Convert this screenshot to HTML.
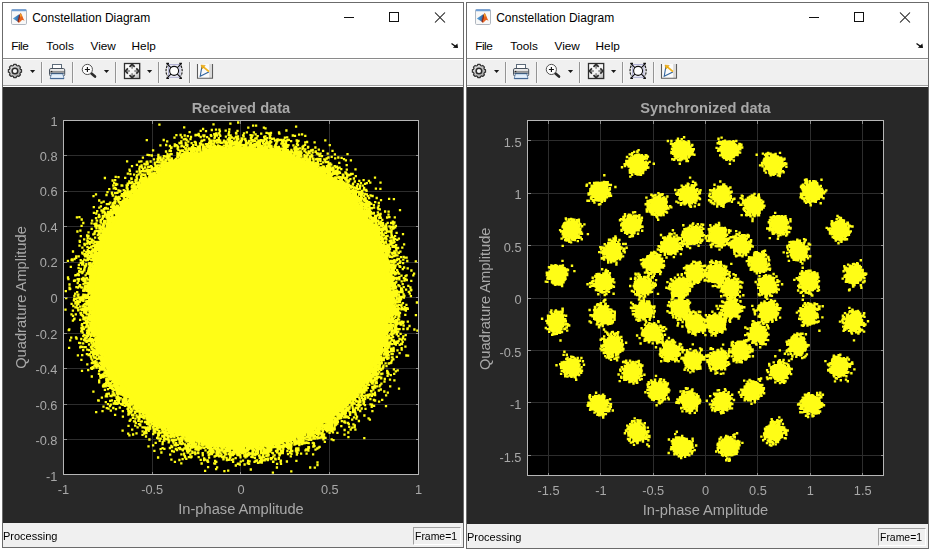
<!DOCTYPE html>
<html><head><meta charset="utf-8"><title>Constellation Diagram</title>
<style>
html,body{margin:0;padding:0;background:#fff;}
body{width:931px;height:550px;position:relative;overflow:hidden;font-family:"Liberation Sans", sans-serif;}
div{position:absolute;box-sizing:content-box;}
.win{border:1px solid #6b6b6b;background:#fff;}
.sepline{height:1px;background:#8a8a8a;}
.sepline2{height:1px;background:#a0a0a0;}
.tb{background:#f0f0f0;}
.dark{background:#282828;}
.sb{background:#f0f0f0;}
.title{font-size:12px;line-height:16px;color:#000;white-space:nowrap;}
.menu{font-size:11.8px;line-height:16px;color:#000;white-space:nowrap;}
.status{will-change:transform;font-size:11px;line-height:14px;color:#000;white-space:nowrap;}
.frame{will-change:transform;font-size:10.45px;line-height:17.5px;color:#000;white-space:nowrap;width:48px;height:18px;border:1px solid;border-color:#a0a0a0 #fff #fff #a0a0a0;text-align:left;padding-left:1px;box-sizing:border-box;}
svg{position:absolute;left:0;top:0;transform:translateZ(0);will-change:transform;}
.tk{font-family:"Liberation Sans", sans-serif;font-size:12.8px;fill:#a8a8a8;}
.lab{font-family:"Liberation Sans", sans-serif;font-size:14.67px;fill:#a8a8a8;}
.ttl{font-family:"Liberation Sans", sans-serif;font-size:14.67px;font-weight:bold;fill:#a8a8a8;}
</style></head><body>
<div class="win" style="left:2px;top:2px;width:460px;height:544px"></div>
<div class="sepline" style="left:3px;top:58px;width:460px"></div>
<div class="tb" style="left:3px;top:60px;width:460px;height:25px"></div>
<div class="sepline2" style="left:3px;top:85px;width:460px"></div>
<div class="dark" style="left:3px;top:87px;width:460px;height:436px"></div>
<div class="sb" style="left:3px;top:523px;width:460px;height:24px"></div>
<div class="title" style="left:32.2px;top:10.3px">Constellation Diagram</div>
<div class="menu" style="left:11.2px;top:38px;letter-spacing:-0.5px">File</div>
<div class="menu" style="left:46.3px;top:38px;letter-spacing:0px">Tools</div>
<div class="menu" style="left:90.6px;top:38px;letter-spacing:-0.1px">View</div>
<div class="menu" style="left:131.6px;top:38px;letter-spacing:0px">Help</div>
<div class="status" style="left:3.2px;top:529px">Processing</div>
<div class="frame" style="left:413px;top:527px">Frame=1</div>
<div class="win" style="left:466px;top:2px;width:461px;height:545px"></div>
<div class="sepline" style="left:467px;top:58px;width:461px"></div>
<div class="tb" style="left:467px;top:60px;width:461px;height:25px"></div>
<div class="sepline2" style="left:467px;top:85px;width:461px"></div>
<div class="dark" style="left:467px;top:87px;width:461px;height:437px"></div>
<div class="sb" style="left:467px;top:524px;width:461px;height:24px"></div>
<div class="title" style="left:496.2px;top:10.3px">Constellation Diagram</div>
<div class="menu" style="left:475.2px;top:38px;letter-spacing:-0.5px">File</div>
<div class="menu" style="left:510.3px;top:38px;letter-spacing:0px">Tools</div>
<div class="menu" style="left:554.6px;top:38px;letter-spacing:-0.1px">View</div>
<div class="menu" style="left:595.6px;top:38px;letter-spacing:0px">Help</div>
<div class="status" style="left:467.2px;top:530px">Processing</div>
<div class="frame" style="left:878px;top:528px">Frame=1</div>
<svg width="931" height="550" viewBox="0 0 931 550">
<rect x="63.5" y="120.5" width="355" height="354" fill="#000"/>
<path d="M152.5 121V474M240.5 121V474M329.5 121V474M64 439.5H418M64 404.5H418M64 368.5H418M64 333.5H418M64 297.5H418M64 262.5H418M64 226.5H418M64 191.5H418M64 155.5H418" stroke="#2d2d2d" stroke-width="1" fill="none" shape-rendering="crispEdges"/>
<circle cx="241" cy="297.5" r="150" fill="#fffd16"/><path d="M327.1 417.4h0M373.6 362.4h0M142.9 407.8h0M93.6 290.6h0M106.1 357.2h0M365.2 377.1h0M309.5 166.8h0M265.7 443.0h0M380.8 249.9h0M123.4 386.8h0M382.5 340.1h0M204.6 440.7h0M349.9 397.0h0M300.6 162.5h0M112.4 225.1h0M138.3 403.6h0M377.3 354.2h0M281.3 439.4h0M108.4 362.4h0M114.2 221.9h0M195.6 438.0h0M194.5 157.3h0M109.3 231.0h0M345.5 193.2h0M206.1 441.0h0M349.9 397.3h0M247.6 150.0h0M93.8 307.7h0M168.5 169.0h0M108.6 232.1h0M183.4 433.5h0M118.5 215.0h0M98.9 337.6h0M379.9 247.2h0M165.2 170.8h0M196.7 156.8h0M388.5 291.1h0M209.1 441.7h0M168.8 168.8h0M97.7 332.7h0M350.4 396.5h0M257.9 151.0h0M243.2 445.0h0M343.0 190.8h0M100.9 343.8h0M350.7 198.7h0M338.0 186.1h0M113.8 372.4h0M351.2 199.3h0M327.1 417.5h0M257.7 444.1h0M94.1 311.4h0M229.2 444.7h0M112.2 369.4h0M106.0 237.7h0M187.0 160.0h0M131.9 198.1h0M380.3 346.6h0M268.7 152.4h0M284.8 156.4h0M122.1 385.0h0M142.9 187.3h0M375.5 358.1h0M318.3 423.2h0M380.6 345.4h0M326.7 417.5h0M144.4 409.0h0M344.9 192.8h0M328.9 416.2h0M156.2 418.3h0M346.8 400.4h0M388.6 291.1h0M94.1 312.5h0M359.1 385.8h0M227.3 444.5h0M319.0 422.9h0M381.6 252.8h0M330.3 415.1h0M386.5 322.5h0M387.3 277.6h0M192.0 158.1h0M142.2 407.1h0M261.3 151.4h0M267.8 152.3h0M265.9 443.0h0M388.0 283.5h0M292.0 158.9h0M231.6 150.1h0M94.3 281.2h0M386.1 324.2h0M213.9 442.5h0M188.9 159.5h0M101.3 345.6h0M388.3 286.4h0M143.6 408.5h0M262.4 443.5h0M282.7 439.0h0M360.6 210.9h0M94.5 316.5h0M286.3 157.0h0M162.4 172.7h0M270.8 152.8h0M94.7 317.8h0M276.9 154.4h0M287.3 157.4h0M123.8 387.4h0M380.4 249.1h0M312.1 426.9h0M326.9 417.5h0M292.3 159.0h0M309.2 166.7h0M159.7 174.1h0M100.3 253.1h0M387.9 310.7h0M153.9 178.2h0M376.0 237.7h0M343.2 191.0h0M276.8 440.8h0M201.6 439.7h0M114.7 221.2h0M112.1 369.4h0M365.6 218.5h0M98.5 335.9h0M362.7 214.0h0M369.3 224.5h0M96.3 268.2h0M387.6 314.8h0M301.2 432.3h0M285.8 157.0h0M95.5 322.0h0M102.5 246.2h0M94.4 280.5h0M272.5 153.3h0M103.9 242.9h0M216.2 443.0h0M93.5 290.3h0M250.3 150.2h0M102.6 349.1h0M93.4 292.3h0M189.0 159.3h0M96.6 266.9h0M378.8 244.5h0M346.4 194.1h0M232.1 445.0h0M379.4 246.0h0M337.2 409.6h0M103.1 350.0h0M249.7 444.8h0M169.5 168.5h0M358.8 208.5h0M209.8 153.3h0M333.0 413.0h0M385.7 267.6h0M382.0 254.1h0M93.9 309.3h0M314.2 169.1h0M106.9 359.0h0M162.6 422.6h0M179.4 431.6h0M387.6 315.5h0M103.6 351.5h0M168.7 426.1h0M93.8 286.1h0M387.9 283.7h0M386.4 271.4h0M226.6 444.3h0M267.7 152.4h0M342.3 404.8h0M366.3 219.5h0M233.0 445.0h0M369.9 225.8h0M195.7 157.0h0M379.0 349.7h0M109.3 364.3h0M377.6 241.8h0M288.1 157.5h0M332.3 181.6h0M337.0 185.5h0M162.6 422.6h0M373.2 231.9h0M342.5 404.6h0M251.7 444.7h0M318.9 422.8h0M285.0 438.3h0M191.0 436.4h0M204.3 440.6h0M305.6 430.2h0M387.6 314.3h0M387.9 311.7h0M100.8 250.9h0M95.3 320.8h0M357.0 389.0h0M106.5 358.6h0M315.8 170.3h0M93.5 291.3h0M387.8 281.2h0M314.0 169.2h0M144.0 186.1h0M156.1 418.2h0M342.1 404.9h0M232.6 150.2h0M317.5 423.7h0M321.0 173.6h0M170.3 167.8h0M248.2 444.9h0M98.2 334.7h0M101.9 346.8h0M384.3 262.4h0M99.7 254.4h0M385.1 265.9h0M149.4 413.2h0M132.5 397.4h0M93.4 294.9h0M93.5 293.1h0M227.9 444.4h0M121.9 384.6h0M387.0 318.3h0M256.9 444.2h0M95.8 270.6h0M159.9 174.0h0M348.1 195.8h0M173.1 428.5h0M328.2 416.7h0M149.2 181.8h0M316.3 170.7h0M138.1 191.5h0M297.3 161.0h0M95.1 275.6h0M316.1 170.4h0M309.2 166.5h0M356.4 205.4h0M189.5 159.1h0M385.7 326.2h0M146.5 410.8h0M316.8 170.9h0M138.4 191.3h0M178.7 163.6h0M388.6 300.6h0M239.4 149.8h0M97.0 265.1h0M376.1 357.0h0M239.0 445.2h0M226.6 444.3h0M282.0 439.4h0M387.0 275.1h0M131.8 396.8h0M181.3 162.5h0M131.4 198.5h0M371.5 366.6h0M237.3 445.0h0M191.5 436.6h0M388.2 309.1h0M223.6 444.0h0M188.5 159.5h0M203.5 440.3h0M97.0 330.0h0M349.6 397.5h0M287.3 437.8h0M377.1 239.9h0M98.4 335.1h0M385.7 268.1h0M223.7 444.1h0M380.0 248.0h0M112.4 225.2h0M95.1 275.3h0M340.4 406.8h0M93.5 289.4h0M198.3 156.1h0M359.1 209.1h0M386.8 320.4h0M93.7 305.2h0M193.7 437.3h0M158.9 420.1h0M320.3 173.0h0M241.7 150.0h0M348.6 398.6h0M207.0 153.7h0M204.4 440.6h0M125.6 389.5h0M115.8 219.0h0M108.2 362.0h0M381.8 341.6h0M315.8 170.4h0M376.7 239.4h0M226.4 444.3h0M295.5 434.7h0M383.0 257.4h0M297.1 160.8h0M367.3 221.1h0M100.3 252.5h0M381.6 342.7h0M100.3 342.4h0M150.1 181.1h0M381.6 342.2h0M343.9 403.5h0M159.1 420.3h0M230.8 150.3h0M231.6 444.9h0M194.6 437.7h0M124.7 388.5h0M318.8 422.9h0M363.5 215.3h0M268.6 442.5h0M388.7 294.2h0M335.4 411.0h0M365.2 377.1h0M365.1 377.4h0M233.3 444.9h0M353.1 201.4h0M114.9 374.4h0M95.1 275.2h0M163.3 423.0h0M215.6 442.8h0M344.9 402.5h0M139.7 190.1h0M272.4 441.9h0M242.4 445.1h0M101.9 346.7h0M326.8 177.3h0M387.3 317.7h0M203.9 154.7h0M95.4 322.2h0M388.6 297.7h0M373.3 232.0h0M331.9 181.1h0M242.4 445.2h0M324.4 419.2h0M179.9 163.1h0M214.9 152.1h0M254.7 150.5h0M101.0 250.6h0M270.7 153.0h0M370.3 226.3h0M192.0 436.8h0M239.3 445.0h0M194.1 157.5h0M374.3 360.6h0M112.9 224.0h0M265.4 443.1h0M388.3 307.2h0M97.9 333.6h0M150.1 181.0h0M95.1 320.3h0M243.7 445.0h0M199.5 155.7h0M387.2 317.6h0M173.5 166.2h0M234.3 445.0h0M372.6 230.6h0M385.2 328.9h0M111.4 368.1h0M288.3 437.4h0M230.9 150.1h0M282.0 439.3h0M185.1 434.3h0M258.8 444.1h0M250.7 150.3h0M381.9 253.6h0M297.7 433.8h0M113.0 371.0h0M381.1 250.8h0M125.3 389.0h0M386.6 273.6h0M380.8 344.7h0M125.4 389.1h0M350.9 198.8h0M388.7 295.2h0M170.4 427.3h0M376.7 239.7h0M385.7 326.9h0M134.2 399.5h0M168.5 426.1h0M388.5 300.2h0M153.2 416.1h0M346.3 401.1h0M280.1 440.0h0M305.2 164.6h0M106.4 358.3h0M95.5 322.0h0M370.1 226.0h0M143.9 408.6h0M386.1 325.4h0M296.9 160.9h0M383.9 334.8h0M377.3 354.0h0M234.5 445.1h0M359.7 209.6h0M220.4 443.6h0M131.4 198.4h0M210.3 153.2h0M217.3 443.2h0M246.2 150.1h0M142.6 187.3h0M387.0 319.9h0M95.0 320.4h0M382.8 255.2h0M240.0 445.3h0M93.3 303.6h0M301.5 432.5h0M230.3 149.9h0M262.1 151.1h0M171.5 428.1h0M145.4 410.3h0M371.1 368.0h0M243.7 149.7h0M376.8 356.0h0M101.2 249.6h0M387.7 279.2h0M388.5 286.2h0M368.7 372.0h0M93.2 298.9h0M101.2 345.9h0M112.9 371.3h0M173.1 166.1h0M325.7 176.2h0M348.1 399.5h0M200.8 439.9h0M137.8 403.4h0M287.4 438.0h0M245.3 445.2h0M351.3 199.2h0M172.8 428.7h0M388.7 290.5h0M258.3 444.4h0M156.6 176.0h0M359.4 386.2h0M303.2 163.4h0M368.1 221.7h0M201.0 439.7h0M295.8 434.8h0M112.8 223.6h0M138.2 403.9h0M100.5 344.0h0M266.7 151.9h0M357.5 388.8h0M133.2 196.3h0M140.7 406.1h0M283.1 439.1h0M121.1 211.1h0M283.7 439.1h0M172.1 428.2h0M299.6 433.3h0M283.7 439.0h0M99.7 253.5h0M359.8 385.4h0M100.4 251.7h0M365.3 377.7h0M191.3 158.3h0M210.3 442.1h0M382.5 254.6h0M105.9 237.5h0M113.1 371.6h0M388.9 294.4h0M289.2 437.3h0M283.5 439.2h0M361.4 211.9h0M304.3 163.9h0M350.6 198.2h0M318.2 423.6h0M100.9 250.5h0M365.8 218.1h0M134.7 194.9h0M93.2 293.4h0M210.3 442.1h0M373.0 230.8h0M93.5 306.3h0M385.8 266.9h0M344.4 403.1h0M387.2 274.9h0M380.6 346.2h0M128.2 393.3h0M133.3 196.0h0M320.1 422.6h0M266.8 443.2h0M325.1 175.9h0M301.5 432.5h0M121.6 384.6h0M131.0 396.3h0M243.7 445.3h0M359.2 208.5h0M104.4 241.1h0M384.7 332.6h0M350.3 397.2h0M100.4 251.8h0M189.8 436.3h0M112.6 224.1h0M160.9 173.2h0M104.1 353.4h0M132.6 197.1h0M254.7 444.7h0M268.7 152.2h0M304.3 431.1h0M356.6 389.6h0M107.0 359.9h0M102.9 350.2h0M384.1 335.0h0M369.6 370.6h0M266.6 151.8h0M380.4 346.9h0M134.6 400.2h0M338.0 409.2h0M388.9 293.9h0M299.7 161.7h0M387.8 280.6h0M383.4 257.7h0M316.2 424.9h0M375.1 235.0h0M153.5 416.6h0M321.2 421.8h0M217.9 443.7h0M332.7 413.6h0M370.5 226.2h0M229.1 444.8h0M178.8 431.7h0M302.1 432.0h0M377.1 240.0h0M358.1 207.1h0M273.1 153.2h0M96.0 269.2h0M146.9 411.6h0M101.8 247.2h0M350.4 198.0h0M388.6 291.0h0M124.6 388.7h0M227.3 444.8h0M110.1 228.4h0M254.6 150.3h0M306.7 430.0h0M382.2 341.7h0M237.6 445.4h0M388.2 282.7h0M164.7 170.8h0M388.8 299.2h0M328.3 416.7h0M106.3 358.6h0M358.2 207.3h0M262.0 443.8h0M387.5 318.1h0M150.5 414.3h0M148.9 413.0h0M113.1 223.4h0M283.0 439.3h0M94.9 320.7h0M377.2 240.2h0M328.4 416.7h0M145.5 184.7h0M270.7 152.5h0M227.8 444.8h0M150.4 180.8h0M153.8 417.0h0M102.2 348.7h0M225.7 150.3h0M362.5 213.3h0M96.1 268.4h0M252.4 444.9h0M267.7 152.2h0M100.7 251.0h0M333.7 412.9h0M126.0 204.7h0M147.9 182.6h0M308.5 429.2h0M195.1 438.0h0M354.5 202.9h0M209.1 153.0h0M323.6 175.0h0M96.6 329.5h0M99.6 341.0h0M357.6 388.3h0M384.4 333.2h0M240.7 149.7h0M324.4 175.3h0M226.2 444.7h0M104.9 355.3h0M94.6 276.0h0M148.2 182.4h0M271.5 442.3h0M388.3 311.6h0M253.9 444.8h0M380.1 247.1h0M172.3 428.5h0M170.9 427.8h0M364.6 216.4h0M189.0 159.0h0M387.6 278.1h0M320.0 172.5h0M333.5 182.1h0M217.5 151.5h0M188.5 435.8h0M134.9 194.6h0M366.2 218.9h0M386.7 322.4h0M374.3 233.7h0M333.9 412.5h0M383.7 335.7h0M142.4 187.2h0M228.7 150.1h0M116.5 218.0h0M301.9 162.8h0M355.8 204.1h0M340.6 188.4h0M380.0 246.8h0M281.6 439.6h0M385.3 329.2h0M297.2 160.6h0M308.2 165.7h0M206.6 441.4h0M361.7 382.7h0M282.3 439.6h0M109.8 365.6h0M234.8 445.1h0M209.4 153.1h0M177.4 430.9h0M93.0 294.0h0M132.0 197.4h0M114.8 374.4h0M262.3 151.2h0M199.5 155.6h0M271.8 442.1h0M365.5 377.5h0M312.0 427.3h0M284.9 438.6h0M387.5 277.0h0M93.5 306.0h0M283.8 156.0h0M93.3 302.5h0M313.7 168.8h0M379.7 246.4h0M273.5 441.7h0M93.1 299.1h0M144.3 185.7h0M275.9 153.9h0M275.0 153.5h0M149.9 414.0h0M124.4 388.4h0M367.8 373.8h0M387.1 320.8h0M228.8 444.8h0M93.0 296.4h0M351.3 199.0h0M97.6 333.4h0M245.2 149.7h0M151.3 179.9h0M172.5 428.5h0M322.6 174.3h0M233.6 149.8h0M104.0 352.9h0M111.0 226.9h0M97.4 332.4h0M252.2 445.0h0M194.0 437.6h0M323.1 174.5h0M323.3 420.2h0M172.6 428.5h0M319.5 422.8h0M296.0 434.7h0M221.3 150.8h0M384.7 262.9h0M130.6 395.8h0M282.2 155.4h0M105.3 356.3h0M145.4 184.8h0M280.9 439.8h0M385.5 328.8h0M278.7 154.5h0M93.1 297.0h0M97.0 331.3h0M123.5 207.9h0M232.6 149.9h0M107.1 360.5h0M240.2 149.6h0M260.9 444.0h0M348.9 196.3h0M195.4 156.8h0M177.7 163.8h0M99.3 339.7h0M138.6 190.8h0M111.7 369.0h0M207.1 153.5h0M240.9 445.4h0M99.0 338.6h0M116.4 377.3h0M374.9 234.7h0M157.5 175.5h0M127.8 392.7h0M387.0 274.0h0M98.7 257.7h0M270.3 152.6h0M94.1 279.7h0M109.1 230.8h0M210.8 152.7h0M146.2 184.0h0M94.4 277.4h0M381.0 250.0h0M181.8 162.1h0M252.8 150.1h0M388.1 283.1h0M379.6 349.0h0M121.6 384.6h0M112.2 369.8h0M193.8 157.4h0M226.9 444.7h0M233.1 149.9h0M95.2 272.4h0M288.0 157.4h0M276.0 441.2h0M265.6 151.8h0M142.7 187.0h0M104.2 241.3h0M385.0 264.2h0M145.9 184.3h0M300.8 162.2h0M200.3 439.7h0M345.5 402.2h0M150.5 414.6h0M224.8 444.6h0M237.7 445.3h0M299.0 433.5h0M214.9 152.1h0M245.7 445.2h0M94.4 316.4h0M144.8 185.2h0M145.0 410.0h0M331.3 180.3h0M310.5 167.1h0M272.4 152.9h0M313.3 168.6h0M388.3 311.4h0M382.0 253.4h0M241.0 445.4h0M333.2 413.0h0M265.3 151.7h0M325.9 418.5h0M279.3 154.6h0M355.5 204.1h0M269.9 152.4h0M357.3 206.0h0M319.3 172.0h0M189.0 159.1h0M233.5 149.8h0M350.5 198.1h0M227.6 444.8h0M335.7 411.0h0M379.0 350.6h0M332.1 414.0h0M93.1 299.2h0M337.3 185.3h0M320.8 173.1h0M104.4 240.9h0M320.7 172.9h0M112.0 369.7h0M372.7 365.0h0M144.0 185.9h0M127.0 203.5h0M375.4 235.8h0M387.9 280.6h0M93.8 311.7h0M385.6 328.8h0M136.6 192.7h0M336.4 184.6h0M95.0 321.1h0M260.1 150.9h0M105.3 356.0h0M101.6 248.3h0M201.6 440.1h0M119.3 381.6h0M220.9 444.0h0M387.3 274.3h0M279.6 154.5h0M180.4 432.6h0M114.2 221.0h0M272.6 152.8h0M215.7 151.7h0M98.8 255.8h0M194.9 438.2h0M295.5 435.1h0M126.0 204.0h0M277.0 153.8h0M127.8 201.8h0M137.4 191.6h0M119.1 213.2h0M275.6 441.6h0M98.0 336.3h0M360.1 385.6h0M385.1 331.6h0M368.1 221.3h0M140.3 406.2h0M274.7 153.2h0M233.6 445.5h0M110.4 367.4h0M106.7 360.0h0M376.5 237.7h0M106.1 236.6h0M349.6 398.0h0M109.1 230.0h0M101.1 346.4h0M128.7 393.9h0M377.9 241.0h0M94.5 320.3h0M359.7 386.1h0M275.8 441.5h0M388.3 311.9h0M181.2 162.1h0M385.7 266.4h0M342.0 189.3h0M388.1 314.0h0M248.2 445.5h0M297.8 434.4h0M263.3 151.2h0M332.2 180.7h0M368.9 372.4h0M203.5 154.2h0M375.9 236.4h0M385.4 264.6h0M388.8 308.1h0M154.5 177.4h0M371.0 368.6h0M221.9 150.7h0M336.1 184.0h0M378.8 351.8h0M109.0 230.3h0M175.3 164.7h0M284.4 156.0h0M150.2 180.5h0M112.1 370.5h0M274.4 153.2h0M273.0 152.8h0M202.0 440.4h0M387.0 273.4h0M310.3 166.5h0M124.5 206.1h0M313.5 168.2h0M187.7 435.7h0M354.0 201.8h0M182.0 161.7h0M358.7 207.5h0M210.2 442.5h0M228.9 445.0h0M114.3 220.8h0M353.7 201.2h0M314.9 169.3h0M340.5 187.7h0M218.9 444.0h0M293.0 158.7h0M367.9 221.1h0M368.4 372.9h0M284.5 155.9h0M241.2 149.4h0M255.8 445.0h0M176.0 164.4h0M280.9 440.1h0M242.1 149.4h0M97.5 334.6h0M292.5 158.7h0M256.9 444.8h0M359.1 208.1h0M94.2 277.2h0M115.6 218.7h0M293.5 435.9h0M196.2 156.4h0M104.9 239.2h0M93.8 281.5h0M383.3 338.4h0M136.8 403.0h0M141.5 187.9h0M323.4 420.7h0M157.8 420.1h0M387.9 316.6h0M388.7 288.6h0M93.3 310.2h0M230.2 445.2h0M108.6 364.0h0M257.0 150.1h0M385.3 263.8h0M384.9 332.4h0M303.4 431.7h0M381.5 344.1h0M342.9 189.9h0M381.0 249.3h0M377.3 355.7h0M122.6 386.5h0M384.2 260.1h0M104.9 239.1h0M383.6 257.4h0M125.0 389.7h0M320.6 422.4h0M389.0 289.8h0M384.7 333.1h0M152.5 416.2h0M363.4 213.9h0M382.8 340.7h0M203.8 154.1h0M388.5 284.0h0M331.9 414.3h0M378.6 242.4h0M196.3 438.8h0M248.3 149.5h0M174.7 429.8h0M346.3 401.6h0M313.5 426.7h0M333.1 413.4h0M388.7 309.2h0M291.1 437.0h0M374.0 232.5h0M376.5 237.8h0M354.4 202.1h0M101.0 345.7h0M374.4 233.4h0M138.4 190.5h0M161.8 422.7h0M94.3 318.3h0M333.4 413.3h0M379.8 349.2h0M101.1 248.7h0M342.8 190.0h0M115.1 375.4h0M221.4 444.2h0M165.9 425.3h0M93.2 305.9h0M362.5 212.9h0M387.7 277.7h0M358.0 206.8h0M276.8 441.3h0M207.6 441.8h0M285.3 438.8h0M388.9 289.1h0M373.1 230.3h0M204.7 441.0h0M379.7 349.9h0M201.0 440.2h0M388.5 312.4h0M160.9 422.2h0M389.0 299.3h0M94.9 272.9h0M105.0 356.1h0M270.4 442.8h0M336.8 410.5h0M260.0 150.7h0M289.7 437.4h0M367.2 374.8h0M92.9 301.7h0M281.4 440.0h0M202.1 154.5h0M112.5 223.7h0M376.6 356.9h0M116.8 378.4h0M380.3 348.0h0M165.4 425.0h0M338.7 186.0h0M388.4 311.9h0M94.4 319.2h0M225.9 444.9h0M313.6 168.5h0M317.6 424.2h0M118.5 214.3h0M94.1 279.1h0M93.6 283.0h0M208.3 153.1h0M339.3 186.6h0M205.2 153.8h0M242.2 149.4h0M344.2 191.4h0M92.8 302.3h0M95.6 269.3h0M387.9 316.7h0M265.4 443.7h0M359.3 386.5h0M301.6 162.4h0M362.6 381.8h0M291.1 436.9h0M120.9 211.0h0M94.4 276.2h0M359.3 386.7h0M210.6 152.4h0M346.9 400.9h0M92.9 296.8h0M347.6 400.2h0M337.6 409.8h0M336.2 184.0h0M108.2 232.1h0M317.0 424.7h0M378.0 240.9h0M111.0 368.5h0M94.7 273.7h0M379.1 244.1h0M162.7 423.3h0M165.6 424.9h0M388.1 280.1h0M367.5 220.3h0M326.3 176.3h0M93.9 281.4h0M376.8 238.1h0M110.3 367.1h0M143.4 409.0h0M375.3 360.0h0M93.0 293.1h0M335.8 411.2h0M265.6 151.3h0M141.7 187.4h0M351.8 199.1h0M385.8 329.3h0M226.3 444.9h0M219.3 444.1h0M372.7 229.7h0M240.5 445.7h0M105.5 357.4h0M206.4 441.6h0M152.1 179.1h0M118.2 214.8h0M93.3 284.7h0M96.2 328.5h0M329.3 416.5h0M341.4 406.3h0M117.7 379.5h0M247.1 445.4h0M99.2 255.0h0M126.8 203.1h0M154.2 177.5h0M204.5 154.0h0M99.6 253.5h0M95.7 326.2h0M248.2 445.4h0M93.4 285.9h0M113.9 221.6h0M152.0 415.8h0M251.7 445.3h0M93.1 305.5h0M388.6 285.9h0M261.5 150.9h0M376.2 357.8h0M103.2 352.1h0M128.2 393.4h0M227.4 150.0h0M264.0 443.7h0M230.4 149.6h0M164.0 424.0h0M174.1 165.4h0M328.1 177.6h0M93.7 281.0h0M234.7 149.4h0M94.6 320.5h0M202.8 154.3h0M344.3 403.8h0M389.2 301.5h0M113.8 221.4h0M385.1 263.1h0M112.1 370.6h0M344.3 191.2h0M133.3 399.2h0M98.0 336.2h0M201.5 440.3h0M101.8 247.0h0M176.3 430.7h0M327.8 177.4h0M101.9 348.5h0M191.7 437.1h0M109.3 229.9h0M367.1 375.2h0M174.6 430.0h0M319.0 171.4h0M283.0 439.7h0M366.3 218.6h0M382.5 341.0h0M92.9 300.0h0M262.8 150.9h0M389.1 295.9h0M93.7 281.5h0M127.1 392.3h0M118.4 214.5h0M381.2 249.9h0M94.7 274.1h0M136.7 402.6h0M103.8 241.8h0M348.9 196.0h0M93.3 309.9h0M136.0 193.0h0M159.0 421.0h0M300.6 161.9h0M179.6 432.2h0M309.2 165.9h0M354.8 392.3h0M186.3 159.7h0M388.9 288.4h0M110.7 368.2h0M204.3 440.9h0M92.9 293.0h0M302.0 432.4h0M122.9 208.1h0M389.0 291.7h0M384.0 336.4h0M275.7 153.5h0M187.1 159.6h0M191.3 436.9h0M114.0 221.1h0M289.7 437.4h0M101.1 248.9h0M151.6 179.5h0M389.1 294.8h0M115.4 376.0h0M322.8 420.9h0M357.1 389.5h0M311.9 427.5h0M306.7 164.7h0M292.6 158.6h0M388.6 309.1h0M175.5 430.4h0M151.0 415.2h0M225.6 444.7h0M362.8 213.4h0M154.8 418.0h0M129.5 395.0h0M355.4 203.5h0M384.4 260.3h0M133.1 196.0h0M383.4 337.9h0M331.6 180.2h0M360.2 209.6h0M192.0 437.4h0M384.7 260.6h0M382.0 251.4h0M126.8 392.2h0M267.5 443.5h0M346.1 192.8h0M280.4 154.5h0M309.6 429.0h0M298.6 434.2h0M203.4 441.2h0M352.4 395.6h0M129.3 395.2h0M377.0 356.8h0M309.0 165.7h0M245.7 445.8h0M209.9 442.5h0M385.8 329.8h0M160.4 422.1h0M200.4 154.9h0M222.7 444.6h0M344.1 404.3h0M317.6 170.4h0M321.2 422.5h0M215.5 151.4h0M384.3 259.2h0M382.3 252.5h0M262.1 444.4h0M341.9 406.3h0M231.0 445.6h0M114.4 219.9h0M244.5 445.8h0M275.6 441.8h0M347.4 401.0h0M97.9 258.3h0M261.2 150.6h0M159.6 173.5h0M185.7 435.2h0M368.2 373.8h0M328.9 178.1h0M163.7 170.9h0M103.8 241.2h0M92.7 297.2h0M376.8 357.2h0M262.9 444.2h0M210.2 152.5h0M119.2 382.1h0M264.2 150.9h0M336.6 183.9h0M216.4 443.7h0M177.6 163.5h0M152.7 416.8h0M160.8 172.7h0M242.5 445.9h0M152.1 416.4h0M302.8 432.4h0M367.5 220.2h0M206.4 153.1h0M384.6 334.4h0M288.5 438.0h0M132.4 398.5h0M185.6 435.0h0M304.5 431.7h0M106.7 234.1h0M236.6 445.9h0M181.5 161.6h0M389.3 298.4h0M265.6 151.1h0M384.0 337.1h0M125.1 204.8h0M246.2 445.7h0M279.2 154.2h0M368.4 221.6h0M368.2 374.0h0M124.5 389.5h0M311.5 166.9h0M366.3 376.9h0M109.1 365.8h0M187.7 158.9h0M312.5 167.4h0M99.1 340.9h0M193.6 157.0h0M93.1 286.4h0M344.2 404.2h0M383.9 337.7h0M291.9 158.1h0M98.9 254.9h0M144.6 184.6h0M241.3 445.9h0M148.1 413.0h0M285.6 439.0h0M338.0 409.7h0M169.8 167.3h0M248.7 445.6h0M101.4 347.7h0M152.6 416.8h0M352.1 199.2h0M104.3 240.1h0M300.2 161.5h0M250.8 149.4h0M166.7 169.1h0M97.0 333.3h0M313.5 167.9h0M204.7 441.3h0M281.1 440.3h0M212.4 443.0h0M196.6 156.0h0M353.5 394.2h0M95.5 326.5h0M314.0 426.6h0M388.9 307.6h0M241.4 149.0h0M210.6 152.4h0M104.2 239.7h0M93.1 307.9h0M295.8 435.4h0M389.2 305.2h0M149.6 180.5h0M377.3 238.8h0M239.7 445.9h0M336.5 411.0h0M263.7 151.0h0M198.4 439.7h0M145.1 184.4h0M374.0 231.5h0M273.0 152.7h0M233.8 149.2h0M300.3 433.5h0M177.7 431.8h0M100.2 250.7h0M313.6 168.1h0M384.4 335.5h0M138.2 190.5h0M200.1 154.8h0M380.7 247.1h0M92.6 297.9h0M195.6 438.7h0M370.9 369.2h0M317.6 424.6h0M386.7 269.5h0M384.6 334.3h0M294.9 435.7h0M389.4 300.1h0M332.2 180.4h0M108.5 364.5h0M162.8 171.5h0M110.4 368.0h0M103.5 353.2h0M309.3 165.7h0M317.0 425.0h0M102.0 349.4h0M155.2 418.6h0M368.6 373.0h0M97.2 334.0h0M365.7 216.9h0M387.5 273.7h0M132.7 195.9h0M379.0 352.2h0M126.1 203.5h0M107.2 233.4h0M93.6 315.4h0M195.7 438.8h0M352.3 199.5h0M296.6 434.9h0M100.6 345.7h0M161.9 172.1h0M111.4 225.4h0M95.3 269.7h0M123.0 387.5h0M303.7 431.9h0M99.3 253.3h0M337.1 184.6h0M363.7 380.8h0M239.6 445.9h0M101.1 248.1h0M107.9 232.1h0M93.2 285.2h0M370.9 369.2h0M373.8 363.6h0M338.0 185.3h0M208.3 152.8h0M352.6 395.4h0M214.6 151.4h0M312.6 167.7h0M311.4 428.1h0M104.0 240.2h0M337.9 410.0h0M379.8 350.0h0M137.9 404.1h0M118.0 214.7h0M195.2 438.6h0M108.3 364.1h0M133.5 195.1h0M104.0 240.3h0M343.2 189.8h0M236.7 149.3h0M253.7 149.7h0M308.9 165.5h0M137.5 403.7h0M381.6 249.9h0M383.9 337.6h0M361.3 384.5h0M289.5 157.3h0M373.3 230.5h0M236.7 445.9h0M100.9 346.2h0M111.5 224.9h0M388.0 317.0h0M287.4 156.7h0M101.2 247.9h0M183.9 160.6h0M332.5 414.3h0M96.8 262.0h0M294.1 158.9h0M388.9 310.4h0M327.5 418.0h0M344.6 191.3h0M385.8 330.3h0M302.7 162.7h0M125.1 390.3h0M321.8 421.9h0M124.6 389.7h0M127.1 202.3h0M170.2 427.8h0M357.6 205.9h0M383.8 337.7h0M145.8 411.2h0M109.7 228.5h0M151.1 415.5h0M110.7 226.8h0M388.1 316.6h0M388.8 284.8h0M331.3 415.1h0M219.9 444.4h0M92.7 297.5h0M106.4 235.2h0M384.0 257.9h0M386.1 329.1h0M260.4 150.4h0M263.6 150.8h0M142.6 186.4h0M211.8 442.9h0M344.5 191.1h0M178.9 162.6h0M253.4 149.7h0M92.8 289.2h0M153.4 417.3h0M117.8 380.2h0M163.8 424.1h0M388.9 286.7h0M141.3 407.4h0M255.1 445.1h0M338.7 409.2h0M343.1 190.1h0M101.2 347.3h0M193.0 437.9h0M376.6 357.5h0M187.7 435.9h0M100.2 250.5h0M161.1 422.6h0M112.4 223.3h0M305.2 431.2h0M388.9 285.8h0M263.7 150.9h0M341.4 188.3h0M93.4 311.9h0M217.0 444.0h0M387.8 318.9h0M224.2 444.8h0M270.4 443.0h0M286.5 438.7h0M338.5 185.6h0M289.8 437.7h0M385.5 263.4h0M371.4 368.4h0M346.3 192.9h0M337.9 409.8h0M96.7 263.4h0M146.3 183.2h0M275.9 441.8h0M240.4 149.2h0M118.1 380.7h0M163.2 423.9h0M113.7 373.6h0M137.0 191.8h0M92.8 302.8h0M234.5 445.8h0M388.8 310.2h0M104.4 239.3h0M380.4 348.7h0M217.0 151.1h0M364.5 379.7h0M333.6 413.3h0M366.4 376.9h0M109.5 366.4h0M115.0 219.2h0M159.4 173.5h0M168.8 427.2h0M233.7 445.8h0M253.4 149.6h0M187.0 435.8h0M387.9 276.5h0M214.8 443.5h0M379.3 243.7h0M389.0 305.9h0M157.9 174.6h0M144.6 410.4h0M261.3 444.6h0M366.4 377.0h0M339.6 408.2h0M92.7 295.8h0M302.6 432.5h0M142.4 408.5h0M306.3 430.6h0M371.7 227.2h0M386.8 324.4h0M247.9 445.8h0M92.5 298.5h0M158.2 420.6h0M97.2 334.3h0M362.9 213.0h0M225.5 150.0h0M150.5 180.1h0M338.4 185.6h0M104.6 239.3h0M370.6 225.3h0M137.4 191.1h0M239.2 445.8h0M105.3 357.4h0M284.0 439.4h0M148.3 181.5h0M389.2 292.2h0M106.4 234.7h0M337.9 184.9h0M224.9 445.3h0M306.7 164.1h0M168.2 427.0h0M356.1 203.5h0M180.1 162.0h0M98.8 340.7h0M351.2 197.7h0M351.5 198.3h0M268.7 151.5h0M302.4 433.0h0M389.6 292.7h0M387.8 320.2h0M387.6 273.7h0M367.2 219.2h0M228.0 149.5h0M313.6 427.1h0M366.4 377.3h0M370.5 224.7h0M350.6 197.1h0M386.6 328.0h0M279.9 154.1h0M385.5 332.5h0M258.1 445.1h0M358.5 388.5h0M389.3 288.9h0M348.4 194.8h0M92.9 309.3h0M107.2 362.0h0M182.3 161.0h0M230.0 149.4h0M354.1 393.9h0M92.5 301.0h0M154.0 418.1h0M386.5 267.4h0M223.7 149.8h0M306.6 430.8h0M375.9 359.8h0M92.7 289.3h0M101.7 245.7h0M389.3 307.4h0M156.0 175.5h0M99.3 252.6h0M388.8 281.1h0M211.1 151.8h0M179.2 432.6h0M387.5 272.4h0M129.3 395.5h0M333.5 413.8h0M389.7 302.4h0M374.0 231.1h0M127.1 202.2h0M249.6 445.8h0M351.7 396.6h0M272.5 152.2h0M382.6 343.0h0M174.0 430.2h0M99.3 252.5h0M387.2 271.1h0M237.5 149.0h0M92.6 288.0h0M389.6 292.6h0M139.0 189.5h0M133.4 400.1h0M124.4 389.7h0M128.2 200.7h0M175.9 431.2h0M97.8 257.8h0M128.0 201.0h0M365.8 216.9h0M214.6 151.2h0M94.0 319.3h0M334.2 413.2h0M94.7 270.8h0M94.6 272.0h0M251.6 445.8h0M305.8 163.9h0M146.6 182.7h0M357.9 205.6h0M384.3 337.4h0M314.3 168.3h0M347.4 401.3h0M239.6 446.0h0M148.8 413.9h0M93.6 277.6h0M367.5 375.5h0M389.6 294.7h0M99.8 344.1h0M285.4 155.7h0M328.5 417.7h0M141.3 407.8h0M252.5 445.7h0M161.3 422.9h0M388.7 314.1h0M106.8 233.8h0M305.6 431.2h0M218.1 444.4h0M248.6 445.9h0M365.9 378.2h0M335.0 182.3h0M109.4 366.5h0M131.2 197.2h0M384.0 338.0h0M141.2 407.6h0M199.3 440.2h0M152.3 178.3h0M151.8 416.5h0M110.2 227.0h0M294.3 436.3h0M205.7 153.0h0M165.8 169.3h0M375.1 361.4h0M133.0 399.7h0M92.4 300.7h0M247.6 148.9h0M117.0 215.8h0M96.6 332.5h0M113.1 373.3h0M355.7 203.0h0M92.6 305.6h0M308.2 164.9h0M232.1 149.1h0M384.8 335.0h0M100.8 248.2h0M259.5 150.0h0M268.2 443.5h0M302.1 162.1h0M367.3 375.7h0M104.3 239.0h0M178.6 162.7h0M93.2 313.5h0M187.2 159.1h0M112.6 222.7h0M301.7 161.7h0M331.8 415.3h0M93.4 280.5h0M389.1 286.9h0M229.5 445.6h0M236.3 446.0h0M101.3 246.5h0M110.7 368.9h0M191.1 437.4h0M288.7 156.6h0M234.4 446.1h0M381.7 345.3h0M136.7 403.4h0M92.7 307.8h0M142.2 408.6h0M286.7 439.0h0M101.4 246.1h0M182.6 434.1h0M116.0 378.0h0M174.7 430.5h0M283.4 155.1h0M204.6 153.5h0M116.5 216.2h0M377.3 238.4h0M348.1 194.5h0M105.2 357.6h0M382.7 342.5h0M374.8 362.4h0M304.2 432.1h0M103.1 241.8h0M92.3 299.2h0M173.5 165.1h0M277.0 441.6h0M331.6 415.4h0M280.8 440.8h0M363.7 381.2h0M382.7 252.3h0M160.5 172.6h0M364.3 214.7h0M324.7 420.4h0M191.3 157.5h0M317.5 170.2h0M257.1 445.2h0M178.8 432.5h0M325.3 419.9h0M174.0 430.3h0M327.0 418.8h0M388.5 279.0h0M386.4 328.0h0M146.8 182.5h0M98.5 255.4h0M96.2 330.4h0M106.5 360.9h0M352.9 395.4h0M348.0 400.7h0M389.7 293.9h0M94.3 273.0h0M155.2 418.8h0M92.3 300.7h0M365.1 379.5h0M338.6 185.4h0M97.2 259.9h0M335.9 411.8h0M357.3 205.0h0M262.3 444.7h0M386.7 327.6h0M386.5 267.2h0M380.6 246.6h0M382.4 343.5h0M99.8 343.7h0M233.9 149.1h0M275.9 153.1h0M375.7 360.3h0M363.6 381.6h0M276.1 153.1h0M96.7 333.2h0M93.0 285.0h0M151.3 179.1h0M109.9 227.6h0M136.1 402.8h0M317.6 424.9h0M379.6 244.2h0M322.4 173.2h0M93.4 315.9h0M364.4 380.2h0M351.3 397.3h0M96.2 264.2h0M95.5 327.3h0M96.1 264.7h0M141.4 407.8h0M118.8 382.0h0M344.6 403.9h0M343.7 190.2h0M355.9 203.2h0M380.2 245.7h0M278.9 153.8h0M185.4 159.7h0M241.0 148.9h0M227.8 445.4h0M124.7 389.8h0M202.3 441.0h0M369.3 372.7h0M256.0 445.4h0M272.5 152.2h0M378.5 354.1h0M120.4 210.8h0M384.8 335.6h0M187.9 158.7h0M159.7 422.0h0M96.6 332.9h0M389.4 307.6h0M114.4 375.6h0M367.4 375.6h0M225.9 149.7h0M327.5 418.5h0M335.4 412.2h0M269.2 443.4h0M387.9 275.2h0M279.4 153.8h0M92.4 300.0h0M365.6 216.3h0M143.6 185.1h0M136.1 192.4h0M274.9 152.7h0M210.8 152.1h0M318.9 424.1h0M171.6 166.0h0M339.4 409.0h0M378.3 240.3h0M236.3 148.8h0M288.9 156.7h0M104.5 356.3h0M272.9 152.3h0M196.0 439.2h0M95.2 268.1h0M352.0 396.4h0M275.7 152.9h0M319.3 171.3h0M288.7 438.2h0M253.5 445.6h0M365.5 216.4h0M204.4 153.4h0M272.4 152.2h0M180.1 161.8h0M309.2 165.3h0M367.9 374.8h0M317.7 170.1h0M118.0 214.1h0M280.6 154.2h0M92.9 307.7h0M355.1 392.6h0M111.3 370.2h0M97.6 336.7h0M274.6 442.2h0M324.2 174.4h0M202.1 441.0h0M221.5 444.7h0M102.1 350.5h0M293.2 158.3h0M180.3 162.0h0M306.7 164.3h0M221.0 444.7h0M144.5 410.7h0M355.4 202.7h0M357.8 205.6h0M92.4 297.8h0M92.4 291.2h0M296.2 435.6h0M318.9 424.2h0M389.6 297.8h0M380.8 247.2h0M295.2 159.1h0M151.9 416.4h0M100.5 249.2h0M92.8 284.6h0M374.9 233.1h0M166.3 168.9h0M135.3 193.1h0M384.7 258.5h0M162.2 171.2h0M135.1 402.2h0M174.7 164.2h0M92.0 299.3h0M388.2 275.3h0M316.6 169.4h0M101.7 244.9h0M242.0 148.6h0M221.3 149.8h0M386.3 330.1h0M338.0 410.4h0M356.6 203.6h0M114.2 219.7h0M383.5 340.5h0M238.5 148.7h0M212.3 443.6h0M202.9 441.5h0M110.2 368.6h0M152.5 177.6h0M174.6 164.2h0M385.8 263.2h0M186.9 158.7h0M319.3 424.1h0M309.3 165.2h0M155.5 419.5h0M93.0 282.6h0M319.1 424.3h0M312.2 428.3h0M381.5 346.6h0M130.6 397.3h0M385.8 262.4h0M186.7 436.1h0M289.4 438.4h0M103.2 353.8h0M231.5 446.0h0M129.0 395.6h0M225.3 445.7h0M366.0 216.8h0M318.5 170.4h0M267.7 151.0h0M326.9 419.0h0M94.7 325.2h0M169.8 166.8h0M217.3 444.5h0M370.3 223.7h0M205.4 442.1h0M231.9 446.1h0M384.9 335.7h0M104.8 237.1h0M379.4 242.6h0M247.2 446.2h0M99.1 252.8h0M176.0 163.5h0M293.8 158.3h0M188.9 436.9h0M386.8 267.1h0M187.9 158.4h0M123.6 389.2h0M233.9 148.7h0M124.8 390.5h0M153.7 418.2h0M344.0 190.1h0M93.4 277.7h0M362.3 211.1h0M162.3 423.8h0M113.8 374.7h0M330.0 178.1h0M109.5 227.6h0M107.8 231.0h0M324.5 174.3h0M319.5 170.9h0M170.6 166.4h0M92.1 297.0h0M360.9 209.0h0M305.2 163.1h0M348.7 194.7h0M198.7 154.9h0M127.7 200.9h0M376.7 358.6h0M308.0 164.5h0M275.2 442.3h0M364.7 380.2h0M388.1 274.0h0M146.3 412.4h0M374.9 362.7h0M173.3 430.2h0M138.7 189.6h0M217.7 444.4h0M100.8 347.3h0M293.5 158.2h0M310.5 166.0h0M264.8 444.4h0M161.1 423.2h0M105.7 235.4h0M281.1 154.2h0M320.3 171.6h0M96.1 263.1h0M267.1 151.1h0M92.3 293.1h0M378.3 354.9h0M217.3 150.5h0M120.5 384.9h0M114.7 218.7h0M341.3 187.5h0M290.7 157.0h0M169.7 428.3h0M375.3 362.1h0M340.3 408.4h0M179.9 161.8h0M98.1 339.4h0M295.9 435.9h0M210.7 443.2h0M227.9 149.3h0M103.1 353.5h0M198.4 154.9h0M226.4 445.6h0M196.1 155.5h0M238.8 148.5h0M371.5 225.7h0M212.6 151.3h0M281.9 440.5h0M338.4 185.0h0M139.2 188.8h0M149.5 414.9h0M140.7 187.6h0M189.9 437.5h0M308.4 430.1h0M360.9 209.2h0M97.9 339.0h0M357.6 389.9h0M266.6 150.9h0M389.6 288.7h0M282.3 154.4h0M306.0 163.6h0M356.3 391.5h0M92.3 290.1h0M239.2 446.3h0M366.0 216.9h0M381.2 247.3h0M103.6 355.2h0M129.8 396.6h0M321.9 172.4h0M389.3 309.5h0M113.1 221.5h0M389.6 306.0h0M274.4 152.3h0M384.4 337.5h0M95.5 265.7h0M174.8 430.7h0M352.9 199.2h0M145.7 183.1h0M247.2 446.2h0M130.7 397.7h0M116.0 216.8h0M287.1 439.0h0M113.1 221.3h0M201.2 154.0h0M376.6 358.8h0M381.5 346.9h0M120.4 384.8h0M207.4 152.4h0M153.2 177.4h0M94.4 323.8h0M366.1 217.0h0M378.5 354.7h0M389.3 285.2h0M125.0 390.7h0M307.6 164.3h0M233.1 148.8h0M364.7 380.2h0M289.5 156.6h0M382.9 342.3h0M375.9 234.7h0M170.9 166.3h0M145.1 183.5h0M228.9 446.0h0M388.8 314.5h0M359.4 387.9h0M203.9 153.2h0M293.2 158.2h0M92.6 286.2h0M275.2 152.7h0M369.9 222.8h0M329.5 177.9h0M305.5 163.3h0M132.4 195.7h0M286.6 155.7h0M381.2 347.2h0M203.1 441.5h0M389.7 304.6h0M388.2 319.9h0M297.2 159.5h0M348.1 400.9h0M280.6 441.0h0M355.5 392.7h0M98.2 254.9h0M364.6 380.4h0M328.3 176.9h0M360.7 386.1h0M192.6 438.2h0M330.2 416.8h0M388.6 277.5h0M389.8 304.0h0M353.4 394.9h0M119.8 210.9h0M97.9 338.5h0M126.9 201.9h0M369.8 222.8h0M283.9 154.9h0M318.6 170.3h0M387.2 326.0h0M328.5 177.0h0M348.3 194.3h0M380.3 245.1h0M200.8 154.2h0M194.5 438.9h0M173.9 430.4h0M101.7 349.8h0M156.5 174.8h0M252.5 149.0h0M389.9 292.1h0M218.4 444.7h0M114.2 375.3h0M258.9 445.2h0M372.0 226.5h0M260.0 149.9h0M355.7 202.4h0M95.1 267.7h0M308.9 165.1h0M137.1 191.0h0M96.2 263.0h0M320.0 423.9h0M153.4 177.1h0M378.7 240.9h0M368.5 220.7h0M386.8 267.2h0M275.8 442.1h0M364.9 215.0h0M231.5 445.9h0M389.6 287.9h0M103.4 354.0h0M186.7 158.8h0M243.9 148.6h0M234.3 446.2h0M187.2 158.8h0M232.1 446.0h0M148.4 180.8h0M158.2 173.8h0M190.5 157.4h0M378.0 355.7h0M389.1 311.1h0M334.3 413.5h0M92.3 303.4h0M184.0 159.8h0M259.1 149.8h0M361.3 385.0h0M115.9 378.1h0M100.9 348.0h0M364.3 381.1h0M159.3 422.1h0M387.2 326.1h0M263.1 444.8h0M289.6 156.7h0M215.3 444.2h0M295.8 435.8h0M322.4 422.3h0M113.8 220.1h0M303.9 432.5h0M362.9 382.7h0M130.5 397.4h0M106.1 234.4h0M377.6 356.4h0M330.4 178.6h0M385.8 263.3h0M215.5 150.9h0M276.2 152.9h0M141.7 408.4h0M354.8 393.5h0M283.4 154.9h0M132.0 398.8h0M265.2 444.5h0M269.8 443.5h0M142.3 408.9h0M94.4 323.8h0M382.5 344.0h0M317.9 170.0h0M387.3 324.8h0M352.1 396.5h0M205.4 153.0h0M350.9 397.8h0M309.6 429.6h0M102.6 352.0h0M376.7 359.2h0M94.7 326.2h0M100.5 247.1h0M266.7 444.3h0M103.3 240.1h0M386.1 262.6h0M355.9 392.6h0M93.6 274.3h0M312.3 428.4h0M275.9 442.6h0M226.7 445.8h0M96.2 333.8h0M374.2 364.8h0M179.4 433.3h0M163.5 170.2h0M349.9 399.4h0M92.8 314.7h0M389.7 307.7h0M92.5 283.8h0M94.6 325.1h0M95.9 263.0h0M91.9 298.4h0M154.2 176.2h0M290.3 156.8h0M232.0 148.5h0M140.4 407.7h0M303.1 433.2h0M119.3 211.4h0M370.9 371.0h0M386.3 330.8h0M335.7 412.7h0M240.0 148.5h0M379.5 242.1h0M176.8 162.9h0M382.2 250.0h0M93.5 318.9h0M382.3 249.9h0M389.9 289.9h0M272.3 443.3h0M285.4 439.9h0M97.3 337.7h0M385.7 261.5h0M116.7 379.8h0M168.1 167.5h0M136.3 403.6h0M311.2 166.0h0M124.7 204.3h0M98.1 339.8h0M205.5 152.6h0M249.9 446.3h0M385.4 260.7h0M338.1 410.6h0M111.0 224.5h0M380.8 349.7h0M314.9 427.0h0M98.5 341.4h0M354.9 201.3h0M336.2 182.7h0M223.3 445.7h0M116.1 379.2h0M369.2 221.5h0M389.1 313.9h0M204.9 442.1h0M343.5 189.0h0M94.4 270.1h0M293.3 157.8h0M92.3 285.5h0M246.9 446.4h0M113.2 220.5h0M361.0 208.9h0M293.6 437.2h0M360.2 208.1h0M303.2 433.1h0M235.7 446.6h0M141.5 408.5h0M175.3 163.6h0M232.8 148.7h0M94.2 323.9h0M286.7 155.5h0M93.8 320.5h0M203.1 153.2h0M304.3 432.6h0M274.2 152.0h0M105.9 360.4h0M280.7 441.4h0M385.8 261.9h0M257.4 445.8h0M146.1 412.6h0M256.8 149.2h0M266.6 444.3h0M226.0 445.8h0M338.8 409.9h0M110.0 368.7h0M111.5 223.8h0M108.9 228.1h0M198.9 154.5h0M308.3 430.5h0M389.2 314.0h0M320.2 423.9h0M386.0 262.7h0M317.4 169.3h0M142.1 185.9h0M386.8 266.2h0M256.1 149.2h0M235.6 446.5h0M120.9 208.9h0M346.6 192.1h0M288.6 438.9h0M95.6 265.1h0M220.0 445.2h0M390.0 301.9h0M191.3 157.0h0M259.7 445.3h0M204.9 152.9h0M389.1 315.6h0M377.6 238.0h0M329.8 417.5h0M93.4 276.7h0M111.6 371.5h0M233.0 446.4h0M369.8 372.5h0M366.1 378.5h0M191.9 156.7h0M279.6 153.5h0M159.7 422.6h0M297.3 435.6h0M102.4 242.2h0M325.6 420.2h0M129.0 396.0h0M260.2 445.4h0M288.9 156.2h0M113.3 220.7h0M201.9 153.7h0M279.3 153.3h0M365.2 380.0h0M104.1 238.2h0M293.5 437.0h0M357.2 391.0h0M249.5 446.4h0M108.8 366.4h0M217.1 150.3h0M217.1 150.4h0M203.2 441.7h0M187.1 158.4h0M362.7 211.2h0M185.1 435.7h0M230.9 446.3h0M263.1 444.9h0M310.4 165.4h0M385.2 259.2h0M186.4 436.3h0M214.2 150.9h0M125.7 203.1h0M383.0 342.7h0M327.7 418.8h0M348.0 193.5h0M289.1 438.6h0M92.1 291.1h0M143.9 410.7h0M94.3 270.2h0M358.2 389.8h0M128.0 394.6h0M238.6 446.6h0M267.2 444.3h0M93.5 319.1h0M260.0 149.5h0M100.1 346.4h0M377.6 237.3h0M358.9 388.9h0M143.7 184.5h0M386.0 332.2h0M366.8 217.3h0M95.4 329.2h0M194.9 439.4h0M241.6 148.5h0M103.2 354.7h0M123.9 389.7h0M386.1 263.6h0M205.7 442.3h0M339.6 409.4h0M375.6 361.5h0M94.9 267.9h0M313.6 427.8h0M255.0 149.1h0M162.7 424.4h0M247.7 446.4h0M351.7 397.6h0M232.3 148.7h0M364.0 213.0h0M384.6 257.2h0M205.1 442.3h0M209.4 151.8h0M343.4 406.0h0M384.9 258.8h0M298.8 160.1h0M242.9 446.6h0M94.7 326.2h0M329.8 417.4h0M176.4 432.0h0M236.1 148.5h0M298.0 435.2h0M305.9 163.3h0M108.0 229.8h0M253.6 149.0h0M361.3 209.4h0M171.5 429.6h0M303.6 162.1h0M141.8 408.8h0M151.2 416.5h0M355.7 392.7h0M366.6 217.3h0M143.0 185.2h0M246.2 148.4h0M371.4 225.3h0M389.9 288.7h0M245.5 148.4h0M238.0 446.7h0M131.8 399.2h0M340.7 408.5h0M164.0 425.2h0M156.9 420.8h0M327.1 175.6h0M336.8 411.9h0M235.6 148.4h0M155.2 175.5h0M343.1 189.0h0M97.6 338.5h0M271.6 151.6h0M343.0 188.6h0M160.8 423.1h0M361.4 385.4h0M388.1 321.7h0M262.4 445.2h0M376.8 359.0h0M288.5 438.9h0M119.4 383.7h0M384.0 255.0h0M140.5 187.4h0M94.3 325.0h0M225.8 149.1h0M345.7 191.4h0M358.3 389.6h0M312.2 166.4h0M92.6 312.4h0M350.0 195.7h0M280.0 441.5h0M143.6 410.4h0M191.2 156.8h0M369.0 221.1h0M115.6 217.0h0M210.7 151.5h0M365.7 379.2h0M304.8 162.7h0M148.4 414.5h0M236.1 148.5h0M269.9 443.9h0M390.1 290.4h0M131.9 399.2h0M375.9 233.8h0M193.4 438.7h0M224.4 149.3h0M98.4 254.2h0M167.9 167.5h0M384.5 257.4h0M102.6 241.6h0M301.7 433.8h0M99.5 250.1h0M342.1 187.8h0M373.4 229.0h0M388.4 319.4h0M360.9 208.8h0M384.3 255.8h0M377.0 236.2h0M333.4 414.6h0M290.1 156.7h0M121.5 208.3h0M216.7 444.6h0M92.2 285.1h0M365.9 379.4h0M160.9 423.4h0M239.5 148.1h0M235.7 446.7h0M308.4 430.8h0M364.1 212.9h0M112.7 221.1h0M240.3 148.1h0M204.4 152.6h0M319.7 170.6h0M382.4 346.0h0M101.1 350.2h0M376.2 360.7h0M175.4 163.2h0M96.4 334.7h0M390.4 295.3h0M256.5 149.0h0M288.1 439.2h0M114.9 377.4h0M192.0 438.6h0M270.3 443.9h0M293.2 437.3h0M91.7 293.2h0M92.9 316.5h0M388.2 272.3h0M381.5 246.7h0M289.0 439.0h0M332.8 415.3h0M374.7 363.8h0M387.2 266.7h0M150.1 416.0h0M151.7 417.2h0M124.7 391.4h0M339.3 185.1h0M390.3 303.5h0M220.8 149.4h0M138.7 188.7h0M119.2 384.1h0M196.4 440.1h0M163.1 170.0h0M382.9 250.7h0M141.7 409.0h0M279.1 153.0h0M175.1 163.4h0M381.5 246.8h0M118.8 383.4h0M352.7 396.5h0M287.6 155.5h0M174.7 431.2h0M91.7 301.5h0M359.1 206.1h0M94.7 267.7h0M145.1 182.8h0M166.9 427.2h0M125.4 202.9h0M231.1 446.6h0M127.3 394.3h0M368.6 219.8h0M216.9 444.9h0M305.8 163.0h0M186.0 158.7h0M293.2 437.3h0M292.1 157.2h0M261.6 445.4h0M228.0 446.2h0M213.1 150.7h0M382.2 248.6h0M372.8 227.1h0M374.0 229.8h0M293.4 437.4h0M335.2 181.5h0M365.5 380.0h0M244.3 148.1h0M388.8 275.8h0M381.1 348.9h0M388.9 317.9h0M138.8 188.5h0M319.4 424.5h0M125.5 202.9h0M387.7 269.1h0M389.0 277.9h0M125.4 392.1h0M257.2 445.9h0M390.4 292.7h0M308.8 430.7h0M327.0 419.5h0M229.0 148.6h0M94.4 269.3h0M387.1 328.8h0M279.0 153.0h0M98.5 342.2h0M120.6 208.9h0M122.5 388.3h0M335.9 182.0h0M102.3 241.8h0M308.7 430.5h0M186.6 158.4h0M289.0 156.2h0M92.2 283.6h0M285.4 155.0h0M168.5 166.9h0M220.8 149.5h0M385.6 260.3h0M375.8 233.0h0M180.5 434.1h0M223.3 445.8h0M280.2 153.2h0M305.7 162.8h0M184.2 159.2h0M248.1 148.3h0M126.5 201.7h0M334.5 181.1h0M217.5 445.0h0M370.6 371.9h0M247.5 148.2h0M251.4 148.6h0M365.7 215.3h0M106.9 363.4h0M368.6 375.4h0M360.3 387.5h0M353.8 395.3h0M101.4 350.9h0M234.8 446.8h0M152.2 177.3h0M91.8 303.3h0M274.1 443.2h0M214.9 444.6h0M371.8 225.5h0M390.5 295.5h0M106.6 232.4h0M249.0 148.3h0M338.8 184.6h0M383.0 251.3h0M350.8 398.8h0M332.7 415.5h0M382.0 346.8h0M96.4 259.5h0M342.5 407.2h0M134.4 402.1h0M300.2 160.4h0M93.2 318.1h0M329.8 177.5h0M387.0 329.6h0M94.5 326.4h0M221.5 149.4h0M377.2 236.3h0M338.6 410.5h0M349.9 399.9h0M91.7 297.4h0M318.0 425.5h0M93.5 321.9h0M240.8 446.9h0M267.9 444.5h0M127.6 200.2h0M260.8 149.3h0M94.8 266.8h0M100.8 349.4h0M368.9 220.5h0M179.1 161.5h0M257.8 446.0h0M307.1 163.5h0M373.4 228.2h0M180.7 160.9h0M117.4 381.4h0M338.2 410.8h0M91.8 303.9h0M140.4 407.8h0M252.1 148.5h0M319.4 424.7h0M140.3 407.9h0M389.5 280.3h0M111.2 223.7h0M128.8 396.3h0M182.7 435.0h0M283.0 440.7h0M209.1 443.3h0M103.2 239.9h0M182.0 160.1h0M382.9 250.8h0M97.1 257.4h0M168.9 166.6h0M122.9 206.1h0M387.5 268.8h0M388.1 272.2h0M390.0 306.7h0M282.0 441.2h0M351.1 398.5h0M168.2 167.0h0M374.8 231.1h0M175.8 163.0h0M390.4 299.2h0M107.4 364.0h0M183.4 435.4h0M390.2 305.8h0M363.2 211.6h0M308.3 164.1h0M284.7 440.2h0M314.8 167.7h0M376.9 235.7h0M350.2 195.6h0M174.4 431.2h0M117.3 381.5h0M377.3 358.8h0M389.4 279.9h0M237.5 148.3h0M330.3 417.1h0M162.4 170.5h0M390.4 291.8h0M134.2 192.9h0M320.2 424.2h0M99.3 250.2h0M361.9 209.8h0M335.0 413.5h0M329.2 417.9h0M287.9 155.7h0M91.7 294.9h0M102.3 242.1h0M97.2 257.1h0M380.4 350.8h0M253.4 446.3h0M248.6 446.7h0M249.0 446.7h0M93.2 318.6h0M164.6 425.8h0M266.9 444.7h0M316.8 168.8h0M91.7 294.6h0M122.3 206.6h0M376.3 360.6h0M167.7 427.6h0M152.4 177.4h0M187.3 436.9h0M378.7 239.6h0M325.2 420.8h0M173.8 430.9h0M200.4 153.6h0M316.2 426.5h0M348.2 401.3h0M151.7 177.7h0M135.6 191.8h0M91.9 291.0h0M360.4 387.1h0M210.0 151.3h0M314.5 427.5h0M104.5 358.3h0M366.4 378.7h0M390.4 300.9h0M121.1 386.5h0M368.1 375.8h0M390.3 291.7h0M225.8 446.1h0M266.6 444.7h0M184.7 159.2h0M324.4 421.4h0M97.2 257.6h0M372.0 225.4h0M91.7 295.3h0M292.5 437.7h0M91.6 301.6h0M202.1 441.8h0M300.1 159.9h0M335.4 413.6h0M345.4 404.7h0M192.5 155.9h0M389.0 275.3h0M208.6 151.5h0M354.6 395.0h0M382.1 347.1h0M215.7 150.0h0M190.7 156.6h0M205.8 152.1h0M389.2 277.0h0M390.6 300.9h0M218.6 149.7h0M143.2 184.1h0M344.8 189.8h0M353.1 396.6h0M170.2 165.7h0M385.2 336.8h0M346.5 191.5h0M178.7 433.7h0M274.6 151.6h0M113.7 218.7h0M148.6 179.7h0M103.9 237.3h0M92.5 279.9h0M162.9 425.1h0M91.7 287.6h0M266.7 444.9h0M91.5 294.8h0M110.4 370.6h0M300.1 435.0h0M216.9 445.2h0M198.0 154.1h0M92.2 281.2h0M374.5 230.1h0M135.1 403.2h0M118.9 383.9h0M303.5 161.5h0M223.3 148.9h0M98.2 341.9h0M189.1 437.8h0M245.4 148.0h0M280.6 441.8h0M273.1 151.4h0M174.0 163.7h0M189.0 157.2h0M379.8 353.3h0M387.5 327.7h0M93.1 274.3h0M387.4 266.2h0M260.4 445.9h0M357.1 391.8h0M228.9 148.3h0M139.1 407.0h0M91.9 309.5h0M359.5 206.0h0M341.9 186.9h0M109.3 368.6h0M388.6 273.4h0M322.9 422.6h0M373.0 227.2h0M167.6 428.0h0M356.8 202.6h0M294.1 437.4h0M135.4 403.6h0M363.5 211.7h0M121.4 387.3h0M236.0 447.1h0M125.8 392.8h0M390.2 307.9h0M251.6 148.3h0M177.0 162.3h0M297.5 436.1h0M172.6 164.6h0M200.3 441.5h0M332.9 179.5h0M256.6 446.4h0M107.5 229.9h0M386.7 331.4h0M148.9 179.7h0M91.6 288.1h0M275.6 443.0h0M111.6 372.5h0M363.3 211.3h0M390.0 284.7h0M333.8 180.2h0M113.4 219.6h0M386.4 332.8h0M296.5 158.5h0M265.5 150.0h0M390.1 285.3h0M131.8 399.6h0M135.2 191.8h0M322.9 172.2h0M127.4 394.9h0M359.5 389.0h0M243.5 148.0h0M390.5 290.9h0M95.8 333.0h0M390.5 299.5h0M366.8 378.4h0M104.6 359.0h0M204.4 442.6h0M92.1 282.4h0M313.8 428.4h0M91.5 303.4h0M337.2 183.0h0M348.5 193.5h0M164.5 426.0h0M103.0 239.5h0M370.0 373.2h0M138.9 407.1h0M158.1 173.0h0M170.9 429.7h0M325.1 173.8h0M111.1 371.7h0M144.9 412.4h0M319.6 424.8h0M164.6 168.8h0M116.8 380.9h0M278.2 152.6h0M314.6 167.3h0M225.5 148.7h0M269.3 444.3h0M179.2 161.1h0M91.4 300.3h0M289.4 439.1h0M149.5 179.2h0M232.8 446.9h0M339.2 410.5h0M311.7 429.4h0M182.5 435.2h0M340.7 409.1h0M129.8 197.4h0M187.1 437.0h0M97.6 254.7h0M269.0 150.5h0M267.0 444.9h0M313.2 166.5h0M243.9 147.9h0M99.2 345.1h0M306.6 162.9h0M358.4 390.3h0M387.4 328.5h0M388.4 271.3h0M224.5 446.3h0M307.1 431.8h0M92.6 278.1h0M356.4 202.4h0M313.2 166.5h0M94.5 266.9h0M284.5 440.7h0M161.7 424.5h0M163.6 425.4h0M375.4 363.0h0M349.6 400.5h0M201.5 441.7h0M372.1 225.5h0M343.5 188.4h0M101.7 352.5h0M212.1 444.4h0M296.7 158.5h0M261.9 445.7h0M374.3 229.7h0M127.1 200.4h0M333.9 414.9h0M95.1 331.1h0M97.0 338.4h0M385.0 257.0h0M236.2 148.0h0M243.1 447.2h0M122.1 388.4h0M271.5 443.9h0M139.7 407.8h0M91.4 296.3h0M244.3 148.0h0M347.5 192.3h0M278.4 442.3h0M224.3 148.8h0M116.7 380.8h0M325.8 420.8h0M93.6 323.9h0M275.5 151.9h0M215.3 150.2h0M298.2 159.3h0M216.7 445.0h0M92.3 314.0h0M109.3 226.5h0M102.9 354.8h0M286.0 154.9h0M313.6 166.8h0M120.8 208.4h0M346.5 403.6h0M201.9 442.0h0M274.9 151.7h0M300.6 160.2h0M171.7 164.9h0M296.9 436.4h0M113.8 376.1h0M329.6 418.1h0M341.0 186.3h0M329.8 417.9h0M108.8 227.5h0M93.3 320.9h0M102.0 352.9h0M318.6 169.6h0M376.3 233.8h0M386.2 333.2h0M105.5 233.8h0M271.2 444.0h0M189.1 437.9h0M261.4 445.8h0M151.7 177.4h0M92.6 316.3h0M148.1 180.3h0M326.4 420.4h0M225.1 148.7h0M320.3 170.7h0M383.2 344.2h0M370.2 372.9h0M369.1 374.7h0M240.7 447.1h0M95.8 333.3h0M276.8 152.3h0M353.8 395.8h0M390.4 305.3h0M357.4 391.5h0M269.4 150.5h0M279.1 442.3h0M247.5 148.1h0M376.8 234.7h0M183.8 435.7h0M382.6 249.4h0M101.6 352.0h0M258.4 148.9h0M93.0 320.0h0M116.6 380.5h0M115.8 379.5h0M101.7 242.7h0M107.6 229.7h0M101.1 244.7h0M372.3 369.5h0M350.5 195.5h0M390.2 310.0h0M140.0 187.1h0M93.7 325.6h0M194.5 439.9h0M220.6 149.0h0M147.4 180.5h0M158.9 172.0h0M101.2 351.2h0M118.3 211.6h0M344.8 405.5h0M206.5 443.4h0M189.6 438.4h0M294.5 157.5h0M223.3 148.8h0M378.9 239.1h0M216.7 149.7h0M305.1 433.0h0M91.2 296.3h0M348.7 401.7h0M194.6 440.0h0M129.7 398.0h0M261.6 445.9h0M175.6 432.5h0M315.3 167.3h0M246.0 147.7h0M356.7 392.7h0M98.9 344.7h0M284.6 441.0h0M253.1 148.1h0M327.0 420.2h0M107.3 365.2h0M360.9 207.4h0M102.0 241.6h0M387.5 329.1h0M370.3 221.7h0M112.6 220.3h0M379.3 355.4h0M357.1 392.5h0M209.1 151.1h0M134.8 403.1h0M93.3 322.4h0M328.2 419.3h0M371.6 370.9h0M292.2 438.3h0M338.7 411.1h0M111.0 372.3h0M249.5 447.1h0M384.5 341.1h0M363.6 383.8h0M115.3 379.3h0M338.9 184.0h0M378.8 356.1h0M113.2 219.1h0M214.9 445.1h0M299.1 435.7h0M211.4 444.4h0M195.5 440.3h0M147.3 180.6h0M288.3 155.4h0M260.8 446.1h0M91.4 289.2h0M212.5 150.4h0M113.4 376.0h0M218.6 445.8h0M358.1 203.8h0M381.6 245.2h0M299.9 159.8h0M283.7 441.2h0M151.1 177.4h0M100.9 244.0h0M338.8 184.1h0M232.4 447.0h0M292.7 438.2h0M207.0 151.5h0M161.3 170.7h0M93.0 320.3h0M183.5 159.1h0M295.2 437.1h0M124.8 392.4h0M135.3 403.7h0M232.0 147.8h0M118.4 383.8h0M91.8 283.0h0M383.3 250.7h0M266.7 149.7h0M94.5 329.7h0M249.8 447.2h0M208.3 151.2h0M316.0 167.6h0M224.4 446.5h0M92.9 320.7h0M139.5 407.7h0M323.5 172.3h0M168.3 166.3h0M324.7 421.7h0M276.4 443.1h0M360.8 387.4h0M210.2 150.9h0M327.5 175.2h0M328.2 175.6h0M224.6 446.4h0M390.4 308.9h0M131.8 400.2h0M337.6 183.0h0M390.8 297.9h0M261.3 446.1h0M389.1 320.3h0M203.5 152.5h0M91.2 293.7h0M206.7 443.3h0M136.8 405.4h0M354.6 199.5h0M327.6 175.3h0M204.7 152.2h0M190.6 156.3h0M298.7 159.2h0M95.9 260.4h0M120.3 386.2h0M202.2 152.8h0M268.4 150.1h0M119.3 210.0h0M298.4 158.9h0M172.0 430.6h0M137.6 406.1h0M166.2 427.2h0M377.2 234.8h0M162.7 169.7h0M267.1 149.8h0M95.4 333.1h0M179.1 434.1h0M131.6 195.2h0M242.7 447.4h0M358.0 203.8h0M339.5 410.3h0M165.2 426.8h0M391.0 294.4h0M281.1 153.1h0M310.4 430.4h0M309.5 430.9h0M97.8 341.5h0M92.3 315.6h0M384.7 255.1h0M328.9 176.1h0M112.6 220.1h0M190.4 438.5h0M122.5 389.3h0M91.2 292.4h0M123.7 204.3h0M285.0 440.9h0M390.4 308.8h0M381.8 348.6h0M318.5 169.2h0M387.5 265.8h0M112.3 220.5h0M390.4 309.3h0M230.0 446.9h0M378.4 357.4h0M134.6 403.1h0M117.4 382.2h0M223.6 148.7h0M118.7 210.8h0M119.4 210.1h0M390.4 284.9h0M384.8 340.0h0M164.7 168.4h0M372.3 225.4h0M359.6 205.7h0M108.4 227.8h0M198.3 441.1h0M129.5 197.3h0M96.6 257.5h0M104.0 236.4h0M103.7 237.0h0M388.5 324.8h0M99.1 249.2h0M388.0 268.2h0M92.5 318.1h0M94.4 266.3h0M382.7 248.4h0M176.9 432.8h0M380.6 352.4h0M388.1 326.4h0M287.6 155.0h0M131.0 399.2h0M199.0 153.7h0M122.9 205.2h0M112.9 219.8h0M268.4 150.0h0M243.6 447.5h0M128.1 396.1h0M290.3 156.0h0M101.2 243.6h0M378.8 238.4h0M221.6 446.0h0M379.1 239.2h0M321.9 171.4h0M97.9 253.2h0M378.9 356.4h0M324.6 421.8h0M191.5 438.9h0M109.8 224.9h0M288.6 155.5h0M334.2 414.9h0M305.5 162.1h0M380.1 242.0h0M260.6 446.2h0M341.7 186.6h0M363.6 383.8h0M262.7 149.1h0M315.3 167.3h0M170.6 429.9h0M372.8 226.1h0M180.2 160.6h0M328.2 175.6h0M217.0 445.5h0M96.6 257.7h0M336.1 181.8h0M248.3 447.3h0M171.4 164.7h0M267.6 150.1h0M189.0 438.1h0M211.2 444.3h0M94.3 328.6h0M321.7 423.9h0M153.7 419.2h0M319.9 425.1h0M243.7 147.8h0M167.0 167.3h0M244.0 447.2h0M346.1 190.6h0M98.6 344.2h0M160.2 423.6h0M277.1 152.1h0M273.1 151.1h0M194.1 154.9h0M128.4 396.7h0M210.9 444.5h0M274.5 443.9h0M210.6 444.5h0M144.2 182.7h0M131.7 400.4h0M380.5 241.7h0M103.9 236.3h0M235.0 447.6h0M360.7 388.1h0M258.4 148.4h0M104.3 359.3h0M91.8 315.2h0M321.0 170.5h0M134.0 403.0h0M142.9 184.0h0M374.0 227.8h0M187.7 437.9h0M205.7 443.4h0M93.9 327.4h0M365.7 213.8h0M92.2 318.2h0M337.5 412.6h0M145.4 181.6h0M112.5 375.3h0M389.4 321.0h0M304.5 161.4h0M312.2 165.4h0M243.4 147.5h0M113.7 377.1h0M287.4 154.8h0M368.3 377.2h0M268.0 445.3h0M112.0 374.2h0M356.9 202.0h0M140.4 185.9h0M358.2 391.3h0M92.0 279.8h0M99.0 346.4h0M112.3 375.1h0M110.3 371.4h0M380.2 241.5h0M96.2 257.6h0M241.0 447.6h0M91.0 303.6h0M389.8 278.0h0M281.1 442.2h0M322.0 423.7h0M271.4 150.5h0M253.8 447.2h0M100.8 351.4h0M94.1 266.7h0M378.2 358.1h0M184.9 158.2h0M372.1 224.4h0M192.8 439.8h0M99.3 248.2h0M265.1 445.7h0M91.5 309.7h0M228.5 148.0h0M213.6 445.1h0M257.1 446.7h0M303.7 433.8h0M97.2 340.9h0M154.6 420.3h0M117.2 212.4h0M123.7 391.2h0M295.7 437.3h0M170.4 164.9h0M144.4 182.6h0M165.1 426.9h0M323.9 172.4h0M100.0 348.6h0M271.5 150.4h0M193.2 439.9h0M198.5 153.6h0M215.7 149.6h0M251.0 147.7h0M301.0 159.9h0M132.4 401.3h0M391.0 306.9h0M388.6 325.4h0M126.4 394.4h0M181.3 435.3h0M272.9 150.9h0M246.3 147.5h0M387.2 331.7h0M270.9 444.7h0M391.1 298.0h0M165.1 168.0h0M142.7 183.9h0M224.8 148.3h0M282.0 442.0h0M118.4 210.9h0M289.4 439.7h0M158.2 422.7h0M154.0 419.7h0M108.3 227.1h0M223.7 148.5h0M242.1 147.5h0M364.3 382.9h0M91.6 283.4h0M353.0 197.6h0M209.7 444.4h0M190.7 156.0h0M236.4 447.6h0M385.7 256.9h0M168.6 428.9h0M288.8 439.8h0M361.4 207.9h0M318.0 168.8h0M390.5 310.3h0M220.0 446.3h0M352.5 397.9h0M350.7 399.9h0M240.9 447.5h0M99.4 347.3h0M92.9 273.2h0M216.6 149.3h0M371.6 223.5h0M102.0 240.7h0M169.0 429.2h0M353.9 198.7h0M363.2 384.7h0M355.0 199.6h0M195.2 154.7h0M94.7 264.2h0M152.3 418.7h0M164.8 168.1h0M135.9 190.4h0M390.2 281.0h0M204.6 151.9h0M218.3 445.8h0M330.0 418.3h0M309.6 431.0h0M364.5 382.9h0M337.4 182.4h0M271.5 444.4h0M93.4 325.4h0M162.2 425.4h0M385.8 257.9h0M387.7 266.0h0M287.2 440.5h0M381.0 243.3h0M328.2 175.4h0M240.4 147.3h0M362.5 385.7h0M361.2 387.6h0M215.9 149.4h0M181.1 159.9h0M241.7 147.4h0M378.1 236.6h0M290.2 155.7h0M298.3 158.8h0M96.9 255.5h0M91.3 307.6h0M336.1 181.4h0M107.2 365.6h0M382.9 248.2h0M371.5 371.9h0M219.9 148.8h0M390.4 312.4h0M101.8 354.1h0M300.4 159.6h0M388.5 324.9h0M221.7 446.5h0M339.0 411.1h0M231.3 147.6h0M331.8 416.9h0M164.4 168.3h0M343.0 407.7h0M382.7 248.0h0M109.9 370.5h0M391.0 295.4h0M384.7 254.5h0M223.8 148.3h0M190.5 156.2h0M91.1 305.8h0M91.4 286.0h0M342.8 407.9h0M109.4 369.9h0M251.2 447.2h0M150.9 177.5h0M356.7 201.8h0M91.3 285.6h0M273.6 444.2h0M170.0 429.6h0M347.8 402.9h0M387.6 329.9h0M91.5 312.2h0M192.3 155.4h0M249.1 147.5h0M221.4 148.7h0M99.8 246.8h0M265.0 149.3h0M157.4 422.1h0M291.5 156.0h0M351.6 399.2h0M358.6 390.7h0M236.7 147.4h0M268.7 149.9h0M102.2 240.2h0M151.4 176.9h0M113.6 218.0h0M247.5 147.5h0M344.5 406.3h0M108.9 368.7h0M101.8 241.4h0M124.7 392.3h0M137.3 406.0h0M367.7 378.3h0M214.3 149.9h0M98.6 344.9h0M140.3 408.9h0M390.4 312.0h0M380.3 241.3h0M94.5 330.0h0M381.1 351.3h0M318.8 168.7h0M236.4 447.7h0M284.5 153.5h0M126.7 395.2h0M285.9 154.1h0M335.4 180.3h0M116.0 214.0h0M208.3 150.6h0M333.1 416.4h0M223.9 148.2h0M295.4 157.4h0M92.7 322.4h0M378.2 235.7h0M362.9 385.7h0M108.8 369.2h0M376.5 232.4h0M349.5 401.7h0M158.4 423.1h0M172.9 431.6h0M299.3 158.9h0M212.9 149.8h0M382.3 246.2h0M170.6 430.5h0M356.4 393.9h0M133.5 192.3h0M158.4 423.2h0M347.8 403.2h0M312.5 429.8h0M130.4 195.7h0M91.2 283.1h0M112.0 220.3h0M271.3 150.3h0M229.7 447.4h0M367.0 215.5h0M294.2 438.0h0M275.0 443.9h0M122.2 389.6h0M117.2 383.0h0M121.4 388.6h0M364.5 211.5h0M373.3 226.1h0M389.9 276.6h0M178.6 160.7h0M220.7 446.5h0M353.9 198.4h0M193.3 154.9h0M92.7 272.4h0M307.5 432.3h0M178.3 160.9h0M391.4 299.7h0M103.7 358.9h0M231.7 447.5h0M307.4 162.7h0M171.2 430.7h0M202.5 442.8h0M155.5 421.1h0M277.1 151.4h0M353.8 198.0h0M354.7 395.9h0M318.1 426.5h0M93.1 270.9h0M111.9 220.3h0M248.4 447.7h0M244.2 147.0h0M385.1 340.3h0M235.3 447.9h0M352.4 398.6h0M147.8 415.5h0M197.1 441.4h0M288.5 440.1h0M390.1 277.3h0M178.5 160.7h0M219.8 446.3h0M390.6 283.2h0M126.7 200.0h0M299.2 436.1h0M377.4 234.1h0M317.8 426.7h0M158.1 172.0h0M305.3 433.4h0M356.4 394.0h0M248.8 447.6h0M92.3 319.8h0M219.3 148.7h0M93.5 327.3h0M314.1 166.2h0M178.7 434.3h0M120.7 207.5h0M344.8 406.4h0M330.2 176.5h0M357.8 392.3h0M282.1 152.8h0M325.3 422.0h0M177.6 433.9h0M317.7 426.7h0M346.0 405.1h0M98.4 249.8h0M117.3 383.0h0M369.1 376.4h0M378.3 236.4h0M373.2 225.7h0M94.3 264.0h0M105.9 231.3h0M235.9 447.7h0M347.3 191.3h0M115.4 380.0h0M362.2 386.6h0M283.5 153.2h0M351.3 195.2h0M332.8 416.5h0M188.4 156.5h0M157.8 422.7h0M315.0 166.7h0M298.2 158.4h0M176.0 433.0h0M236.8 147.2h0M150.1 417.4h0M117.3 383.1h0M250.5 147.3h0M143.3 411.9h0M353.7 198.1h0M189.9 439.0h0M291.8 438.9h0M386.9 334.2h0M93.0 270.3h0M95.2 260.5h0M100.3 244.5h0M372.6 225.0h0M337.7 412.5h0M145.7 181.1h0M187.9 156.7h0M383.6 345.5h0M253.3 447.2h0M327.4 420.7h0M260.2 148.3h0M92.9 271.7h0M238.6 147.0h0M92.0 317.3h0M386.7 260.6h0M177.3 161.2h0M223.9 148.2h0M285.9 154.0h0M351.6 195.7h0M97.8 343.4h0M291.8 156.0h0M386.7 260.3h0M361.0 207.1h0M90.9 307.5h0M330.3 418.6h0M207.2 151.0h0M136.0 405.3h0M151.5 176.5h0M348.5 402.5h0M105.0 233.6h0M230.5 447.5h0M373.6 368.4h0M320.2 169.6h0M99.7 348.9h0M120.9 207.0h0M389.6 274.4h0M219.1 148.6h0M374.9 366.0h0M156.1 421.5h0M108.2 367.8h0M317.2 167.7h0M267.7 445.6h0M389.7 319.5h0M381.9 349.7h0M194.0 440.3h0M101.5 241.2h0M194.6 440.6h0M184.9 157.9h0M93.0 324.7h0M207.3 444.0h0M94.2 329.4h0M299.8 435.9h0M350.0 193.8h0M301.7 159.8h0M308.6 431.8h0M229.3 147.6h0M356.2 394.3h0M150.2 417.2h0M118.1 210.9h0M324.6 172.6h0M367.2 215.8h0M189.8 438.8h0M387.8 265.4h0M309.8 163.8h0M96.2 257.5h0M390.7 282.3h0M360.5 388.9h0M391.3 296.3h0M385.9 257.3h0M389.4 321.5h0M228.0 447.4h0M144.7 413.0h0M378.6 236.8h0M348.8 192.5h0M305.8 161.9h0M111.0 372.9h0M236.7 447.9h0M110.1 223.6h0M202.2 152.3h0M365.4 382.1h0M376.5 362.9h0M153.8 420.1h0M373.8 368.3h0M287.3 154.0h0M282.7 152.8h0M375.9 230.2h0M217.5 446.3h0M390.6 279.9h0M168.2 165.6h0M114.3 379.1h0M328.6 174.9h0M336.2 180.8h0M94.6 262.8h0M332.3 417.3h0M101.1 353.5h0M113.1 376.9h0M105.1 362.5h0M366.8 380.0h0M342.9 408.5h0M294.3 156.7h0M351.9 195.4h0M391.5 302.4h0M118.5 209.8h0M390.6 315.0h0M253.1 447.6h0M390.5 279.2h0M375.1 365.9h0M358.5 391.8h0M101.3 353.6h0M173.1 432.1h0M92.2 320.9h0M117.9 384.2h0M173.4 432.2h0M301.4 435.6h0M136.0 189.6h0M372.1 223.4h0M237.4 147.0h0M137.6 407.1h0M126.1 200.2h0M92.5 323.3h0M181.8 159.0h0M107.5 367.3h0M94.4 331.6h0M360.9 206.3h0M99.7 244.9h0M266.7 445.9h0M230.1 147.2h0M185.9 157.4h0M123.9 392.5h0M102.1 356.0h0M341.8 185.5h0M156.0 421.7h0M379.3 357.6h0M92.1 319.7h0M138.2 187.3h0M168.1 165.6h0M376.6 362.7h0M104.2 360.2h0M92.5 273.0h0M285.5 441.4h0M112.0 375.4h0M146.5 415.0h0M95.5 258.3h0M269.1 149.6h0M241.4 448.0h0M352.1 195.9h0M387.7 331.8h0M124.7 201.8h0M357.7 392.9h0M124.6 393.2h0M108.5 369.1h0M391.3 288.5h0M372.1 223.2h0M194.6 154.1h0M387.9 330.6h0M170.9 164.1h0M183.1 436.6h0M373.3 225.7h0M390.5 316.2h0M153.3 419.9h0M390.1 276.8h0M300.6 159.1h0M110.3 372.1h0M218.2 148.7h0M277.9 151.4h0M350.3 401.2h0M366.6 380.4h0M312.9 165.1h0M255.5 447.4h0M350.6 400.9h0M391.6 299.3h0M111.2 374.2h0M289.0 154.6h0M391.1 285.2h0M376.2 230.9h0M372.1 371.8h0M263.4 446.5h0M159.1 423.9h0M381.1 353.3h0M345.4 406.0h0M90.3 301.2h0M91.5 278.5h0M163.0 426.4h0M235.7 147.0h0M355.7 199.8h0M328.2 174.7h0M106.0 230.6h0M103.5 236.0h0M364.4 383.7h0M348.6 402.8h0M209.9 150.2h0M128.5 197.3h0M214.7 149.3h0M130.6 194.9h0M102.7 238.0h0M223.1 447.0h0M340.4 184.5h0M378.4 235.6h0M227.6 447.4h0M381.4 352.2h0M95.2 260.0h0M368.0 216.5h0M143.2 182.9h0M274.2 150.6h0M391.6 298.1h0M280.7 152.1h0M355.8 394.8h0M158.8 171.4h0M390.3 316.3h0M391.5 303.3h0M129.8 399.1h0M391.5 299.8h0M246.9 447.9h0M111.6 374.6h0M173.4 432.1h0M319.5 169.1h0M90.5 304.2h0M256.8 447.2h0M95.7 337.5h0M305.1 161.3h0M349.4 402.2h0M101.4 241.0h0M177.5 434.0h0M171.4 163.9h0M131.3 194.2h0M377.7 360.6h0M319.7 169.2h0M365.7 212.9h0M259.3 148.1h0M155.4 421.3h0M336.9 181.5h0M315.8 166.7h0M379.6 238.6h0M106.5 229.8h0M256.4 447.4h0M362.7 386.2h0M301.4 435.5h0M214.7 445.7h0M142.9 183.2h0M332.2 177.6h0M278.7 443.4h0M314.1 429.2h0M331.8 417.6h0M152.3 419.1h0M157.2 172.2h0M270.1 445.2h0M93.0 269.5h0M366.0 381.3h0M119.8 208.1h0M262.5 148.5h0M113.5 217.4h0M160.2 424.7h0M121.5 389.4h0M95.2 259.8h0M391.3 285.8h0M94.7 261.3h0M143.6 182.5h0M389.2 269.8h0M272.6 444.8h0M101.1 353.4h0M270.6 149.9h0M203.3 151.7h0M106.0 364.3h0M217.3 148.7h0M391.7 296.5h0M227.9 447.6h0M90.4 301.7h0M98.5 346.7h0M389.6 321.9h0M93.5 267.0h0M359.8 390.0h0M377.1 362.1h0M99.7 349.4h0M90.4 297.4h0M125.9 394.6h0M390.5 314.9h0M389.2 269.4h0M151.0 418.5h0M233.9 146.8h0M284.0 152.9h0M342.3 409.1h0M138.5 408.1h0M127.6 397.0h0M100.9 353.8h0M387.9 263.1h0M116.0 212.9h0M164.6 427.7h0M386.4 257.8h0M109.8 223.1h0M236.3 146.8h0M147.0 179.5h0M372.3 223.3h0M216.8 446.4h0M266.8 446.2h0M90.7 309.9h0M353.9 397.8h0M283.8 152.9h0M111.5 374.8h0M206.0 150.7h0M352.8 398.9h0M147.0 415.6h0M92.4 324.2h0M91.5 318.3h0M329.1 419.9h0M384.5 344.0h0M347.4 190.6h0M339.5 183.2h0M91.4 316.1h0M358.6 392.1h0M374.0 226.4h0M90.3 289.0h0M337.8 181.8h0M115.9 212.9h0M345.5 188.8h0M250.3 448.0h0M90.7 286.0h0M94.8 334.8h0M336.5 414.3h0M94.2 262.3h0M316.6 167.0h0M374.4 226.8h0M378.1 360.9h0M97.6 344.2h0M235.1 146.8h0M338.3 413.0h0M388.7 266.9h0M97.2 343.4h0M95.9 338.4h0M274.6 150.4h0M213.2 445.7h0M391.6 308.6h0M365.8 382.3h0M107.1 367.2h0M266.2 446.4h0M262.2 447.0h0M370.2 375.3h0M125.7 394.6h0M148.6 416.9h0M388.4 329.7h0M94.7 260.5h0M108.8 225.0h0M170.5 430.9h0M186.6 156.7h0M359.5 390.8h0M228.3 447.7h0M389.0 267.8h0M340.5 183.9h0M280.2 151.9h0M92.3 323.3h0M118.3 209.5h0M273.1 444.8h0M125.1 201.0h0M335.6 179.9h0M391.5 306.8h0M229.5 448.1h0M341.9 185.5h0M281.1 152.2h0M101.4 239.9h0M391.8 303.1h0M127.0 198.6h0M90.9 281.2h0M266.8 446.0h0M373.5 369.8h0M240.2 448.3h0M96.4 254.0h0M388.0 263.5h0M251.8 448.0h0M333.8 178.5h0M102.7 357.8h0M391.4 285.4h0M304.2 434.5h0M175.6 433.5h0M206.2 150.7h0M90.4 290.3h0M118.4 209.6h0M93.2 328.3h0M204.6 444.0h0M90.5 288.0h0M266.2 446.3h0M90.1 297.9h0M237.6 448.3h0M364.3 210.3h0M242.9 448.5h0M138.9 186.6h0M334.4 179.1h0M162.6 426.5h0M179.3 159.8h0M141.3 410.6h0M177.3 160.6h0M361.2 388.7h0M234.8 448.2h0M144.9 181.4h0M375.1 228.4h0M372.5 223.5h0M91.0 280.9h0M94.0 331.1h0M90.5 309.1h0M149.6 417.4h0M133.4 191.8h0M91.9 320.5h0M252.8 147.0h0M389.0 326.4h0M117.1 211.3h0M90.1 297.1h0M97.1 342.6h0M119.9 207.3h0M348.0 403.7h0M96.0 255.4h0M200.4 152.3h0M340.9 184.3h0M294.1 156.2h0M94.2 331.8h0M159.0 424.2h0M341.2 184.8h0M391.8 304.6h0M99.9 244.4h0M129.5 195.7h0M360.2 390.2h0M303.8 434.7h0M330.2 419.1h0M385.6 340.7h0M149.6 177.4h0M258.1 147.5h0M343.4 186.9h0M379.9 238.6h0M372.6 371.2h0M311.0 431.2h0M94.6 260.7h0M90.2 304.6h0M162.0 169.0h0M94.8 334.9h0M108.7 369.8h0M261.4 447.0h0M91.0 312.6h0M378.9 358.9h0M389.4 270.7h0M261.7 148.1h0M370.4 374.9h0M343.9 187.2h0M385.1 342.4h0M131.6 193.6h0M164.0 167.8h0M302.6 435.2h0M345.1 406.8h0M330.9 176.4h0M90.5 287.0h0M90.2 304.6h0M98.2 248.9h0M151.2 418.6h0M391.7 293.5h0M155.2 173.3h0M333.5 178.4h0M291.8 155.5h0M121.7 205.0h0M224.5 447.5h0M95.4 257.6h0M321.7 169.9h0M113.3 377.8h0M374.5 367.7h0M181.5 158.5h0M96.0 255.1h0M377.9 361.7h0M182.2 158.3h0M89.9 300.0h0M266.5 446.4h0M159.2 424.6h0M364.4 210.1h0M215.9 446.6h0M360.8 389.6h0M375.8 365.7h0M386.6 257.1h0M141.9 411.6h0M378.3 234.5h0M325.9 172.6h0M378.3 360.9h0M149.2 177.3h0M106.3 365.9h0M92.0 272.1h0M360.6 205.0h0M391.9 305.8h0M150.3 176.5h0M376.0 365.5h0M362.4 207.7h0M92.1 323.3h0M292.2 439.8h0M381.0 354.5h0M230.3 146.7h0M250.3 146.7h0M310.6 163.2h0M384.0 248.4h0M96.5 253.0h0M293.4 155.7h0M167.2 165.6h0M161.4 425.9h0M336.5 180.4h0M202.8 443.8h0M381.9 352.4h0M170.1 430.9h0M384.6 250.8h0M125.6 395.1h0M93.0 266.5h0M100.5 353.2h0M386.7 257.3h0M91.9 273.5h0M336.5 414.6h0M90.1 291.2h0M103.4 360.1h0M379.6 237.5h0M353.9 197.1h0M152.0 175.5h0M231.2 448.2h0M246.1 146.5h0M109.4 371.7h0M91.2 277.9h0M385.6 253.6h0M342.6 409.3h0M151.2 419.0h0M387.5 334.6h0M141.5 411.3h0M194.2 441.3h0M178.9 435.2h0M211.8 445.8h0M112.5 377.2h0M202.0 443.6h0M99.5 244.5h0M154.0 173.8h0M370.6 375.1h0M332.3 417.8h0M302.4 435.5h0M159.3 424.7h0M256.2 448.0h0M302.8 435.3h0M178.5 160.0h0M239.8 448.6h0M172.9 162.5h0M123.3 202.8h0M100.1 352.3h0M141.5 411.1h0M135.1 405.5h0M369.4 377.2h0M340.4 183.6h0M136.2 406.3h0M238.8 448.6h0M345.4 406.7h0M90.1 288.6h0M388.1 262.2h0M383.1 245.9h0M390.4 320.7h0M390.3 274.7h0M128.1 196.9h0M101.8 356.4h0M333.1 417.3h0M217.6 446.8h0M344.6 187.6h0M348.7 191.4h0M107.2 227.4h0M314.4 165.5h0M150.5 176.6h0M171.8 431.9h0M90.5 310.1h0M303.7 160.0h0M300.6 436.3h0M289.9 154.6h0M140.4 184.8h0M372.3 372.0h0M89.9 300.4h0M92.1 323.0h0M123.8 393.0h0M108.4 370.0h0M386.6 338.1h0M108.3 225.0h0M208.6 445.1h0M379.1 236.4h0M131.8 402.1h0M98.0 248.5h0M388.8 328.8h0M319.8 426.5h0M391.3 313.7h0M318.5 427.1h0M126.2 199.1h0M160.0 169.7h0M391.6 310.0h0M90.1 308.1h0M387.0 336.9h0M91.5 320.3h0M115.5 381.6h0M109.1 224.0h0M195.8 153.4h0M185.3 157.1h0M205.0 150.7h0M198.5 442.6h0M120.3 388.5h0M309.8 162.9h0M118.7 208.6h0M367.5 214.9h0M384.8 250.7h0M307.0 161.6h0M321.8 169.7h0M95.9 340.1h0M283.7 152.6h0M94.5 260.3h0M389.2 327.5h0M93.7 330.7h0M323.7 171.1h0M352.5 195.6h0M341.6 410.2h0M174.6 161.7h0M116.7 211.6h0M384.3 249.5h0M94.5 260.3h0M112.5 377.0h0M356.5 395.0h0M377.2 231.9h0M95.3 257.2h0M364.5 384.5h0M94.5 260.6h0M341.8 184.8h0M240.2 146.5h0M91.0 316.5h0M299.6 436.9h0M90.5 284.0h0M97.6 345.3h0M342.3 185.4h0M108.8 370.6h0M90.8 313.6h0M143.4 412.9h0M90.0 303.8h0M387.8 262.1h0M96.1 254.7h0M281.6 443.2h0M282.8 442.6h0M330.7 176.0h0M387.1 337.0h0M90.0 287.0h0M188.5 439.4h0M98.6 349.2h0M117.3 210.4h0M90.9 278.6h0M369.5 377.6h0M185.8 438.4h0M127.9 196.8h0M122.6 203.0h0M300.6 436.5h0M297.1 156.8h0M109.9 372.9h0M92.8 328.3h0M100.1 242.0h0M255.1 146.7h0M129.9 194.8h0M91.6 321.9h0M165.6 166.2h0M320.7 168.9h0M182.6 437.1h0M391.8 283.5h0M385.5 252.6h0M386.3 255.6h0M388.7 330.5h0M321.0 426.1h0M392.3 304.2h0M146.4 415.5h0M92.2 324.8h0M230.1 146.6h0M388.8 264.7h0M313.0 430.8h0M360.6 204.5h0M91.8 272.1h0M175.7 434.0h0M291.3 440.2h0M172.7 432.6h0M105.3 230.3h0M370.2 376.6h0M89.7 290.2h0M252.0 448.5h0M115.2 381.8h0M110.3 221.1h0M193.6 441.2h0M391.7 312.7h0M95.7 254.9h0M168.9 430.7h0M91.2 319.4h0M376.8 364.5h0M231.9 448.6h0M232.0 448.6h0M258.5 447.8h0M141.9 412.0h0M227.1 146.7h0M98.3 247.1h0M379.0 235.6h0M356.1 395.9h0M89.7 302.1h0M203.9 444.3h0M132.3 192.0h0M304.3 160.1h0M190.3 440.2h0M337.7 180.9h0M377.9 362.3h0M242.6 449.0h0M182.3 157.9h0M364.5 210.0h0M392.4 292.1h0M105.3 230.2h0M168.5 164.6h0M89.7 298.6h0M273.3 445.4h0M325.7 172.1h0M191.8 154.2h0M89.9 287.9h0M165.1 166.5h0M99.1 349.9h0M282.6 443.2h0M374.8 368.3h0M308.9 162.3h0M286.7 153.3h0M343.4 185.9h0M378.5 234.4h0M97.0 343.9h0M95.4 255.7h0M357.4 394.3h0M227.1 448.1h0M308.8 162.3h0M387.0 257.6h0M295.2 438.9h0M178.3 435.3h0M375.5 367.0h0M276.1 150.2h0M185.8 156.5h0M346.2 406.3h0M231.4 146.5h0M341.3 410.9h0M91.5 321.1h0M386.3 339.5h0M341.9 410.3h0M345.6 407.1h0M282.9 152.0h0M94.9 258.0h0M128.7 195.8h0M390.6 274.7h0M386.4 255.6h0M107.7 369.1h0M153.5 174.0h0M184.5 157.0h0M392.0 288.3h0M89.7 291.6h0M359.3 392.0h0M274.8 149.9h0M170.5 163.5h0M91.1 318.0h0M123.2 202.5h0M95.4 338.9h0M112.3 217.7h0M210.6 445.9h0M301.6 436.2h0M329.4 174.8h0M347.5 405.2h0M365.7 211.8h0M391.1 277.0h0M190.9 440.5h0M241.3 448.8h0M391.7 312.0h0M91.9 323.1h0M326.4 422.5h0M167.9 429.9h0M349.8 402.6h0M287.5 153.5h0M387.1 337.7h0M325.0 171.5h0M194.4 441.5h0M373.1 371.6h0M386.2 255.0h0M371.4 220.7h0M385.9 341.4h0M149.3 177.2h0M164.9 166.8h0M258.6 447.9h0M276.8 444.6h0M137.7 186.7h0M131.6 192.8h0M355.2 198.3h0M90.2 283.3h0M89.8 304.8h0M92.8 266.2h0M90.5 282.1h0M392.2 302.2h0M344.9 187.4h0M279.4 444.0h0M109.9 221.8h0M94.4 335.1h0M183.8 157.4h0M90.3 282.6h0M176.5 160.5h0M232.4 448.5h0M148.9 417.6h0M199.2 443.0h0M225.9 146.8h0M194.2 153.6h0M322.5 425.2h0M387.4 258.7h0M349.6 192.1h0M176.5 434.5h0M293.6 155.4h0M151.7 420.0h0M220.3 147.3h0M372.3 221.5h0M309.2 433.0h0M392.4 304.1h0M159.6 425.3h0M91.2 320.1h0M154.3 173.2h0M243.9 449.1h0M169.6 431.3h0M320.9 168.7h0M350.4 192.5h0M227.8 448.5h0M332.9 418.1h0M154.4 172.9h0M384.7 345.8h0M106.7 367.7h0M334.1 417.3h0M374.9 368.7h0M238.3 145.8h0M240.3 145.8h0M249.3 448.8h0M97.3 249.4h0M298.2 437.8h0M373.8 224.6h0M207.2 445.4h0M322.8 425.3h0M129.7 400.3h0M364.5 385.6h0M95.1 256.0h0M162.5 427.3h0M364.2 385.7h0M89.5 290.8h0M289.0 441.4h0M277.3 444.7h0M197.0 152.3h0M217.9 147.7h0M92.8 329.2h0M254.9 146.6h0M179.7 158.7h0M387.1 337.8h0M189.3 154.9h0M320.9 168.8h0M143.3 413.6h0M152.7 174.3h0M151.5 175.0h0M258.9 146.9h0M389.4 328.6h0M111.0 375.6h0M121.7 391.0h0M183.5 437.7h0M355.1 197.5h0M326.7 172.4h0M90.2 282.5h0M270.5 148.7h0M315.7 429.4h0M123.6 201.3h0M155.0 422.4h0M104.1 232.6h0M357.9 200.9h0M246.3 145.9h0M243.8 145.9h0M392.5 293.9h0M116.9 210.4h0M368.4 379.6h0M218.5 147.5h0M236.5 449.1h0M258.2 146.9h0M368.9 215.9h0M264.7 147.8h0M133.9 190.3h0M376.5 365.6h0M166.3 165.6h0M375.2 368.2h0M283.6 152.0h0M359.3 202.8h0M157.7 424.3h0M333.6 417.5h0M108.7 371.5h0M380.9 238.9h0M386.1 253.5h0M157.8 170.8h0M108.9 371.6h0M343.2 409.3h0M355.1 397.4h0M91.4 272.9h0M389.9 326.3h0M173.6 161.8h0M367.8 380.5h0M135.5 406.4h0M385.9 342.5h0M376.2 366.0h0M388.0 260.3h0M356.6 395.7h0M145.9 415.6h0M200.5 151.3h0M234.7 449.0h0M91.5 272.2h0M101.6 238.0h0M107.9 369.9h0M118.7 387.4h0M244.4 145.9h0M228.1 146.3h0M204.9 150.3h0M128.6 195.8h0M294.5 439.2h0M150.3 418.9h0M391.4 317.3h0M368.2 380.2h0M385.0 249.7h0M322.6 169.7h0M97.3 346.3h0M389.1 330.4h0M150.4 175.8h0M330.7 419.8h0M91.1 275.6h0M182.8 157.4h0M103.0 234.8h0M238.1 449.2h0M388.1 260.5h0M99.9 353.1h0M92.5 328.2h0M376.2 366.0h0M311.0 431.9h0M142.7 413.1h0M101.0 238.9h0M361.8 205.7h0M97.2 345.8h0M101.6 238.0h0M312.7 164.0h0M142.0 182.8h0M108.1 370.4h0M391.7 280.8h0M146.3 416.1h0M386.9 255.9h0M101.3 238.5h0M278.0 150.5h0M252.5 146.3h0M132.7 191.2h0M96.4 251.7h0M94.4 336.0h0M305.0 434.9h0M130.2 401.2h0M101.9 357.6h0M122.5 203.1h0M271.8 445.9h0M376.3 229.0h0M208.0 149.6h0M89.9 309.9h0M392.2 308.1h0M91.0 275.4h0M392.5 291.8h0M326.7 172.5h0M282.9 151.7h0M89.4 298.1h0M353.2 399.7h0M392.1 309.8h0M95.8 341.3h0M378.6 233.6h0M89.4 301.3h0M243.9 145.8h0M316.0 429.6h0M387.6 337.7h0M90.8 319.2h0M338.9 413.8h0M279.8 150.7h0M378.0 232.1h0M252.5 448.8h0M328.8 173.6h0M171.2 162.7h0M391.0 273.0h0M385.3 345.0h0M271.1 446.4h0M247.6 449.1h0M105.6 228.5h0M207.3 445.5h0M376.7 229.6h0M91.3 323.8h0M391.5 276.6h0M236.9 449.2h0M135.8 188.0h0M90.1 280.0h0M91.7 269.4h0M166.7 165.1h0M385.6 344.4h0M338.1 414.3h0M102.9 360.9h0M167.4 164.5h0M107.6 224.6h0M390.9 273.2h0M161.3 426.9h0M374.7 225.7h0M375.5 227.2h0M160.8 168.4h0M122.2 202.6h0M115.8 211.4h0M374.6 369.6h0M96.1 343.2h0M99.5 242.5h0M229.3 448.9h0M129.1 194.7h0M303.0 158.8h0M96.2 343.3h0M146.1 416.1h0M354.6 196.6h0M204.5 150.1h0M392.6 305.0h0M266.0 147.6h0M392.8 292.7h0M175.4 434.6h0M325.4 171.2h0M370.1 217.6h0M217.9 447.6h0M91.6 270.4h0M199.2 443.5h0M137.7 186.3h0M189.8 154.5h0M336.1 179.1h0M345.4 407.6h0M98.0 246.6h0M262.3 447.9h0M392.8 300.9h0M388.5 262.0h0M378.8 361.7h0M89.3 289.7h0M322.8 169.5h0M382.6 242.4h0M371.9 220.3h0M307.6 161.1h0M374.4 225.0h0M389.6 265.6h0M123.4 393.7h0M271.9 148.8h0M93.8 260.5h0M210.6 148.7h0M121.7 203.6h0M129.2 400.4h0M365.8 210.9h0M91.2 272.7h0M321.3 168.6h0M206.9 445.4h0M153.5 173.4h0M391.4 277.0h0M222.4 146.8h0M390.6 323.4h0M104.2 231.5h0M391.6 278.5h0M94.1 336.1h0M244.3 449.2h0M151.4 174.9h0M89.9 311.7h0M101.6 237.4h0M90.0 280.5h0M132.1 191.6h0M157.0 171.1h0M249.7 145.9h0M150.4 419.6h0M260.1 448.3h0M392.8 302.8h0M97.7 348.0h0M89.2 299.7h0M260.0 448.1h0M135.0 188.7h0M221.5 448.0h0M209.8 446.3h0M107.1 226.0h0M384.7 248.4h0M345.7 407.7h0M313.3 431.0h0M208.9 445.9h0M355.3 197.4h0M390.7 322.3h0M185.2 438.6h0M102.9 360.6h0M219.4 147.2h0M391.5 276.1h0M146.6 178.6h0M124.3 200.4h0M355.0 197.0h0M317.4 428.7h0M191.6 153.8h0M379.6 359.9h0M391.3 319.3h0M283.1 151.5h0M392.8 300.2h0M392.9 295.9h0M139.8 410.8h0M298.6 157.0h0M140.5 411.5h0M392.8 294.1h0M99.0 351.3h0M217.1 147.6h0M91.8 326.7h0M117.8 386.5h0M289.9 153.7h0M245.9 145.6h0M311.9 163.1h0M386.5 253.6h0M125.4 396.0h0M91.4 272.0h0M392.8 297.8h0M187.3 439.7h0M392.2 312.5h0M272.9 149.1h0M170.2 163.1h0M368.5 379.9h0M251.7 145.9h0M100.5 239.8h0M89.1 302.9h0M89.8 312.2h0M227.2 146.2h0M266.0 147.7h0M170.9 162.8h0M363.4 207.6h0M267.3 147.8h0M150.7 419.6h0M120.6 204.5h0M95.1 254.8h0M381.0 357.2h0M104.2 230.8h0M215.2 147.4h0M243.9 145.3h0M353.2 400.2h0M350.1 191.4h0M271.8 446.5h0M89.5 283.7h0M89.2 307.5h0M392.0 279.0h0M391.5 275.0h0M308.0 434.2h0M129.3 400.9h0M100.6 238.8h0M193.3 442.0h0M137.1 408.7h0M88.9 303.6h0M393.1 294.2h0M393.0 302.1h0M90.6 273.8h0M314.7 164.4h0M126.2 397.5h0M123.4 394.2h0M315.8 165.0h0M107.8 370.9h0M157.8 424.8h0M328.7 173.2h0M392.7 287.3h0M99.3 242.0h0M194.3 442.3h0M348.0 189.3h0M88.9 298.2h0M240.3 449.6h0M145.6 178.9h0M144.2 180.1h0M393.0 301.1h0M105.6 228.3h0M94.2 258.0h0M229.0 449.1h0M143.4 414.3h0M240.5 145.3h0M390.1 327.6h0M96.7 249.1h0M181.0 157.7h0M367.9 213.6h0M390.0 267.7h0M113.9 381.2h0M361.5 204.5h0M392.9 306.7h0M111.4 377.3h0M314.6 164.3h0M326.0 171.4h0M239.8 449.6h0M360.2 391.9h0M91.4 270.0h0M312.7 431.8h0M134.8 406.4h0M148.7 418.4h0M330.2 420.8h0M107.7 224.5h0M342.5 410.9h0M166.8 164.9h0M376.7 229.1h0M322.2 426.2h0M383.9 349.6h0M150.2 419.4h0M369.3 215.6h0M142.1 181.8h0M89.2 287.1h0M88.9 300.7h0M319.9 167.5h0M114.8 382.4h0M389.3 263.3h0M102.1 359.5h0M278.8 444.8h0M278.4 150.1h0M90.5 318.9h0M106.9 225.8h0M354.8 398.5h0M299.2 438.1h0M174.3 160.7h0M259.5 448.4h0M169.1 431.5h0M348.0 189.2h0M121.4 391.6h0M286.9 442.5h0M385.9 251.3h0M121.3 391.2h0M326.5 171.7h0M89.4 309.6h0M185.6 156.0h0M288.8 153.1h0M235.4 145.4h0M240.1 449.6h0M385.9 343.8h0M213.0 147.9h0M143.0 413.9h0M97.8 246.5h0M353.5 400.0h0M181.1 157.8h0M280.3 150.5h0M392.2 280.6h0M175.0 434.7h0M111.0 218.5h0M303.9 159.0h0M304.5 159.2h0M89.0 292.9h0M109.3 221.3h0M298.9 157.0h0M323.3 425.4h0M98.3 244.6h0M231.3 145.6h0M371.5 219.3h0M165.1 429.2h0M141.3 182.7h0M390.7 324.4h0M310.5 432.7h0M94.8 339.6h0M392.7 309.2h0M237.7 449.6h0M383.5 350.5h0M117.5 386.2h0M92.9 332.0h0M226.7 146.1h0M173.0 433.7h0M389.4 264.5h0M151.6 174.5h0M89.7 313.7h0M332.5 419.1h0M368.0 213.6h0M329.8 173.8h0M89.3 286.3h0M130.2 401.8h0M390.1 327.3h0M337.5 415.0h0M185.8 439.4h0M391.1 273.3h0M101.8 358.9h0M140.3 411.4h0M385.2 249.2h0M390.9 271.6h0M386.4 342.2h0M376.6 366.7h0M115.3 211.7h0M317.7 166.2h0M392.3 281.8h0M383.7 244.9h0M132.6 404.3h0M220.0 146.5h0M391.8 319.7h0M252.2 145.5h0M366.9 383.3h0M94.6 255.8h0M328.8 173.1h0M393.3 293.2h0M103.8 363.9h0M104.6 365.3h0M339.2 180.9h0M172.1 433.5h0M163.2 166.6h0M149.4 175.7h0M299.0 156.5h0M307.2 160.2h0M384.6 246.9h0M367.4 382.7h0M144.9 179.4h0M381.6 238.9h0M89.3 311.0h0M382.7 241.5h0M359.6 202.0h0M102.7 233.4h0M354.5 195.7h0M94.8 254.4h0M269.0 447.2h0M354.1 399.6h0M153.8 422.5h0M308.2 160.8h0M238.7 145.1h0M92.5 263.3h0M377.3 229.1h0M375.1 370.0h0M387.2 340.6h0M158.6 169.5h0M244.3 145.2h0M318.4 428.8h0M393.5 295.8h0M392.5 280.4h0M90.7 323.1h0M382.2 239.9h0M372.8 374.0h0M197.5 151.5h0M317.3 429.4h0M337.4 415.5h0M364.8 386.3h0M276.1 445.8h0M360.2 392.6h0M146.4 178.0h0M134.8 188.4h0M127.2 196.2h0M90.3 319.6h0M128.7 194.4h0M164.2 429.0h0M385.1 347.4h0M89.2 284.8h0M393.3 300.0h0M324.3 170.0h0M201.5 444.7h0M385.2 346.7h0M313.3 163.5h0M290.8 441.6h0M376.0 368.1h0M90.0 277.4h0M88.7 291.9h0M393.5 295.8h0M387.8 338.5h0M169.8 162.9h0M363.8 207.4h0M384.1 349.4h0M114.0 381.9h0M115.6 210.9h0M163.0 428.3h0M229.3 145.6h0M189.1 154.2h0M93.1 334.0h0M310.7 433.1h0M127.2 196.2h0M391.6 321.7h0M93.1 334.2h0M323.0 169.1h0M116.8 209.3h0M246.2 145.3h0M109.4 374.4h0M255.0 145.9h0M100.6 238.2h0M385.7 249.5h0M184.6 156.0h0M225.8 449.2h0M181.7 438.0h0M108.5 222.1h0M355.0 196.2h0M136.2 408.2h0M110.9 218.1h0M109.1 374.0h0M272.6 446.7h0M334.3 417.9h0M202.4 444.8h0M103.1 232.8h0M120.2 390.4h0M94.8 254.2h0M372.0 375.4h0M392.0 317.7h0M330.4 174.2h0M115.6 211.1h0M169.8 162.8h0M314.1 163.7h0M390.0 265.0h0M392.9 286.1h0M214.4 447.6h0M90.3 275.0h0M364.9 386.4h0M167.9 163.7h0M113.9 381.6h0M114.5 382.5h0M98.3 351.2h0M349.6 190.6h0M392.2 315.4h0M294.1 440.4h0M115.0 383.3h0M392.9 309.2h0M117.6 208.1h0M392.9 308.4h0M352.7 193.9h0M234.8 449.8h0M109.1 373.8h0M207.8 446.3h0M88.7 293.9h0M103.5 363.0h0M88.6 293.1h0M152.3 421.3h0M258.5 448.9h0M99.2 241.8h0M303.4 436.5h0M380.7 358.5h0M367.1 383.2h0M94.7 255.0h0M133.9 189.2h0M176.9 435.8h0M288.2 442.3h0M117.0 208.8h0M123.9 395.1h0M185.0 155.8h0M371.3 218.5h0M156.8 424.4h0M368.1 213.3h0M276.7 149.1h0M143.5 180.2h0M187.9 154.5h0M299.9 438.2h0M215.8 147.0h0M371.3 218.0h0M380.9 358.5h0M234.9 450.1h0M88.7 308.0h0M390.8 326.8h0M239.2 145.0h0M353.4 194.2h0M91.7 265.3h0M393.7 299.9h0M91.8 265.5h0M346.1 187.0h0M107.5 223.7h0M128.6 400.7h0M203.5 445.4h0M165.1 165.2h0M374.4 371.6h0M360.9 392.1h0M211.1 447.1h0M88.7 306.8h0M363.9 388.2h0M132.6 190.1h0M147.3 417.9h0M356.8 198.1h0M89.5 316.8h0M145.4 416.3h0M101.1 358.8h0M142.9 180.6h0M149.9 175.2h0M356.9 396.8h0M335.3 177.5h0M91.2 268.8h0M96.7 247.9h0M155.9 424.2h0M187.2 154.6h0M163.4 429.1h0M139.7 411.6h0M138.4 410.6h0M308.7 434.3h0M222.2 449.0h0M138.9 411.1h0M101.5 235.3h0M96.2 249.4h0M187.9 154.3h0M101.4 235.6h0M338.3 415.1h0M143.8 179.7h0M190.3 441.5h0M90.5 271.6h0M393.4 289.7h0M175.0 159.8h0M190.3 153.5h0M387.6 255.3h0M168.5 163.1h0M88.4 296.9h0M358.0 199.6h0M114.5 211.9h0M291.5 153.5h0M117.5 386.9h0M122.2 201.8h0M121.7 202.4h0M111.7 378.8h0M393.0 310.0h0M91.3 327.6h0M390.9 326.1h0M393.5 298.1h0M387.0 342.3h0M90.6 323.0h0M267.4 447.8h0M143.1 180.3h0M368.1 382.2h0M362.8 389.3h0M275.9 446.0h0M294.7 154.7h0M236.0 145.0h0M284.8 151.2h0M110.5 218.6h0M138.1 184.7h0M104.8 366.4h0M91.7 265.5h0M88.5 301.5h0M299.7 438.4h0M318.1 165.8h0M393.3 307.5h0M256.6 145.7h0M88.6 292.3h0M91.8 265.0h0M392.7 313.8h0M317.6 429.6h0M90.1 274.2h0M357.4 396.3h0M239.0 144.8h0M302.0 437.5h0M130.7 403.1h0M192.2 152.8h0M385.4 248.1h0M91.7 328.9h0M329.7 421.8h0M165.6 430.3h0M334.6 418.2h0M112.5 215.3h0M99.2 353.7h0M216.4 146.9h0M181.4 156.9h0M386.9 342.1h0M374.1 372.2h0M95.0 252.9h0M304.4 158.6h0M312.3 162.5h0M202.3 445.1h0M197.1 151.4h0M138.2 184.6h0M94.4 340.0h0M132.1 404.5h0M386.4 251.5h0M362.4 204.9h0M100.2 356.8h0M88.6 304.5h0M125.0 396.7h0M241.0 450.2h0M277.0 446.0h0M314.3 163.7h0M217.1 146.8h0M112.6 380.0h0M244.3 450.1h0M383.3 242.0h0M323.6 426.0h0M99.1 353.5h0M95.0 253.0h0M393.3 285.6h0M230.2 449.8h0M381.0 358.3h0M242.2 144.9h0M301.5 437.6h0M362.2 204.7h0M358.6 394.8h0M261.0 449.0h0M107.8 372.6h0M350.8 191.2h0M96.1 345.9h0M187.8 440.9h0M149.9 174.7h0M135.7 186.8h0M315.6 164.1h0M218.7 146.2h0M191.2 152.9h0M332.5 419.9h0M171.2 433.5h0M259.3 145.8h0M89.3 316.5h0M380.8 359.5h0M209.6 148.0h0M344.8 185.5h0M390.6 266.0h0M112.8 381.0h0M101.1 359.1h0M92.4 333.9h0M393.7 289.0h0M88.6 284.5h0M88.2 303.3h0M106.9 370.9h0M393.5 285.2h0M98.4 242.5h0M101.0 236.4h0M248.3 450.3h0M236.5 450.4h0M210.4 447.3h0M265.1 146.5h0M323.0 168.6h0M246.6 450.3h0M97.0 246.2h0M307.8 435.1h0M258.9 449.2h0M115.6 385.0h0M219.1 146.1h0M111.7 216.0h0M122.9 200.6h0M254.0 449.9h0M339.4 414.5h0M94.9 252.2h0M166.2 164.1h0M224.1 145.6h0M130.5 403.2h0M250.8 144.9h0M271.4 447.4h0M370.0 215.2h0M378.0 229.6h0M155.4 424.3h0M246.7 450.2h0M335.1 418.0h0M223.9 145.6h0M124.5 198.7h0M203.0 149.4h0M89.6 318.1h0M393.1 312.6h0M138.7 411.3h0M381.1 236.4h0M93.2 258.5h0M111.1 378.0h0M310.0 161.0h0M372.5 219.4h0M385.6 347.0h0M151.6 173.6h0M136.9 409.5h0M269.7 447.7h0M108.3 373.4h0M265.5 146.7h0M288.4 152.3h0M99.9 356.5h0M283.6 444.3h0M190.4 153.3h0M99.9 238.8h0M225.5 449.5h0M252.9 145.2h0M328.8 422.6h0M327.7 423.5h0M325.2 425.0h0M267.4 146.9h0M377.1 228.0h0M315.6 164.0h0M100.0 356.6h0M229.1 449.8h0M207.6 446.8h0M317.6 165.1h0M338.1 415.7h0M317.7 165.3h0M246.0 450.2h0M91.6 265.6h0M277.4 446.0h0M138.5 184.2h0M275.3 148.6h0M106.9 371.1h0M103.1 231.8h0M361.8 391.2h0M98.6 241.8h0M243.7 450.3h0M373.5 221.1h0M109.7 219.3h0M91.8 330.7h0M189.1 441.3h0M93.4 257.7h0M353.2 401.1h0M332.6 419.9h0M113.6 213.0h0M355.9 196.6h0M261.6 146.0h0M347.6 188.1h0M112.5 214.4h0M95.5 250.2h0M322.6 426.7h0M206.1 148.7h0M361.2 202.9h0M384.8 245.7h0M392.8 315.4h0M93.2 258.7h0M256.9 449.6h0M214.9 147.0h0M332.2 174.9h0M341.5 412.7h0M262.3 146.1h0M387.9 255.6h0M331.9 420.2h0M172.9 160.6h0M376.5 226.7h0M387.5 341.1h0M150.0 420.3h0M119.9 390.7h0M207.4 446.7h0M101.6 234.6h0M371.0 217.2h0M193.2 442.7h0M194.6 151.9h0M139.6 412.3h0M114.7 211.1h0M95.6 249.7h0M394.2 298.8h0M305.2 158.6h0M371.7 377.5h0M104.1 365.9h0M185.5 440.3h0M369.9 380.3h0M384.5 351.1h0M391.7 270.5h0M372.2 218.4h0M388.1 255.0h0M217.6 448.9h0M374.1 221.7h0M122.1 393.9h0M103.9 229.2h0M101.0 359.7h0M316.9 430.4h0M349.1 189.1h0M362.7 204.7h0M102.5 232.0h0M394.1 298.9h0M313.1 162.5h0M390.0 261.7h0M382.1 238.2h0M137.7 410.5h0M305.9 158.7h0M206.6 446.8h0M303.6 437.1h0M295.6 440.5h0M180.5 438.2h0M350.6 190.7h0M394.1 300.5h0M96.0 248.7h0M97.8 243.6h0M90.8 326.8h0M92.6 259.5h0M321.8 167.5h0M300.8 156.4h0M391.8 270.3h0M93.6 256.2h0M275.8 148.4h0M263.6 448.9h0M93.8 255.4h0M162.2 429.0h0M124.4 396.6h0M367.3 384.3h0M116.9 207.8h0M169.5 433.0h0M387.4 252.5h0M100.3 236.7h0M151.2 173.5h0M176.0 158.8h0M126.3 399.0h0M149.7 420.5h0M364.9 387.4h0M314.6 431.8h0M195.9 443.8h0M108.5 374.2h0M89.9 272.2h0M116.8 387.1h0M301.0 156.6h0M88.3 285.6h0M301.6 438.1h0M370.6 378.9h0M389.1 336.1h0M103.7 229.7h0M246.6 144.6h0M131.9 190.1h0M283.2 150.3h0M352.1 403.0h0M226.9 450.0h0M135.7 408.8h0M390.6 329.7h0M353.3 401.8h0M379.8 233.1h0M111.5 379.0h0M176.0 158.9h0M392.2 273.1h0M373.0 375.0h0M394.0 302.3h0M129.6 192.5h0M365.3 387.0h0M358.5 199.4h0M117.4 387.9h0M384.6 350.4h0M127.0 195.3h0M88.0 294.9h0M394.2 299.8h0M110.0 376.7h0M227.3 145.0h0M100.8 359.1h0M133.7 188.4h0M379.2 231.6h0M109.5 219.1h0M88.8 314.4h0M161.9 166.4h0M394.1 296.1h0M88.0 302.9h0M301.4 156.7h0M189.8 441.8h0M108.8 374.6h0M101.5 360.6h0M89.1 316.1h0M363.7 389.1h0M203.0 149.1h0M242.2 450.5h0M90.4 324.7h0M110.8 378.1h0M120.0 203.6h0M385.4 348.2h0M377.3 227.7h0M96.7 348.7h0M344.5 410.3h0M255.0 145.0h0M372.6 375.7h0M200.3 149.9h0M116.9 387.3h0M123.1 395.4h0M284.0 444.3h0M198.8 150.2h0M206.3 446.5h0M89.0 315.5h0M375.9 225.3h0M227.6 450.0h0M103.0 231.3h0M211.0 147.2h0M348.4 188.2h0M384.4 351.3h0M107.7 222.2h0M272.4 447.3h0M342.7 182.9h0M194.7 443.8h0M347.7 187.3h0M135.4 186.4h0M367.7 211.2h0M386.4 248.3h0M87.8 290.2h0M149.9 420.8h0M391.7 268.4h0M369.7 213.8h0M159.2 167.8h0M101.8 362.1h0M285.9 150.7h0M143.6 415.9h0M319.9 429.1h0M294.1 441.3h0M369.5 214.0h0M306.7 158.8h0M237.2 144.2h0M97.9 352.8h0M347.6 407.8h0M155.8 424.9h0M158.2 168.4h0M252.9 450.4h0M271.6 147.1h0M268.8 146.6h0M88.1 309.2h0M294.2 153.6h0M88.6 314.4h0M394.0 308.1h0M232.9 144.4h0M96.0 347.5h0M89.9 271.0h0M372.9 375.7h0M262.7 145.6h0M259.8 145.3h0M185.9 154.3h0M391.0 265.3h0M384.2 242.9h0M267.6 146.5h0M366.0 386.5h0M371.0 379.0h0M159.8 427.7h0M219.0 449.3h0M143.8 178.8h0M232.4 144.4h0M290.2 152.3h0M256.3 144.9h0M393.8 283.6h0M91.5 332.0h0M100.9 234.9h0M188.0 441.4h0M304.5 157.8h0M181.2 156.2h0M119.8 391.5h0M150.1 173.9h0M238.7 144.0h0M213.7 448.4h0M270.1 147.0h0M120.2 392.0h0M87.8 302.1h0M214.8 448.7h0M249.6 144.3h0M114.6 210.5h0M171.0 161.1h0M391.1 265.8h0M147.4 419.0h0M132.1 189.3h0M150.7 173.6h0M298.6 439.6h0M91.6 332.6h0M274.7 447.2h0M253.3 450.4h0M115.3 209.5h0M126.3 399.3h0M278.7 446.1h0M182.6 439.4h0M125.5 398.3h0M393.9 286.0h0M115.1 385.1h0M213.3 146.5h0M118.0 389.1h0M329.1 423.0h0M143.5 179.1h0M89.4 320.1h0M118.0 206.0h0M163.6 165.1h0M114.3 384.1h0M375.9 370.4h0M130.3 191.4h0M339.8 414.9h0M372.7 218.7h0M92.3 260.2h0M167.8 432.3h0M213.9 146.6h0M99.5 356.7h0M355.3 399.8h0M198.7 444.9h0M89.5 274.1h0M89.6 272.6h0M166.9 163.2h0M393.3 279.9h0M394.1 305.5h0M189.3 153.1h0M117.5 388.3h0M247.7 450.7h0M341.2 181.3h0M100.1 237.0h0M344.9 410.3h0M90.6 267.0h0M370.5 215.1h0M229.6 450.6h0M297.5 155.0h0M182.2 156.0h0M198.4 150.3h0M371.6 377.6h0M88.3 282.6h0M392.0 270.8h0M264.4 449.2h0M125.6 398.6h0M181.9 439.0h0M191.1 442.5h0M298.4 439.7h0M129.8 403.3h0M298.6 155.3h0M326.0 425.2h0M380.6 233.7h0M167.4 432.4h0M144.4 178.0h0M130.7 404.3h0M93.2 255.3h0M279.8 148.7h0M393.5 278.5h0M369.6 213.5h0M287.2 151.1h0M87.5 297.9h0M379.2 364.5h0M276.9 148.1h0M245.6 451.0h0M89.8 270.1h0M187.5 441.4h0M216.0 449.2h0M94.6 344.0h0M297.0 154.3h0M163.7 164.8h0M381.9 358.4h0M138.8 182.9h0M389.0 338.4h0M301.1 439.0h0M372.8 376.2h0M206.7 447.1h0M155.8 169.6h0M88.1 282.7h0M106.3 223.6h0M131.8 189.6h0M376.8 225.9h0M96.3 246.0h0M96.7 350.0h0M143.8 178.6h0M327.0 170.1h0M93.3 340.1h0M149.6 421.0h0M87.6 289.7h0M385.4 350.2h0M173.1 435.4h0M226.0 450.4h0M87.4 301.2h0M95.6 346.8h0M366.3 386.2h0M374.6 373.6h0M166.7 163.1h0M380.3 233.1h0M390.3 261.5h0M109.4 218.4h0M371.3 379.0h0M240.5 143.9h0M226.1 144.5h0M347.6 408.2h0M87.7 288.6h0M256.3 144.8h0M99.8 237.2h0M320.9 428.7h0M129.1 192.1h0M120.4 202.2h0M348.0 187.2h0M130.1 403.6h0M114.8 210.0h0M375.9 224.1h0M222.6 449.9h0M213.1 146.3h0M133.5 407.2h0M332.4 421.1h0M263.4 449.5h0M378.4 366.3h0M340.3 180.2h0M323.4 427.0h0M305.6 158.0h0M289.3 151.7h0M243.9 451.1h0M108.8 375.9h0M332.2 174.0h0M247.0 451.1h0M178.1 157.4h0M233.7 450.9h0M387.3 250.5h0M239.2 451.0h0M393.9 282.8h0M394.5 305.6h0M340.3 414.8h0M342.1 413.1h0M394.5 291.3h0M137.7 411.4h0M183.6 154.9h0M365.7 208.0h0M393.2 276.9h0M365.2 207.2h0M88.1 282.8h0M87.9 308.8h0M96.8 244.3h0M90.8 264.5h0M343.7 411.9h0M116.5 207.3h0M162.0 429.3h0M300.1 155.7h0M134.7 408.4h0M149.4 174.0h0M393.9 312.6h0M108.7 375.8h0M125.2 398.3h0M323.9 168.3h0M391.2 264.8h0M322.4 427.9h0M394.5 293.2h0M157.0 426.0h0M314.3 432.4h0M128.4 193.1h0M344.1 183.7h0M312.4 433.5h0M89.3 273.7h0M87.4 296.6h0M146.8 418.7h0M373.6 375.1h0M323.8 168.1h0M346.7 409.0h0M374.3 373.9h0M394.3 306.7h0M308.5 435.5h0M352.6 403.0h0M335.1 419.1h0M294.3 153.1h0M107.4 221.2h0M305.3 157.7h0M376.9 369.8h0M338.6 416.5h0M303.5 438.1h0M154.7 170.1h0M170.8 434.5h0M94.7 344.8h0M95.2 248.1h0M256.1 144.3h0M387.0 248.9h0M230.0 143.9h0M337.8 417.2h0M203.6 148.3h0M340.6 180.2h0M165.6 431.7h0M156.7 168.8h0M87.3 302.4h0M115.9 387.0h0M138.2 183.0h0M383.9 354.6h0M197.9 149.7h0M123.9 197.5h0M358.5 198.1h0M138.9 182.3h0M393.0 320.6h0M329.1 171.3h0M278.7 446.7h0M324.5 168.2h0M346.0 410.1h0M281.3 445.9h0M240.2 451.4h0M110.2 378.7h0M108.4 375.5h0M352.6 191.7h0M107.8 374.4h0M390.4 334.3h0M394.4 287.0h0M105.7 371.1h0M370.1 213.5h0M218.1 145.3h0M87.5 286.4h0M117.3 205.8h0M306.4 436.9h0M245.9 143.6h0M330.0 172.0h0M121.7 394.6h0M392.1 268.6h0M329.4 171.6h0M375.9 223.4h0M161.5 165.8h0M355.9 195.0h0M323.3 167.4h0M95.4 247.6h0M88.2 279.7h0M386.2 246.3h0M190.2 442.6h0M325.1 168.8h0M256.1 144.4h0M158.7 427.4h0M349.7 406.6h0M217.1 449.5h0M381.5 360.5h0M233.7 451.2h0M167.7 432.9h0M392.4 325.1h0M138.2 182.9h0M234.9 143.6h0M234.9 143.9h0M287.9 444.0h0M161.6 165.6h0M379.4 364.7h0M384.3 353.8h0M387.8 343.5h0M238.7 143.7h0M394.2 284.2h0M287.8 151.0h0M145.6 176.7h0M339.2 416.0h0M377.1 225.6h0M300.1 439.6h0M235.3 451.2h0M177.9 438.0h0M89.1 273.1h0M278.9 148.5h0M186.6 441.5h0M365.3 207.0h0M254.4 144.1h0M388.5 253.8h0M391.9 328.0h0M191.8 151.6h0M359.8 199.8h0M140.3 181.1h0M276.0 447.2h0M394.4 310.8h0M380.3 362.6h0M340.7 414.7h0M94.1 343.5h0M372.7 217.8h0M296.1 441.3h0M282.9 149.5h0M383.3 239.1h0M133.4 187.5h0M215.1 145.9h0M105.2 369.8h0M313.6 161.8h0M312.4 433.7h0M257.7 144.6h0M209.4 146.9h0M256.6 450.7h0M394.8 302.3h0M117.1 206.4h0M283.9 149.8h0M97.3 352.3h0M268.2 449.0h0M116.3 387.7h0M362.2 392.1h0M308.7 159.3h0M341.4 180.5h0M268.5 145.8h0M113.7 210.5h0M322.4 428.4h0M373.2 376.6h0M121.3 394.4h0M98.8 238.2h0M222.7 450.6h0M318.7 164.3h0M110.8 215.2h0M382.5 358.5h0M284.7 445.2h0M393.0 322.2h0M343.1 181.9h0M379.1 366.1h0M337.3 177.3h0M154.2 424.8h0M89.7 268.0h0M331.5 422.2h0M204.7 147.8h0M390.8 334.3h0M88.8 273.6h0M87.3 307.9h0M227.6 451.0h0M106.5 372.6h0M340.5 415.3h0M298.3 154.4h0M152.9 424.0h0M271.2 146.3h0M193.5 444.3h0M94.3 344.8h0M128.4 192.1h0M87.5 283.3h0M147.9 420.4h0M309.9 435.3h0M368.0 384.7h0M95.9 245.1h0M93.1 341.2h0M264.8 449.8h0M105.7 371.5h0M233.6 143.6h0M395.2 295.1h0M104.1 368.3h0M103.6 367.6h0M88.4 318.8h0M233.7 451.4h0M151.0 422.7h0M190.7 443.2h0M270.9 146.4h0M197.9 149.5h0M311.6 434.5h0M317.8 163.9h0M111.3 214.2h0M314.8 432.8h0M328.4 170.7h0M237.6 451.5h0M193.6 150.9h0M344.2 183.0h0M220.2 450.3h0M351.8 404.5h0M364.1 390.2h0M103.5 227.6h0M385.2 351.9h0M245.9 451.6h0M284.3 445.5h0M341.4 414.4h0M208.1 448.1h0M207.4 147.1h0M345.3 410.9h0M116.5 388.3h0M136.6 410.9h0M351.5 404.8h0M138.5 182.3h0M141.7 179.6h0M291.8 443.0h0M90.0 266.0h0M230.1 451.2h0M394.0 279.0h0M292.3 152.2h0M115.9 207.6h0M256.4 450.8h0M118.4 390.9h0M112.2 382.2h0M327.7 425.1h0M98.9 357.3h0M119.3 392.2h0M362.4 202.7h0M214.3 145.7h0M203.1 148.1h0M232.0 143.5h0M150.8 422.6h0M355.5 194.4h0M359.0 198.2h0M109.0 377.1h0M286.3 444.9h0M313.6 433.4h0M107.1 373.7h0M91.7 335.6h0M156.9 426.5h0M386.3 348.9h0M368.6 211.0h0M386.4 246.2h0M86.9 303.4h0M384.4 353.8h0M325.8 168.8h0M345.3 410.9h0M91.4 260.1h0M348.1 408.3h0M103.1 228.6h0M367.0 208.6h0M316.1 163.0h0M108.1 375.5h0M295.5 153.4h0M379.9 364.3h0M333.1 421.4h0M387.4 346.0h0M94.0 344.6h0M341.7 414.3h0M92.3 255.5h0M92.0 256.8h0M185.4 153.4h0M387.7 345.4h0M281.6 148.6h0M195.8 445.1h0M142.6 178.6h0M242.6 452.0h0M90.0 264.6h0M304.6 438.1h0M379.9 230.0h0M252.5 451.4h0M280.8 446.6h0M107.0 374.0h0M160.7 165.7h0M225.2 451.0h0M316.0 432.4h0M371.0 380.5h0M170.1 160.5h0M88.0 317.3h0M124.8 195.8h0M115.0 386.5h0M174.4 436.8h0M326.6 425.8h0M281.3 446.4h0M364.3 390.3h0M289.0 444.2h0M187.1 152.8h0M232.4 143.4h0M94.8 347.4h0M389.8 338.2h0M137.0 411.6h0M374.5 374.9h0M360.9 200.4h0M329.5 171.0h0M242.8 452.0h0M357.8 196.7h0M115.2 208.1h0M90.1 330.5h0M389.9 256.8h0M379.5 229.1h0M266.1 449.9h0M393.8 318.4h0M92.1 256.4h0M390.0 256.9h0M392.6 268.7h0M307.5 436.8h0M395.3 293.2h0M148.3 421.1h0M310.0 159.4h0M364.5 204.8h0M258.1 450.9h0M382.3 235.3h0M348.1 186.3h0M86.9 290.5h0M101.5 231.1h0M295.7 153.1h0M183.6 154.2h0M97.6 354.8h0M297.9 154.0h0M394.9 284.6h0M171.9 159.5h0M333.2 173.6h0M90.0 329.4h0M291.6 151.7h0M395.3 303.7h0M338.1 417.4h0M265.4 145.0h0M376.5 371.4h0M124.8 195.8h0M220.9 450.5h0M258.0 450.9h0M127.3 402.1h0M93.9 250.6h0M212.4 449.1h0M341.8 180.5h0M328.7 424.7h0M366.3 387.5h0M124.3 398.4h0M374.4 219.7h0M335.2 419.8h0M336.7 418.6h0M103.3 227.8h0M313.6 433.7h0M363.6 203.8h0M116.9 205.6h0M194.2 444.6h0M394.8 312.1h0M389.6 255.6h0M388.4 343.5h0M274.6 147.0h0M104.9 370.1h0M170.9 159.9h0M177.3 156.9h0M89.6 328.1h0M180.2 155.6h0M181.4 155.0h0M271.4 146.0h0M240.7 452.0h0M279.9 446.9h0M157.1 427.0h0M198.3 446.0h0M379.3 229.0h0M248.3 143.2h0M309.6 159.2h0M395.0 307.3h0M162.7 430.4h0M338.9 177.9h0M332.8 173.1h0M133.6 408.7h0M388.8 342.9h0M388.4 250.8h0M381.7 233.1h0M96.6 352.4h0M328.7 424.9h0M283.4 446.1h0M231.4 143.3h0M395.3 286.3h0M195.8 149.7h0M308.1 436.9h0M394.3 278.0h0M381.3 362.6h0M157.1 167.7h0M98.8 357.9h0M370.6 381.6h0M91.9 256.7h0M395.7 301.3h0M380.0 365.1h0M319.5 430.8h0M392.7 267.8h0M165.2 162.7h0M287.3 445.1h0M393.0 268.7h0M322.9 166.5h0M287.6 444.9h0M332.7 172.9h0M291.4 443.6h0M284.5 445.9h0M395.3 287.8h0M102.1 365.2h0M318.4 431.3h0M387.3 247.4h0M96.7 242.0h0M338.9 177.7h0M163.8 431.6h0M374.8 220.1h0M355.6 193.7h0M278.6 147.6h0M345.4 411.4h0M141.0 415.3h0M156.2 168.2h0M101.2 363.8h0M110.0 379.7h0M226.5 451.4h0M235.4 451.9h0M287.8 150.1h0M96.8 353.5h0M298.7 440.9h0M395.5 295.3h0M113.6 385.2h0M86.5 304.7h0M106.6 373.8h0M365.2 205.4h0M204.2 447.8h0M268.0 449.7h0M342.5 414.3h0M395.2 309.3h0M91.3 336.0h0M330.5 423.5h0M88.4 322.7h0M386.7 349.0h0M151.9 423.8h0M115.7 207.1h0M89.5 266.9h0M395.1 311.4h0M140.3 180.2h0M184.4 153.5h0M160.3 165.5h0M301.0 155.1h0M86.8 310.3h0M388.5 344.2h0M144.3 418.3h0M286.0 149.6h0M86.5 301.4h0M391.5 332.4h0M270.4 449.4h0M353.4 403.7h0M86.4 290.9h0M219.6 450.7h0M243.9 452.1h0M199.9 148.4h0M107.6 219.3h0M388.7 251.9h0M318.4 431.2h0M393.4 271.3h0M244.6 452.2h0M92.0 339.1h0M148.0 173.9h0M353.4 191.3h0M178.7 439.1h0M178.8 439.2h0M325.6 427.0h0M192.8 444.5h0M162.2 164.3h0M391.2 260.9h0M237.9 143.0h0M394.8 314.1h0M356.1 400.8h0M366.4 388.2h0M92.0 256.0h0M382.6 235.6h0M127.0 193.0h0M328.8 424.7h0M391.9 330.9h0M86.2 301.4h0M251.1 143.0h0M283.0 446.5h0M181.4 154.5h0M282.6 446.6h0M139.7 414.5h0M286.0 149.3h0M157.6 427.9h0M282.3 446.8h0M393.4 270.6h0M178.5 439.3h0M91.0 336.0h0M276.2 146.8h0M204.5 146.9h0M323.9 166.7h0M303.6 439.3h0M313.4 434.5h0M284.9 148.8h0M232.3 142.9h0M383.6 357.7h0M378.9 368.1h0M334.3 173.9h0M225.5 451.6h0M96.4 242.2h0M368.3 209.3h0M89.7 330.4h0M130.2 405.7h0M125.9 401.0h0M294.4 442.9h0M88.4 271.5h0M86.9 314.4h0M392.2 330.7h0M154.7 426.1h0M88.3 322.5h0M148.9 422.1h0M136.3 183.3h0M388.4 344.7h0M118.8 202.4h0M261.1 451.1h0M209.8 145.8h0M88.7 269.5h0M134.3 185.4h0M395.8 300.3h0M291.7 151.1h0M385.9 242.5h0M89.4 329.6h0M196.5 149.2h0M172.5 436.4h0M119.0 202.2h0M259.8 143.7h0M284.3 446.1h0M347.3 410.2h0M380.1 229.3h0M229.9 452.0h0M256.8 143.4h0M149.6 172.5h0M371.1 213.5h0M165.6 162.1h0M360.3 198.7h0M183.2 153.8h0M361.9 394.2h0M267.7 450.1h0M268.8 450.0h0M163.5 431.7h0M104.0 225.3h0M395.7 291.4h0M365.7 389.3h0M359.2 397.5h0M88.5 270.6h0M168.8 160.5h0M306.7 157.3h0M232.5 452.2h0M393.3 326.2h0M393.4 324.9h0M89.9 263.2h0M395.7 287.8h0M366.2 206.5h0M194.1 150.0h0M124.9 400.2h0M257.2 143.4h0M211.1 449.5h0M378.4 368.8h0M88.0 273.4h0M89.0 268.1h0M191.4 444.1h0M331.0 423.6h0M344.3 412.9h0M278.2 447.9h0M376.0 221.3h0M209.8 449.3h0M381.2 363.4h0M186.0 152.6h0M340.8 415.8h0M151.8 424.0h0M278.6 147.2h0M297.6 153.4h0M92.4 254.5h0M378.7 368.3h0M156.0 167.9h0M142.2 178.1h0M348.8 408.7h0M364.4 204.0h0M140.9 179.3h0M143.5 418.2h0M271.3 449.5h0M371.2 381.6h0M246.4 142.6h0M190.9 150.6h0M279.9 447.7h0M127.4 403.2h0M252.9 452.3h0M88.1 271.7h0M232.7 452.3h0M278.9 147.0h0M153.4 169.3h0M88.8 327.5h0M111.3 212.3h0M99.4 234.0h0M87.3 319.0h0M393.6 325.5h0M86.8 314.3h0M97.0 355.0h0M224.0 451.6h0M374.8 218.9h0M109.0 216.2h0M387.4 348.8h0M89.5 264.3h0M100.5 231.7h0M123.5 196.4h0M298.4 441.6h0M383.0 235.1h0M125.7 193.6h0M240.7 142.4h0M199.4 148.1h0M95.1 244.8h0M107.5 218.4h0M125.1 400.6h0M154.1 169.1h0M96.4 353.7h0M201.8 447.6h0M352.8 189.9h0M149.6 172.3h0M139.9 179.8h0M115.4 388.6h0M139.7 414.8h0M134.5 184.7h0M155.8 167.7h0M149.4 422.7h0M347.6 410.3h0M86.1 307.6h0M185.8 152.5h0M396.1 293.3h0M383.8 357.9h0M264.1 450.9h0M396.0 295.8h0M199.6 447.0h0M264.8 450.8h0M343.6 413.7h0M226.2 143.0h0M361.2 395.5h0M360.6 198.5h0M346.5 183.9h0M395.4 282.8h0M98.5 358.7h0M103.4 226.1h0M354.8 192.1h0M356.0 193.4h0M295.1 152.1h0M382.8 234.4h0M141.9 416.9h0M255.7 451.9h0M194.0 445.2h0M309.6 158.4h0M86.0 295.5h0M325.6 427.5h0M282.1 447.1h0M316.2 433.2h0M182.0 441.0h0M331.8 423.1h0M345.7 411.9h0M393.5 269.1h0M119.2 393.5h0M379.7 367.0h0M347.1 184.5h0M311.7 435.5h0M234.7 142.6h0M116.1 389.7h0M90.3 334.4h0M179.6 439.9h0M240.6 452.6h0M371.6 381.4h0M226.1 143.1h0M392.0 262.3h0M151.6 170.7h0M285.9 445.9h0M394.3 273.4h0M304.5 156.1h0M378.2 369.6h0M369.2 384.9h0M327.6 168.7h0M336.2 419.9h0M240.4 142.4h0M197.3 148.8h0M129.1 405.2h0M376.6 373.2h0M193.5 445.4h0M369.0 209.2h0M86.0 286.1h0M164.0 432.5h0M92.6 251.6h0M95.0 350.5h0M396.1 286.8h0M338.9 176.8h0M379.7 367.5h0M85.7 297.6h0M225.4 142.8h0M269.1 144.6h0M387.1 350.4h0M166.3 433.7h0M369.9 210.6h0M264.2 143.9h0M86.8 278.2h0M389.7 252.4h0M100.9 230.2h0M333.3 422.6h0M93.2 249.4h0M349.5 408.6h0M346.7 183.5h0M365.7 205.0h0M294.6 443.5h0M86.3 312.0h0M354.6 403.5h0M386.0 241.8h0M389.3 250.7h0M85.6 298.3h0M101.9 366.5h0M396.3 291.0h0M155.1 168.2h0M393.8 270.2h0M187.4 151.8h0M283.7 446.9h0M103.4 369.7h0M117.6 391.7h0M200.1 147.7h0M90.8 257.1h0M86.3 283.6h0M230.2 142.6h0M364.5 391.9h0M352.4 405.7h0M395.7 312.0h0M383.8 359.1h0M296.5 442.7h0M203.8 146.6h0M350.9 187.5h0M207.7 145.8h0M318.0 432.4h0M384.6 238.3h0M192.0 150.2h0M355.8 192.8h0M241.9 452.9h0M361.8 395.3h0M198.9 447.1h0M317.6 432.5h0M326.7 427.2h0M334.4 421.8h0M388.1 347.9h0M89.2 264.4h0M379.5 227.1h0M396.2 291.0h0M297.3 152.6h0M396.3 294.8h0M88.1 325.4h0M353.4 190.3h0M396.0 287.2h0M239.8 142.0h0M317.7 432.7h0M206.9 145.8h0M381.8 362.9h0M271.1 449.8h0M258.0 143.0h0M135.6 411.7h0M331.1 424.2h0M96.2 353.8h0M227.3 142.8h0M234.7 142.2h0M105.0 222.5h0M92.9 250.5h0M330.2 424.7h0M300.5 153.9h0M371.4 382.1h0M240.3 142.2h0M126.0 192.9h0M101.9 367.0h0M87.7 322.5h0M127.2 403.2h0M171.8 436.7h0M111.4 211.7h0M86.1 287.3h0M147.7 173.1h0M141.2 178.3h0M392.2 335.1h0M291.3 444.8h0M198.4 447.2h0M153.9 168.5h0M123.9 195.2h0M238.2 453.1h0M135.9 182.7h0M203.3 146.6h0M387.3 350.3h0M381.2 229.8h0M396.7 292.4h0M99.7 232.2h0M89.1 263.5h0M393.3 265.2h0M287.5 446.0h0M103.1 369.7h0M378.4 224.3h0M376.5 374.2h0M348.5 410.0h0M306.1 156.1h0M88.5 328.9h0M382.2 232.3h0M85.7 308.9h0M171.7 158.3h0M116.7 391.0h0M216.7 451.2h0M149.9 171.5h0M99.8 362.9h0M85.3 294.9h0M223.5 452.1h0M162.9 162.9h0M237.1 141.9h0M257.4 142.8h0M236.7 453.1h0M131.7 186.9h0M389.3 250.1h0M309.8 157.8h0M245.4 453.1h0M341.4 178.6h0M86.2 313.0h0M395.7 314.9h0M289.1 445.4h0M275.2 145.6h0M322.4 430.0h0M319.6 432.0h0M107.7 217.1h0M228.2 142.3h0M259.9 143.1h0M391.4 337.9h0M200.1 447.8h0M87.3 273.5h0M100.2 231.2h0M335.2 173.7h0M367.8 387.8h0M298.9 441.9h0M211.1 144.8h0M323.1 429.8h0M393.5 266.8h0M302.2 440.6h0M242.9 453.1h0M156.2 167.1h0M339.9 417.6h0M393.2 265.0h0M240.1 142.0h0M386.1 353.5h0M395.3 317.1h0M371.0 211.9h0M332.2 423.5h0M111.2 383.2h0M296.4 442.9h0M364.3 392.6h0M337.5 419.6h0M348.0 410.5h0M396.2 286.8h0M92.7 344.6h0M396.7 296.5h0M356.9 401.4h0M177.9 155.2h0M124.3 400.5h0M384.6 357.7h0M91.2 255.2h0M269.6 144.4h0M125.6 401.8h0M127.5 404.0h0M396.4 290.3h0M340.1 417.5h0M395.8 312.3h0M340.4 417.4h0M387.4 244.6h0M110.2 213.0h0M169.3 159.4h0M282.7 447.5h0M109.0 379.7h0M360.9 197.9h0M224.4 452.5h0M332.4 423.8h0M396.5 306.7h0M103.6 223.8h0M93.9 245.8h0M279.4 448.5h0M112.9 386.3h0M375.0 217.8h0M235.1 141.7h0M85.5 306.7h0M290.6 445.2h0M124.7 401.2h0M383.7 234.9h0M188.8 444.3h0M135.0 411.6h0M91.6 252.8h0M125.5 192.7h0M101.2 366.5h0M92.7 345.9h0M266.1 451.3h0M386.8 352.9h0M132.2 186.0h0M88.7 330.9h0M104.4 372.7h0M392.3 335.1h0M394.8 272.1h0M156.8 428.7h0M395.2 274.3h0M106.2 375.8h0M333.3 171.8h0M164.6 161.7h0M146.7 421.6h0M139.6 416.0h0M85.6 310.9h0M348.4 410.6h0M393.4 330.3h0M360.9 197.8h0M88.9 331.7h0M123.0 399.5h0M342.2 416.0h0M291.4 149.9h0M221.0 142.9h0M164.9 161.4h0M148.3 172.3h0M86.9 321.5h0M145.0 174.7h0M265.2 451.4h0M396.8 291.0h0M161.6 163.5h0M392.5 334.0h0M188.2 444.1h0M345.8 413.0h0M127.7 190.5h0M396.9 293.3h0M297.3 442.9h0M118.5 201.1h0M113.3 208.1h0M252.7 452.9h0M350.1 186.1h0M155.8 166.9h0M237.4 453.4h0M313.6 159.6h0M396.9 298.7h0M304.5 155.1h0M118.6 393.9h0M91.4 341.8h0M113.4 207.9h0M91.1 340.4h0M197.5 147.7h0M124.1 194.4h0M388.6 347.3h0M390.5 341.7h0M327.1 167.6h0M291.1 445.2h0M146.9 421.7h0M339.0 418.7h0M326.8 427.7h0M219.4 451.9h0M357.2 401.5h0M330.9 170.2h0M295.3 443.5h0M321.2 163.9h0M248.7 453.2h0M313.6 435.6h0M221.4 142.9h0M383.8 360.1h0M303.6 440.1h0M366.6 205.0h0M389.8 343.7h0M290.9 445.5h0M377.2 221.1h0M267.3 143.5h0M317.9 161.5h0M213.7 143.8h0M187.7 150.9h0M396.3 282.1h0M91.6 343.1h0M106.7 217.7h0M397.0 305.4h0M233.7 453.4h0M376.0 219.0h0M249.0 141.6h0M336.0 421.4h0M105.0 220.9h0M104.5 373.4h0M162.2 432.3h0M317.1 433.8h0M104.1 222.5h0M382.2 231.1h0M222.7 142.6h0M385.3 238.1h0M395.1 322.5h0M128.3 405.6h0M162.9 162.2h0M158.0 165.3h0M166.9 435.0h0M152.1 169.3h0M390.2 343.5h0M99.5 363.3h0M86.8 273.5h0M196.9 447.2h0M229.1 141.8h0M113.0 208.3h0M118.4 200.6h0M258.1 452.8h0M168.3 435.6h0M324.9 429.1h0M84.9 296.5h0M263.1 142.9h0M257.2 142.3h0M225.3 452.9h0M340.2 177.1h0M237.2 453.5h0M286.0 148.0h0M375.8 218.5h0M329.1 168.5h0M387.5 351.4h0M340.1 418.1h0M344.4 414.3h0M389.4 346.0h0M337.0 174.5h0M85.2 288.8h0M396.5 312.8h0M90.5 255.8h0M361.6 198.5h0M366.5 390.4h0M102.7 224.7h0M277.6 449.3h0M197.7 147.6h0M306.3 439.4h0M101.8 227.1h0M153.6 426.8h0M97.8 235.0h0M191.9 149.4h0M98.8 232.8h0M86.6 321.2h0M387.6 351.2h0M192.7 445.9h0M85.3 286.5h0M184.5 152.1h0M238.8 453.5h0M395.3 321.1h0M297.9 152.1h0M130.2 407.5h0M241.2 141.5h0M377.3 373.9h0M91.8 251.5h0M286.7 446.8h0M120.0 198.7h0M389.0 247.5h0M166.2 160.4h0M218.4 451.9h0M298.9 152.6h0M213.3 451.2h0M85.6 281.0h0M151.6 169.3h0M153.2 427.0h0M85.8 317.5h0M112.5 386.6h0M310.6 437.5h0M107.3 378.5h0M326.1 428.8h0M144.2 174.8h0M356.3 191.9h0M94.8 352.7h0M246.0 141.1h0M85.5 281.6h0M397.3 302.4h0M262.2 452.3h0M296.8 443.7h0M94.9 241.9h0M147.7 171.9h0M156.2 428.8h0M284.0 147.3h0M200.5 448.5h0M84.8 303.9h0M169.4 436.4h0M298.2 442.9h0M167.4 435.5h0M349.2 184.8h0M107.6 378.9h0M387.1 353.1h0M95.3 354.0h0M232.0 453.7h0M367.8 206.0h0M93.7 350.1h0M275.7 145.1h0M251.0 453.7h0M131.1 408.9h0M395.3 322.6h0M250.2 453.5h0M312.8 158.7h0M175.5 439.6h0M191.4 445.9h0M294.4 444.5h0M85.3 282.4h0M283.8 147.1h0M84.9 307.4h0M86.6 322.7h0M193.6 446.5h0M267.1 451.6h0M109.1 213.2h0M300.8 441.8h0M85.0 286.5h0M369.5 208.1h0M294.9 150.8h0M237.1 141.1h0M126.3 404.0h0M178.8 154.0h0M208.3 144.5h0M159.4 431.0h0M112.7 208.0h0M170.9 437.4h0M341.3 177.5h0M190.2 149.5h0M328.4 427.0h0M150.7 169.9h0M156.9 165.8h0M295.4 444.0h0M91.9 250.6h0M388.8 246.1h0M375.2 377.6h0M108.8 213.8h0M207.3 144.7h0M139.8 416.6h0M92.3 345.7h0M341.8 178.0h0M299.3 442.7h0M393.1 260.8h0M351.0 186.4h0M225.9 141.7h0M133.6 183.9h0M157.5 429.8h0M373.5 380.5h0M285.1 147.6h0M194.9 148.1h0M203.0 145.8h0M374.6 378.6h0M234.2 453.8h0M88.8 333.2h0M362.0 198.1h0M97.0 359.2h0M114.2 205.6h0M194.3 446.9h0M386.5 239.4h0M280.2 449.2h0M285.8 147.3h0M135.1 412.8h0M252.8 141.4h0M313.4 158.7h0M266.8 143.0h0M248.1 454.0h0M111.2 210.0h0M85.6 278.7h0M340.6 418.4h0M89.6 257.5h0M287.9 446.9h0M313.4 436.4h0M269.5 451.4h0M366.3 203.3h0M100.7 228.2h0M394.7 327.7h0M149.3 170.6h0M392.2 257.1h0M150.7 425.4h0M341.3 417.9h0M86.8 324.5h0M175.3 439.6h0M390.0 249.1h0M391.7 340.1h0M335.2 172.4h0M386.3 356.0h0M263.7 452.4h0M175.9 439.9h0M210.8 143.8h0M336.5 421.5h0M352.2 187.1h0M310.2 438.1h0M380.5 368.9h0M269.0 451.6h0M327.7 167.0h0M217.1 142.7h0M363.7 200.0h0M124.1 193.2h0M177.4 154.4h0M89.9 338.3h0M372.1 383.0h0M100.9 367.6h0M389.5 248.1h0M89.2 259.1h0M303.6 441.1h0M249.3 141.0h0M193.0 446.7h0M373.3 213.5h0M309.6 438.4h0M376.6 375.8h0M194.0 148.2h0M88.3 331.9h0M219.9 142.3h0M212.3 143.6h0M195.6 447.5h0M232.0 141.2h0M330.1 168.7h0M267.9 451.9h0M336.1 421.9h0M118.2 394.7h0M218.5 142.4h0M299.0 151.9h0M125.1 403.0h0M359.7 399.7h0M378.8 223.1h0M313.7 436.4h0M111.5 385.6h0M110.7 210.5h0M355.1 190.3h0M266.1 142.9h0M396.5 278.1h0M108.2 214.5h0M261.1 452.9h0M301.5 153.2h0M240.8 140.8h0M288.9 446.7h0M141.1 176.4h0M93.6 243.4h0M388.0 352.4h0M92.9 246.2h0M122.7 400.6h0M359.2 194.5h0M361.0 196.7h0M198.2 146.6h0M254.5 453.8h0M249.6 454.1h0M213.6 452.0h0M209.8 451.3h0M189.5 149.4h0M389.7 247.8h0M229.0 453.9h0M368.7 206.3h0M224.6 141.5h0M397.7 291.7h0M393.7 333.3h0M89.9 255.9h0M205.5 450.3h0M109.3 382.6h0M299.3 443.1h0M162.3 161.8h0M356.0 191.0h0M86.1 321.8h0M168.3 158.6h0M104.2 220.8h0M84.4 289.5h0M396.7 279.4h0M164.6 434.5h0M197.8 448.4h0M101.5 369.5h0M101.0 226.9h0M288.2 447.1h0M385.9 237.0h0M296.5 150.8h0M189.9 445.9h0M104.2 220.9h0M245.9 140.8h0M270.4 451.6h0M394.7 265.9h0M395.1 268.0h0M396.9 314.7h0M146.8 423.0h0M85.6 275.4h0M323.0 431.4h0M397.2 311.5h0M203.1 145.4h0M268.2 451.9h0M378.9 222.7h0M397.7 301.9h0M189.2 149.4h0M382.0 229.0h0M385.6 236.3h0M90.7 252.1h0M352.7 407.7h0M145.2 421.8h0M180.5 442.2h0M299.2 152.0h0M397.7 306.7h0M396.2 320.1h0M319.1 433.5h0M175.2 440.0h0M229.0 453.9h0M397.8 305.7h0M264.8 452.5h0M132.3 410.7h0M167.4 436.2h0M90.4 341.2h0M331.3 425.7h0M100.9 226.9h0M308.0 439.3h0M93.3 350.4h0M166.1 159.6h0M397.4 309.1h0M284.7 147.0h0M330.5 426.4h0M185.1 444.3h0M107.0 379.8h0M375.8 378.3h0M265.5 452.6h0M92.5 349.0h0M310.0 156.3h0M398.1 294.7h0M357.6 192.0h0M114.2 390.1h0M121.3 195.9h0M372.4 383.6h0M87.8 331.8h0M110.4 385.0h0M136.6 180.1h0M199.9 145.8h0M315.1 436.0h0M393.1 337.2h0M298.3 443.7h0M127.6 188.7h0M84.6 283.3h0M180.1 152.6h0M218.5 142.1h0M123.3 401.5h0M326.9 166.1h0M301.2 152.3h0M361.9 397.9h0M379.3 372.0h0M295.4 150.2h0M120.6 398.2h0M255.1 141.1h0M394.9 329.6h0M396.3 273.7h0M183.1 443.5h0M379.5 223.0h0M165.7 159.6h0M145.0 422.0h0M130.7 409.2h0M394.3 262.6h0M107.9 380.9h0M118.1 199.6h0M375.1 215.8h0M395.2 328.1h0M179.6 442.0h0M260.2 141.6h0M90.3 252.8h0M262.6 453.2h0M124.1 402.3h0M291.4 446.3h0M241.9 140.3h0M264.2 452.9h0M116.7 393.5h0M266.7 142.4h0M378.3 374.2h0M126.6 405.1h0M89.4 339.2h0M316.1 159.4h0M128.5 407.1h0M141.0 176.3h0M220.6 453.4h0M84.3 310.8h0M141.7 175.6h0M337.6 173.5h0M211.0 451.6h0M307.6 155.2h0M270.2 143.2h0M148.6 424.5h0M206.8 144.2h0M332.9 170.0h0M123.9 402.3h0M120.5 398.4h0M188.9 445.8h0M246.5 454.4h0M298.5 151.3h0M245.6 454.6h0M365.0 201.0h0M267.8 452.4h0M388.0 353.9h0M173.3 439.7h0M395.4 328.3h0M381.0 225.5h0M99.4 228.5h0M253.8 454.3h0M346.4 180.5h0M153.5 428.2h0M189.3 446.2h0M347.9 182.1h0M135.4 180.9h0M86.4 326.7h0M236.8 140.1h0M397.6 313.8h0M282.7 145.7h0M265.0 452.9h0M348.3 182.3h0M361.6 196.4h0M231.3 454.5h0M283.7 145.9h0M98.3 231.2h0M229.8 140.5h0M174.9 440.3h0M188.4 149.1h0M205.9 144.1h0M83.7 296.8h0M153.6 428.3h0M374.7 380.4h0M147.2 423.8h0M83.8 290.8h0M333.2 169.9h0M345.3 415.3h0M359.3 193.8h0M229.9 140.5h0M112.9 389.1h0M373.3 382.6h0M258.9 141.2h0M95.6 357.4h0M276.0 450.8h0M148.5 170.2h0M173.6 439.8h0M386.7 356.9h0M394.5 331.7h0M358.8 401.7h0M89.4 339.8h0M84.2 311.6h0M336.7 422.3h0M397.2 277.9h0M256.2 454.2h0M95.7 357.8h0M209.1 451.6h0M396.1 323.4h0M396.6 273.1h0M126.1 405.3h0M283.3 449.1h0M398.3 300.0h0M287.5 147.2h0M257.0 454.1h0M88.8 257.7h0M92.1 348.3h0M91.9 348.3h0M214.5 142.3h0M378.2 220.6h0M93.5 352.6h0M155.4 165.5h0M88.3 335.3h0M106.3 378.7h0M112.4 206.5h0M125.2 190.9h0M115.1 203.1h0M277.7 450.5h0M383.1 229.9h0M84.0 309.1h0M106.8 215.4h0M83.5 300.7h0M395.4 265.5h0M289.4 447.4h0M118.8 197.9h0M364.2 396.0h0M84.2 312.7h0M396.1 325.8h0M202.7 144.6h0M308.8 439.8h0M251.8 140.4h0M87.9 260.1h0M253.6 140.3h0M136.5 415.5h0M381.2 369.9h0M88.0 335.8h0M240.3 455.1h0M188.6 446.3h0M387.7 355.1h0M316.8 159.2h0M335.2 423.8h0M396.0 325.7h0M332.4 169.0h0M83.3 294.6h0M188.1 446.1h0M225.3 454.3h0M86.9 330.7h0M83.7 305.1h0M354.1 187.5h0M343.4 177.6h0M83.4 300.9h0M288.0 448.0h0M83.4 295.8h0M83.4 300.1h0M142.6 174.4h0M92.2 349.2h0M88.4 258.3h0M311.6 156.7h0M296.0 149.9h0M392.2 253.0h0M337.9 421.8h0M247.4 455.0h0M84.8 319.5h0M108.5 212.2h0M226.3 454.4h0M253.2 454.6h0M326.2 430.0h0M91.3 346.9h0M91.4 247.7h0M121.9 194.2h0M337.2 172.7h0M216.5 453.1h0M373.9 213.0h0M109.1 383.9h0M95.1 237.6h0M369.4 205.9h0M212.5 452.5h0M392.6 254.6h0M139.1 417.7h0M123.0 401.9h0M103.2 374.3h0M366.7 202.3h0M224.0 140.7h0M192.4 447.5h0M294.4 149.1h0M389.1 351.8h0M182.9 150.9h0M168.1 437.2h0M237.5 455.1h0M331.9 426.1h0M398.1 310.6h0M104.2 376.0h0M239.7 455.3h0M112.6 205.7h0M98.1 364.6h0M99.3 227.7h0M220.1 140.9h0M397.1 321.5h0M359.0 402.3h0M322.3 432.9h0M154.0 429.3h0M189.8 148.3h0M137.7 416.8h0M135.6 180.0h0M159.5 162.3h0M395.6 265.3h0M99.6 367.9h0M150.2 426.7h0M89.7 252.0h0M307.4 154.2h0M360.6 194.4h0M189.2 148.4h0M83.5 309.7h0M212.1 452.8h0M335.7 171.3h0M394.4 260.1h0M233.1 455.2h0M367.7 203.5h0M321.1 433.5h0M209.1 142.9h0M391.9 344.1h0M169.5 156.7h0M380.4 223.5h0M258.4 140.6h0M185.5 445.2h0M177.4 152.9h0M185.8 149.5h0M338.1 173.2h0M248.6 455.1h0M83.2 297.8h0M98.9 366.1h0M160.4 433.1h0M360.4 400.7h0M396.0 327.6h0M364.4 199.2h0M389.8 244.7h0M84.3 278.9h0M110.5 386.3h0M112.0 388.7h0M83.2 290.5h0M330.4 167.4h0M398.2 312.7h0M245.0 139.7h0M111.0 387.1h0M328.2 429.2h0M289.7 447.7h0M276.1 143.5h0M276.5 143.7h0M151.9 167.2h0M262.8 141.2h0M398.9 294.4h0M112.0 388.4h0M232.3 455.2h0M333.6 169.5h0M219.3 141.2h0M218.2 453.7h0M269.4 142.2h0M123.3 402.8h0M300.6 151.3h0M345.3 179.0h0M137.0 178.4h0M276.8 451.6h0M201.1 144.5h0M118.4 397.1h0M90.9 347.3h0M323.2 162.4h0M211.4 142.3h0M377.7 376.8h0M349.9 412.1h0M318.4 435.4h0M344.2 417.3h0M281.0 450.6h0M115.5 201.3h0M349.7 412.4h0M131.4 411.6h0M98.0 364.7h0M139.4 418.7h0M181.6 444.1h0M385.3 232.6h0M387.2 358.0h0M86.1 265.7h0M303.1 442.9h0M356.9 405.1h0M103.4 375.3h0M123.3 403.3h0M167.4 157.4h0M376.5 216.0h0M230.1 139.7h0M285.8 145.8h0M399.2 298.6h0M396.0 329.4h0M382.9 367.3h0M96.7 362.4h0M328.1 165.7h0M369.4 205.4h0M93.5 240.6h0M252.4 139.8h0M83.5 284.2h0M158.6 432.4h0M229.8 455.1h0M182.4 150.7h0M330.8 427.6h0M141.5 174.4h0M345.4 178.9h0M118.8 197.0h0M86.3 264.1h0M398.6 309.0h0M87.1 333.2h0M320.5 160.8h0M383.5 365.7h0M137.6 417.0h0M271.3 142.2h0M108.2 211.9h0M265.8 453.6h0M244.4 455.5h0M266.6 453.5h0M108.0 212.0h0M220.2 140.7h0M396.8 324.3h0M180.2 443.5h0M108.1 383.0h0M112.4 205.3h0M393.2 340.6h0M192.0 147.1h0M251.5 139.6h0M398.5 285.2h0M260.9 140.5h0M383.6 228.7h0M238.3 139.0h0M145.5 171.3h0M100.1 369.7h0M190.8 447.6h0M87.6 258.6h0M247.3 455.6h0M198.6 450.2h0M345.8 178.7h0M307.5 153.7h0M245.7 455.9h0M399.2 291.8h0M171.8 440.1h0M376.7 379.3h0M344.6 177.8h0M343.1 176.6h0M260.7 140.4h0M82.7 296.6h0M93.2 240.6h0M395.6 332.1h0M336.2 170.9h0M255.3 455.2h0M97.6 364.9h0M263.9 140.8h0M312.3 156.0h0M398.7 312.4h0M91.1 246.7h0M126.7 188.0h0M266.8 141.3h0M182.9 150.3h0M399.3 296.7h0M83.5 280.8h0M207.9 452.5h0M196.8 449.7h0M211.6 453.0h0M111.2 206.8h0M371.7 208.3h0M236.7 139.1h0M391.0 348.7h0M338.9 173.0h0M106.3 380.7h0M382.4 226.3h0M317.5 158.8h0M113.9 203.1h0M154.5 430.2h0M377.4 377.9h0M107.2 382.2h0M173.3 440.6h0M353.1 409.3h0M330.2 428.4h0M139.3 418.8h0M200.9 144.2h0M329.5 166.3h0M164.5 436.3h0M132.3 182.2h0M371.8 208.1h0M146.3 170.5h0M88.6 341.0h0M399.1 304.9h0M85.4 327.4h0M397.1 270.1h0M290.5 447.9h0M398.0 318.6h0M382.7 368.6h0M93.1 354.6h0M180.4 151.0h0M319.6 159.7h0M245.3 138.9h0M219.4 140.3h0M99.8 225.3h0M244.4 456.2h0M399.2 308.3h0M360.4 402.0h0M301.7 444.0h0M361.8 194.9h0M394.1 256.2h0M105.8 214.5h0M147.1 169.6h0M299.3 445.1h0M221.5 454.9h0M272.4 452.9h0M386.0 232.9h0M313.3 438.7h0M185.7 446.1h0M359.3 191.8h0M82.6 306.5h0M311.2 439.8h0M93.5 355.7h0M186.4 446.3h0M114.4 201.9h0M383.4 367.2h0M330.4 428.6h0M395.4 261.5h0M387.3 236.1h0M261.2 140.2h0M131.1 183.0h0M216.8 454.2h0M94.2 357.5h0M303.4 443.4h0M398.0 319.5h0M358.3 404.3h0M398.5 316.0h0M263.3 454.6h0M101.1 222.7h0M89.1 252.2h0M252.4 455.8h0M215.7 140.9h0M141.9 421.3h0M162.4 159.7h0M227.7 139.5h0M242.5 138.8h0M337.3 423.5h0M195.4 449.4h0M388.7 355.3h0M336.2 424.3h0M289.1 448.7h0M387.4 358.8h0M238.0 138.9h0M117.7 397.4h0M355.7 187.8h0M164.4 436.4h0M181.7 150.5h0M147.2 169.7h0M302.1 443.8h0M118.4 398.2h0M335.6 425.0h0M119.4 399.8h0M123.7 190.2h0M154.0 430.3h0M246.9 456.3h0M399.8 297.2h0M154.8 164.1h0M399.5 286.2h0M396.7 328.6h0M185.8 148.5h0M363.1 399.2h0M84.3 322.9h0M350.2 412.8h0M393.9 340.3h0M346.5 416.3h0M372.3 386.8h0M144.4 171.3h0M294.5 148.0h0M102.9 375.8h0M391.2 349.5h0M83.5 317.6h0M385.6 363.3h0M281.4 143.7h0M103.5 377.1h0M82.1 297.5h0M172.9 441.1h0M83.3 277.9h0M104.3 216.7h0M82.1 299.2h0M88.2 254.1h0M306.4 442.3h0M107.1 383.2h0M83.3 278.3h0M316.8 437.2h0M82.6 309.2h0M95.4 360.8h0M291.1 448.2h0M367.1 200.9h0M211.1 453.6h0M82.4 287.6h0M93.5 356.2h0M296.8 148.7h0M399.1 314.4h0M124.9 405.9h0M308.3 153.6h0M87.9 255.0h0M349.1 181.0h0M84.4 270.3h0M127.9 408.9h0M263.4 140.3h0M345.4 417.4h0M352.8 184.6h0M127.6 408.9h0M85.1 267.1h0M397.8 272.0h0M365.7 198.9h0M366.3 395.4h0M138.6 419.2h0M113.0 203.4h0M281.3 451.2h0M306.1 442.8h0M116.7 396.7h0M295.0 147.7h0M110.0 387.8h0M287.8 145.5h0M273.0 453.4h0M365.3 198.1h0M259.6 455.5h0M127.0 186.4h0M400.0 301.9h0M196.0 144.9h0M83.1 316.2h0M149.3 427.6h0M169.6 155.4h0M117.3 197.3h0M131.0 412.6h0M89.0 344.5h0M164.2 437.0h0M133.4 414.6h0M233.9 138.5h0M306.0 152.4h0M158.2 433.6h0M185.3 148.3h0M259.1 455.6h0M348.5 180.4h0M311.6 154.9h0M340.0 172.8h0M217.2 140.1h0M389.7 240.8h0M356.9 188.3h0M380.8 221.6h0M304.9 443.1h0M88.7 251.2h0M163.3 436.5h0M334.6 426.0h0M298.0 148.8h0M150.6 166.6h0M387.6 235.9h0M290.9 448.6h0M83.4 319.1h0M209.9 141.4h0M285.8 144.9h0M112.8 391.6h0M230.2 138.6h0M284.2 144.3h0M150.2 428.1h0M332.9 167.6h0M193.2 145.8h0M390.5 242.9h0M381.6 222.8h0M86.5 335.6h0M282.9 451.0h0M277.0 452.4h0M96.4 230.9h0M241.7 138.3h0M84.2 270.0h0M84.5 268.5h0M155.1 431.4h0M162.3 436.0h0M91.2 351.9h0M163.4 158.3h0M102.8 217.8h0M176.1 443.2h0M102.3 218.9h0M86.8 337.7h0M399.3 279.4h0M296.2 148.1h0M150.3 428.6h0M391.3 244.5h0M100.6 222.2h0M157.2 162.0h0M84.8 265.8h0M398.1 323.7h0M400.4 299.6h0M211.9 454.2h0M168.7 439.6h0M327.2 431.4h0M143.9 171.2h0M319.7 158.8h0M91.5 241.9h0M160.5 160.1h0M115.8 198.9h0M113.8 393.3h0M171.6 154.1h0M133.5 415.3h0M136.5 177.2h0M140.8 421.6h0M151.0 166.1h0M81.7 300.3h0M91.3 242.7h0M148.4 427.3h0M108.4 385.8h0M339.3 171.9h0M314.8 438.7h0M270.4 140.9h0M321.7 435.0h0M346.5 178.0h0M148.8 427.6h0M230.5 456.6h0M341.8 421.1h0M187.6 447.6h0M255.3 138.7h0M86.0 260.3h0M105.0 214.6h0M213.5 140.6h0M87.4 340.4h0M103.9 216.2h0M384.4 228.1h0M82.2 310.0h0M237.4 138.1h0M355.7 408.0h0M353.2 410.7h0M399.3 316.7h0M304.5 151.0h0M364.2 196.0h0M166.1 156.5h0M375.9 382.8h0M372.5 387.9h0M193.1 145.2h0M122.6 404.8h0M343.4 175.1h0M399.4 277.1h0M394.1 252.8h0M288.5 145.1h0M86.9 256.3h0M211.1 140.6h0M376.5 382.0h0M391.3 351.4h0M94.5 233.8h0M268.7 454.7h0M250.9 138.1h0M385.3 229.4h0M342.8 174.6h0M129.2 411.3h0M396.9 331.6h0M332.3 428.3h0M82.3 315.1h0M379.3 217.9h0M82.3 279.6h0M102.4 376.5h0M99.2 371.1h0M382.1 222.8h0M337.5 170.4h0M200.0 143.4h0M217.7 455.3h0M358.0 189.1h0M284.0 143.7h0M363.0 400.5h0M369.4 202.7h0M400.7 299.3h0M392.5 246.8h0M399.1 319.6h0M127.8 184.9h0M91.3 352.5h0M388.6 358.0h0M256.4 138.6h0M329.5 430.3h0M262.9 455.6h0M217.8 455.4h0M400.0 313.0h0M127.7 185.1h0M379.4 377.0h0M210.3 454.1h0M251.4 456.9h0M168.3 155.3h0M394.2 342.3h0M365.1 397.9h0M383.3 224.8h0M395.2 255.5h0M397.6 329.1h0M325.9 162.1h0M218.8 455.9h0M154.5 431.9h0M187.9 448.3h0M148.9 166.8h0M347.2 417.0h0M148.3 167.2h0M95.3 363.0h0M107.9 208.7h0M399.1 273.7h0M114.6 395.3h0M369.2 202.2h0M353.2 183.6h0M155.5 432.7h0M220.2 456.1h0M129.5 183.0h0M245.5 457.4h0M86.9 254.6h0M373.0 387.8h0M374.6 385.3h0M283.0 143.2h0M94.9 362.4h0M91.9 239.7h0M328.7 163.7h0M147.7 427.4h0M170.4 154.2h0M195.7 144.2h0M343.3 174.6h0M82.2 315.4h0M153.8 431.5h0M320.4 158.8h0M89.0 247.9h0M91.0 242.3h0M354.7 409.9h0M224.4 456.5h0M381.3 374.2h0M118.4 400.3h0M397.3 331.8h0M370.1 203.1h0M128.3 410.9h0M186.2 447.7h0M377.9 215.1h0M81.1 299.0h0M286.1 144.1h0M209.7 454.3h0M106.0 383.1h0M101.3 375.0h0M160.5 159.5h0M167.6 439.5h0M240.5 457.3h0M361.7 192.4h0M87.6 251.5h0M394.3 251.3h0M318.1 437.9h0M401.2 298.6h0M231.7 137.5h0M96.5 366.4h0M264.7 139.0h0M100.6 220.3h0M148.2 167.1h0M334.5 427.5h0M83.1 271.7h0M165.5 438.9h0M368.0 395.0h0M362.8 193.4h0M209.7 140.5h0M95.4 364.4h0M394.4 343.9h0M359.8 404.8h0M229.2 137.7h0M154.8 162.6h0M95.1 231.5h0M94.6 232.7h0M173.5 442.7h0M324.1 434.4h0M309.6 152.8h0M105.2 212.8h0M308.0 442.9h0M396.7 334.4h0M347.8 416.9h0M81.3 287.4h0M101.1 219.8h0M267.7 455.4h0M138.7 174.3h0M158.8 435.1h0M126.6 185.3h0M396.9 333.9h0M96.6 366.5h0M371.0 390.8h0M363.7 400.5h0M252.6 457.2h0M116.5 398.2h0M86.8 340.3h0M391.5 242.9h0M352.8 412.1h0M323.2 435.0h0M266.2 139.3h0M81.9 278.8h0M282.3 142.7h0M114.7 199.0h0M235.9 137.1h0M132.1 415.2h0M384.9 226.5h0M383.0 223.1h0M187.4 146.3h0M215.7 455.8h0M178.4 149.9h0M268.3 455.5h0M299.8 148.4h0M317.4 438.4h0M392.1 351.4h0M287.4 451.0h0M89.7 243.9h0M83.8 329.1h0M330.0 164.2h0M401.3 305.7h0M277.3 141.3h0M395.8 255.3h0M361.6 191.6h0M401.2 292.0h0M141.9 171.2h0M230.0 457.6h0M365.1 399.0h0M401.1 288.5h0M85.7 337.8h0M278.9 453.3h0M202.7 453.2h0M96.5 228.0h0M107.5 208.6h0M80.7 299.5h0M329.4 163.7h0M102.8 216.0h0M189.5 449.4h0M177.8 444.8h0M256.6 138.0h0M140.4 172.5h0M350.1 414.9h0M97.6 225.6h0M401.1 290.8h0M397.0 260.2h0M275.0 140.6h0M391.4 241.6h0M149.5 429.1h0M137.1 175.3h0M219.2 456.3h0M397.9 264.1h0M387.2 231.6h0M371.3 203.9h0M121.2 404.0h0M302.4 149.0h0M358.0 407.7h0M399.6 323.1h0M393.1 349.1h0M353.8 411.9h0M106.5 385.3h0M169.1 441.2h0M359.0 406.7h0M80.5 297.5h0M331.3 164.6h0M308.7 443.1h0M94.0 362.2h0M158.0 159.9h0M118.7 401.6h0M90.2 242.1h0M138.4 420.9h0M86.7 341.6h0M190.2 449.8h0M347.2 177.0h0M376.8 383.0h0M96.6 367.6h0M386.7 229.8h0M222.2 457.1h0M87.7 249.8h0M266.4 456.2h0M135.4 418.7h0M395.5 253.2h0M296.2 146.7h0M118.9 401.9h0M374.1 207.6h0M93.3 234.3h0M399.7 322.3h0M368.2 395.7h0M401.6 304.7h0M235.7 458.1h0M127.7 183.6h0M309.1 152.0h0M360.6 404.9h0M81.2 313.1h0M113.2 395.0h0M82.3 273.2h0M382.4 373.6h0M86.5 341.9h0M368.4 395.4h0M359.9 405.4h0M89.2 350.1h0M393.5 347.9h0M118.3 401.5h0M254.9 457.8h0M164.2 439.0h0M82.8 326.9h0M391.5 354.1h0M378.8 214.7h0M119.6 191.7h0M296.7 448.3h0M398.2 331.6h0M208.7 455.1h0M325.3 160.5h0M401.9 296.8h0M386.5 366.1h0M218.8 138.1h0M129.4 413.5h0M371.5 391.7h0M184.2 146.9h0M120.4 191.0h0M95.6 366.3h0M115.7 196.6h0M158.2 435.6h0M117.2 400.2h0M195.8 143.2h0M357.0 186.2h0M319.2 437.9h0M93.6 362.1h0M80.6 309.4h0M143.2 169.6h0M393.4 246.2h0M374.2 387.6h0M293.4 145.3h0M112.7 394.7h0M280.7 453.4h0M391.3 240.4h0M392.5 243.3h0M201.3 141.6h0M112.6 394.4h0M236.2 136.6h0M334.6 428.5h0M380.8 217.9h0M308.7 151.4h0M226.6 457.8h0M367.9 396.5h0M401.4 309.4h0M296.1 448.6h0M163.9 156.1h0M359.9 188.7h0M185.1 448.7h0M100.2 375.7h0M330.2 163.4h0M157.8 159.4h0M197.7 452.7h0M251.7 136.8h0M401.8 289.1h0M282.8 453.0h0M377.8 212.3h0M390.5 237.6h0M355.1 411.3h0M259.7 457.5h0M129.3 181.3h0M382.3 219.9h0M167.5 154.0h0M350.4 179.1h0M79.8 301.8h0M397.5 258.8h0M279.5 453.9h0M86.4 252.1h0M79.9 299.3h0M101.1 377.3h0M243.7 136.4h0M369.8 394.4h0M80.9 314.7h0M214.6 456.5h0M261.9 457.3h0M335.9 167.4h0M328.0 162.0h0M400.0 323.4h0M85.2 256.4h0M128.6 412.8h0M82.1 324.2h0M118.9 402.8h0M198.3 453.0h0M331.4 431.0h0M238.0 136.4h0M393.7 349.0h0M332.2 430.4h0M186.8 449.4h0M323.5 436.0h0M84.3 259.6h0M379.9 215.4h0M214.5 138.2h0M259.8 457.8h0M334.7 166.1h0M201.8 140.9h0M84.2 335.2h0M83.3 263.3h0M110.3 202.7h0M184.4 448.5h0M98.9 373.8h0M298.4 448.3h0M80.0 306.6h0M274.6 455.4h0M157.6 159.2h0M362.2 190.8h0M380.2 215.7h0M131.6 179.0h0M321.1 437.5h0M143.3 169.2h0M369.1 395.5h0M305.3 149.4h0M291.1 450.8h0M83.1 264.7h0M334.1 429.5h0M90.8 356.5h0M104.3 211.6h0M367.8 397.4h0M276.6 140.0h0M401.9 307.9h0M267.3 138.2h0M386.4 227.5h0M80.1 285.1h0M80.5 312.9h0M92.4 360.3h0M335.0 166.4h0M373.4 389.6h0M324.3 159.3h0M145.7 427.8h0M401.7 281.4h0M344.5 421.3h0M364.1 401.8h0M202.3 140.7h0M145.2 167.4h0M402.6 292.2h0M84.7 338.3h0M89.6 354.2h0M85.3 340.7h0M96.2 225.8h0M194.9 452.4h0M272.1 138.9h0M81.8 325.0h0M386.2 226.7h0M147.6 429.3h0M201.9 140.6h0M225.9 136.6h0M375.3 387.5h0M396.4 341.7h0M104.7 384.2h0M365.2 193.9h0M160.5 157.3h0M303.0 148.2h0M145.1 167.5h0M264.0 457.4h0M108.0 389.2h0M109.2 204.0h0M175.9 445.3h0M285.9 142.2h0M94.4 365.7h0M400.6 323.5h0M159.5 157.8h0M367.9 397.7h0M192.3 451.6h0M251.4 136.1h0M399.5 266.2h0M348.8 417.9h0M91.4 358.7h0M395.9 343.9h0M204.3 140.0h0M334.7 429.2h0M399.6 329.1h0M381.3 377.7h0M402.4 290.6h0M87.4 246.9h0M131.4 178.3h0M319.6 155.9h0M393.4 242.7h0M394.7 246.9h0M363.4 403.4h0M395.9 344.7h0M401.5 275.6h0M233.2 459.3h0M393.7 351.2h0M312.7 152.4h0M329.6 432.9h0M144.7 427.5h0M168.7 442.3h0M139.5 171.5h0M117.4 192.9h0M373.9 205.2h0M88.7 242.5h0M338.2 168.1h0M100.5 377.9h0M392.7 354.1h0M381.2 378.4h0M282.2 140.8h0M279.8 454.6h0M85.1 253.9h0M105.7 386.3h0M104.5 384.4h0M388.7 363.5h0M400.6 324.4h0M292.3 451.0h0M105.8 208.6h0M195.4 142.1h0M90.1 238.6h0M131.3 178.4h0M132.9 417.8h0M177.6 148.6h0M92.9 362.8h0M399.8 266.7h0M344.3 422.0h0M174.5 445.0h0M187.5 144.8h0M402.7 309.2h0M358.2 409.7h0M402.7 284.2h0M257.7 136.2h0M290.1 451.9h0M185.9 144.9h0M223.6 458.6h0M283.0 141.0h0M146.0 428.9h0M78.9 297.3h0M83.0 261.3h0M209.1 138.7h0M324.1 436.8h0M106.0 207.8h0M264.2 137.0h0M243.1 135.4h0M270.0 138.0h0M95.8 225.3h0M312.8 443.0h0M148.7 430.8h0M270.4 138.2h0M323.1 437.2h0M270.0 138.1h0M164.4 440.5h0M140.3 424.5h0M398.4 336.2h0M397.5 255.3h0M191.6 143.1h0M82.7 332.6h0M186.8 144.7h0M277.7 139.6h0M261.7 458.2h0M279.3 140.0h0M403.0 303.1h0M369.1 198.1h0M95.4 226.3h0M84.5 255.2h0M163.8 440.2h0M87.3 349.6h0M401.2 324.5h0M273.3 456.6h0M277.7 139.3h0M102.6 212.5h0M82.1 264.6h0M160.7 438.7h0M400.3 266.9h0M399.6 262.8h0M153.2 434.2h0M389.3 231.5h0M96.4 223.5h0M189.4 451.3h0M376.9 386.3h0M81.5 327.8h0M80.8 271.7h0M354.8 181.5h0M187.1 450.8h0M80.2 319.9h0M279.5 455.3h0M337.0 166.7h0M79.1 286.3h0M95.3 225.5h0M187.4 450.7h0M170.9 151.0h0M83.3 335.9h0M324.0 437.0h0M180.0 447.9h0M396.4 250.5h0M367.8 196.1h0M82.1 330.5h0M391.9 357.3h0M186.1 144.7h0M202.8 455.3h0M194.8 141.8h0M181.4 146.4h0M273.8 138.6h0M357.8 184.2h0M355.4 413.2h0M78.4 304.1h0M386.3 224.3h0M401.8 321.6h0M366.9 194.3h0M84.2 340.2h0M118.5 190.4h0M403.6 294.5h0M128.4 414.7h0M399.0 259.2h0M229.0 459.7h0M380.6 213.9h0M396.0 248.2h0M182.2 145.9h0M260.9 459.0h0M318.4 154.4h0M223.4 459.3h0M363.9 404.0h0M346.3 173.5h0M360.0 186.8h0M81.4 328.3h0M302.5 146.9h0M140.2 425.3h0M250.5 135.2h0M281.1 139.8h0M347.2 174.5h0M105.0 208.2h0M214.9 137.0h0M230.6 135.3h0M252.6 135.3h0M138.9 424.1h0M78.4 294.7h0M231.6 459.8h0M295.9 450.6h0M80.8 268.8h0M313.7 443.2h0M111.5 396.2h0M182.3 449.3h0M391.5 234.8h0M395.6 245.8h0M400.1 262.6h0M103.6 385.0h0M147.4 164.3h0M391.9 236.0h0M88.6 355.2h0M403.9 297.5h0M341.3 169.1h0M88.0 241.5h0M142.5 427.3h0M91.8 363.1h0M316.9 153.5h0M134.1 174.6h0M228.3 459.9h0M158.3 157.1h0M311.2 150.5h0M286.3 141.2h0M345.4 422.6h0M348.7 175.4h0M81.9 262.7h0M297.9 450.2h0M392.5 357.4h0M345.4 172.4h0M284.6 140.6h0M298.0 145.0h0M220.3 135.9h0M192.5 452.9h0M322.0 156.1h0M178.2 147.2h0M99.6 216.7h0M290.4 452.9h0M86.9 243.6h0M195.3 454.1h0M79.0 279.1h0M85.7 347.1h0M117.4 403.9h0M397.6 342.9h0M187.6 451.7h0M394.5 242.2h0M146.2 430.2h0M393.8 240.1h0M142.2 167.7h0M178.6 448.1h0M147.7 163.7h0M228.6 134.9h0M243.0 460.7h0M372.4 394.1h0M97.1 220.7h0M298.5 450.3h0M154.0 159.4h0M390.4 363.2h0M341.3 426.1h0M169.6 150.8h0M403.7 287.1h0M115.0 401.2h0M265.4 136.3h0M346.0 172.7h0M339.6 167.6h0M102.7 211.1h0M122.3 185.7h0M134.9 421.3h0M103.9 209.2h0M77.9 304.2h0M333.0 432.4h0M110.5 395.9h0M158.3 438.3h0M78.2 310.4h0M283.6 139.8h0M108.9 393.7h0M106.9 204.1h0M317.6 153.3h0M136.8 171.6h0M378.4 209.0h0M98.7 217.0h0M78.6 280.8h0M81.2 331.3h0M270.9 458.1h0M77.8 302.9h0M79.5 272.3h0M404.4 295.9h0M157.1 437.8h0M96.8 220.7h0M392.8 237.3h0M400.4 261.3h0M77.7 295.5h0M371.7 395.6h0M150.6 161.5h0M391.9 360.4h0M78.0 287.6h0M226.9 460.2h0M180.1 449.0h0M209.1 457.6h0M359.9 185.6h0M77.6 301.3h0M170.2 150.3h0M326.7 158.5h0M257.1 460.4h0M134.0 421.3h0M255.8 460.6h0M268.2 458.7h0M121.6 185.5h0M77.7 308.2h0M93.4 368.2h0M145.5 164.6h0M393.7 238.5h0M315.5 151.8h0M288.0 454.1h0M391.3 362.5h0M248.1 461.0h0M187.6 452.2h0M371.9 395.8h0M398.4 252.6h0M297.0 143.8h0M266.2 459.2h0M355.5 414.4h0M387.2 370.9h0M363.9 189.6h0M349.5 175.0h0M182.9 450.4h0M135.8 422.8h0M400.6 333.9h0M272.1 458.1h0M115.9 402.9h0M115.1 193.1h0M84.1 250.7h0M77.4 298.4h0M398.6 341.2h0M119.8 407.7h0M103.0 386.0h0M361.7 408.5h0M314.0 444.2h0M323.4 439.3h0M77.2 292.2h0M79.2 271.1h0M396.2 245.2h0M325.5 437.9h0M77.7 283.1h0M399.5 338.8h0M207.1 137.2h0M139.4 169.0h0M217.0 135.5h0M80.7 262.9h0M103.4 386.7h0M404.6 307.2h0M255.6 134.3h0M92.6 367.2h0M112.8 195.5h0M78.8 275.2h0M355.8 414.6h0M77.3 301.2h0M122.8 411.1h0M391.4 232.6h0M403.8 278.1h0M171.4 445.8h0M377.9 207.6h0M87.3 240.6h0M287.4 140.2h0M262.7 460.3h0M404.6 309.5h0M255.6 461.1h0M353.9 178.5h0M86.9 354.2h0M398.9 252.9h0M228.7 133.9h0M115.9 403.8h0M99.2 380.3h0M264.7 459.8h0M84.7 347.2h0M219.7 134.6h0M187.8 452.7h0M312.7 149.8h0M240.7 461.6h0M303.5 145.8h0M166.0 151.5h0M291.1 141.2h0M403.1 323.1h0M249.6 461.4h0M99.1 214.8h0M177.4 146.1h0M308.0 147.6h0M315.8 151.3h0M236.4 133.5h0M244.0 133.4h0M94.4 223.8h0M308.7 447.2h0M374.9 392.7h0M379.8 209.3h0M83.2 343.3h0M185.7 142.7h0M402.8 269.2h0M365.0 405.2h0M162.7 442.1h0M87.7 238.0h0M77.7 279.2h0M104.9 389.8h0M101.5 210.5h0M370.4 399.0h0M403.5 321.8h0M82.7 253.5h0M308.3 447.5h0M291.5 453.8h0M88.5 235.9h0M91.7 228.8h0M76.8 305.7h0M404.4 280.7h0M214.6 135.2h0M374.0 394.3h0M268.0 459.5h0M296.6 452.1h0M320.5 153.6h0M211.3 135.8h0M387.7 222.8h0M354.0 417.3h0M398.1 248.0h0M84.8 245.2h0M380.3 385.1h0M379.5 386.4h0M269.8 135.5h0M130.6 419.6h0M172.1 447.1h0M260.4 461.1h0M271.2 459.2h0M364.1 188.0h0M389.4 226.4h0M188.3 141.7h0M264.7 460.4h0M267.7 460.0h0M236.0 132.9h0M375.2 202.2h0M309.0 447.5h0M405.2 308.8h0M387.7 372.2h0M360.2 411.0h0M233.1 461.9h0M288.8 139.8h0M80.7 260.2h0M393.4 359.4h0M381.4 383.6h0M254.5 461.8h0M275.1 458.7h0M391.6 230.6h0M144.4 164.0h0M390.6 228.3h0M76.4 287.2h0M215.6 134.5h0M77.7 274.0h0M387.4 373.0h0M400.9 257.1h0M366.6 190.8h0M175.8 449.0h0M270.5 135.2h0M260.2 461.3h0M159.7 440.8h0M77.8 274.5h0M107.3 393.9h0M348.1 422.8h0M158.4 154.9h0M370.5 195.5h0M81.3 339.0h0M147.3 161.9h0M308.2 146.8h0M278.9 457.9h0M395.1 239.2h0M111.9 400.4h0M198.7 457.2h0M405.3 314.8h0M403.7 325.6h0M204.1 458.5h0M246.9 132.4h0M190.3 454.5h0M174.7 146.2h0M352.2 419.6h0M145.2 431.9h0M146.7 162.0h0M181.5 143.3h0M78.5 268.2h0M397.5 350.3h0M82.2 252.6h0M351.0 174.4h0M145.9 432.4h0M147.3 161.6h0M374.6 394.6h0M171.1 147.9h0M261.2 133.6h0M210.8 135.2h0M366.1 189.8h0M328.4 157.5h0M112.1 193.7h0M146.5 433.1h0M362.7 185.6h0M99.2 382.4h0M78.9 265.0h0M403.4 329.0h0M384.8 379.0h0M141.6 165.3h0M215.8 134.0h0M406.1 289.6h0M297.5 452.8h0M139.8 166.6h0M171.5 147.5h0M177.1 450.0h0M91.9 368.9h0M204.1 136.4h0M96.0 218.2h0M305.1 144.9h0M306.3 449.5h0M405.9 310.7h0M215.1 460.8h0M405.4 278.8h0M75.7 298.8h0M214.3 134.1h0M378.7 205.7h0M313.3 446.5h0M218.9 133.3h0M360.9 183.1h0M91.2 368.2h0M75.4 303.4h0M116.0 188.9h0M253.9 132.4h0M284.9 137.7h0M84.4 244.0h0M399.7 344.8h0M406.4 304.8h0M278.7 458.8h0M351.0 173.8h0M176.4 145.1h0M130.4 174.1h0M275.7 459.3h0M113.7 403.5h0M75.5 302.0h0M200.7 137.0h0M403.1 263.1h0M180.1 143.3h0M346.8 169.6h0M400.4 251.7h0M88.5 232.3h0M305.5 450.3h0M75.2 293.7h0M87.1 235.5h0M404.1 267.5h0M314.5 446.1h0M405.5 276.2h0M106.4 394.4h0M260.4 462.3h0M388.5 373.6h0M395.1 236.1h0M247.7 463.3h0M297.5 141.6h0M391.1 226.9h0M375.1 395.0h0M229.1 132.0h0M406.6 308.1h0M75.5 307.4h0M378.8 390.5h0M142.6 431.4h0M82.3 346.8h0M75.8 314.4h0M401.7 339.6h0M238.4 463.6h0M137.6 427.4h0M129.7 420.8h0M258.0 462.8h0M387.6 375.8h0M216.3 133.3h0M184.1 453.6h0M204.4 135.5h0M297.6 141.4h0M337.4 432.9h0M258.6 462.7h0M372.6 196.0h0M359.3 180.8h0M205.2 459.7h0M135.2 425.6h0M237.8 463.8h0M111.9 192.7h0M261.8 462.5h0M179.5 143.0h0M216.3 461.9h0M76.0 275.1h0M162.6 444.2h0M268.8 133.5h0M348.8 424.2h0M190.5 139.1h0M391.6 226.8h0M203.4 135.5h0M207.7 460.5h0M169.9 448.0h0M83.2 350.0h0M384.5 381.6h0M107.1 396.4h0M357.0 416.7h0M308.4 449.5h0M82.4 247.7h0M339.3 162.9h0M296.7 140.5h0M396.8 356.8h0M290.8 456.4h0M237.5 130.8h0M249.1 463.8h0M125.2 177.8h0M397.3 239.8h0M204.1 460.1h0M74.4 295.9h0M287.2 137.4h0M352.6 173.9h0M110.2 400.8h0M144.3 433.3h0M403.3 259.6h0M406.8 280.0h0M266.5 132.9h0M191.6 456.7h0M387.1 217.5h0M184.1 454.5h0M365.5 408.8h0M91.6 223.3h0M407.5 308.5h0M115.2 187.8h0M324.8 441.9h0M401.2 343.9h0M403.3 336.4h0M74.2 298.7h0M174.8 144.3h0M75.1 280.5h0M296.9 454.7h0M393.1 228.6h0M239.8 464.5h0M186.6 139.9h0M144.2 433.6h0M298.5 140.9h0M100.9 206.3h0M75.3 275.3h0M84.2 239.3h0M407.8 308.8h0M378.8 202.9h0M181.3 141.4h0M393.2 228.4h0M207.4 461.1h0M355.8 176.1h0M301.1 453.6h0M244.6 464.5h0M198.9 135.7h0M318.8 149.7h0M73.9 300.4h0M80.3 343.2h0M402.9 338.3h0M200.7 459.8h0M406.6 275.3h0M380.8 389.5h0M105.8 396.4h0M191.0 457.3h0M273.4 461.6h0M78.7 256.3h0M219.9 131.4h0M169.9 146.0h0M308.4 450.6h0M331.7 156.9h0M271.0 132.9h0M225.7 130.7h0M356.4 418.6h0M273.1 461.8h0M96.3 213.5h0M315.4 147.5h0M103.7 201.7h0M391.1 223.0h0M80.8 346.7h0M92.1 220.7h0M74.2 280.6h0M402.0 344.1h0M402.7 341.8h0M117.2 184.4h0M151.8 155.5h0M208.1 461.9h0M97.2 211.2h0M116.0 409.2h0M127.8 173.7h0M113.7 188.4h0M408.3 285.9h0M403.6 256.9h0M87.3 364.3h0M305.3 142.4h0M181.4 454.4h0M74.5 318.6h0M188.9 457.1h0M393.7 228.1h0M385.1 211.5h0M370.5 404.4h0M122.9 416.7h0M373.9 400.0h0M73.3 306.0h0M74.0 280.9h0M327.7 153.7h0M280.9 460.6h0M99.3 207.7h0M408.8 291.8h0M399.6 353.2h0M183.8 139.4h0M214.3 463.4h0M335.2 158.3h0M215.1 463.6h0M235.8 465.5h0M323.1 150.9h0M173.9 451.7h0M393.3 226.5h0M191.0 137.0h0M184.8 456.1h0M172.1 451.0h0M344.6 430.0h0M185.5 138.9h0M79.2 342.9h0M331.7 439.4h0M115.9 184.9h0M80.2 347.4h0M129.9 171.1h0M401.6 348.1h0M396.6 232.9h0M279.4 133.6h0M376.7 198.0h0M195.5 135.3h0M146.0 436.5h0M365.1 183.8h0M197.0 134.9h0M155.7 442.8h0M74.1 319.3h0M101.4 202.7h0M141.4 161.3h0M72.9 310.6h0M110.8 404.6h0M389.4 217.2h0M195.7 135.0h0M136.9 164.9h0M390.8 375.2h0M319.6 446.8h0M407.8 321.6h0M229.4 129.3h0M398.9 238.6h0M349.3 426.9h0M280.6 461.5h0M401.7 349.6h0M142.5 434.8h0M393.9 369.3h0M113.3 408.0h0M91.8 376.5h0M405.7 335.1h0M149.4 439.5h0M307.1 142.0h0M115.9 184.0h0M82.2 355.2h0M73.0 315.8h0M409.8 293.6h0M402.3 247.7h0M317.3 448.5h0M405.0 339.3h0M405.4 257.7h0M388.5 214.6h0M219.4 129.7h0M393.4 223.9h0M318.7 447.7h0M375.1 400.5h0M88.2 370.1h0M372.0 404.7h0M106.5 195.0h0M198.7 133.8h0M407.4 329.0h0M76.2 257.8h0M279.0 132.5h0M185.2 457.3h0M346.7 165.1h0M76.6 338.5h0M395.2 227.4h0M306.6 453.6h0M353.4 424.3h0M149.3 155.2h0M315.5 449.6h0M407.7 268.3h0M129.5 169.6h0M72.9 320.6h0M410.4 287.5h0M139.3 161.6h0M392.8 221.7h0M71.6 303.8h0M164.4 448.9h0M93.9 212.9h0M76.0 337.3h0M79.5 245.6h0M407.7 328.4h0M363.6 180.1h0M248.3 127.7h0M113.3 185.5h0M76.2 256.5h0M166.2 145.0h0M393.2 222.3h0M410.9 296.1h0M216.0 129.6h0M410.8 290.4h0M162.6 448.1h0M187.8 136.1h0M107.5 192.2h0M293.0 135.6h0M211.8 130.0h0M333.5 440.2h0M292.8 135.5h0M407.3 261.0h0M366.8 183.2h0M110.0 406.1h0M206.0 131.1h0M277.1 463.8h0M390.0 379.6h0M338.3 157.5h0M411.3 290.0h0M71.5 314.4h0M381.0 200.2h0M371.7 406.8h0M79.9 241.9h0M201.7 463.3h0M186.3 458.8h0M406.6 257.7h0M286.9 461.5h0M358.9 421.0h0M108.0 404.2h0M147.5 154.8h0M388.6 211.7h0M295.0 135.8h0M109.3 189.1h0M364.4 415.5h0M395.9 225.9h0M132.0 166.2h0M128.5 425.9h0M181.8 137.3h0M394.4 222.5h0M79.7 241.0h0M74.6 259.0h0M142.9 157.6h0M201.6 463.7h0M265.5 128.4h0M409.5 326.0h0M105.8 402.2h0M411.3 280.8h0M132.2 429.7h0M70.2 288.8h0M354.8 425.3h0M334.9 154.4h0M114.1 182.8h0M281.0 463.9h0M352.3 427.6h0M394.2 373.8h0M217.1 467.3h0M153.1 150.4h0M263.9 127.6h0M81.4 359.9h0M200.7 130.9h0M136.5 433.3h0M384.3 391.5h0M101.9 397.6h0M160.6 449.2h0M184.7 135.5h0M395.8 371.4h0M404.1 244.3h0M350.7 429.5h0M80.8 236.2h0M405.4 346.6h0M69.6 289.1h0M374.1 405.9h0M118.5 177.1h0M69.5 287.7h0M355.5 169.3h0M344.5 434.7h0M314.6 142.3h0M99.2 200.5h0M182.6 459.1h0M115.2 180.1h0M153.1 445.4h0M341.6 157.9h0M253.1 125.7h0M115.1 414.9h0M160.4 145.4h0M250.8 469.5h0M69.5 284.5h0M170.2 454.7h0M296.4 460.9h0M344.0 159.2h0M110.8 410.6h0M348.3 432.5h0M354.7 427.1h0M72.6 260.4h0M411.4 270.5h0M345.9 160.4h0M93.8 207.2h0M167.2 141.4h0M313.1 454.3h0M256.1 125.7h0M203.1 129.0h0M332.5 150.8h0M208.1 467.2h0M370.3 182.7h0M70.8 266.9h0M108.5 408.6h0M397.7 370.4h0M299.1 134.6h0M189.6 132.2h0M174.5 137.6h0M77.9 355.4h0M368.9 180.8h0M379.1 401.7h0M286.4 130.5h0M72.0 259.3h0M180.6 135.0h0M216.1 469.1h0M375.9 188.6h0M71.6 260.0h0M394.8 217.4h0M112.6 180.5h0M372.4 411.1h0M228.2 470.7h0M390.2 386.3h0M68.4 279.1h0M413.3 275.3h0M115.7 176.8h0M106.8 408.1h0M179.4 460.0h0M80.4 230.7h0M276.9 467.5h0M403.0 234.1h0M68.0 277.5h0M230.4 123.6h0M73.0 251.5h0M161.4 452.5h0M305.3 135.8h0M382.2 399.8h0M71.2 337.7h0M394.4 380.3h0M302.1 134.3h0M83.3 223.0h0M133.1 434.5h0M414.1 273.6h0M224.4 471.2h0M176.4 135.2h0M355.4 429.6h0M69.3 329.4h0M81.6 225.9h0M66.2 298.1h0M387.8 392.6h0M238.2 122.5h0M386.1 395.4h0M82.0 370.9h0M68.8 330.2h0M148.5 446.3h0M93.4 391.7h0M65.8 291.2h0M213.5 124.4h0M163.7 140.0h0M406.4 355.5h0M98.7 400.6h0M368.6 418.3h0M350.9 160.4h0M103.5 406.6h0M415.9 315.1h0M98.2 400.4h0M416.9 302.5h0M65.5 309.7h0M181.3 463.3h0M70.2 340.3h0M154.4 450.8h0M414.4 329.5h0M348.4 437.2h0M329.8 145.2h0M77.4 231.5h0M171.4 459.7h0M380.4 188.8h0M128.2 433.6h0M67.9 260.9h0M408.1 355.7h0M205.1 470.9h0M174.9 461.8h0M129.4 435.4h0M81.7 219.5h0M369.9 419.7h0M127.1 161.3h0M389.1 198.9h0M96.0 194.3h0M122.6 430.6h0M272.9 472.7h0M415.8 261.4h0M325.3 140.4h0M347.5 154.2h0M93.5 196.2h0M102.5 411.1h0M69.1 347.9h0M417.4 330.6h0M184.2 127.4h0M296.1 126.6h0M375.0 177.6h0M158.1 457.5h0M79.4 217.1h0M380.5 182.6h0M291.3 471.4h0M104.9 178.0h0M386.0 406.1h0M400.0 210.2h0M317.5 462.3h0M393.9 199.1h0M399.0 388.6h0M76.9 217.4h0M146.8 140.1h0M310.2 467.5h0M317.5 465.0h0M96.2 412.1h0M314.8 467.6h0M364.3 438.2h0M159.4 124.6h0" stroke="#fffd16" stroke-width="2.3" stroke-linecap="square" fill="none"/>
<path d="M63.5 474.5v-3M63.5 120.5v3M152.5 474.5v-3M152.5 120.5v3M240.5 474.5v-3M240.5 120.5v3M329.5 474.5v-3M329.5 120.5v3M418.5 474.5v-3M418.5 120.5v3M63.5 474.5h3M418.5 474.5h-3M63.5 439.5h3M418.5 439.5h-3M63.5 404.5h3M418.5 404.5h-3M63.5 368.5h3M418.5 368.5h-3M63.5 333.5h3M418.5 333.5h-3M63.5 297.5h3M418.5 297.5h-3M63.5 262.5h3M418.5 262.5h-3M63.5 226.5h3M418.5 226.5h-3M63.5 191.5h3M418.5 191.5h-3M63.5 155.5h3M418.5 155.5h-3M63.5 120.5h3M418.5 120.5h-3" stroke="#8a8a8a" stroke-width="1" fill="none" shape-rendering="crispEdges"/>
<rect x="63.5" y="120.5" width="355" height="354" fill="none" stroke="#b6b6b6" stroke-width="1" shape-rendering="crispEdges"/>
<text x="63.5" y="494" text-anchor="middle" class="tk">-1</text>
<text x="152.2" y="494" text-anchor="middle" class="tk">-0.5</text>
<text x="241.0" y="494" text-anchor="middle" class="tk">0</text>
<text x="329.8" y="494" text-anchor="middle" class="tk">0.5</text>
<text x="418.5" y="494" text-anchor="middle" class="tk">1</text>
<text x="57.5" y="480.8" text-anchor="end" class="tk">-1</text>
<text x="57.5" y="445.3" text-anchor="end" class="tk">-0.8</text>
<text x="57.5" y="409.9" text-anchor="end" class="tk">-0.6</text>
<text x="57.5" y="374.4" text-anchor="end" class="tk">-0.4</text>
<text x="57.5" y="339.0" text-anchor="end" class="tk">-0.2</text>
<text x="57.5" y="302.8" text-anchor="end" class="tk">0</text>
<text x="57.5" y="267.3" text-anchor="end" class="tk">0.2</text>
<text x="57.5" y="231.9" text-anchor="end" class="tk">0.4</text>
<text x="57.5" y="196.4" text-anchor="end" class="tk">0.6</text>
<text x="57.5" y="161.0" text-anchor="end" class="tk">0.8</text>
<text x="57.5" y="125.5" text-anchor="end" class="tk">1</text>
<text x="241" y="113" text-anchor="middle" class="ttl">Received data</text>
<text x="241" y="513.5" text-anchor="middle" class="lab">In-phase Amplitude</text>
<text transform="translate(25.7 297.5) rotate(-90)" text-anchor="middle" class="lab">Quadrature Amplitude</text>
<rect x="527.5" y="120.5" width="356" height="355" fill="#000"/>
<path d="M548.5 121V475M600.5 121V475M653.5 121V475M705.5 121V475M757.5 121V475M810.5 121V475M862.5 121V475M528 455.5H883M528 402.5H883M528 350.5H883M528 298.5H883M528 245.5H883M528 193.5H883M528 140.5H883" stroke="#2d2d2d" stroke-width="1" fill="none" shape-rendering="crispEdges"/>
<circle cx="730.9" cy="287.7" r="8" fill="#fffd16"/><circle cx="716.0" cy="272.8" r="8" fill="#fffd16"/><circle cx="695.0" cy="272.8" r="8" fill="#fffd16"/><circle cx="680.1" cy="287.7" r="8" fill="#fffd16"/><circle cx="680.1" cy="308.7" r="8" fill="#fffd16"/><circle cx="695.0" cy="323.6" r="8" fill="#fffd16"/><circle cx="716.0" cy="323.6" r="8" fill="#fffd16"/><circle cx="730.9" cy="308.7" r="8" fill="#fffd16"/><circle cx="767.9" cy="285.8" r="8" fill="#fffd16"/><circle cx="758.4" cy="262.8" r="8" fill="#fffd16"/><circle cx="740.9" cy="245.3" r="8" fill="#fffd16"/><circle cx="717.9" cy="235.8" r="8" fill="#fffd16"/><circle cx="693.1" cy="235.8" r="8" fill="#fffd16"/><circle cx="670.1" cy="245.3" r="8" fill="#fffd16"/><circle cx="652.6" cy="262.8" r="8" fill="#fffd16"/><circle cx="643.1" cy="285.8" r="8" fill="#fffd16"/><circle cx="643.1" cy="310.6" r="8" fill="#fffd16"/><circle cx="652.6" cy="333.6" r="8" fill="#fffd16"/><circle cx="670.1" cy="351.1" r="8" fill="#fffd16"/><circle cx="693.1" cy="360.6" r="8" fill="#fffd16"/><circle cx="717.9" cy="360.6" r="8" fill="#fffd16"/><circle cx="740.9" cy="351.1" r="8" fill="#fffd16"/><circle cx="758.4" cy="333.6" r="8" fill="#fffd16"/><circle cx="767.9" cy="310.6" r="8" fill="#fffd16"/><circle cx="808.3" cy="281.9" r="8" fill="#fffd16"/><circle cx="798.3" cy="250.9" r="8" fill="#fffd16"/><circle cx="779.1" cy="224.6" r="8" fill="#fffd16"/><circle cx="752.8" cy="205.4" r="8" fill="#fffd16"/><circle cx="721.8" cy="195.4" r="8" fill="#fffd16"/><circle cx="689.2" cy="195.4" r="8" fill="#fffd16"/><circle cx="658.2" cy="205.4" r="8" fill="#fffd16"/><circle cx="631.9" cy="224.6" r="8" fill="#fffd16"/><circle cx="612.7" cy="250.9" r="8" fill="#fffd16"/><circle cx="602.7" cy="281.9" r="8" fill="#fffd16"/><circle cx="602.7" cy="314.5" r="8" fill="#fffd16"/><circle cx="612.7" cy="345.5" r="8" fill="#fffd16"/><circle cx="631.9" cy="371.8" r="8" fill="#fffd16"/><circle cx="658.2" cy="391.0" r="8" fill="#fffd16"/><circle cx="689.2" cy="401.0" r="8" fill="#fffd16"/><circle cx="721.8" cy="401.0" r="8" fill="#fffd16"/><circle cx="752.8" cy="391.0" r="8" fill="#fffd16"/><circle cx="779.1" cy="371.8" r="8" fill="#fffd16"/><circle cx="798.3" cy="345.5" r="8" fill="#fffd16"/><circle cx="808.3" cy="314.5" r="8" fill="#fffd16"/><circle cx="854.1" cy="274.7" r="8" fill="#fffd16"/><circle cx="839.5" cy="229.9" r="8" fill="#fffd16"/><circle cx="811.9" cy="191.8" r="8" fill="#fffd16"/><circle cx="773.8" cy="164.2" r="8" fill="#fffd16"/><circle cx="729.0" cy="149.6" r="8" fill="#fffd16"/><circle cx="682.0" cy="149.6" r="8" fill="#fffd16"/><circle cx="637.2" cy="164.2" r="8" fill="#fffd16"/><circle cx="599.1" cy="191.8" r="8" fill="#fffd16"/><circle cx="571.5" cy="229.9" r="8" fill="#fffd16"/><circle cx="556.9" cy="274.7" r="8" fill="#fffd16"/><circle cx="556.9" cy="321.7" r="8" fill="#fffd16"/><circle cx="571.5" cy="366.5" r="8" fill="#fffd16"/><circle cx="599.1" cy="404.6" r="8" fill="#fffd16"/><circle cx="637.2" cy="432.2" r="8" fill="#fffd16"/><circle cx="682.0" cy="446.8" r="8" fill="#fffd16"/><circle cx="729.0" cy="446.8" r="8" fill="#fffd16"/><circle cx="773.8" cy="432.2" r="8" fill="#fffd16"/><circle cx="811.9" cy="404.6" r="8" fill="#fffd16"/><circle cx="839.5" cy="366.5" r="8" fill="#fffd16"/><circle cx="854.1" cy="321.7" r="8" fill="#fffd16"/><path d="M738.2 278.9h0M731.7 280.0h0M723.1 279.5h0M732.3 295.2h0M733.5 274.2h0M736.3 293.6h0M734.3 278.2h0M727.5 293.7h0M734.4 294.1h0M722.1 286.9h0M726.7 296.0h0M721.4 286.0h0M722.8 285.6h0M726.4 293.9h0M721.9 288.3h0M727.3 274.4h0M737.9 284.2h0M723.2 292.0h0M726.4 280.5h0M718.8 287.2h0M724.5 278.6h0M735.5 295.7h0M729.8 298.0h0M726.0 279.3h0M724.0 288.7h0M737.2 281.0h0M743.3 295.2h0M735.6 282.9h0M739.8 291.7h0M731.5 294.4h0M722.6 285.8h0M733.0 294.2h0M723.6 290.7h0M727.6 298.3h0M734.6 293.7h0M734.6 294.4h0M720.8 284.0h0M721.2 296.3h0M736.7 283.6h0M718.4 282.9h0M725.4 283.7h0M730.6 295.5h0M729.9 295.4h0M726.3 281.9h0M725.5 295.1h0M737.0 291.0h0M722.2 291.2h0M732.6 297.6h0M722.8 285.7h0M717.9 280.1h0M721.6 289.0h0M737.8 288.0h0M726.7 293.1h0M722.2 288.9h0M723.9 289.7h0M737.9 294.8h0M736.8 284.5h0M731.1 295.3h0M732.8 281.4h0M734.9 293.8h0M725.9 274.2h0M729.5 294.8h0M727.9 278.3h0M730.2 296.9h0M723.2 285.8h0M741.5 287.5h0M727.6 295.0h0M735.3 282.5h0M727.6 298.3h0M737.4 289.5h0M721.7 290.0h0M736.5 283.9h0M719.2 284.5h0M733.2 279.9h0M734.3 295.0h0M728.5 299.0h0M724.4 292.3h0M737.9 294.3h0M736.3 292.6h0M717.6 287.0h0M728.9 279.2h0M735.7 278.9h0M738.0 289.3h0M730.7 294.3h0M725.4 282.4h0M733.0 294.6h0M736.1 281.7h0M731.7 297.8h0M727.7 281.6h0M724.3 282.4h0M725.9 279.9h0M737.1 283.3h0M723.5 282.9h0M735.6 292.4h0M731.4 280.7h0M737.0 292.6h0M736.5 280.1h0M740.4 285.9h0M725.7 294.8h0M724.3 282.7h0M742.4 282.6h0M735.7 275.5h0M722.3 279.1h0M720.9 291.3h0M723.1 288.2h0M729.9 299.7h0M729.9 295.4h0M735.0 281.7h0M723.1 287.8h0M735.1 293.1h0M731.5 295.2h0M729.8 276.3h0M737.2 284.2h0M735.6 275.2h0M728.3 294.4h0M741.0 282.1h0M722.9 286.2h0M726.5 282.4h0M723.5 286.4h0M734.5 282.1h0M725.1 283.7h0M730.9 296.5h0M737.1 293.6h0M735.9 281.7h0M725.7 293.9h0M739.3 282.2h0M724.7 283.6h0M737.2 294.8h0M730.2 295.8h0M734.7 294.2h0M722.6 285.7h0M736.3 283.7h0M723.9 288.5h0M722.1 282.6h0M724.1 295.4h0M740.0 281.6h0M737.8 286.9h0M732.5 295.2h0M720.6 284.7h0M738.2 279.1h0M724.0 285.8h0M728.5 281.3h0M719.7 286.4h0M730.7 297.1h0M731.1 298.9h0M739.5 287.3h0M730.5 294.7h0M723.7 289.6h0M740.0 296.5h0M728.0 278.0h0M715.3 263.5h0M713.5 281.2h0M712.5 262.4h0M709.8 277.3h0M709.4 272.2h0M706.3 275.9h0M715.3 285.7h0M710.3 266.9h0M708.5 274.1h0M718.7 285.0h0M720.1 281.5h0M724.3 270.3h0M706.7 273.7h0M724.2 270.4h0M710.3 280.8h0M713.1 262.8h0M710.5 268.7h0M712.9 266.8h0M707.9 267.7h0M715.2 280.4h0M713.8 279.5h0M718.2 265.4h0M707.0 277.2h0M705.2 265.7h0M720.2 262.3h0M721.3 264.9h0M720.8 262.0h0M713.1 280.1h0M710.5 266.9h0M710.6 266.1h0M722.4 274.7h0M725.8 273.1h0M729.6 272.1h0M710.1 262.2h0M704.4 270.5h0M709.8 277.4h0M719.5 282.8h0M722.1 277.5h0M721.3 281.6h0M714.8 280.5h0M707.9 268.4h0M711.2 266.4h0M720.8 263.9h0M708.5 281.2h0M711.6 260.8h0M709.0 273.3h0M717.7 282.8h0M722.7 281.6h0M714.8 282.0h0M718.6 280.7h0M725.0 278.5h0M717.4 281.6h0M704.4 274.1h0M709.0 265.9h0M708.3 266.6h0M717.7 265.5h0M720.7 264.3h0M720.8 266.9h0M723.6 273.2h0M707.8 276.1h0M716.2 280.7h0M720.2 278.6h0M712.4 281.8h0M725.0 271.7h0M709.3 273.8h0M720.6 279.6h0M725.2 274.7h0M717.8 266.3h0M724.7 268.9h0M727.1 270.8h0M724.7 268.9h0M708.9 277.6h0M711.4 278.4h0M712.8 286.1h0M724.5 275.6h0M720.3 281.3h0M711.2 278.4h0M716.1 261.1h0M717.1 262.6h0M717.6 262.2h0M723.3 269.8h0M709.0 279.4h0M723.5 273.6h0M705.1 271.5h0M717.4 265.6h0M716.4 282.1h0M726.3 266.6h0M721.4 265.1h0M724.1 265.9h0M708.3 274.3h0M731.3 263.9h0M712.0 281.0h0M709.3 278.2h0M706.7 273.0h0M725.4 269.5h0M709.6 270.0h0M708.8 271.3h0M707.6 280.6h0M719.5 267.1h0M719.1 281.8h0M711.0 281.0h0M713.4 280.0h0M720.7 278.4h0M722.1 269.3h0M725.8 267.5h0M706.1 270.0h0M709.2 273.2h0M705.0 275.4h0M717.6 280.6h0M716.6 264.8h0M722.7 273.0h0M709.4 273.7h0M729.2 274.4h0M724.7 273.0h0M717.1 279.6h0M707.1 267.9h0M710.4 269.0h0M710.9 264.9h0M713.3 280.3h0M724.5 277.6h0M721.4 277.7h0M712.1 279.2h0M722.4 268.4h0M709.1 278.4h0M715.7 265.2h0M705.7 274.5h0M727.2 273.7h0M709.7 269.5h0M721.4 265.6h0M725.0 268.0h0M711.3 278.1h0M724.7 283.5h0M718.9 282.6h0M722.0 268.3h0M719.5 266.7h0M709.0 278.4h0M712.9 279.1h0M712.9 281.6h0M719.3 265.0h0M722.6 273.5h0M719.6 280.9h0M709.8 275.5h0M718.0 281.9h0M723.6 269.6h0M712.8 280.6h0M717.4 281.5h0M716.5 279.9h0M687.2 267.1h0M685.9 278.9h0M698.0 279.9h0M685.2 273.0h0M697.1 281.3h0M681.7 275.0h0M700.6 263.5h0M689.9 266.1h0M698.7 265.9h0M690.6 265.8h0M690.3 278.9h0M701.0 278.6h0M699.8 261.9h0M681.5 278.9h0M692.2 286.6h0M688.1 275.8h0M694.2 283.9h0M697.7 262.8h0M702.5 273.5h0M691.0 266.0h0M687.8 270.9h0M699.5 267.6h0M691.0 284.2h0M692.2 263.9h0M689.9 278.2h0M689.8 267.3h0M687.0 274.6h0M701.9 277.0h0M702.6 270.5h0M694.9 280.4h0M690.6 281.7h0M698.5 266.5h0M701.8 269.0h0M698.7 265.8h0M688.9 266.0h0M686.6 268.6h0M701.3 270.1h0M684.0 268.3h0M688.2 277.8h0M695.8 265.9h0M704.6 280.5h0M686.5 270.2h0M704.0 274.5h0M689.3 266.0h0M688.5 266.5h0M689.9 278.2h0M699.1 279.5h0M686.7 265.6h0M694.7 261.9h0M702.1 276.1h0M689.6 277.0h0M690.1 267.1h0M698.5 266.5h0M690.7 285.0h0M691.5 266.9h0M691.5 264.4h0M691.6 279.3h0M687.9 274.2h0M702.2 276.6h0M699.0 266.6h0M688.6 276.3h0M700.8 268.9h0M699.3 279.0h0M695.8 262.9h0M690.2 278.0h0M698.6 278.7h0M700.3 278.3h0M700.1 263.5h0M697.6 279.5h0M697.4 266.2h0M698.0 282.7h0M688.9 268.7h0M693.3 261.6h0M693.6 279.7h0M688.1 280.8h0M698.1 264.1h0M695.3 280.3h0M702.8 277.2h0M688.1 274.4h0M696.5 264.6h0M685.6 267.4h0M701.8 268.9h0M694.1 266.0h0M693.4 279.3h0M688.8 276.7h0M704.8 275.0h0M703.8 265.9h0M699.2 281.8h0M691.3 278.4h0M688.2 274.1h0M690.8 265.8h0M705.2 280.0h0M701.8 270.1h0M701.0 269.0h0M703.6 276.2h0M690.3 266.4h0M690.5 284.4h0M703.5 266.4h0M690.8 267.1h0M701.2 266.1h0M687.8 276.8h0M699.5 266.4h0M696.9 265.8h0M705.2 274.0h0M687.5 277.9h0M690.3 278.3h0M703.2 269.9h0M695.1 266.1h0M687.1 275.9h0M693.8 282.3h0M700.6 279.6h0M685.2 279.1h0M700.1 277.9h0M686.7 273.1h0M695.9 282.2h0M701.3 277.4h0M687.7 266.3h0M688.9 267.0h0M701.1 268.8h0M695.8 264.5h0M689.8 281.1h0M688.6 269.0h0M692.5 266.2h0M700.7 268.8h0M694.2 265.8h0M703.1 273.8h0M669.7 286.3h0M685.3 292.2h0M683.6 280.6h0M677.9 274.8h0M679.9 278.7h0M686.1 282.4h0M673.2 283.7h0M673.8 281.9h0M674.6 283.5h0M687.1 292.2h0M687.6 292.7h0M687.5 285.8h0M678.9 297.1h0M678.2 295.1h0M671.3 285.3h0M681.2 280.6h0M675.3 282.1h0M684.1 278.7h0M689.9 290.8h0M676.4 280.9h0M674.1 291.8h0M679.3 278.2h0M688.2 286.8h0M679.9 296.2h0M676.7 293.6h0M676.1 293.2h0M691.9 286.2h0M688.7 283.5h0M672.9 280.4h0M674.2 283.0h0M670.9 284.0h0M673.4 296.8h0M686.0 295.3h0M675.7 294.6h0M683.3 279.2h0M673.8 285.3h0M680.3 294.6h0M688.0 290.1h0M673.6 295.7h0M681.7 280.7h0M688.2 277.6h0M689.2 284.7h0M680.4 295.2h0M684.9 282.2h0M686.8 282.6h0M672.0 287.5h0M686.8 290.3h0M691.3 284.0h0M674.6 292.6h0M685.2 282.7h0M683.0 281.0h0M672.6 284.1h0M681.3 297.2h0M676.0 281.9h0M672.6 285.4h0M679.5 298.9h0M686.8 286.2h0M666.4 287.7h0M685.6 291.4h0M673.5 287.8h0M681.6 280.6h0M682.7 295.4h0M682.3 296.8h0M679.0 294.6h0M670.9 279.3h0M679.1 277.8h0M672.6 286.9h0M688.5 290.2h0M688.8 289.0h0M682.3 280.4h0M673.1 285.7h0M687.6 285.2h0M672.1 287.2h0M682.0 295.8h0M673.5 286.3h0M681.8 274.1h0M687.6 293.9h0M673.3 289.0h0M684.0 297.0h0M686.0 280.0h0M670.1 283.8h0M683.1 279.2h0M680.0 280.3h0M677.9 294.1h0M686.9 291.3h0M687.2 282.9h0M679.0 294.4h0M672.6 294.3h0M682.2 280.8h0M685.2 295.0h0M671.6 288.9h0M672.0 280.5h0M673.7 292.0h0M673.3 290.5h0M689.7 286.1h0M687.5 279.6h0M676.7 279.4h0M677.7 279.9h0M668.8 288.6h0M677.8 280.9h0M679.6 278.8h0M686.4 291.1h0M681.4 294.6h0M675.0 277.6h0M684.5 282.6h0M673.5 285.5h0M683.6 281.5h0M682.5 279.2h0M670.4 289.3h0M686.7 285.3h0M675.9 293.8h0M679.5 280.7h0M675.1 295.8h0M683.4 281.5h0M672.4 290.1h0M689.1 285.1h0M687.5 291.4h0M673.4 288.4h0M671.7 283.8h0M676.1 294.1h0M676.1 280.6h0M672.9 292.4h0M675.6 292.9h0M672.1 294.2h0M673.5 281.5h0M671.8 292.8h0M685.0 294.9h0M670.7 284.4h0M676.8 295.9h0M676.0 282.4h0M673.9 284.8h0M688.2 285.7h0M680.6 280.4h0M676.0 282.1h0M673.6 290.3h0M669.3 286.4h0M687.7 285.7h0M687.4 289.7h0M672.6 298.6h0M683.3 277.8h0M667.4 282.1h0M688.3 289.0h0M690.0 288.9h0M677.0 294.0h0M683.1 296.0h0M693.7 282.4h0M674.8 293.2h0M689.6 291.1h0M684.5 281.4h0M692.3 284.9h0M682.2 298.0h0M688.1 291.1h0M685.9 282.9h0M682.7 301.1h0M680.9 319.9h0M680.5 298.5h0M680.4 299.7h0M671.5 303.4h0M679.4 315.3h0M677.3 301.7h0M673.4 297.3h0M673.5 308.6h0M685.4 312.8h0M685.7 301.7h0M676.5 302.2h0M670.3 306.2h0M688.4 310.1h0M672.4 310.5h0M684.9 301.2h0M687.4 300.3h0M682.5 317.2h0M672.0 302.3h0M685.7 304.1h0M687.9 304.8h0M688.0 306.8h0M690.1 313.3h0M668.0 305.5h0M688.4 309.3h0M674.7 314.3h0M681.2 316.0h0M689.2 310.0h0M682.0 299.3h0M675.1 300.4h0M688.4 300.9h0M690.0 302.6h0M678.8 319.3h0M671.9 303.9h0M680.0 317.7h0M674.0 306.1h0M679.5 298.1h0M693.4 312.1h0M674.3 304.3h0M679.3 316.1h0M678.1 302.3h0M683.9 317.6h0M690.7 312.4h0M674.4 301.5h0M678.7 315.6h0M679.3 301.3h0M686.8 313.4h0M676.9 300.4h0M671.8 304.9h0M683.8 317.7h0M675.2 302.9h0M674.5 304.9h0M690.0 312.0h0M672.2 311.7h0M676.3 316.2h0M683.8 301.3h0M671.0 306.2h0M683.6 297.6h0M677.5 315.7h0M676.1 303.0h0M682.6 322.0h0M679.1 301.2h0M684.3 315.3h0M685.9 313.6h0M671.6 299.6h0M669.1 302.2h0M671.9 307.8h0M676.1 317.7h0M680.5 301.2h0M673.8 306.6h0M687.0 307.9h0M667.5 311.2h0M674.9 304.7h0M685.5 317.2h0M687.7 294.3h0M672.8 309.5h0M673.0 311.1h0M682.5 299.8h0M685.7 304.1h0M678.9 302.1h0M688.4 314.5h0M675.4 303.7h0M685.0 295.5h0M687.1 303.9h0M670.4 305.8h0M676.2 301.6h0M675.5 313.7h0M681.9 302.0h0M686.4 314.3h0M683.8 317.1h0M688.3 306.9h0M685.3 315.2h0M679.0 316.5h0M677.7 302.2h0M671.7 312.6h0M684.9 314.4h0M676.3 301.2h0M679.0 299.9h0M683.9 314.2h0M677.6 325.6h0M687.0 308.6h0M679.4 317.7h0M671.1 303.5h0M672.7 314.8h0M671.8 312.8h0M676.4 315.4h0M671.9 308.5h0M687.5 302.7h0M685.3 302.1h0M687.1 306.7h0M679.1 299.4h0M669.7 312.7h0M675.1 302.8h0M673.4 307.6h0M677.7 320.0h0M675.1 304.4h0M687.3 307.1h0M686.4 314.8h0M679.3 296.8h0M688.9 304.1h0M673.6 307.3h0M688.0 310.4h0M682.3 295.7h0M684.5 303.5h0M672.0 310.8h0M674.3 303.6h0M672.3 296.5h0M679.3 297.7h0M673.3 317.3h0M675.8 313.8h0M679.9 293.9h0M684.3 301.5h0M674.9 304.6h0M679.8 299.0h0M678.2 323.3h0M687.6 311.6h0M680.1 316.0h0M685.7 314.3h0M682.1 302.2h0M673.9 305.7h0M692.3 333.6h0M703.7 319.4h0M700.3 318.2h0M701.4 328.0h0M699.0 315.9h0M701.9 319.9h0M704.1 329.9h0M699.3 316.3h0M695.9 331.1h0M686.7 320.1h0M693.4 315.6h0M687.1 316.2h0M699.6 317.4h0M707.4 319.4h0M699.1 331.9h0M688.8 327.2h0M689.2 328.6h0M684.8 317.7h0M688.5 319.4h0M692.8 333.3h0M691.6 312.7h0M702.1 329.3h0M693.4 311.5h0M703.5 328.3h0M687.2 324.1h0M695.7 312.7h0M694.9 332.6h0M697.7 314.8h0M691.4 317.5h0M697.3 330.5h0M687.5 326.1h0M701.5 325.1h0M698.8 330.2h0M697.9 315.7h0M699.3 330.2h0M683.9 319.4h0M704.3 325.8h0M705.9 315.2h0M692.5 330.3h0M689.7 317.5h0M697.8 316.0h0M695.5 335.0h0M689.8 315.8h0M695.0 315.6h0M687.2 324.1h0M700.2 318.4h0M694.6 331.9h0M696.4 332.1h0M689.3 328.4h0M686.4 323.1h0M704.8 328.2h0M705.1 321.1h0M689.9 329.0h0M687.4 325.1h0M701.8 325.3h0M702.1 320.5h0M697.4 331.1h0M701.1 316.9h0M700.0 315.4h0M696.1 314.2h0M703.7 323.7h0M702.5 320.1h0M700.1 317.5h0M698.8 311.7h0M702.4 327.1h0M700.8 319.5h0M695.1 332.8h0M705.0 330.5h0M701.7 319.1h0M689.7 331.7h0M706.4 327.3h0M682.4 326.5h0M692.7 331.2h0M699.5 329.7h0M705.1 327.8h0M703.3 325.5h0M695.8 331.6h0M688.5 316.9h0M687.9 326.2h0M700.7 330.3h0M702.6 331.4h0M707.6 317.3h0M686.3 325.4h0M704.7 320.4h0M702.7 326.9h0M693.4 316.6h0M695.7 316.3h0M700.1 330.0h0M687.0 323.7h0M686.3 321.1h0M685.8 318.1h0M688.4 328.9h0M698.3 317.8h0M687.2 317.6h0M687.7 327.5h0M705.0 325.4h0M691.2 315.5h0M685.9 319.1h0M695.1 316.9h0M687.4 317.0h0M688.3 331.1h0M689.2 319.7h0M688.7 332.2h0M691.1 314.8h0M700.8 319.1h0M687.0 326.5h0M695.3 312.5h0M700.3 312.0h0M692.5 317.2h0M698.8 317.6h0M703.2 332.7h0M702.0 318.8h0M692.3 315.9h0M701.6 325.0h0M688.6 327.9h0M697.4 316.3h0M705.2 319.9h0M702.4 325.2h0M688.8 318.4h0M688.4 324.1h0M702.8 319.0h0M695.6 314.6h0M693.4 331.6h0M692.7 330.6h0M688.5 320.6h0M701.2 328.3h0M690.0 328.7h0M701.4 321.8h0M705.4 335.1h0M690.0 318.6h0M689.5 327.4h0M688.7 328.9h0M688.8 326.9h0M702.0 318.5h0M694.2 333.8h0M701.9 327.5h0M702.1 325.9h0M688.1 319.8h0M697.4 316.7h0M688.9 320.5h0M713.5 315.6h0M709.4 317.5h0M723.9 319.4h0M719.8 329.6h0M722.2 332.5h0M708.9 327.6h0M706.3 324.8h0M715.6 335.6h0M717.5 316.5h0M710.3 319.8h0M707.4 325.7h0M714.6 315.5h0M708.2 318.7h0M713.7 333.7h0M723.7 321.9h0M725.0 324.4h0M724.3 327.7h0M708.7 323.2h0M724.1 323.4h0M715.2 314.7h0M711.6 335.4h0M723.0 323.5h0M716.2 332.0h0M715.1 313.6h0M709.1 320.2h0M725.7 320.3h0M722.7 326.2h0M721.3 330.4h0M716.2 331.3h0M716.6 306.0h0M712.1 317.5h0M723.4 319.8h0M720.6 313.8h0M711.3 332.5h0M707.9 324.7h0M709.3 323.9h0M717.3 331.1h0M722.1 320.3h0M723.6 320.2h0M718.7 317.4h0M719.4 313.7h0M711.2 316.7h0M711.3 318.4h0M708.2 321.2h0M722.6 320.7h0M715.5 335.3h0M720.8 328.4h0M709.3 318.3h0M720.0 330.6h0M716.8 315.4h0M713.6 314.9h0M709.5 331.0h0M724.8 324.6h0M719.7 329.4h0M710.6 319.3h0M724.8 320.6h0M720.6 318.6h0M709.3 315.3h0M724.8 327.7h0M717.4 330.1h0M711.4 329.6h0M715.6 333.0h0M710.6 318.3h0M714.8 333.1h0M728.2 315.9h0M718.2 317.1h0M722.5 321.0h0M712.3 330.8h0M720.1 328.8h0M718.7 316.9h0M706.9 325.0h0M709.3 319.8h0M724.1 320.5h0M710.6 327.5h0M725.4 319.8h0M730.1 321.8h0M724.6 328.8h0M720.2 318.2h0M719.4 330.4h0M725.1 318.6h0M722.3 329.1h0M710.9 330.1h0M708.6 326.6h0M723.3 321.8h0M714.6 314.5h0M712.1 329.4h0M722.6 331.3h0M717.3 316.4h0M725.4 321.8h0M711.5 316.3h0M704.9 321.3h0M706.5 321.5h0M708.9 318.2h0M714.0 315.9h0M724.6 322.4h0M709.6 318.1h0M724.5 317.3h0M709.8 327.3h0M708.2 322.5h0M723.7 322.5h0M721.0 317.5h0M722.5 329.5h0M717.1 332.8h0M711.8 317.5h0M723.8 325.1h0M719.9 331.8h0M708.8 326.1h0M714.1 317.2h0M723.6 327.4h0M723.1 320.5h0M723.1 318.8h0M712.4 311.8h0M709.0 328.3h0M713.2 333.1h0M717.1 331.0h0M722.7 322.6h0M713.3 317.5h0M709.1 319.3h0M721.8 330.0h0M710.4 331.8h0M725.5 329.4h0M724.6 326.6h0M721.6 314.7h0M719.6 316.0h0M742.2 310.8h0M726.1 303.4h0M725.7 313.0h0M722.9 306.0h0M737.1 300.3h0M720.7 315.8h0M735.8 299.7h0M717.8 308.8h0M724.2 308.2h0M740.1 309.5h0M730.9 315.5h0M736.4 316.5h0M733.9 315.7h0M738.8 308.1h0M724.6 315.8h0M734.6 314.5h0M741.9 307.9h0M737.4 305.7h0M737.5 309.4h0M730.1 318.3h0M729.8 320.0h0M726.9 302.3h0M732.0 317.1h0M727.5 298.8h0M724.2 310.7h0M739.5 316.4h0M740.6 306.7h0M725.0 312.9h0M744.3 307.2h0M736.4 313.1h0M735.9 313.6h0M735.7 302.6h0M735.8 313.9h0M739.0 305.4h0M732.5 301.2h0M735.1 314.0h0M739.7 311.6h0M728.0 314.9h0M724.4 314.5h0M730.6 316.1h0M724.7 302.6h0M735.2 300.2h0M728.4 302.2h0M738.7 307.9h0M726.1 303.9h0M737.5 311.6h0M722.2 315.1h0M723.2 314.4h0M738.5 306.9h0M737.4 304.5h0M718.1 308.8h0M726.3 317.3h0M742.8 307.2h0M721.3 310.1h0M722.4 306.2h0M728.4 302.1h0M722.1 301.4h0M737.0 314.4h0M737.9 306.0h0M720.0 312.7h0M730.8 300.8h0M730.1 318.3h0M730.5 299.0h0M730.0 300.8h0M725.1 317.3h0M740.5 301.1h0M738.9 305.6h0M725.3 314.7h0M736.7 315.1h0M737.3 314.6h0M735.7 313.3h0M736.5 303.9h0M722.9 310.5h0M728.1 315.0h0M723.3 307.0h0M739.6 311.2h0M724.7 317.5h0M731.9 298.5h0M722.0 314.8h0M726.1 303.7h0M738.6 318.5h0M729.4 320.6h0M729.5 300.2h0M729.5 301.6h0M720.8 316.5h0M734.6 316.3h0M741.6 306.5h0M727.0 314.7h0M723.4 307.2h0M726.3 317.7h0M725.2 312.6h0M730.6 301.4h0M728.0 301.8h0M738.5 312.2h0M737.8 304.1h0M734.8 297.8h0M722.8 310.1h0M731.8 297.9h0M721.5 305.9h0M722.3 307.3h0M724.1 306.1h0M731.0 315.4h0M723.6 310.4h0M737.0 304.9h0M725.2 312.1h0M738.4 316.7h0M727.2 301.8h0M731.0 318.3h0M737.7 304.3h0M734.0 300.9h0M739.7 308.7h0M722.8 302.0h0M737.4 313.4h0M728.6 316.4h0M740.5 301.5h0M734.6 315.1h0M724.5 310.8h0M737.8 310.4h0M736.0 301.3h0M721.9 312.9h0M732.5 302.0h0M723.5 307.2h0M738.4 308.0h0M726.7 314.4h0M720.0 306.0h0M724.6 306.3h0M725.1 312.2h0M723.6 310.2h0M734.9 300.6h0M734.4 300.3h0M740.6 311.3h0M760.9 285.2h0M773.8 291.8h0M762.1 291.6h0M761.0 279.3h0M776.7 292.4h0M764.1 292.3h0M773.1 292.2h0M770.2 277.2h0M769.6 293.1h0M770.4 275.9h0M769.1 292.6h0M775.3 282.6h0M764.0 291.8h0M769.4 277.2h0M761.6 289.0h0M773.6 291.9h0M775.1 287.4h0M764.3 276.3h0M762.8 280.2h0M777.5 280.2h0M776.4 287.9h0M757.8 284.4h0M762.9 291.0h0M774.7 290.2h0M774.7 290.3h0M758.8 294.3h0M775.0 285.7h0M761.8 294.5h0M759.9 279.1h0M776.6 292.3h0M771.5 278.9h0M772.2 291.3h0M765.6 294.4h0M766.1 297.5h0M760.6 289.0h0M778.8 289.6h0M771.4 278.8h0M770.3 292.2h0M773.7 289.0h0M774.4 283.0h0M779.3 281.4h0M770.5 278.2h0M769.6 279.0h0M771.9 295.9h0M782.1 284.3h0M777.6 281.7h0M768.1 278.0h0M770.3 295.1h0M765.4 296.7h0M773.5 291.0h0M763.6 293.2h0M771.5 291.5h0M760.9 285.1h0M770.1 295.6h0M769.2 276.6h0M774.8 286.8h0M775.7 285.4h0M760.2 290.1h0M765.7 278.3h0M773.6 289.5h0M775.8 289.5h0M776.5 276.5h0M769.0 275.7h0M770.1 276.3h0M755.7 282.0h0M763.3 278.5h0M775.7 287.5h0M767.0 279.2h0M773.6 274.0h0M764.5 292.4h0M774.0 290.2h0M759.1 281.2h0M763.6 279.2h0M761.9 290.5h0M759.6 295.4h0M773.2 278.8h0M775.1 289.9h0M761.6 283.6h0M758.5 284.7h0M775.0 284.7h0M762.0 292.6h0M769.5 278.5h0M767.0 293.1h0M778.0 285.0h0M774.6 285.6h0M767.3 278.3h0M758.5 279.4h0M774.9 286.5h0M761.0 288.5h0M778.2 289.4h0M774.6 291.1h0M775.7 289.9h0M764.4 276.9h0M772.6 277.7h0M758.2 287.7h0M761.1 286.0h0M774.6 284.4h0M765.5 277.5h0M768.8 293.5h0M760.6 281.0h0M760.6 281.2h0M766.8 277.0h0M773.6 281.0h0M765.4 276.0h0M772.6 280.0h0M759.5 276.2h0M766.0 279.1h0M765.7 293.8h0M761.5 289.6h0M761.4 290.4h0M767.2 292.9h0M773.3 290.6h0M763.7 293.5h0M765.5 294.0h0M766.3 294.0h0M759.5 284.2h0M762.8 278.3h0M762.5 281.8h0M769.9 278.9h0M774.1 278.1h0M763.5 280.8h0M773.3 279.1h0M765.0 292.2h0M764.9 279.7h0M772.4 280.1h0M766.0 275.3h0M773.9 288.9h0M766.2 276.7h0M774.4 282.8h0M769.3 293.6h0M773.4 278.2h0M774.6 285.0h0M760.4 292.0h0M769.3 292.4h0M766.4 279.2h0M760.3 288.3h0M766.9 295.2h0M770.6 277.4h0M759.4 283.4h0M764.0 276.2h0M762.8 256.2h0M768.3 256.9h0M753.4 257.4h0M753.7 268.6h0M756.2 254.8h0M753.0 267.2h0M757.9 255.0h0M761.8 271.5h0M760.6 270.4h0M755.1 252.7h0M764.1 266.6h0M759.1 253.9h0M761.4 257.0h0M752.9 259.3h0M763.2 257.1h0M768.5 264.7h0M751.8 263.8h0M757.9 254.4h0M750.8 268.7h0M752.4 267.7h0M750.7 269.9h0M760.4 269.4h0M758.2 253.1h0M766.6 268.3h0M770.1 268.6h0M749.1 262.8h0M764.9 261.0h0M751.9 268.6h0M764.7 264.9h0M764.1 271.9h0M763.0 254.4h0M759.0 269.9h0M749.1 257.2h0M755.1 255.6h0M751.7 260.5h0M755.3 271.2h0M750.4 257.5h0M755.0 255.0h0M764.4 266.2h0M763.6 251.2h0M751.8 257.4h0M759.0 255.2h0M765.6 259.3h0M760.5 269.7h0M769.2 260.2h0M750.2 258.6h0M766.2 262.0h0M759.5 269.7h0M765.6 258.8h0M755.9 255.1h0M764.7 268.8h0M764.9 270.5h0M748.5 264.3h0M764.7 266.4h0M768.8 263.7h0M755.6 255.0h0M751.5 261.0h0M766.0 255.3h0M763.9 255.9h0M748.8 259.3h0M767.5 266.0h0M764.2 269.1h0M765.2 264.4h0M752.3 266.1h0M753.1 258.7h0M765.0 250.8h0M761.3 256.1h0M754.1 254.8h0M756.9 252.2h0M769.8 269.9h0M755.7 255.3h0M765.9 270.6h0M764.9 265.7h0M763.2 258.2h0M764.4 254.1h0M759.9 272.9h0M763.1 257.9h0M765.7 261.3h0M755.4 255.9h0M761.7 256.8h0M749.0 262.7h0M760.4 254.1h0M762.9 256.9h0M765.3 260.8h0M759.2 255.6h0M762.1 271.0h0M748.6 260.9h0M754.9 254.1h0M755.6 269.4h0M749.7 261.6h0M756.2 271.4h0M756.0 271.3h0M768.6 258.4h0M757.2 271.1h0M756.8 273.4h0M765.8 261.8h0M758.0 256.0h0M766.8 269.3h0M755.3 256.1h0M755.7 252.3h0M760.3 270.1h0M757.9 254.5h0M750.3 261.4h0M760.7 271.4h0M751.3 264.7h0M760.9 256.2h0M754.7 271.4h0M762.2 252.0h0M752.0 268.1h0M752.3 257.9h0M760.6 271.4h0M751.1 261.0h0M746.8 261.1h0M758.2 255.9h0M759.2 271.1h0M765.3 254.8h0M749.6 264.7h0M760.3 270.5h0M759.5 253.8h0M755.5 253.1h0M765.7 261.0h0M769.3 265.1h0M755.4 271.0h0M762.8 269.1h0M765.2 267.3h0M765.9 258.9h0M764.7 265.9h0M755.6 269.5h0M749.1 265.5h0M759.1 253.6h0M763.1 268.4h0M763.8 253.0h0M768.8 269.0h0M764.1 259.0h0M761.4 270.2h0M763.7 258.8h0M753.0 269.5h0M766.3 268.5h0M766.0 264.4h0M763.9 270.7h0M764.1 258.7h0M751.7 261.7h0M751.7 267.2h0M762.5 269.0h0M763.2 258.1h0M755.9 270.1h0M754.5 252.9h0M764.2 266.5h0M762.8 254.9h0M754.6 255.5h0M749.1 260.8h0M764.9 265.6h0M752.1 260.4h0M763.6 255.0h0M734.2 241.3h0M733.4 242.4h0M733.4 246.6h0M731.7 241.4h0M734.5 253.7h0M749.0 246.1h0M740.3 255.4h0M741.1 236.6h0M730.9 237.2h0M736.6 234.1h0M747.7 235.0h0M739.1 252.6h0M751.1 240.2h0M744.5 253.1h0M729.5 242.8h0M735.1 239.7h0M745.0 238.0h0M734.4 248.6h0M746.2 249.6h0M748.5 237.0h0M734.0 245.3h0M748.0 246.7h0M738.7 252.6h0M733.2 237.4h0M738.6 234.8h0M733.5 246.6h0M746.0 250.8h0M732.0 244.9h0M740.8 237.9h0M736.1 238.7h0M746.1 252.0h0M736.1 238.9h0M744.3 238.0h0M745.9 253.1h0M749.1 244.8h0M733.3 236.7h0M744.2 252.2h0M732.8 246.6h0M746.8 238.6h0M743.9 252.2h0M743.9 238.5h0M744.5 235.2h0M746.2 236.0h0M748.5 246.2h0M735.6 251.1h0M747.4 250.4h0M735.7 235.9h0M747.8 250.2h0M733.7 245.2h0M739.6 232.8h0M735.2 238.3h0M735.9 255.6h0M746.8 248.9h0M740.0 238.6h0M746.2 251.4h0M734.6 243.0h0M745.2 253.1h0M733.6 247.3h0M734.2 247.2h0M752.7 246.5h0M733.0 245.2h0M750.6 246.2h0M734.5 241.0h0M731.6 245.5h0M748.2 252.1h0M735.4 249.3h0M731.7 244.6h0M751.2 245.5h0M729.0 245.1h0M740.0 251.9h0M734.7 250.9h0M736.1 238.2h0M733.5 247.4h0M736.5 250.5h0M740.0 236.0h0M743.4 254.6h0M747.9 249.2h0M748.7 247.0h0M733.3 240.8h0M726.7 240.8h0M734.1 247.1h0M732.1 243.1h0M746.2 255.1h0M733.1 244.4h0M748.7 244.8h0M736.2 231.1h0M734.6 241.5h0M747.8 246.3h0M737.5 255.6h0M748.2 251.6h0M734.3 251.8h0M743.6 252.8h0M748.1 248.4h0M740.7 237.1h0M745.3 251.3h0M732.1 242.3h0M742.5 256.2h0M741.7 237.3h0M747.2 242.6h0M736.2 256.4h0M746.7 252.0h0M734.1 249.7h0M735.2 249.7h0M750.0 247.4h0M748.6 246.6h0M747.5 248.0h0M737.7 237.6h0M731.3 247.5h0M734.6 239.6h0M750.2 243.5h0M745.1 239.4h0M747.7 249.0h0M745.8 238.7h0M739.6 254.9h0M743.6 235.8h0M736.4 250.3h0M749.5 249.3h0M735.8 249.6h0M734.2 241.5h0M747.2 251.8h0M751.0 241.5h0M729.8 244.2h0M742.1 252.0h0M735.0 248.9h0M748.9 247.7h0M730.6 242.9h0M742.3 236.4h0M733.2 244.6h0M745.2 251.9h0M731.0 246.6h0M738.0 251.5h0M749.7 249.2h0M736.8 239.0h0M742.1 235.2h0M734.2 243.0h0M747.8 246.6h0M740.2 253.1h0M739.8 238.6h0M736.8 239.3h0M736.6 251.1h0M741.2 237.2h0M748.9 245.0h0M749.9 248.5h0M734.6 237.3h0M747.6 243.4h0M745.2 239.8h0M743.6 252.2h0M736.9 238.1h0M748.8 235.6h0M749.1 241.6h0M717.4 246.1h0M721.3 228.3h0M717.5 242.5h0M709.8 234.5h0M711.4 238.5h0M721.5 229.9h0M710.2 237.8h0M712.3 241.2h0M724.0 240.3h0M729.1 238.5h0M716.5 226.3h0M710.0 234.2h0M721.8 247.3h0M712.9 244.0h0M719.2 224.8h0M724.8 233.5h0M721.1 242.9h0M711.3 245.2h0M715.4 229.1h0M710.4 237.6h0M719.0 223.0h0M710.3 225.3h0M711.2 238.2h0M710.3 236.1h0M706.1 236.1h0M711.3 234.4h0M726.6 240.9h0M709.5 230.0h0M714.0 230.4h0M726.1 239.7h0M710.9 238.9h0M712.4 244.3h0M711.3 247.0h0M722.4 228.2h0M715.4 228.3h0M730.5 230.7h0M727.5 243.6h0M718.7 242.8h0M720.6 245.2h0M710.9 231.1h0M710.5 229.0h0M719.5 249.6h0M710.6 239.8h0M713.7 228.4h0M711.7 227.8h0M723.5 245.3h0M717.1 246.2h0M716.5 226.4h0M712.1 228.0h0M723.6 230.8h0M709.7 238.6h0M724.9 228.0h0M715.2 229.7h0M713.9 228.6h0M708.9 238.3h0M714.8 241.9h0M728.0 239.8h0M728.8 230.3h0M724.5 232.4h0M715.7 246.1h0M723.5 239.8h0M717.2 226.0h0M711.3 246.4h0M710.7 244.9h0M708.2 235.6h0M710.4 237.4h0M715.8 243.3h0M725.4 239.5h0M725.3 234.6h0M725.8 235.8h0M711.5 227.7h0M726.9 238.8h0M716.2 227.9h0M715.8 226.5h0M720.8 245.9h0M723.9 240.9h0M719.2 243.5h0M726.9 243.9h0M724.5 234.3h0M725.3 232.4h0M721.1 229.8h0M717.3 228.6h0M719.4 243.1h0M711.4 231.5h0M720.8 242.2h0M707.3 240.8h0M718.7 244.8h0M722.5 228.5h0M721.2 243.6h0M719.3 246.4h0M723.9 242.6h0M708.8 229.2h0M723.5 231.3h0M715.9 224.7h0M725.8 229.6h0M709.7 239.5h0M722.5 240.5h0M709.5 241.0h0M719.0 229.2h0M714.6 242.6h0M711.2 230.1h0M710.8 235.1h0M713.3 230.2h0M725.1 238.8h0M725.7 230.8h0M726.8 242.9h0M714.8 228.6h0M725.7 231.4h0M722.3 243.7h0M721.0 243.4h0M711.3 244.9h0M713.6 240.8h0M727.1 234.7h0M716.7 225.1h0M718.4 227.8h0M724.8 245.1h0M724.9 239.7h0M729.1 232.6h0M712.3 230.8h0M709.6 232.5h0M723.3 229.7h0M713.7 228.1h0M726.1 240.0h0M721.8 228.0h0M719.5 227.7h0M718.3 226.9h0M717.6 243.6h0M714.2 226.4h0M724.0 231.5h0M724.1 241.6h0M721.1 242.7h0M722.0 229.8h0M730.6 237.3h0M709.5 236.1h0M724.7 241.4h0M723.1 231.2h0M722.6 244.6h0M710.0 235.4h0M723.4 241.4h0M714.4 241.4h0M698.0 228.5h0M700.2 233.7h0M683.0 231.8h0M704.0 235.2h0M682.0 235.3h0M685.9 239.2h0M689.6 229.9h0M685.2 236.5h0M695.5 243.1h0M683.2 235.5h0M690.1 248.0h0M703.4 228.9h0M689.3 244.1h0M686.5 228.6h0M699.2 231.9h0M702.0 240.5h0M685.6 243.7h0M686.7 230.0h0M686.8 228.9h0M696.2 227.6h0M693.0 242.8h0M693.1 228.2h0M700.2 233.9h0M686.3 239.2h0M689.8 242.2h0M687.2 242.8h0M697.8 224.2h0M689.8 229.3h0M687.0 246.4h0M698.6 245.7h0M701.3 235.5h0M687.3 238.9h0M686.2 231.5h0M698.9 239.4h0M685.8 233.5h0M690.3 242.7h0M699.5 230.5h0M683.3 233.6h0M686.9 241.3h0M701.8 241.0h0M701.5 224.4h0M684.8 232.1h0M684.6 237.8h0M697.2 227.1h0M681.6 243.5h0M696.3 229.4h0M685.0 234.7h0M689.7 229.5h0M683.5 233.3h0M685.8 235.3h0M699.4 238.4h0M699.5 232.2h0M696.8 242.6h0M700.7 230.8h0M684.6 239.8h0M692.2 242.4h0M688.8 229.9h0M697.3 229.6h0M701.2 230.3h0M685.9 238.9h0M699.7 238.3h0M700.0 233.2h0M701.2 234.7h0M690.0 229.3h0M697.7 229.0h0M687.7 241.0h0M685.7 244.0h0M697.5 241.4h0M687.7 231.8h0M682.6 233.6h0M702.0 227.4h0M683.0 237.0h0M693.8 243.6h0M686.6 237.9h0M692.3 243.6h0M693.2 223.5h0M686.3 236.0h0M691.4 227.0h0M695.3 227.6h0M693.8 228.5h0M685.1 238.6h0M698.0 230.2h0M691.5 227.8h0M700.5 242.8h0M701.0 231.2h0M682.8 236.4h0M687.5 240.2h0M698.3 240.3h0M697.0 230.0h0M699.5 228.2h0M688.3 230.0h0M693.9 227.1h0M699.0 230.0h0M687.5 229.1h0M698.6 229.2h0M702.6 236.0h0M683.9 234.9h0M695.3 229.3h0M690.1 225.7h0M705.7 238.2h0M697.6 229.2h0M684.7 234.0h0M699.9 239.2h0M695.4 228.2h0M696.8 227.5h0M699.9 226.6h0M688.1 228.4h0M686.1 235.1h0M692.6 224.5h0M694.9 227.5h0M688.6 230.7h0M682.1 241.5h0M686.9 238.8h0M694.5 243.7h0M683.3 243.9h0M702.5 239.8h0M694.4 242.6h0M701.7 231.5h0M686.0 237.8h0M688.1 230.0h0M683.0 233.9h0M691.0 243.9h0M688.8 227.8h0M687.0 240.6h0M689.8 243.1h0M688.2 244.1h0M687.0 241.8h0M685.2 240.6h0M685.0 238.3h0M698.2 241.7h0M690.5 242.2h0M685.3 231.6h0M684.0 239.3h0M698.7 231.5h0M695.0 227.5h0M697.0 243.1h0M685.5 238.3h0M697.6 241.4h0M696.1 226.0h0M701.2 240.5h0M685.6 240.3h0M684.4 229.1h0M683.3 225.3h0M700.5 230.0h0M700.1 233.8h0M684.7 229.4h0M699.6 234.3h0M688.4 230.9h0M702.5 233.2h0M686.5 238.1h0M700.4 235.8h0M691.2 242.4h0M703.1 224.7h0M686.8 238.1h0M675.5 254.0h0M661.2 243.1h0M676.4 248.4h0M660.2 247.1h0M672.9 230.3h0M664.8 239.7h0M661.5 242.2h0M668.7 253.2h0M677.5 251.4h0M677.0 238.4h0M678.1 248.2h0M675.4 240.2h0M668.0 236.5h0M680.7 247.1h0M673.7 237.8h0M664.8 249.9h0M661.8 249.6h0M663.4 249.2h0M657.8 249.5h0M668.7 237.7h0M670.2 238.2h0M664.8 241.1h0M677.9 245.0h0M676.8 249.0h0M669.7 252.4h0M666.7 239.2h0M658.6 246.2h0M676.6 243.5h0M662.1 251.2h0M673.5 252.5h0M666.4 238.5h0M671.5 252.5h0M664.0 248.5h0M679.0 248.8h0M667.5 239.0h0M663.0 247.0h0M676.7 235.5h0M676.1 249.2h0M687.6 241.6h0M670.5 253.7h0M660.6 246.9h0M665.0 237.5h0M662.6 246.2h0M679.7 243.2h0M663.7 243.6h0M676.1 249.9h0M663.1 237.8h0M676.3 249.7h0M674.2 236.8h0M673.8 239.2h0M673.4 239.1h0M665.6 239.4h0M677.5 247.4h0M680.8 239.1h0M676.0 238.6h0M683.8 241.2h0M666.3 239.4h0M668.0 253.8h0M664.4 240.5h0M661.6 244.5h0M678.4 245.2h0M665.8 250.3h0M677.4 241.0h0M673.4 239.1h0M687.8 246.6h0M659.6 246.6h0M664.0 249.3h0M674.2 252.1h0M670.4 252.1h0M670.9 254.3h0M663.5 246.1h0M675.3 253.3h0M667.6 251.6h0M676.0 251.4h0M675.6 251.1h0M673.0 252.7h0M672.6 253.1h0M677.6 240.6h0M677.2 248.3h0M680.6 238.1h0M668.0 251.7h0M670.0 253.1h0M673.8 238.6h0M669.2 252.8h0M673.9 257.1h0M664.2 250.2h0M680.9 254.1h0M672.2 251.8h0M674.5 233.4h0M680.3 248.9h0M669.3 236.5h0M673.8 239.1h0M675.6 241.0h0M678.4 239.7h0M662.4 242.8h0M669.1 254.1h0M679.5 246.0h0M679.8 246.1h0M679.6 238.5h0M667.1 238.6h0M670.1 236.1h0M665.2 238.9h0M680.8 246.9h0M663.1 243.9h0M661.0 235.0h0M674.9 252.3h0M668.2 252.0h0M674.6 251.8h0M664.5 251.2h0M664.5 240.3h0M665.1 252.3h0M677.2 244.0h0M669.5 234.0h0M660.0 250.3h0M676.7 242.0h0M669.9 233.6h0M681.7 249.2h0M668.9 237.2h0M664.9 253.0h0M670.7 237.8h0M671.5 253.6h0M663.3 243.5h0M664.0 250.2h0M671.6 234.2h0M678.4 237.7h0M666.2 238.6h0M661.6 246.4h0M675.8 249.4h0M668.5 238.5h0M661.1 248.7h0M666.5 257.5h0M662.7 248.6h0M682.7 245.7h0M655.6 252.7h0M644.0 264.8h0M645.0 272.6h0M656.0 256.4h0M658.0 256.7h0M658.0 267.7h0M646.6 265.8h0M654.7 271.2h0M647.9 256.1h0M658.3 271.9h0M659.0 259.4h0M659.4 255.8h0M649.7 270.0h0M660.8 261.3h0M659.7 258.5h0M653.5 269.7h0M662.0 264.9h0M658.1 270.3h0M643.6 267.4h0M648.5 257.2h0M651.4 254.6h0M653.4 253.4h0M652.3 276.6h0M650.6 256.5h0M650.4 255.8h0M645.6 263.6h0M661.3 266.5h0M649.6 256.1h0M659.9 260.6h0M644.7 261.3h0M659.9 259.6h0M661.4 267.6h0M652.3 253.5h0M661.7 259.4h0M648.8 275.3h0M660.9 264.9h0M645.5 265.1h0M654.3 256.1h0M663.8 261.2h0M660.3 259.8h0M661.4 262.8h0M651.7 253.0h0M654.2 251.9h0M647.7 272.8h0M660.8 265.7h0M645.3 265.5h0M646.0 267.0h0M661.9 260.5h0M651.7 255.4h0M664.1 265.7h0M655.2 253.1h0M651.1 253.7h0M644.1 263.7h0M660.2 274.1h0M651.0 269.3h0M661.0 265.0h0M651.3 273.1h0M659.9 267.2h0M657.0 254.0h0M662.1 265.0h0M653.2 255.2h0M660.9 251.8h0M641.7 264.0h0M646.9 268.8h0M644.3 264.0h0M656.7 271.7h0M655.9 270.0h0M653.8 272.2h0M642.8 265.6h0M659.8 270.7h0M646.1 265.1h0M659.9 259.2h0M646.7 266.8h0M651.3 255.9h0M653.7 256.2h0M660.5 266.9h0M654.6 273.8h0M663.6 265.0h0M657.0 267.9h0M654.7 253.4h0M657.2 268.9h0M645.7 266.3h0M648.0 257.3h0M644.4 265.1h0M646.7 271.2h0M657.2 257.8h0M660.5 259.9h0M662.1 258.6h0M659.4 256.8h0M654.5 256.0h0M659.3 265.9h0M658.2 259.0h0M651.0 273.7h0M656.5 256.5h0M662.5 265.0h0M658.2 267.8h0M644.3 259.6h0M660.7 259.2h0M652.0 272.3h0M651.3 252.6h0M650.0 255.8h0M652.4 270.9h0M651.4 255.1h0M660.4 265.9h0M650.6 255.3h0M646.7 268.4h0M649.9 269.6h0M643.7 262.7h0M658.8 269.4h0M663.1 267.5h0M647.8 269.0h0M653.8 271.0h0M655.6 256.8h0M659.9 262.2h0M656.7 268.1h0M640.9 260.1h0M659.0 256.6h0M647.3 256.8h0M658.7 255.0h0M650.9 255.3h0M661.6 261.8h0M664.8 254.8h0M655.8 270.4h0M660.4 255.3h0M643.0 263.2h0M653.8 275.8h0M643.5 260.3h0M646.5 259.0h0M659.3 263.0h0M649.5 268.9h0M657.8 257.8h0M651.2 256.3h0M659.2 268.1h0M660.9 271.9h0M643.1 259.4h0M645.3 265.7h0M650.7 273.1h0M658.0 258.7h0M660.1 262.0h0M637.9 290.6h0M647.9 276.2h0M639.9 280.0h0M639.7 278.0h0M639.2 294.7h0M648.0 290.9h0M636.2 282.7h0M638.3 292.8h0M644.1 277.1h0M656.1 280.1h0M637.2 289.9h0M648.8 279.0h0M649.0 289.5h0M649.3 288.3h0M658.0 293.9h0M640.9 277.3h0M648.3 278.0h0M648.5 289.9h0M651.7 277.4h0M636.9 283.1h0M653.3 286.0h0M655.2 285.7h0M636.2 281.6h0M654.9 283.5h0M649.9 282.0h0M648.9 281.4h0M636.9 289.5h0M652.3 285.0h0M637.1 282.0h0M648.3 291.9h0M634.9 288.1h0M648.2 290.3h0M639.2 294.0h0M635.3 289.0h0M638.4 273.8h0M636.7 288.2h0M644.6 276.9h0M631.9 291.0h0M649.5 292.4h0M637.1 292.1h0M639.0 299.6h0M634.6 284.2h0M640.4 277.4h0M639.0 277.2h0M637.9 290.4h0M639.1 291.5h0M638.2 292.3h0M652.0 291.9h0M643.6 297.6h0M639.4 280.3h0M642.6 293.0h0M636.3 283.8h0M641.1 292.7h0M635.8 287.8h0M645.4 292.3h0M639.0 278.4h0M650.2 285.6h0M645.1 296.6h0M647.0 277.4h0M651.6 288.5h0M650.0 286.3h0M635.7 284.6h0M643.4 279.1h0M635.5 273.7h0M636.0 283.2h0M635.0 278.8h0M650.8 292.0h0M635.4 283.6h0M640.3 277.3h0M650.3 285.7h0M644.9 296.1h0M635.1 279.3h0M649.7 284.2h0M634.9 285.4h0M635.3 294.2h0M650.8 280.9h0M641.5 295.7h0M649.9 283.0h0M630.8 278.7h0M637.7 280.7h0M650.5 279.8h0M649.7 282.5h0M647.1 271.6h0M648.1 294.1h0M647.8 291.5h0M648.1 294.4h0M650.4 290.7h0M640.2 279.8h0M649.0 289.2h0M638.1 276.4h0M643.9 278.6h0M634.5 287.4h0M650.7 286.2h0M652.8 277.6h0M643.6 292.4h0M648.9 289.2h0M650.4 289.1h0M648.0 291.1h0M644.2 279.0h0M648.3 277.0h0M645.7 293.0h0M633.8 286.0h0M633.8 291.7h0M644.9 278.1h0M637.0 290.6h0M644.4 278.3h0M644.7 293.9h0M635.0 282.2h0M637.8 279.8h0M630.2 286.0h0M636.4 281.7h0M653.6 287.2h0M655.8 284.8h0M638.0 291.3h0M650.5 287.3h0M637.2 290.0h0M648.3 273.2h0M643.1 294.1h0M637.0 295.1h0M639.7 274.9h0M639.5 296.0h0M635.9 274.6h0M644.6 294.5h0M651.5 271.0h0M637.3 290.5h0M636.2 294.2h0M635.4 277.8h0M652.6 282.7h0M640.2 303.8h0M650.7 315.9h0M642.1 301.8h0M649.6 303.8h0M649.5 302.7h0M644.1 301.2h0M651.0 308.5h0M645.3 304.2h0M633.4 308.1h0M637.3 317.1h0M637.1 315.9h0M633.8 314.1h0M643.5 317.7h0M643.7 303.6h0M645.8 303.7h0M651.8 311.2h0M651.3 308.4h0M640.5 317.4h0M639.1 318.7h0M650.4 317.2h0M637.0 315.0h0M643.4 319.2h0M652.1 310.8h0M636.6 314.9h0M639.9 302.8h0M637.2 315.7h0M635.4 314.5h0M653.7 313.6h0M639.7 304.2h0M651.3 312.9h0M652.0 311.2h0M650.2 314.6h0M641.4 300.8h0M638.2 315.8h0M632.7 311.1h0M635.1 311.0h0M642.8 301.3h0M651.4 312.2h0M638.4 320.7h0M632.3 308.3h0M643.9 299.8h0M636.2 307.6h0M644.3 303.6h0M640.7 304.1h0M643.7 302.9h0M649.6 312.1h0M653.8 316.8h0M654.0 308.2h0M649.7 319.9h0M651.0 315.2h0M654.7 311.2h0M652.0 311.6h0M634.8 308.0h0M645.9 304.6h0M633.0 314.4h0M640.4 303.2h0M645.8 304.2h0M640.2 297.1h0M639.6 316.7h0M644.5 317.7h0M637.7 306.5h0M638.5 320.1h0M647.5 302.8h0M649.0 301.4h0M636.8 306.3h0M639.4 316.4h0M637.5 316.4h0M642.8 303.4h0M635.4 305.4h0M652.4 306.7h0M651.2 311.2h0M640.2 320.4h0M648.3 303.8h0M644.1 319.2h0M640.8 303.8h0M636.4 319.6h0M632.8 304.1h0M639.7 297.3h0M635.4 316.2h0M648.5 315.8h0M649.8 312.2h0M639.7 317.7h0M646.7 316.2h0M643.5 317.3h0M646.9 316.7h0M640.2 303.0h0M639.4 319.0h0M639.7 304.8h0M640.8 303.4h0M649.4 313.8h0M642.6 317.9h0M643.5 317.7h0M649.4 312.9h0M654.4 306.5h0M633.7 305.8h0M649.9 307.2h0M644.9 317.3h0M639.9 304.4h0M643.3 318.5h0M636.3 313.4h0M649.5 316.7h0M651.5 312.2h0M649.0 316.5h0M636.2 306.1h0M649.4 305.6h0M631.0 307.7h0M647.7 305.3h0M650.6 305.9h0M637.0 314.1h0M649.4 313.3h0M647.1 301.5h0M650.0 317.7h0M643.3 302.0h0M650.4 315.6h0M642.1 303.8h0M648.9 314.2h0M631.2 302.6h0M644.7 318.7h0M636.7 319.6h0M656.7 341.3h0M646.0 336.4h0M649.5 341.4h0M648.8 342.3h0M657.8 338.8h0M658.2 321.2h0M646.4 331.2h0M659.4 331.1h0M644.8 330.8h0M660.2 335.5h0M648.4 327.5h0M645.7 331.2h0M651.4 326.1h0M657.4 326.3h0M656.3 327.2h0M658.2 337.1h0M647.4 338.1h0M647.8 339.5h0M645.8 320.8h0M658.7 327.7h0M647.8 338.6h0M645.0 324.7h0M658.4 337.0h0M641.6 328.3h0M647.4 327.3h0M658.2 329.4h0M639.6 338.1h0M645.2 330.6h0M646.9 327.9h0M662.9 330.9h0M660.6 333.6h0M648.1 325.5h0M661.1 334.0h0M654.1 326.4h0M654.0 326.6h0M656.4 328.1h0M658.5 330.4h0M654.4 326.6h0M644.2 332.7h0M645.9 340.3h0M658.6 330.6h0M649.0 340.0h0M646.4 330.9h0M645.6 329.2h0M642.6 335.6h0M666.1 329.0h0M659.9 336.8h0M637.1 335.5h0M652.7 343.4h0M645.7 328.0h0M651.9 324.7h0M660.2 338.4h0M658.8 330.7h0M658.5 342.4h0M643.4 331.6h0M654.7 340.0h0M658.8 341.0h0M648.6 325.0h0M646.3 327.5h0M644.5 336.1h0M645.3 334.0h0M658.6 322.0h0M649.6 340.6h0M657.2 343.2h0M660.6 342.2h0M646.9 328.6h0M648.2 339.7h0M664.1 330.9h0M646.2 331.6h0M653.9 324.9h0M647.9 340.1h0M645.6 338.8h0M645.8 330.7h0M649.6 326.5h0M647.5 327.0h0M656.1 324.8h0M659.5 333.7h0M644.6 339.6h0M645.9 331.2h0M656.0 347.2h0M660.7 338.4h0M660.6 330.0h0M657.7 327.8h0M646.7 336.7h0M644.6 340.8h0M648.0 338.6h0M651.5 323.9h0M646.6 327.0h0M655.5 326.8h0M664.3 327.1h0M661.4 333.5h0M657.4 327.9h0M654.3 323.1h0M658.8 336.1h0M662.7 337.0h0M647.1 338.6h0M654.7 324.8h0M645.1 332.7h0M646.0 331.4h0M649.0 326.0h0M646.3 322.2h0M650.5 326.7h0M645.0 339.5h0M665.0 334.8h0M646.6 326.3h0M662.0 327.4h0M643.4 332.9h0M654.2 324.2h0M661.0 339.1h0M649.3 323.1h0M645.5 329.7h0M658.8 337.4h0M645.2 329.0h0M662.5 338.8h0M658.1 339.3h0M660.2 335.1h0M655.7 327.0h0M659.7 337.1h0M658.9 329.8h0M662.7 328.0h0M661.1 326.8h0M660.4 325.7h0M659.2 339.8h0M644.3 334.8h0M659.3 339.0h0M661.3 330.5h0M654.3 326.4h0M641.9 334.6h0M643.0 329.9h0M659.5 332.1h0M642.1 333.4h0M640.6 343.5h0M642.6 331.6h0M646.8 328.3h0M662.1 335.1h0M642.3 334.5h0M647.9 327.5h0M666.6 344.8h0M679.4 347.1h0M670.5 344.0h0M665.7 345.1h0M674.3 345.0h0M682.5 350.4h0M666.1 342.1h0M675.5 356.2h0M662.2 356.6h0M679.8 353.8h0M678.0 348.7h0M679.5 346.4h0M676.2 345.9h0M663.5 352.1h0M660.7 355.8h0M667.5 343.4h0M666.1 342.3h0M662.9 352.4h0M670.3 343.1h0M678.0 351.9h0M682.2 348.7h0M677.8 351.9h0M670.3 344.4h0M682.2 347.5h0M669.6 341.8h0M673.5 359.5h0M676.2 347.5h0M681.5 349.3h0M672.4 359.5h0M662.6 354.7h0M667.5 359.3h0M671.9 341.6h0M671.9 340.5h0M655.9 339.1h0M679.6 355.2h0M666.2 360.8h0M664.5 358.5h0M665.3 343.7h0M677.6 350.7h0M663.1 349.9h0M677.8 355.7h0M678.9 349.5h0M662.0 351.8h0M664.1 343.7h0M665.1 360.0h0M665.0 358.3h0M662.7 352.9h0M665.3 345.9h0M662.5 340.4h0M662.1 357.0h0M671.2 358.9h0M679.5 349.8h0M662.5 343.1h0M669.5 342.1h0M664.6 357.8h0M667.2 357.9h0M677.9 353.5h0M679.4 348.8h0M676.7 349.8h0M673.5 342.1h0M678.6 352.7h0M666.3 357.1h0M669.0 360.7h0M676.6 358.7h0M662.7 351.5h0M675.9 346.9h0M659.9 354.4h0M667.9 343.8h0M667.0 343.1h0M677.5 351.7h0M671.9 344.6h0M679.8 344.0h0M675.7 356.1h0M666.0 345.3h0M661.2 361.2h0M665.3 346.4h0M676.4 356.0h0M667.1 359.0h0M666.3 342.1h0M665.7 344.1h0M664.6 360.6h0M664.2 347.3h0M678.6 347.2h0M678.5 353.1h0M664.3 354.9h0M663.3 354.0h0M674.8 359.1h0M673.3 343.1h0M672.4 357.9h0M660.5 352.9h0M675.1 342.4h0M667.6 344.6h0M675.5 346.7h0M664.0 354.1h0M664.1 344.3h0M676.3 357.7h0M668.2 341.8h0M676.2 355.7h0M663.1 351.5h0M665.7 344.4h0M662.9 350.8h0M665.4 356.4h0M677.7 349.0h0M664.5 346.7h0M665.9 356.4h0M667.9 361.2h0M682.6 352.3h0M668.0 357.8h0M670.4 357.8h0M684.4 350.1h0M670.2 343.5h0M678.6 361.3h0M675.2 361.4h0M678.4 352.4h0M676.8 360.0h0M676.6 348.0h0M663.4 352.2h0M676.2 345.9h0M668.9 338.0h0M666.9 340.7h0M663.1 342.5h0M667.9 360.0h0M676.9 355.8h0M660.4 348.8h0M665.7 344.6h0M669.0 344.3h0M673.4 344.0h0M673.6 341.0h0M666.3 344.5h0M677.1 350.8h0M660.5 351.2h0M669.0 360.0h0M669.5 341.9h0M662.5 352.4h0M663.7 345.2h0M677.7 347.5h0M673.0 341.2h0M672.7 340.0h0M671.2 358.0h0M668.9 358.1h0M663.6 352.2h0M663.2 345.3h0M676.2 359.6h0M681.0 344.4h0M686.0 361.6h0M706.3 355.5h0M688.6 355.7h0M687.2 356.7h0M693.4 368.4h0M687.5 353.0h0M685.9 359.1h0M695.9 350.6h0M700.1 355.2h0M688.2 352.4h0M698.8 354.5h0M696.2 354.3h0M688.2 355.9h0M688.0 370.3h0M689.5 354.9h0M700.5 368.6h0M693.7 368.8h0M700.2 362.5h0M700.6 361.9h0M701.4 359.5h0M688.6 367.5h0M681.4 358.6h0M700.3 355.4h0M692.8 344.4h0M686.2 363.7h0M697.0 368.2h0M701.6 358.0h0M690.3 349.1h0M689.3 367.1h0M701.9 355.5h0M699.5 364.8h0M702.3 357.2h0M683.7 359.0h0M685.7 357.5h0M694.1 353.7h0M688.7 366.2h0M690.8 367.4h0M700.8 356.7h0M687.2 350.2h0M695.1 367.9h0M691.7 368.7h0M701.3 356.1h0M696.9 353.0h0M689.4 353.3h0M699.8 352.6h0M686.6 362.4h0M706.8 356.6h0M683.6 359.3h0M684.8 358.4h0M683.8 360.3h0M686.7 364.9h0M687.4 356.7h0M687.4 356.0h0M695.8 354.1h0M693.9 352.1h0M694.0 352.4h0M700.1 348.4h0M700.9 357.6h0M699.6 363.6h0M689.2 367.8h0M687.3 355.0h0M685.2 358.2h0M692.5 370.5h0M706.2 355.5h0M700.8 359.5h0M691.5 368.6h0M685.6 357.9h0M684.9 362.9h0M698.6 364.4h0M685.5 360.9h0M694.5 367.3h0M685.9 357.5h0M684.6 369.7h0M691.2 352.6h0M701.1 357.6h0M700.4 360.5h0M688.8 354.7h0M693.6 371.4h0M700.0 354.1h0M697.0 368.9h0M703.7 357.6h0M699.7 358.7h0M685.5 354.8h0M689.3 366.7h0M692.3 368.7h0M698.5 368.9h0M697.0 352.4h0M687.2 364.6h0M691.6 367.4h0M686.7 366.6h0M702.5 359.5h0M699.5 365.0h0M692.1 353.5h0M688.4 351.9h0M685.6 367.7h0M685.6 356.7h0M685.9 357.3h0M686.8 355.0h0M689.7 366.7h0M701.7 349.5h0M689.0 366.0h0M695.4 350.5h0M701.2 350.3h0M698.7 355.9h0M691.8 354.1h0M692.0 352.7h0M694.1 354.0h0M699.6 368.5h0M696.2 354.5h0M684.0 357.6h0M686.6 359.4h0M700.3 366.7h0M682.8 357.8h0M688.4 353.4h0M682.1 358.5h0M693.8 350.9h0M687.0 352.8h0M697.5 367.1h0M688.7 354.3h0M688.5 354.2h0M701.9 356.3h0M693.6 352.1h0M699.7 367.5h0M698.8 364.9h0M681.9 358.0h0M684.6 361.6h0M686.0 360.5h0M685.9 364.7h0M685.7 364.9h0M688.9 354.5h0M690.3 372.4h0M695.4 353.6h0M691.1 353.5h0M686.0 355.6h0M695.3 367.5h0M696.7 369.1h0M686.0 355.8h0M700.4 357.1h0M685.0 362.9h0M688.7 352.6h0M691.5 367.7h0M697.4 366.7h0M716.6 367.4h0M713.5 368.9h0M718.0 350.0h0M713.4 353.8h0M724.0 351.9h0M711.3 360.1h0M723.8 356.6h0M725.2 351.8h0M726.2 355.9h0M714.0 369.1h0M704.5 359.5h0M723.5 365.6h0M714.8 354.4h0M724.7 364.5h0M727.5 357.5h0M724.2 351.7h0M716.1 369.0h0M726.0 362.3h0M728.9 352.2h0M723.1 350.7h0M708.6 355.0h0M707.5 355.7h0M716.1 353.0h0M712.9 367.9h0M725.1 369.3h0M710.5 353.3h0M714.1 368.7h0M727.6 362.1h0M713.7 368.3h0M709.6 362.5h0M721.4 348.6h0M709.0 363.8h0M709.9 368.0h0M720.5 367.3h0M717.3 372.7h0M711.0 364.2h0M715.3 367.5h0M711.1 357.0h0M709.8 359.7h0M709.9 357.5h0M723.1 354.8h0M709.1 362.3h0M723.4 373.4h0M717.1 353.1h0M725.5 364.8h0M723.6 367.8h0M721.4 353.0h0M711.1 369.0h0M714.6 353.0h0M719.3 367.7h0M710.5 348.7h0M729.2 363.9h0M722.1 350.6h0M713.8 354.9h0M724.8 360.3h0M723.5 365.9h0M717.7 353.8h0M709.3 365.6h0M724.9 356.3h0M721.6 352.3h0M708.4 361.8h0M722.3 365.6h0M713.0 365.3h0M711.4 357.9h0M714.6 366.8h0M715.1 354.1h0M711.0 370.5h0M717.5 367.6h0M722.2 368.4h0M708.5 354.9h0M713.7 352.2h0M721.1 369.2h0M724.0 367.2h0M726.3 365.9h0M709.3 363.0h0M722.5 366.1h0M719.3 353.9h0M723.7 353.3h0M712.2 356.7h0M718.3 350.0h0M716.7 369.0h0M715.5 353.6h0M712.9 349.1h0M724.7 361.6h0M707.5 362.0h0M724.0 354.7h0M724.7 367.8h0M713.9 352.6h0M723.4 351.4h0M723.5 355.0h0M716.2 352.4h0M725.9 353.3h0M723.1 344.6h0M726.7 358.2h0M714.9 352.7h0M723.8 364.8h0M715.5 370.5h0M723.8 365.3h0M718.9 353.1h0M716.7 353.7h0M726.3 357.1h0M715.5 353.9h0M728.1 364.8h0M711.0 353.4h0M714.4 353.9h0M712.5 356.2h0M724.6 364.3h0M712.3 364.5h0M717.5 350.5h0M722.4 353.8h0M718.0 353.7h0M721.8 369.4h0M713.9 353.4h0M725.5 360.0h0M722.9 351.4h0M709.9 367.5h0M721.3 367.7h0M725.8 366.0h0M712.1 355.8h0M707.3 360.3h0M709.6 356.6h0M725.6 360.6h0M715.7 368.0h0M709.8 359.5h0M723.8 357.2h0M724.4 358.1h0M724.8 357.6h0M714.4 354.5h0M717.9 352.1h0M711.1 348.3h0M704.2 356.9h0M717.4 368.0h0M718.9 351.6h0M715.5 373.5h0M714.0 353.3h0M728.4 354.5h0M728.3 362.1h0M711.7 364.1h0M724.6 355.2h0M710.6 359.8h0M725.0 355.8h0M725.7 356.3h0M710.2 356.1h0M720.5 351.7h0M716.4 353.9h0M713.8 367.9h0M720.9 373.9h0M707.0 356.3h0M722.0 354.6h0M718.0 368.6h0M711.6 357.3h0M733.3 347.1h0M732.9 352.8h0M738.1 359.3h0M748.1 353.5h0M739.3 342.6h0M742.9 344.6h0M737.4 359.1h0M750.5 347.5h0M746.7 355.3h0M739.4 362.0h0M735.5 355.2h0M743.9 344.9h0M736.6 362.4h0M746.3 345.6h0M748.2 352.2h0M736.6 346.0h0M734.6 346.2h0M747.9 351.9h0M736.7 356.9h0M744.5 344.4h0M746.3 340.3h0M747.1 346.9h0M749.6 356.5h0M748.3 351.6h0M733.1 350.2h0M732.9 342.0h0M733.2 348.8h0M733.5 349.2h0M736.7 357.0h0M732.1 351.5h0M750.0 352.3h0M732.5 349.0h0M745.4 345.0h0M745.8 355.5h0M732.7 345.2h0M740.0 343.7h0M736.8 345.9h0M735.2 354.8h0M742.3 341.8h0M736.9 360.4h0M743.2 342.8h0M733.9 346.5h0M737.7 359.6h0M746.5 341.2h0M731.6 345.5h0M736.9 359.7h0M739.0 344.6h0M735.1 355.3h0M735.9 356.7h0M734.2 346.1h0M735.2 356.9h0M751.1 351.3h0M746.9 355.0h0M745.8 358.2h0M733.6 347.1h0M731.3 352.4h0M740.4 343.1h0M739.7 357.8h0M744.2 340.8h0M745.0 358.1h0M743.6 342.7h0M736.0 344.9h0M739.5 343.1h0M733.6 361.1h0M735.0 356.3h0M743.2 357.3h0M735.3 359.5h0M734.6 346.1h0M744.6 343.0h0M736.1 355.7h0M750.6 349.6h0M739.9 342.1h0M733.6 351.9h0M733.0 352.5h0M729.4 349.1h0M745.1 358.7h0M738.4 358.8h0M739.6 357.7h0M746.4 345.3h0M733.4 354.0h0M748.2 352.4h0M732.9 346.1h0M745.2 357.7h0M744.6 345.5h0M733.9 347.3h0M741.3 360.5h0M748.7 346.4h0M740.8 343.3h0M752.6 349.5h0M738.1 343.6h0M748.2 348.9h0M746.2 346.6h0M732.8 345.3h0M733.5 359.2h0M741.5 343.3h0M739.5 360.3h0M736.9 343.3h0M744.7 358.1h0M745.9 359.3h0M734.7 355.3h0M731.8 342.7h0M749.0 347.5h0M752.9 356.3h0M742.4 358.7h0M737.3 356.7h0M734.5 356.4h0M748.9 351.8h0M733.1 351.7h0M729.1 351.3h0M748.6 346.9h0M736.0 359.8h0M736.8 356.4h0M740.4 341.8h0M734.9 348.2h0M748.1 351.6h0M748.3 353.3h0M735.9 344.6h0M735.7 343.1h0M738.0 341.8h0M737.4 342.5h0M741.2 357.9h0M747.4 352.0h0M746.0 357.8h0M743.0 357.5h0M743.6 343.1h0M752.5 351.2h0M744.3 357.8h0M737.4 343.1h0M743.3 343.7h0M738.1 342.9h0M736.2 343.8h0M734.3 353.6h0M729.0 356.1h0M731.9 356.4h0M746.7 358.2h0M749.0 356.3h0M734.3 359.2h0M745.3 359.6h0M747.4 348.5h0M735.2 347.7h0M739.4 341.6h0M741.8 362.2h0M745.3 344.0h0M744.9 357.1h0M739.7 357.6h0M744.7 344.6h0M748.4 356.9h0M732.3 344.6h0M739.2 342.2h0M744.8 344.4h0M747.3 354.0h0M730.7 351.4h0M749.6 345.3h0M749.0 336.8h0M757.2 326.2h0M764.4 329.9h0M749.5 334.3h0M760.8 339.9h0M751.6 333.5h0M762.3 327.2h0M754.7 323.8h0M754.8 322.7h0M760.2 347.2h0M750.8 334.3h0M759.6 340.1h0M763.5 341.3h0M750.5 328.1h0M764.6 330.1h0M758.1 326.5h0M763.6 323.7h0M756.1 326.2h0M763.7 337.9h0M762.6 342.1h0M747.6 328.7h0M751.5 334.8h0M768.5 334.6h0M751.6 337.4h0M751.9 335.1h0M745.3 327.5h0M756.2 324.0h0M767.0 325.0h0M754.6 339.2h0M764.6 327.1h0M751.5 337.2h0M753.5 321.5h0M767.8 326.4h0M751.7 334.7h0M763.2 323.1h0M745.2 335.1h0M764.6 340.1h0M751.3 337.1h0M766.3 336.6h0M762.3 342.0h0M760.5 325.5h0M765.7 344.3h0M753.2 327.9h0M748.7 339.3h0M748.6 335.8h0M754.2 324.1h0M760.7 340.2h0M761.2 343.1h0M755.6 339.6h0M756.3 340.3h0M747.4 334.4h0M752.3 337.2h0M764.6 330.3h0M753.0 328.9h0M761.4 341.0h0M752.2 324.9h0M749.5 334.5h0M760.3 343.2h0M761.3 340.0h0M765.2 330.4h0M759.0 323.3h0M763.5 341.2h0M765.5 337.8h0M759.2 341.3h0M762.4 344.2h0M762.6 339.0h0M750.9 338.0h0M753.2 325.9h0M752.7 327.3h0M751.7 333.4h0M765.0 333.1h0M764.2 327.7h0M755.0 325.7h0M755.5 325.6h0M750.7 330.2h0M760.3 343.7h0M762.3 320.3h0M755.8 343.4h0M754.4 342.5h0M765.4 329.6h0M750.7 339.1h0M756.5 344.6h0M749.6 334.5h0M768.4 328.2h0M764.8 331.1h0M752.7 325.1h0M747.1 340.2h0M761.5 327.5h0M764.4 330.3h0M765.1 336.1h0M762.0 327.9h0M763.5 329.3h0M755.0 340.1h0M754.9 340.8h0M765.3 338.1h0M766.3 339.9h0M750.3 338.2h0M762.8 326.9h0M762.5 341.7h0M764.6 338.0h0M756.2 343.8h0M763.3 328.8h0M765.9 333.2h0M763.5 343.7h0M763.4 338.9h0M759.8 341.8h0M757.0 326.5h0M756.7 323.3h0M747.6 333.4h0M752.0 329.4h0M751.4 330.7h0M762.4 340.9h0M748.4 340.4h0M755.5 340.8h0M765.8 329.8h0M749.8 334.3h0M765.5 330.1h0M762.5 328.0h0M750.0 338.2h0M750.7 331.7h0M754.0 339.4h0M752.8 321.1h0M752.9 340.2h0M755.8 323.5h0M752.7 324.3h0M766.7 335.5h0M750.8 339.1h0M756.1 340.7h0M749.4 336.7h0M752.9 339.3h0M749.1 336.6h0M763.4 340.5h0M758.3 322.5h0M749.8 334.3h0M765.3 322.3h0M752.3 342.8h0M763.2 343.0h0M757.9 325.6h0M765.9 335.6h0M751.0 335.4h0M752.1 330.3h0M752.3 325.6h0M767.0 332.9h0M768.1 340.1h0M776.4 313.0h0M778.4 308.3h0M760.6 308.7h0M769.6 317.2h0M770.5 317.0h0M763.0 317.7h0M761.8 320.2h0M762.6 314.8h0M770.7 303.4h0M764.8 319.6h0M761.6 314.2h0M766.0 318.7h0M770.9 300.2h0M774.9 312.8h0M761.8 315.0h0M754.7 312.2h0M768.3 321.4h0M754.6 311.0h0M764.7 304.0h0M777.0 307.0h0M775.8 318.2h0M761.8 305.8h0M774.2 308.3h0M768.6 320.4h0M765.5 318.3h0M774.0 317.2h0M762.2 318.5h0M765.6 304.0h0M767.1 317.9h0M760.3 306.0h0M774.9 312.2h0M777.6 314.6h0M772.0 318.9h0M765.0 317.3h0M776.9 303.9h0M766.8 295.6h0M764.7 304.0h0M771.6 302.6h0M773.3 314.9h0M774.9 313.7h0M767.5 321.8h0M760.5 316.9h0M775.9 310.9h0M759.3 309.4h0M773.8 307.3h0M773.9 314.0h0M773.7 303.0h0M776.0 311.4h0M763.4 305.5h0M756.9 310.4h0M761.8 304.9h0M764.2 319.7h0M774.1 307.4h0M776.5 310.9h0M775.6 313.7h0M772.2 304.8h0M770.5 319.5h0M771.8 316.3h0M772.6 320.7h0M766.7 319.3h0M773.6 305.6h0M780.4 308.1h0M767.8 303.1h0M762.2 304.4h0M753.5 309.4h0M774.4 304.7h0M755.0 314.3h0M774.7 307.0h0M768.6 317.4h0M767.1 317.5h0M768.1 318.7h0M777.2 312.9h0M763.3 315.6h0M761.8 318.6h0M763.3 305.3h0M772.5 305.5h0M769.1 302.8h0M766.4 319.7h0M770.5 302.8h0M762.8 315.5h0M771.2 317.3h0M776.2 309.5h0M772.1 301.0h0M765.6 302.9h0M778.1 313.0h0M773.8 314.5h0M764.0 303.5h0M758.6 316.5h0M768.0 321.7h0M767.6 318.4h0M760.7 313.9h0M765.2 304.6h0M758.6 309.5h0M770.4 302.5h0M768.4 303.8h0M760.0 314.4h0M760.4 322.4h0M775.6 308.8h0M762.5 320.7h0M777.2 306.2h0M767.2 318.1h0M773.4 304.9h0M774.4 315.3h0M765.0 316.7h0M771.7 304.1h0M773.9 314.1h0M766.7 321.0h0M776.4 316.1h0M761.1 307.8h0M769.5 302.1h0M764.8 318.4h0M761.1 312.5h0M776.3 311.2h0M755.9 310.6h0M772.9 315.8h0M776.2 319.9h0M760.8 305.5h0M764.7 317.8h0M758.0 308.4h0M775.3 311.7h0M760.6 309.8h0M776.9 307.3h0M767.3 298.8h0M773.9 305.2h0M772.3 321.9h0M777.6 304.9h0M779.3 309.8h0M758.6 306.3h0M760.2 307.2h0M760.1 310.3h0M775.2 310.4h0M761.3 302.9h0M763.6 319.3h0M760.6 305.0h0M759.2 305.8h0M777.5 309.2h0M768.8 318.5h0M760.3 316.8h0M773.6 302.6h0M776.5 307.3h0M770.6 303.1h0M769.2 319.4h0M770.1 303.9h0M772.5 303.5h0M760.7 311.1h0M763.5 317.4h0M775.0 300.9h0M770.5 317.3h0M775.8 310.0h0M766.7 319.0h0M759.9 315.5h0M752.3 305.9h0M761.5 313.3h0M772.6 317.5h0M773.5 301.8h0M772.3 316.5h0M761.3 310.8h0M780.1 317.6h0M767.2 303.9h0M764.5 301.5h0M799.7 287.6h0M802.9 276.3h0M809.1 293.6h0M802.5 285.1h0M814.1 276.1h0M816.7 275.1h0M796.8 278.3h0M798.1 290.5h0M801.6 275.4h0M812.9 286.8h0M802.8 287.3h0M804.9 275.7h0M802.4 273.9h0M808.0 289.2h0M813.3 289.1h0M804.6 272.7h0M810.5 270.7h0M813.4 287.6h0M799.5 280.1h0M818.0 287.6h0M811.9 290.4h0M814.4 286.4h0M819.0 290.1h0M803.0 272.8h0M801.3 283.1h0M800.5 280.2h0M815.5 275.1h0M810.6 293.5h0M800.7 283.6h0M805.7 292.6h0M808.5 272.5h0M814.4 276.9h0M806.6 274.7h0M814.9 280.9h0M809.0 292.3h0M810.4 288.7h0M805.9 288.7h0M806.7 275.1h0M804.1 274.8h0M816.0 279.4h0M803.2 295.7h0M813.4 287.0h0M801.8 272.4h0M816.3 287.3h0M817.1 285.5h0M812.6 289.4h0M800.7 292.8h0M815.5 283.9h0M812.8 290.1h0M801.1 278.8h0M814.9 279.8h0M811.9 288.0h0M801.3 277.5h0M817.3 278.9h0M803.1 287.3h0M814.6 285.6h0M816.9 284.0h0M801.8 292.0h0M800.2 273.8h0M811.9 289.7h0M799.2 287.3h0M800.0 281.4h0M798.8 278.8h0M816.7 284.6h0M813.7 276.4h0M803.7 276.2h0M800.7 279.3h0M814.8 287.0h0M812.2 272.7h0M817.6 290.9h0M819.0 281.1h0M804.9 288.6h0M806.7 289.1h0M805.7 273.5h0M814.9 273.5h0M805.6 273.6h0M804.8 290.9h0M817.6 281.7h0M806.6 289.4h0M800.2 279.5h0M815.0 282.2h0M809.4 290.4h0M815.3 281.4h0M807.9 272.4h0M818.1 288.0h0M804.1 287.0h0M814.7 286.2h0M799.6 284.7h0M802.7 274.9h0M813.8 274.8h0M801.3 277.6h0M812.3 295.5h0M799.5 284.6h0M801.2 280.4h0M800.9 277.4h0M801.3 287.1h0M814.0 285.9h0M817.1 283.5h0M806.1 274.9h0M817.6 275.4h0M814.5 272.1h0M809.7 275.1h0M802.7 267.8h0M804.1 290.9h0M812.2 289.7h0M808.8 274.7h0M800.6 287.6h0M805.0 274.9h0M818.7 286.7h0M804.3 287.7h0M811.4 275.2h0M806.1 271.3h0M811.2 294.3h0M817.4 273.4h0M810.4 288.8h0M815.8 278.5h0M799.4 277.0h0M798.4 279.7h0M802.9 275.9h0M806.1 273.3h0M803.3 289.4h0M811.5 275.4h0M812.7 275.6h0M815.9 280.6h0M818.4 277.4h0M814.7 288.5h0M816.1 277.7h0M806.9 289.1h0M802.7 288.5h0M810.9 288.8h0M802.1 271.2h0M817.2 281.6h0M807.6 292.8h0M808.6 270.7h0M814.3 279.0h0M805.1 290.2h0M814.8 279.3h0M815.2 284.1h0M816.5 278.7h0M806.4 288.8h0M798.3 285.9h0M813.2 288.8h0M814.4 274.1h0M814.8 287.5h0M809.5 291.7h0M808.5 271.6h0M794.3 279.9h0M815.3 276.6h0M807.9 288.7h0M813.2 288.8h0M805.7 290.6h0M813.8 286.9h0M802.0 273.8h0M811.7 275.9h0M809.9 273.5h0M801.2 277.3h0M803.0 288.0h0M804.0 287.3h0M798.2 243.4h0M803.4 259.4h0M790.4 250.9h0M802.2 256.5h0M792.7 245.3h0M805.7 240.0h0M789.3 244.9h0M808.3 249.2h0M795.5 244.7h0M804.6 256.8h0M795.4 242.0h0M791.3 242.6h0M805.4 248.2h0M799.9 240.8h0M796.5 257.3h0M803.7 244.9h0M801.4 256.9h0M805.4 249.1h0M805.1 246.7h0M797.8 260.4h0M792.7 243.0h0M791.9 255.3h0M808.0 258.2h0M792.2 245.9h0M806.4 251.5h0M810.2 256.3h0M798.3 242.5h0M791.6 244.3h0M804.4 259.3h0M804.8 247.2h0M790.1 246.3h0M787.8 256.4h0M796.0 259.7h0M789.6 242.1h0M794.8 242.6h0M799.1 244.1h0M795.3 243.2h0M794.7 258.4h0M795.1 257.1h0M787.5 246.0h0M792.6 246.2h0M805.6 256.7h0M788.1 249.6h0M800.9 257.1h0M799.8 258.2h0M803.9 259.1h0M806.1 249.3h0M803.1 245.2h0M792.9 256.5h0M792.1 254.4h0M793.2 244.4h0M790.8 255.2h0M802.4 263.5h0M792.1 246.2h0M805.2 249.8h0M794.4 244.7h0M797.3 257.8h0M794.3 256.6h0M797.6 242.7h0M810.1 244.6h0M788.9 260.9h0M796.1 260.0h0M804.1 247.3h0M797.0 257.8h0M808.7 243.8h0M783.7 252.4h0M787.4 247.3h0M796.7 259.7h0M800.7 243.4h0M803.2 255.8h0M796.6 244.1h0M805.8 252.6h0M798.2 242.0h0M795.5 259.2h0M804.1 239.1h0M799.2 241.0h0M796.2 243.9h0M790.9 246.8h0M800.5 243.6h0M801.7 259.6h0M795.7 257.6h0M802.3 245.5h0M807.0 255.9h0M798.8 243.7h0M791.4 254.1h0M801.4 243.3h0M787.2 253.0h0M797.1 242.6h0M804.4 260.4h0M793.0 257.6h0M793.5 241.7h0M792.7 245.6h0M798.4 243.8h0M792.3 248.0h0M792.9 246.9h0M797.3 239.7h0M797.6 258.8h0M804.9 248.0h0M790.2 246.9h0M805.9 254.0h0M805.2 247.0h0M801.1 243.6h0M793.4 258.1h0M794.9 243.0h0M804.3 254.5h0M791.5 248.3h0M804.3 247.4h0M793.9 245.2h0M798.0 259.1h0M798.5 242.7h0M794.1 257.8h0M802.8 245.2h0M804.2 254.9h0M797.2 241.2h0M794.7 243.7h0M800.8 260.0h0M798.3 242.4h0M804.7 241.6h0M791.2 242.0h0M790.4 250.9h0M803.4 255.4h0M805.7 252.2h0M805.2 256.4h0M809.0 248.6h0M791.9 257.4h0M794.9 258.5h0M806.6 252.3h0M807.4 255.6h0M792.9 246.4h0M789.8 252.0h0M800.7 261.7h0M805.3 253.2h0M797.3 243.5h0M797.3 259.9h0M791.3 254.7h0M800.9 258.1h0M799.3 244.4h0M800.3 257.4h0M791.1 249.9h0M803.3 258.0h0M793.7 258.9h0M790.4 251.8h0M799.3 258.4h0M793.7 259.7h0M807.5 246.5h0M804.1 243.0h0M791.7 252.7h0M801.5 258.6h0M805.1 252.6h0M802.6 245.6h0M794.6 259.5h0M776.9 231.2h0M778.6 233.6h0M773.9 232.8h0M772.6 231.7h0M782.3 230.6h0M783.6 233.0h0M774.5 218.9h0M775.8 218.1h0M773.6 228.1h0M770.2 223.0h0M786.7 222.2h0M773.4 216.8h0M784.2 218.2h0M784.2 218.8h0M784.7 229.1h0M771.5 217.6h0M788.9 226.8h0M786.7 220.1h0M775.1 218.7h0M780.0 217.1h0M790.5 221.3h0M784.1 229.5h0M770.6 217.4h0M772.1 230.0h0M769.8 238.1h0M779.9 232.7h0M777.8 232.0h0M770.3 224.1h0M787.1 234.3h0M782.8 219.0h0M789.2 232.1h0M768.8 222.2h0M785.9 219.4h0M784.0 233.2h0M790.4 219.1h0M780.6 235.0h0M778.6 216.5h0M783.3 217.0h0M773.0 233.7h0M770.8 223.7h0M769.9 223.1h0M772.5 231.8h0M785.1 219.1h0M771.8 217.4h0M774.5 232.9h0M786.0 225.3h0M788.1 227.3h0M782.2 231.0h0M785.0 218.2h0M785.8 230.5h0M775.2 212.9h0M784.2 219.1h0M786.3 224.8h0M776.2 230.7h0M780.7 233.2h0M787.0 227.9h0M774.9 218.8h0M769.9 228.7h0M773.9 216.3h0M772.2 221.9h0M790.6 228.0h0M786.5 230.1h0M770.3 226.0h0M777.6 233.5h0M771.1 226.5h0M784.8 229.1h0M783.2 217.4h0M784.6 230.0h0M787.4 222.9h0M773.3 219.5h0M786.0 218.5h0M785.5 216.3h0M779.4 233.5h0M779.3 231.6h0M785.5 231.7h0M785.5 232.4h0M776.0 218.6h0M782.8 230.4h0M783.9 219.6h0M786.2 235.6h0M785.0 220.5h0M787.6 227.6h0M782.7 230.7h0M783.9 218.5h0M776.9 231.7h0M788.0 223.3h0M779.0 216.1h0M779.0 231.3h0M774.7 219.7h0M773.3 229.3h0M777.9 238.9h0M775.8 216.9h0M783.0 233.0h0M776.5 216.6h0M782.0 218.5h0M786.3 229.1h0M769.8 228.2h0M785.8 220.6h0M772.7 229.8h0M772.0 221.1h0M786.2 223.6h0M787.2 221.7h0M775.8 217.0h0M783.2 234.2h0M779.8 217.8h0M775.3 217.3h0M772.6 229.2h0M782.1 216.1h0M790.4 228.6h0M771.7 219.0h0M772.7 233.4h0M775.1 217.9h0M778.6 217.2h0M787.8 222.4h0M787.6 228.2h0M772.3 220.2h0M784.0 234.0h0M770.3 228.1h0M771.6 222.6h0M778.4 236.2h0M778.7 231.2h0M781.7 216.3h0M774.0 219.5h0M774.0 233.5h0M769.8 220.3h0M781.1 218.0h0M785.2 218.6h0M773.6 231.3h0M787.3 231.9h0M770.8 225.1h0M767.2 228.5h0M769.6 230.3h0M777.8 231.3h0M786.3 229.7h0M777.5 216.2h0M777.7 218.0h0M783.5 219.4h0M772.0 220.4h0M776.4 217.6h0M784.9 218.5h0M769.3 228.8h0M782.6 217.5h0M782.0 232.9h0M771.1 223.4h0M781.6 218.4h0M786.1 230.2h0M787.2 227.4h0M777.7 217.9h0M746.2 212.0h0M744.9 205.1h0M760.2 208.3h0M762.0 203.8h0M759.6 204.0h0M755.8 198.5h0M755.4 211.6h0M749.1 199.1h0M744.9 203.7h0M747.6 212.0h0M759.2 211.6h0M761.0 203.5h0M752.0 212.3h0M746.5 200.7h0M757.2 199.0h0M741.8 195.6h0M758.3 213.1h0M762.1 204.6h0M754.2 197.6h0M759.7 200.4h0M738.5 202.8h0M748.2 200.3h0M762.1 206.9h0M741.5 204.7h0M743.6 209.1h0M749.9 196.6h0M752.4 212.4h0M746.6 215.3h0M746.4 201.6h0M762.5 207.5h0M759.9 202.1h0M746.5 202.6h0M752.5 221.1h0M749.1 199.3h0M745.8 206.0h0M759.1 203.0h0M759.6 211.7h0M750.6 216.3h0M761.9 209.4h0M745.6 203.7h0M749.9 199.3h0M743.8 209.0h0M745.6 203.1h0M745.9 199.6h0M758.7 210.2h0M761.4 200.4h0M746.5 207.8h0M745.2 210.9h0M759.0 215.3h0M759.3 198.0h0M745.5 204.9h0M758.3 195.7h0M744.1 208.1h0M759.6 207.9h0M756.2 197.9h0M745.0 203.2h0M744.4 200.6h0M744.4 210.0h0M742.4 198.9h0M759.3 209.6h0M748.2 210.8h0M757.5 213.2h0M752.3 198.6h0M743.7 201.1h0M753.0 214.2h0M760.7 205.1h0M740.4 204.7h0M760.0 203.7h0M763.2 201.7h0M756.9 198.5h0M756.1 211.7h0M758.2 197.0h0M746.2 204.4h0M748.1 198.4h0M753.6 214.0h0M748.2 200.3h0M753.6 213.5h0M747.9 198.5h0M753.8 197.9h0M749.0 214.7h0M763.5 206.6h0M758.8 194.4h0M754.5 194.0h0M754.9 197.5h0M760.9 206.0h0M749.8 213.6h0M744.8 205.1h0M758.4 210.7h0M750.4 215.8h0M759.4 207.2h0M756.1 212.9h0M749.9 213.8h0M751.8 195.4h0M743.0 202.9h0M744.7 204.5h0M757.5 213.5h0M757.8 215.2h0M753.6 198.5h0M754.1 197.8h0M744.4 203.4h0M747.1 213.5h0M758.3 200.3h0M752.3 196.3h0M745.5 203.5h0M754.6 216.0h0M758.1 200.1h0M743.1 200.4h0M759.6 212.9h0M761.7 207.4h0M742.6 196.2h0M745.6 207.8h0M760.1 199.9h0M746.2 204.4h0M741.7 215.1h0M749.2 198.4h0M760.1 202.5h0M753.9 212.3h0M756.7 212.1h0M758.1 197.3h0M746.2 201.3h0M760.0 207.7h0M758.7 209.8h0M752.6 218.8h0M746.1 214.9h0M754.6 213.1h0M764.4 205.7h0M758.5 212.2h0M740.6 198.1h0M760.3 209.5h0M752.2 197.0h0M745.6 205.4h0M753.4 195.5h0M755.7 198.0h0M744.6 204.4h0M758.9 196.8h0M762.4 203.5h0M761.5 207.3h0M748.8 211.6h0M747.9 198.0h0M754.8 214.2h0M743.6 201.2h0M746.0 206.8h0M759.5 207.6h0M762.2 202.9h0M745.0 203.4h0M759.1 208.7h0M763.6 207.5h0M753.5 215.3h0M758.7 199.7h0M748.7 197.8h0M711.8 197.6h0M728.6 200.6h0M709.3 195.7h0M711.3 200.7h0M723.4 204.3h0M725.1 201.1h0M709.1 200.2h0M724.1 202.2h0M730.3 187.5h0M714.0 192.5h0M731.6 191.7h0M724.2 202.9h0M727.2 191.3h0M723.7 188.8h0M730.0 199.9h0M719.5 188.4h0M712.7 195.6h0M725.1 186.3h0M723.7 188.1h0M722.1 202.1h0M714.9 200.4h0M730.3 192.8h0M724.9 202.2h0M720.1 203.6h0M714.8 195.3h0M722.9 202.2h0M719.6 203.6h0M714.2 189.9h0M726.0 188.9h0M722.0 202.3h0M725.2 188.2h0M718.9 202.5h0M712.5 203.3h0M729.5 197.8h0M725.4 188.9h0M725.3 201.7h0M731.9 201.8h0M726.7 190.5h0M727.7 199.8h0M713.6 198.7h0M712.8 196.5h0M722.6 187.6h0M729.5 200.4h0M728.6 188.8h0M722.6 203.2h0M717.9 186.6h0M719.8 201.9h0M720.2 188.7h0M725.5 188.2h0M728.6 197.4h0M723.9 188.1h0M714.3 204.0h0M726.1 189.7h0M720.5 187.4h0M710.8 202.1h0M714.9 201.4h0M727.2 199.6h0M727.7 190.5h0M727.2 190.2h0M726.3 186.6h0M724.2 186.9h0M733.2 199.4h0M726.0 200.8h0M727.8 198.2h0M723.4 184.4h0M728.7 199.1h0M727.3 188.5h0M725.9 186.8h0M713.6 197.2h0M721.4 205.9h0M717.5 204.0h0M714.8 200.5h0M710.5 197.1h0M728.6 201.1h0M727.8 190.6h0M714.2 193.0h0M714.2 188.7h0M715.4 193.5h0M720.3 181.5h0M728.2 193.9h0M716.4 199.8h0M728.9 197.8h0M731.3 191.9h0M721.0 188.5h0M713.6 190.1h0M730.8 198.0h0M723.7 202.6h0M731.2 192.0h0M728.1 189.9h0M726.4 201.5h0M725.3 201.9h0M720.2 188.3h0M714.3 204.1h0M720.8 203.9h0M727.7 191.0h0M721.4 202.5h0M712.6 192.7h0M716.5 200.1h0M727.0 189.9h0M730.2 193.3h0M730.4 187.4h0M710.1 190.3h0M728.1 191.9h0M724.3 184.4h0M717.2 206.5h0M723.6 202.3h0M714.2 198.8h0M720.7 202.0h0M728.7 191.1h0M712.8 193.6h0M729.1 193.5h0M723.2 185.8h0M714.5 197.4h0M727.6 190.5h0M717.0 189.6h0M722.1 203.1h0M723.5 206.9h0M726.4 200.6h0M728.2 200.1h0M709.9 193.8h0M714.7 190.9h0M721.1 186.6h0M714.5 184.8h0M718.6 186.9h0M727.9 192.5h0M730.8 196.2h0M730.7 197.2h0M711.2 190.5h0M727.9 198.1h0M720.0 187.6h0M726.1 188.3h0M716.7 190.7h0M724.3 189.1h0M717.4 201.7h0M730.9 197.0h0M719.9 204.2h0M727.5 199.1h0M723.7 204.6h0M715.2 194.5h0M725.1 201.6h0M718.2 189.2h0M717.7 201.6h0M734.4 198.7h0M719.4 201.8h0M697.4 190.0h0M693.0 181.7h0M695.8 191.0h0M700.5 190.2h0M690.7 188.5h0M690.1 177.6h0M682.7 188.3h0M696.3 189.9h0M680.6 199.9h0M695.8 196.6h0M696.5 194.2h0M691.1 188.8h0M684.3 203.3h0M680.7 196.7h0M694.5 191.3h0M691.4 203.2h0M683.8 190.4h0M683.8 187.3h0M697.0 197.5h0M691.0 206.8h0M684.7 200.6h0M693.9 200.4h0M677.4 194.9h0M688.1 186.4h0M682.5 196.1h0M681.5 197.8h0M692.4 187.4h0M682.2 195.0h0M695.6 199.9h0M698.8 193.5h0M682.0 192.1h0M680.1 196.3h0M699.0 193.0h0M686.0 203.3h0M696.0 196.4h0M695.2 199.4h0M695.4 197.6h0M683.2 186.9h0M686.4 186.2h0M697.3 189.2h0M690.3 206.2h0M683.1 198.2h0M697.3 195.3h0M686.8 187.5h0M693.9 190.3h0M681.1 191.4h0M685.4 203.1h0M686.0 185.7h0M696.2 184.6h0M681.4 193.4h0M681.3 193.3h0M678.5 192.6h0M688.5 184.1h0M680.0 195.0h0M685.9 188.6h0M697.8 198.2h0M697.5 197.0h0M684.4 190.5h0M682.3 194.6h0M695.0 185.3h0M682.4 191.8h0M695.2 199.7h0M696.0 199.1h0M678.6 190.3h0M681.8 196.4h0M677.6 192.8h0M681.0 203.4h0M693.2 201.8h0M692.0 203.4h0M694.8 206.4h0M688.5 188.5h0M682.5 192.4h0M690.2 187.6h0M675.3 190.0h0M691.6 185.7h0M685.6 200.9h0M696.0 197.9h0M693.4 201.2h0M695.3 183.0h0M698.8 204.9h0M692.7 201.5h0M695.5 190.5h0M685.4 189.9h0M680.7 190.3h0M676.4 201.6h0M683.7 202.0h0M700.0 199.1h0M683.8 188.8h0M682.5 199.2h0M678.4 202.6h0M682.2 193.1h0M686.5 202.2h0M693.4 190.0h0M683.1 192.1h0M695.4 200.4h0M681.7 203.3h0M684.1 200.5h0M697.1 190.5h0M687.8 183.6h0M681.7 185.6h0M693.5 188.5h0M690.4 206.4h0M682.5 197.4h0M682.0 194.7h0M689.4 204.8h0M688.3 188.8h0M684.4 201.9h0M679.6 194.5h0M680.8 199.5h0M690.0 205.9h0M699.9 193.3h0M682.4 190.8h0M683.6 202.1h0M695.2 200.4h0M696.5 200.6h0M695.8 193.3h0M694.2 200.0h0M683.7 191.4h0M693.9 187.8h0M699.6 191.8h0M695.4 203.0h0M680.9 189.5h0M699.3 198.2h0M679.5 198.5h0M698.9 198.0h0M684.4 202.2h0M682.1 198.8h0M676.3 193.7h0M694.1 191.0h0M681.0 204.9h0M690.2 188.0h0M694.3 185.9h0M690.6 202.0h0M699.1 204.5h0M684.9 190.3h0M682.9 199.3h0M684.6 204.2h0M680.8 193.9h0M689.2 203.0h0M682.8 187.6h0M692.3 185.2h0M666.7 201.8h0M651.8 203.6h0M649.7 211.6h0M663.5 211.2h0M653.9 198.9h0M647.6 201.6h0M656.6 197.5h0M658.7 212.4h0M653.0 196.0h0M666.0 207.0h0M667.0 212.6h0M645.7 204.3h0M663.4 213.4h0M659.9 212.6h0M649.3 205.2h0M649.9 205.3h0M660.1 197.3h0M663.5 211.8h0M658.2 197.0h0M651.9 202.7h0M652.0 202.9h0M659.5 196.8h0M661.9 211.4h0M652.9 212.6h0M650.7 209.6h0M658.9 213.0h0M653.0 214.6h0M651.9 202.0h0M658.8 195.6h0M671.3 207.4h0M665.2 206.1h0M658.4 193.1h0M646.8 211.4h0M650.3 211.0h0M665.8 199.8h0M649.7 200.9h0M668.5 208.2h0M667.4 196.5h0M663.8 210.9h0M654.1 199.2h0M655.2 213.4h0M666.2 207.3h0M654.5 197.9h0M651.6 201.3h0M659.8 212.2h0M656.5 213.1h0M663.2 201.0h0M657.7 198.6h0M656.6 213.5h0M659.1 215.0h0M663.3 198.2h0M667.3 207.2h0M648.7 201.7h0M659.7 197.9h0M650.6 201.3h0M652.3 202.3h0M666.0 204.6h0M660.5 213.0h0M664.6 202.6h0M665.8 203.1h0M659.8 214.9h0M652.8 213.4h0M649.9 201.8h0M650.9 212.4h0M663.6 200.6h0M648.9 208.2h0M665.2 203.0h0M665.8 208.9h0M664.9 199.2h0M647.0 211.5h0M654.3 199.5h0M664.8 200.6h0M652.4 201.9h0M647.6 206.3h0M657.6 212.7h0M652.9 195.9h0M660.2 194.5h0M646.7 209.4h0M647.9 207.5h0M650.5 200.2h0M663.8 200.8h0M646.4 197.6h0M652.4 202.2h0M662.9 198.2h0M668.2 208.5h0M664.1 197.6h0M651.8 214.3h0M657.2 217.2h0M665.6 205.5h0M652.7 201.0h0M662.5 212.2h0M651.8 210.5h0M651.8 213.7h0M651.4 194.8h0M648.9 204.1h0M661.8 211.4h0M651.3 204.5h0M652.7 196.2h0M663.5 211.6h0M651.5 202.9h0M652.8 210.8h0M662.6 194.1h0M665.9 208.1h0M646.8 203.9h0M664.3 197.4h0M658.2 219.8h0M652.4 199.8h0M656.5 213.3h0M660.9 199.4h0M667.1 206.1h0M662.0 195.0h0M652.5 210.8h0M653.1 195.8h0M663.6 215.1h0M665.0 202.5h0M661.0 215.3h0M662.3 212.7h0M654.8 214.7h0M652.0 210.4h0M659.2 212.4h0M651.5 204.9h0M657.6 198.8h0M651.1 207.2h0M666.3 202.9h0M663.7 201.0h0M664.4 211.3h0M655.5 195.2h0M651.5 206.3h0M649.5 206.0h0M649.2 209.4h0M666.1 198.9h0M663.4 210.5h0M664.2 201.7h0M666.2 211.8h0M659.8 213.2h0M659.1 212.1h0M660.2 198.4h0M657.7 214.6h0M657.2 212.9h0M656.2 198.7h0M647.6 200.9h0M655.8 198.5h0M648.7 206.8h0M658.2 214.0h0M663.2 210.9h0M660.3 212.6h0M663.7 200.8h0M670.2 206.1h0M665.6 204.0h0M659.6 197.0h0M656.4 216.3h0M665.0 202.2h0M665.7 204.3h0M664.7 202.3h0M650.2 201.1h0M625.0 222.7h0M637.4 228.3h0M622.9 227.1h0M635.1 212.1h0M626.4 231.1h0M638.2 226.5h0M629.8 232.1h0M637.5 220.1h0M620.0 220.2h0M640.2 227.6h0M639.9 219.7h0M638.7 221.3h0M630.6 217.1h0M626.1 229.4h0M640.8 221.2h0M629.7 236.8h0M633.2 217.8h0M629.6 214.6h0M641.9 217.7h0M621.6 230.8h0M638.1 228.7h0M628.2 218.8h0M622.9 223.9h0M638.8 222.6h0M638.9 222.4h0M625.1 232.6h0M634.0 233.4h0M635.4 218.7h0M625.0 214.2h0M636.1 216.9h0M626.1 219.7h0M628.7 231.4h0M629.8 231.2h0M634.2 215.7h0M638.6 221.6h0M637.9 227.5h0M641.5 226.4h0M631.2 217.1h0M631.4 215.5h0M640.3 220.0h0M639.4 215.2h0M628.4 231.8h0M638.8 225.8h0M632.0 235.1h0M631.7 231.5h0M625.3 224.1h0M641.6 220.4h0M629.8 216.8h0M636.1 219.4h0M626.4 230.6h0M638.6 226.0h0M642.2 230.8h0M624.8 216.4h0M629.4 218.3h0M632.0 233.9h0M640.1 220.1h0M639.2 218.1h0M623.8 218.3h0M640.0 225.6h0M623.1 228.3h0M627.1 233.7h0M628.1 216.0h0M636.4 216.9h0M631.4 236.2h0M633.1 212.5h0M629.3 216.4h0M639.8 223.7h0M639.1 216.6h0M628.8 216.2h0M639.3 218.7h0M638.0 233.7h0M633.5 232.0h0M622.9 224.3h0M625.1 227.8h0M625.3 223.5h0M629.9 232.6h0M621.6 224.2h0M625.2 219.7h0M639.3 223.5h0M634.7 217.8h0M634.0 232.0h0M638.6 229.4h0M625.8 220.9h0M639.4 227.9h0M628.9 214.8h0M627.5 219.3h0M625.2 229.3h0M638.6 221.1h0M621.2 225.4h0M636.5 230.3h0M633.6 217.2h0M625.5 231.1h0M638.7 230.3h0M625.2 220.4h0M640.6 222.4h0M623.0 225.0h0M629.7 216.7h0M624.2 222.1h0M638.5 227.4h0M625.0 224.4h0M626.4 228.7h0M632.4 231.9h0M640.5 223.1h0M627.6 219.1h0M633.0 217.3h0M626.8 219.5h0M634.5 232.9h0M633.0 217.5h0M640.6 221.4h0M630.0 232.5h0M625.5 230.6h0M623.4 219.7h0M638.8 223.1h0M624.9 224.6h0M640.0 225.5h0M642.5 226.8h0M624.3 229.7h0M632.5 217.4h0M630.9 232.8h0M636.1 215.7h0M627.3 230.6h0M621.0 219.2h0M622.5 222.6h0M623.4 217.0h0M627.9 217.2h0M636.9 216.1h0M636.8 219.7h0M633.0 232.6h0M627.5 232.6h0M625.0 226.0h0M627.7 216.8h0M638.1 221.1h0M624.9 224.8h0M631.8 234.6h0M632.9 236.0h0M625.1 232.8h0M621.5 230.0h0M636.7 229.1h0M629.3 215.7h0M622.7 223.8h0M603.6 257.3h0M608.3 243.9h0M617.6 244.3h0M607.5 246.4h0M613.8 238.6h0M603.4 254.6h0M603.1 253.0h0M615.4 257.0h0M600.3 247.1h0M611.8 241.0h0M619.4 240.0h0M604.9 251.8h0M606.1 250.5h0M605.9 253.5h0M602.3 247.5h0M605.7 256.8h0M623.9 248.8h0M615.6 244.2h0M614.2 260.3h0M614.0 257.6h0M619.6 256.6h0M612.4 259.8h0M611.9 257.8h0M620.6 248.8h0M615.5 257.4h0M606.5 257.1h0M608.1 260.0h0M610.7 260.0h0M614.2 243.4h0M604.6 247.7h0M609.7 257.0h0M621.3 253.8h0M620.9 254.8h0M623.2 243.9h0M601.8 258.5h0M608.5 243.9h0M615.6 239.3h0M618.6 246.2h0M615.4 236.4h0M608.9 256.9h0M620.0 259.4h0M624.4 249.6h0M604.1 248.2h0M619.4 257.9h0M617.9 244.7h0M615.9 237.9h0M605.2 251.4h0M618.3 242.2h0M604.3 247.8h0M626.6 247.7h0M616.4 264.5h0M614.3 243.4h0M615.7 259.0h0M614.7 244.2h0M614.9 242.3h0M614.3 258.5h0M619.2 245.1h0M618.3 246.9h0M623.1 256.4h0M620.2 255.8h0M613.5 238.4h0M615.6 259.4h0M601.6 252.5h0M619.7 252.2h0M617.8 244.8h0M606.3 245.6h0M609.1 259.4h0M611.1 242.8h0M605.2 250.3h0M614.8 259.3h0M604.1 250.3h0M606.0 250.7h0M607.3 255.6h0M615.9 259.1h0M616.5 262.8h0M610.7 244.1h0M613.4 257.9h0M607.5 256.4h0M617.7 245.8h0M619.7 253.3h0M616.7 245.6h0M620.9 257.3h0M618.0 244.7h0M608.3 242.9h0M609.6 243.6h0M609.3 242.6h0M619.4 251.4h0M619.0 246.8h0M614.5 258.0h0M616.4 245.4h0M607.7 245.6h0M607.0 255.2h0M625.7 243.9h0M603.8 247.8h0M611.9 242.3h0M610.3 259.4h0M602.7 247.6h0M617.1 259.1h0M619.2 257.5h0M604.1 259.5h0M613.1 259.1h0M623.5 250.9h0M599.2 252.1h0M619.4 250.4h0M612.1 260.6h0M604.4 253.5h0M623.4 250.5h0M606.7 257.6h0M619.6 244.1h0M617.8 245.1h0M616.1 257.7h0M602.6 250.6h0M619.9 251.9h0M618.9 247.3h0M618.2 255.4h0M616.2 244.5h0M614.8 242.5h0M616.6 257.3h0M608.9 244.9h0M609.7 244.3h0M619.8 247.1h0M604.1 252.5h0M613.8 261.4h0M611.1 244.2h0M608.9 245.4h0M610.2 239.7h0M604.9 251.4h0M620.3 255.7h0M617.7 256.9h0M607.6 255.6h0M612.0 258.9h0M607.1 246.6h0M619.9 252.8h0M619.3 248.8h0M620.3 247.1h0M617.1 258.2h0M624.7 252.2h0M606.8 256.3h0M603.7 254.3h0M608.2 262.5h0M614.3 239.7h0M612.1 258.8h0M619.4 247.0h0M617.2 244.1h0M616.0 240.6h0M619.4 247.7h0M607.7 258.4h0M615.4 257.6h0M613.8 241.6h0M614.7 240.5h0M607.0 255.2h0M611.1 262.2h0M609.8 243.3h0M618.3 246.9h0M605.2 251.8h0M612.9 243.8h0M615.2 260.2h0M607.3 245.8h0M619.5 249.4h0M614.1 258.4h0M618.5 246.4h0M604.7 244.2h0M619.8 255.1h0M609.0 239.8h0M614.1 244.2h0M605.6 253.3h0M602.1 258.3h0M618.7 247.7h0M601.1 249.4h0M621.6 247.6h0M619.3 252.1h0M618.7 246.9h0M604.9 253.9h0M613.6 293.7h0M594.9 285.4h0M596.8 278.3h0M601.0 288.6h0M601.3 288.6h0M610.5 278.9h0M610.0 282.0h0M611.5 281.0h0M613.3 279.3h0M600.9 291.7h0M599.5 274.9h0M606.5 274.3h0M600.7 290.2h0M600.7 289.7h0M601.1 289.2h0M608.8 279.5h0M602.2 269.2h0M595.3 276.4h0M596.7 289.2h0M596.8 275.7h0M607.5 276.8h0M604.8 274.3h0M593.0 285.9h0M607.7 287.1h0M596.8 275.3h0M610.5 278.8h0M599.3 274.8h0M602.4 292.6h0M607.2 289.6h0M601.1 275.4h0M609.3 280.2h0M598.0 288.3h0M605.7 291.5h0M612.6 281.0h0M603.4 273.5h0M607.0 273.3h0M610.3 281.2h0M606.0 274.8h0M611.1 287.9h0M595.9 285.1h0M611.6 285.5h0M591.8 282.9h0M610.7 283.6h0M610.2 284.2h0M595.3 275.9h0M600.6 275.3h0M602.5 289.2h0M597.7 277.6h0M606.4 294.1h0M609.0 291.8h0M599.1 287.7h0M611.5 281.8h0M607.6 291.4h0M610.2 285.1h0M611.9 279.8h0M609.6 277.2h0M600.8 288.8h0M598.7 288.9h0M607.8 271.3h0M593.5 284.3h0M609.5 274.7h0M596.5 276.4h0M597.0 288.0h0M609.9 273.1h0M610.6 284.1h0M593.6 280.7h0M592.0 281.9h0M607.0 288.3h0M609.9 277.1h0M606.1 270.0h0M598.3 273.9h0M604.4 288.8h0M595.6 276.9h0M604.5 273.7h0M608.1 278.2h0M597.5 276.3h0M614.3 282.4h0M596.7 287.4h0M598.8 287.9h0M606.7 288.4h0M590.1 283.2h0M592.7 277.7h0M594.6 285.8h0M611.4 285.9h0M595.6 286.4h0M609.6 286.7h0M611.2 286.2h0M609.8 279.7h0M587.5 284.2h0M599.5 274.4h0M608.2 287.5h0M598.1 275.5h0M607.0 289.4h0M597.9 288.0h0M604.6 292.2h0M598.9 288.2h0M608.5 286.0h0M611.2 283.8h0M598.3 294.2h0M595.3 284.3h0M610.0 279.8h0M609.4 283.3h0M602.9 292.1h0M599.1 276.3h0M597.9 287.4h0M609.2 288.9h0M596.1 286.5h0M605.5 271.5h0M593.4 281.3h0M591.6 285.7h0M590.1 286.7h0M609.4 281.4h0M613.9 286.8h0M598.2 287.3h0M596.6 274.3h0M608.5 276.4h0M609.4 282.2h0M612.0 280.5h0M602.0 289.7h0M600.6 291.7h0M597.9 288.8h0M604.7 295.1h0M592.8 281.3h0M607.6 288.7h0M598.9 273.9h0M609.7 280.8h0M607.5 274.8h0M595.9 290.1h0M610.0 287.6h0M612.6 286.2h0M605.2 274.6h0M609.5 276.0h0M594.6 284.4h0M607.7 288.2h0M598.4 290.5h0M598.4 309.3h0M602.7 326.0h0M610.4 312.4h0M596.3 311.0h0M610.4 313.7h0M611.0 314.7h0M609.3 314.4h0M613.8 315.7h0M612.3 311.2h0M609.4 322.6h0M607.9 324.4h0M598.2 321.9h0M595.8 314.3h0M589.6 321.4h0M604.8 321.2h0M606.8 309.2h0M589.6 310.0h0M602.1 322.9h0M599.0 327.3h0M614.6 318.8h0M590.5 315.2h0M612.6 315.3h0M611.2 321.3h0M610.2 323.7h0M606.1 321.2h0M598.5 305.1h0M598.9 324.6h0M610.3 321.2h0M614.5 319.9h0M606.6 308.4h0M598.6 304.8h0M603.6 306.4h0M605.3 299.8h0M610.2 319.4h0M594.2 314.8h0M604.9 308.2h0M594.9 307.0h0M601.1 308.1h0M595.8 319.2h0M595.1 307.9h0M614.3 317.3h0M605.7 303.9h0M595.9 314.6h0M602.0 321.6h0M603.2 321.9h0M599.8 305.6h0M596.1 310.1h0M601.7 321.1h0M605.4 303.7h0M603.4 307.6h0M610.7 321.0h0M595.7 310.1h0M614.6 316.8h0M609.8 317.3h0M597.4 322.1h0M608.6 318.2h0M611.2 313.1h0M603.6 301.5h0M601.8 321.8h0M607.2 319.9h0M604.3 322.5h0M611.7 323.4h0M611.5 314.9h0M604.2 321.8h0M605.3 304.9h0M606.6 321.7h0M601.4 305.9h0M605.5 306.0h0M604.1 321.2h0M611.3 318.5h0M612.0 310.9h0M597.1 305.3h0M607.3 322.7h0M614.7 315.3h0M595.2 311.7h0M597.5 321.8h0M602.1 306.8h0M600.8 307.6h0M594.1 310.0h0M605.9 323.0h0M610.2 316.5h0M608.1 306.1h0M594.2 315.9h0M594.5 318.8h0M607.3 320.5h0M604.0 323.2h0M602.4 321.5h0M591.0 322.5h0M604.0 329.5h0M599.2 320.8h0M602.7 322.6h0M591.7 315.2h0M600.6 303.7h0M608.3 320.5h0M609.5 312.1h0M602.0 323.2h0M609.7 309.5h0M598.8 308.6h0M611.2 309.6h0M605.8 321.6h0M607.4 319.4h0M595.5 319.5h0M597.3 320.7h0M598.1 319.4h0M598.0 321.4h0M603.5 322.8h0M604.2 320.9h0M602.4 324.1h0M612.5 317.4h0M599.7 320.5h0M594.2 318.8h0M595.3 313.2h0M597.6 304.1h0M594.7 312.4h0M614.7 311.7h0M597.3 320.7h0M607.2 307.0h0M606.1 308.8h0M609.9 317.0h0M599.8 325.4h0M592.5 316.2h0M608.3 321.5h0M606.6 322.0h0M598.8 307.9h0M608.6 309.4h0M610.0 312.3h0M594.7 316.9h0M614.5 317.5h0M601.2 324.2h0M600.5 321.2h0M609.7 319.5h0M612.9 322.3h0M612.6 320.9h0M605.1 307.8h0M601.7 321.4h0M598.4 308.9h0M599.3 308.2h0M605.9 320.9h0M596.8 324.4h0M600.9 303.1h0M604.3 300.5h0M595.4 308.3h0M614.8 312.9h0M606.3 322.9h0M617.7 352.7h0M620.2 351.9h0M606.2 352.8h0M612.3 356.0h0M608.2 334.7h0M617.7 354.5h0M622.0 347.1h0M609.1 356.7h0M610.2 354.2h0M616.8 338.0h0M606.2 348.9h0M612.6 337.9h0M617.6 334.7h0M616.5 352.9h0M604.4 341.2h0M620.9 345.2h0M617.0 337.2h0M620.3 345.3h0M606.1 346.6h0M615.0 335.4h0M616.1 354.3h0M603.5 348.8h0M603.8 353.0h0M608.2 355.3h0M604.6 344.8h0M607.2 332.6h0M618.5 341.7h0M614.6 334.3h0M609.2 358.2h0M605.5 331.6h0M605.8 346.8h0M610.5 352.2h0M606.8 341.1h0M607.0 352.7h0M616.5 358.1h0M621.0 343.1h0M623.4 349.0h0M626.1 342.8h0M603.3 345.9h0M612.7 338.4h0M623.2 349.3h0M607.0 340.5h0M606.5 343.1h0M606.3 343.1h0M604.8 345.5h0M608.1 338.5h0M600.7 339.7h0M606.3 342.2h0M616.1 355.6h0M617.8 352.7h0M612.0 356.8h0M616.0 355.2h0M622.2 346.9h0M616.7 352.8h0M605.2 343.7h0M613.2 338.4h0M604.2 341.5h0M620.1 347.9h0M602.3 346.8h0M605.1 339.7h0M613.2 352.4h0M603.7 338.9h0M616.1 354.3h0M604.7 343.7h0M619.7 346.1h0M619.9 338.6h0M607.3 351.5h0M616.5 333.1h0M605.0 349.8h0M610.6 352.3h0M609.8 353.4h0M618.9 341.0h0M621.7 340.0h0M619.3 343.2h0M610.0 352.1h0M622.0 341.3h0M605.9 341.4h0M610.7 352.3h0M619.8 347.5h0M617.1 360.4h0M611.6 337.8h0M619.3 350.0h0M618.3 357.4h0M606.1 344.0h0M610.0 336.6h0M605.5 344.6h0M621.8 344.8h0M612.6 354.5h0M608.5 350.6h0M618.2 332.3h0M610.3 352.7h0M607.5 353.9h0M620.2 347.5h0M615.3 339.1h0M613.7 337.3h0M618.7 348.3h0M618.7 351.1h0M619.8 338.1h0M614.5 358.8h0M613.2 338.6h0M612.2 352.9h0M605.3 356.1h0M610.9 353.6h0M604.1 345.2h0M610.8 333.8h0M612.9 355.9h0M609.4 336.2h0M619.0 352.2h0M609.9 353.2h0M607.7 350.3h0M620.1 351.0h0M601.6 350.4h0M614.4 337.9h0M609.3 353.5h0M613.8 333.8h0M619.2 347.6h0M606.8 348.8h0M617.3 339.2h0M603.3 350.3h0M616.1 339.3h0M602.2 338.8h0M605.6 351.9h0M604.4 348.7h0M604.2 336.4h0M601.4 345.7h0M622.5 350.5h0M618.1 354.3h0M621.5 342.7h0M605.8 348.1h0M621.3 336.9h0M618.6 349.6h0M615.7 351.8h0M618.2 349.3h0M619.0 348.9h0M600.6 348.6h0M618.6 351.9h0M610.8 356.9h0M612.1 337.9h0M612.8 331.9h0M618.3 339.4h0M613.4 338.3h0M605.9 345.6h0M620.7 348.6h0M618.7 348.7h0M613.5 337.3h0M611.0 359.7h0M622.9 344.5h0M608.6 352.1h0M618.8 341.6h0M618.1 350.8h0M612.0 336.2h0M612.7 352.2h0M607.6 333.9h0M605.9 351.1h0M617.9 354.1h0M607.6 339.9h0M603.6 345.0h0M613.3 337.7h0M617.2 354.6h0M616.0 352.4h0M619.3 348.5h0M606.5 342.4h0M605.4 343.5h0M616.9 340.2h0M608.1 354.1h0M610.3 353.2h0M618.4 337.0h0M619.2 348.8h0M606.3 343.8h0M612.0 332.1h0M609.7 338.5h0M606.7 357.6h0M634.8 377.8h0M625.1 362.4h0M626.8 378.0h0M633.3 365.3h0M638.9 360.9h0M623.5 373.2h0M638.4 370.4h0M641.0 369.7h0M628.1 364.8h0M633.5 383.6h0M624.2 377.2h0M635.9 377.6h0M627.0 366.0h0M624.4 373.7h0M624.3 379.8h0M638.7 363.1h0M630.8 380.9h0M627.1 364.6h0M627.2 376.9h0M637.1 366.8h0M632.7 362.0h0M642.4 365.5h0M637.2 367.8h0M641.5 365.8h0M636.1 381.1h0M628.7 364.6h0M623.2 369.3h0M620.2 369.6h0M626.2 360.6h0M625.6 375.0h0M638.4 373.7h0M637.3 382.6h0M634.0 364.2h0M624.9 366.0h0M625.8 368.2h0M632.7 364.6h0M624.3 371.6h0M639.9 379.8h0M636.2 379.9h0M634.9 378.0h0M638.8 365.5h0M627.9 365.3h0M640.1 372.4h0M637.6 376.7h0M625.5 366.9h0M624.9 369.6h0M638.5 361.5h0M634.0 363.6h0M630.4 379.4h0M640.5 376.2h0M625.9 376.0h0M636.3 380.6h0M627.6 363.8h0M639.5 369.0h0M636.7 380.2h0M636.3 361.9h0M626.5 367.0h0M631.8 381.6h0M632.2 363.5h0M633.6 362.3h0M628.0 365.1h0M630.9 379.8h0M640.5 364.5h0M634.6 365.5h0M621.2 376.8h0M640.0 370.6h0M640.5 373.7h0M641.2 372.8h0M624.3 361.8h0M630.7 378.5h0M626.3 368.1h0M638.5 373.7h0M635.5 377.9h0M638.1 367.6h0M624.3 375.5h0M638.9 376.6h0M638.7 370.9h0M631.3 362.9h0M636.3 380.1h0M624.7 376.4h0M633.8 379.2h0M626.8 376.4h0M641.6 370.6h0M630.7 379.7h0M623.1 362.0h0M627.2 365.4h0M641.7 375.7h0M634.4 364.7h0M639.2 371.6h0M638.5 369.7h0M629.4 382.1h0M624.5 372.6h0M627.6 364.6h0M635.3 364.7h0M640.1 371.3h0M624.4 375.3h0M625.8 379.9h0M621.8 367.2h0M639.5 372.5h0M633.5 378.5h0M624.4 377.1h0M637.6 376.3h0M625.2 362.1h0M625.2 369.8h0M620.6 370.8h0M625.4 376.3h0M635.6 363.9h0M636.8 382.8h0M633.5 382.5h0M639.8 364.4h0M640.3 372.0h0M628.3 377.7h0M624.3 368.6h0M618.6 374.5h0M625.4 369.8h0M628.1 379.2h0M635.7 379.2h0M637.9 377.7h0M627.6 365.0h0M639.9 370.1h0M638.9 372.6h0M626.9 377.0h0M637.6 365.4h0M634.1 378.6h0M633.7 378.6h0M630.1 380.6h0M622.6 373.3h0M625.7 367.2h0M632.2 378.5h0M633.5 364.6h0M641.0 367.8h0M634.0 378.7h0M637.7 375.2h0M626.3 362.8h0M625.6 378.5h0M628.4 362.9h0M638.7 369.3h0M638.7 378.1h0M641.2 366.0h0M621.5 377.8h0M619.7 381.1h0M630.7 378.8h0M637.0 377.2h0M644.4 374.7h0M634.4 365.4h0M641.7 379.1h0M637.6 375.8h0M638.2 365.5h0M641.1 370.5h0M641.1 370.6h0M629.6 381.6h0M640.4 373.6h0M633.3 379.8h0M628.0 378.7h0M630.0 360.8h0M634.8 381.2h0M661.9 384.8h0M654.4 398.4h0M656.0 375.9h0M649.7 390.3h0M647.6 384.5h0M665.0 385.9h0M656.0 383.0h0M655.8 398.1h0M664.5 388.4h0M668.8 399.4h0M656.3 383.5h0M662.6 400.4h0M666.5 392.9h0M659.6 400.4h0M663.5 386.4h0M656.0 398.4h0M659.1 384.3h0M648.9 395.5h0M661.5 384.2h0M664.8 396.1h0M667.2 385.0h0M652.3 385.0h0M648.1 387.0h0M653.8 400.1h0M660.8 383.7h0M653.6 395.9h0M661.1 383.5h0M655.1 379.7h0M661.6 382.5h0M659.8 397.7h0M664.4 383.3h0M667.9 383.5h0M665.8 390.1h0M654.5 385.2h0M665.5 394.4h0M658.8 399.5h0M663.5 396.5h0M666.4 388.9h0M659.6 382.6h0M649.8 389.5h0M650.8 391.8h0M668.1 397.7h0M655.2 383.7h0M664.9 399.0h0M649.7 396.6h0M665.6 389.3h0M653.9 382.3h0M662.9 396.1h0M653.6 396.1h0M648.8 383.7h0M658.8 402.6h0M666.4 385.7h0M650.4 388.2h0M668.4 388.9h0M666.4 383.9h0M665.6 389.3h0M654.9 383.8h0M653.3 384.0h0M652.1 399.5h0M661.0 379.2h0M659.3 382.7h0M665.5 393.8h0M654.6 384.4h0M651.0 388.1h0M665.5 390.1h0M653.3 398.4h0M656.3 398.5h0M652.2 387.7h0M648.6 382.1h0M664.0 380.0h0M651.1 380.4h0M650.9 392.7h0M647.4 389.9h0M652.4 387.6h0M655.8 397.5h0M664.2 395.1h0M657.2 383.5h0M653.4 385.6h0M651.8 381.7h0M664.4 396.4h0M662.5 398.3h0M654.1 397.1h0M650.9 386.6h0M650.5 386.7h0M656.6 405.3h0M668.0 389.9h0M655.5 398.9h0M662.8 399.8h0M653.5 385.3h0M665.7 391.1h0M660.3 397.7h0M665.0 390.0h0M664.7 389.4h0M651.6 388.9h0M665.8 386.7h0M657.6 398.7h0M666.2 390.7h0M650.3 393.4h0M660.0 379.4h0M653.8 385.6h0M657.0 383.4h0M660.4 383.8h0M661.8 396.6h0M651.6 391.5h0M665.3 390.4h0M664.6 394.5h0M656.0 397.4h0M645.4 392.3h0M664.9 395.1h0M654.3 384.4h0M655.1 381.2h0M666.1 391.8h0M663.0 398.5h0M666.5 394.8h0M661.3 402.4h0M664.4 384.5h0M652.3 382.5h0M653.0 398.4h0M652.9 385.1h0M650.5 389.4h0M663.9 380.7h0M652.0 393.5h0M664.3 395.1h0M653.8 396.5h0M656.7 397.9h0M650.8 397.6h0M663.2 385.2h0M668.5 392.0h0M659.2 381.6h0M664.5 383.9h0M651.0 395.8h0M660.3 384.0h0M669.3 390.4h0M663.7 395.0h0M648.0 386.9h0M657.7 398.4h0M648.1 392.9h0M666.0 391.3h0M653.3 397.1h0M652.0 386.8h0M656.8 384.2h0M663.4 398.3h0M667.2 392.2h0M651.6 393.4h0M652.5 398.2h0M659.7 383.7h0M662.1 401.4h0M650.8 386.8h0M663.9 384.5h0M650.1 394.0h0M660.2 381.2h0M665.4 382.2h0M658.2 398.1h0M666.5 387.1h0M650.6 387.9h0M664.2 396.5h0M661.8 384.4h0M650.9 393.3h0M651.4 383.1h0M665.1 399.3h0M649.4 389.8h0M664.5 384.9h0M660.2 379.7h0M659.9 383.5h0M666.4 393.5h0M651.3 388.4h0M665.3 387.4h0M650.9 391.2h0M659.8 403.3h0M690.6 391.8h0M695.4 397.0h0M682.3 402.1h0M676.4 402.7h0M696.0 404.6h0M694.5 405.4h0M687.4 410.7h0M697.0 406.3h0M678.4 400.7h0M683.3 397.0h0M697.6 403.8h0M687.4 392.5h0M699.5 403.0h0M687.9 393.9h0M686.8 409.9h0M682.5 401.0h0M695.6 397.7h0M692.5 389.5h0M695.1 404.3h0M681.9 399.1h0M696.1 397.9h0M678.8 400.1h0M689.7 407.8h0M693.0 408.6h0M691.2 394.2h0M690.1 393.7h0M681.9 397.8h0M691.1 408.1h0M682.2 401.3h0M688.7 408.3h0M686.6 388.7h0M696.2 399.5h0M683.9 406.8h0M678.9 403.1h0M683.3 394.5h0M695.9 401.4h0M690.0 411.1h0M691.6 407.3h0M680.3 397.2h0M693.7 406.9h0M692.1 410.3h0M694.4 393.5h0M685.9 388.2h0M695.4 404.7h0M687.4 391.9h0M681.6 400.1h0M688.4 392.3h0M680.7 398.0h0M693.1 395.2h0M683.8 393.4h0M693.6 408.4h0M695.8 401.3h0M691.0 391.7h0M683.2 404.6h0M692.0 393.9h0M683.5 405.0h0M697.6 400.4h0M682.0 402.2h0M683.0 395.1h0M683.3 392.6h0M696.1 401.4h0M676.9 402.3h0M696.7 407.7h0M690.1 394.0h0M689.9 408.8h0M691.9 394.7h0M696.8 410.5h0M698.4 396.1h0M680.9 400.1h0M695.2 404.7h0M685.1 395.3h0M691.4 407.6h0M696.4 408.6h0M692.8 395.4h0M691.1 393.7h0M683.7 394.8h0M686.5 411.3h0M697.2 398.8h0M688.3 393.9h0M693.9 408.3h0M695.4 397.2h0M698.9 402.0h0M691.8 390.4h0M682.3 394.3h0M681.5 408.0h0M688.3 409.9h0M680.6 391.5h0M696.6 400.4h0M690.0 392.1h0M684.2 396.5h0M698.1 403.2h0M684.5 408.7h0M689.8 391.4h0M692.1 391.3h0M686.3 392.5h0M684.0 395.4h0M681.2 408.3h0M683.4 391.3h0M695.4 397.3h0M697.1 400.4h0M682.6 399.5h0M694.8 412.9h0M682.4 411.4h0M680.0 397.7h0M691.7 410.9h0M698.3 396.6h0M690.1 413.0h0M693.2 406.3h0M682.6 401.0h0M685.7 407.8h0M691.8 394.8h0M681.1 401.5h0M687.7 388.4h0M681.9 402.5h0M696.9 396.6h0M699.8 399.6h0M695.1 406.0h0M684.0 391.4h0M681.1 397.5h0M683.4 396.9h0M683.6 407.0h0M698.5 397.3h0M678.6 402.7h0M690.7 391.9h0M698.2 401.9h0M696.2 403.5h0M689.6 412.7h0M692.1 393.4h0M696.7 400.6h0M696.5 404.1h0M696.8 394.4h0M696.1 403.0h0M700.2 401.0h0M681.9 396.4h0M692.2 392.9h0M677.4 399.4h0M714.1 393.8h0M726.3 394.7h0M719.1 408.3h0M714.5 403.3h0M716.8 394.5h0M714.0 405.3h0M728.5 402.5h0M716.1 406.9h0M724.1 394.1h0M711.5 407.4h0M729.5 400.0h0M721.4 408.6h0M715.5 395.2h0M726.9 405.8h0M719.3 407.4h0M717.0 407.6h0M714.8 403.2h0M727.3 406.4h0M720.6 393.5h0M712.4 405.4h0M729.5 404.6h0M718.3 408.3h0M727.2 410.3h0M716.5 393.7h0M715.2 401.8h0M717.7 390.4h0M723.9 392.8h0M715.2 399.4h0M732.3 404.0h0M714.8 402.1h0M718.6 409.7h0M712.3 404.8h0M729.8 398.8h0M732.0 408.4h0M718.9 407.6h0M720.5 407.6h0M725.0 389.2h0M727.6 397.5h0M720.6 408.8h0M725.8 395.2h0M725.8 406.9h0M718.9 394.9h0M717.1 406.5h0M729.7 396.2h0M729.1 405.7h0M713.8 402.1h0M724.9 409.1h0M728.5 399.8h0M728.8 406.4h0M729.5 408.5h0M720.0 408.7h0M713.9 402.4h0M731.6 398.5h0M725.7 390.6h0M724.4 393.6h0M715.7 394.5h0M730.6 402.9h0M730.0 396.6h0M729.0 396.0h0M712.4 400.6h0M722.1 412.4h0M723.6 412.8h0M727.2 406.5h0M706.8 400.8h0M724.1 408.2h0M721.2 393.6h0M729.0 406.0h0M713.3 403.3h0M712.3 410.2h0M721.3 407.7h0M729.6 396.2h0M714.9 394.9h0M726.8 395.3h0M728.4 395.7h0M720.7 411.7h0M716.5 409.7h0M719.0 394.7h0M729.8 403.1h0M723.9 394.3h0M715.1 411.0h0M728.7 401.6h0M716.6 405.2h0M714.4 399.1h0M710.2 396.1h0M721.6 407.8h0M712.4 404.5h0M721.2 413.2h0M717.3 395.3h0M726.2 395.5h0M721.6 394.3h0M720.3 408.1h0M713.5 402.2h0M719.0 390.2h0M719.4 394.3h0M722.7 393.3h0M728.6 402.3h0M717.7 407.8h0M725.9 394.3h0M724.4 393.8h0M726.8 408.9h0M720.7 408.7h0M718.2 393.7h0M715.0 402.5h0M723.6 392.2h0M717.2 394.4h0M728.4 393.1h0M717.6 394.7h0M734.0 400.0h0M722.3 410.1h0M729.9 406.8h0M722.8 410.4h0M709.9 404.4h0M722.8 393.5h0M728.7 392.2h0M715.2 409.8h0M713.7 403.4h0M714.1 404.1h0M722.2 394.2h0M713.2 408.3h0M716.0 394.6h0M717.5 407.9h0M725.4 409.9h0M721.6 394.4h0M723.6 408.5h0M730.2 405.3h0M718.1 407.4h0M722.0 408.2h0M732.2 394.7h0M730.0 397.2h0M720.1 393.1h0M727.8 393.8h0M712.2 400.7h0M715.7 408.0h0M730.0 407.4h0M756.0 397.9h0M745.7 395.9h0M760.9 385.4h0M760.2 392.6h0M758.6 386.4h0M746.6 399.0h0M742.9 394.8h0M747.6 381.6h0M756.3 383.1h0M756.5 397.7h0M744.9 387.6h0M745.4 386.5h0M759.4 391.7h0M740.6 394.9h0M759.9 392.6h0M759.5 390.4h0M754.5 399.3h0M748.1 400.3h0M763.6 389.2h0M745.7 386.9h0M744.9 390.7h0M748.5 382.9h0M754.8 383.2h0M760.9 386.8h0M760.2 391.8h0M759.0 396.5h0M752.1 398.9h0M762.7 390.3h0M763.9 388.3h0M742.5 392.8h0M761.3 392.3h0M756.7 398.2h0M753.9 382.4h0M760.6 393.1h0M764.1 393.2h0M745.2 386.8h0M758.2 398.8h0M756.6 384.1h0M759.2 388.1h0M758.2 386.8h0M748.9 384.8h0M747.2 395.0h0M741.8 390.0h0M748.5 398.2h0M749.6 380.0h0M746.8 395.3h0M754.0 398.8h0M761.6 388.7h0M761.7 385.1h0M750.2 399.5h0M757.9 383.9h0M753.7 383.5h0M754.5 398.4h0M747.1 387.0h0M753.3 397.8h0M760.0 380.9h0M757.4 396.7h0M747.7 386.8h0M747.1 395.1h0M749.5 383.9h0M762.2 388.1h0M746.4 396.3h0M743.8 394.4h0M744.2 380.6h0M751.4 382.7h0M754.8 400.2h0M739.0 392.3h0M747.8 385.4h0M741.4 396.7h0M746.5 394.1h0M752.9 398.8h0M744.8 389.3h0M746.8 386.8h0M758.7 379.3h0M747.9 395.8h0M759.6 387.5h0M746.6 384.2h0M759.2 384.6h0M750.7 400.5h0M762.3 385.0h0M760.7 394.5h0M755.8 385.0h0M745.7 388.9h0M744.8 398.4h0M759.6 390.1h0M747.6 395.5h0M761.1 378.5h0M758.1 384.3h0M751.9 398.0h0M744.7 392.1h0M756.8 385.5h0M746.4 396.0h0M748.5 399.6h0M750.6 380.9h0M753.7 382.8h0M751.1 383.8h0M751.5 403.7h0M759.5 385.0h0M743.8 394.7h0M762.9 392.0h0M751.4 398.2h0M741.0 389.6h0M755.3 399.2h0M757.2 383.1h0M753.3 381.4h0M761.5 387.7h0M744.7 400.4h0M756.5 384.1h0M745.6 396.2h0M743.3 389.8h0M749.1 385.5h0M756.4 396.8h0M747.5 396.7h0M761.9 388.2h0M745.3 395.0h0M759.1 385.9h0M754.5 397.7h0M747.8 398.2h0M751.1 397.8h0M761.2 389.7h0M761.5 395.7h0M761.8 392.5h0M751.3 383.7h0M751.9 381.8h0M742.9 390.9h0M756.0 382.7h0M751.5 381.5h0M744.7 386.8h0M744.3 392.5h0M754.9 382.9h0M747.2 396.6h0M758.2 384.5h0M745.2 391.7h0M756.8 383.5h0M755.7 382.1h0M742.4 393.9h0M745.6 388.7h0M749.6 398.9h0M754.8 402.4h0M742.6 391.7h0M780.0 383.0h0M786.3 371.0h0M784.4 380.9h0M780.2 380.1h0M772.8 367.4h0M777.8 365.2h0M785.8 372.2h0M786.6 375.2h0M777.5 378.4h0M786.0 371.3h0M786.7 370.0h0M787.3 373.6h0M782.5 377.8h0M772.3 371.1h0M782.0 365.7h0M767.1 370.2h0M784.6 375.6h0M788.9 366.4h0M780.4 362.3h0M786.5 375.2h0M779.4 362.5h0M780.5 364.7h0M781.8 365.6h0M772.4 367.1h0M784.5 366.8h0M769.2 363.9h0M784.7 377.9h0M780.8 363.2h0M778.8 364.0h0M783.2 379.4h0M789.0 360.7h0M786.1 368.1h0M782.9 366.0h0M782.0 379.6h0M780.6 363.4h0M782.9 361.6h0M771.8 369.9h0M772.5 368.5h0M773.6 377.4h0M777.6 380.3h0M785.5 381.2h0M778.5 380.1h0M770.8 375.0h0M784.3 378.1h0M789.4 368.1h0M775.3 356.3h0M780.1 379.2h0M781.3 363.2h0M780.8 379.8h0M778.6 378.5h0M778.9 361.0h0M771.7 370.0h0M776.8 378.6h0M769.9 375.0h0M784.7 366.2h0M785.2 374.9h0M789.9 372.2h0M785.9 371.1h0M782.0 382.1h0M786.0 367.5h0M784.2 382.7h0M778.0 380.8h0M772.8 369.2h0M771.7 367.1h0M783.8 365.6h0M781.5 379.6h0M775.8 366.1h0M781.8 378.7h0M782.8 378.2h0M770.8 378.2h0M783.0 366.3h0M785.5 368.4h0M773.7 362.4h0M770.9 368.1h0M774.4 377.6h0M782.8 381.3h0M786.4 370.4h0M786.1 370.0h0M784.8 366.8h0M787.7 373.9h0M775.2 378.5h0M770.9 372.1h0M786.6 372.1h0M776.0 378.4h0M780.7 379.6h0M788.2 372.7h0M788.3 370.2h0M771.0 374.2h0M782.9 365.6h0M772.3 373.5h0M774.1 367.6h0M774.3 376.6h0M777.7 380.5h0M780.1 364.9h0M786.2 375.2h0M773.1 366.4h0M778.8 378.8h0M771.7 375.4h0M779.9 363.9h0M773.9 366.1h0M769.4 365.5h0M782.7 365.6h0M775.3 382.4h0M771.1 370.8h0M778.0 378.4h0M783.6 359.9h0M786.2 371.0h0M767.0 377.4h0M783.9 366.9h0M767.6 379.0h0M784.7 367.0h0M778.2 362.2h0M771.6 367.9h0M772.3 371.0h0M784.2 363.0h0M786.6 363.6h0M776.1 365.1h0M791.7 369.0h0M789.5 370.3h0M788.4 373.4h0M786.1 372.7h0M786.3 376.7h0M769.9 378.1h0M775.8 377.5h0M771.9 369.0h0M782.9 364.6h0M771.5 371.7h0M779.8 360.3h0M778.4 362.9h0M787.5 378.1h0M775.5 379.3h0M787.0 377.5h0M768.0 372.1h0M772.0 370.0h0M787.4 368.5h0M773.1 375.4h0M786.7 372.3h0M788.0 365.9h0M786.3 372.4h0M791.1 374.1h0M780.6 379.1h0M774.8 365.3h0M781.6 379.7h0M788.3 364.7h0M795.9 338.6h0M790.5 347.0h0M801.8 353.1h0M794.1 340.1h0M791.2 344.2h0M804.4 349.9h0M789.4 343.3h0M790.6 348.4h0M804.8 347.3h0M789.6 351.2h0M803.7 337.7h0M790.4 347.3h0M804.9 345.8h0M804.6 348.5h0M798.0 334.5h0M791.8 349.3h0M788.7 349.3h0M796.7 351.9h0M784.9 353.8h0M800.8 333.8h0M787.2 344.2h0M801.6 337.8h0M806.9 354.4h0M797.6 338.7h0M796.8 335.9h0M799.7 352.1h0M798.8 334.5h0M795.3 351.8h0M790.9 349.9h0M797.1 338.9h0M786.7 341.8h0M805.2 343.9h0M799.5 335.4h0M786.8 350.9h0M802.4 353.2h0M790.1 342.5h0M791.0 353.7h0M800.4 338.9h0M802.5 333.8h0M789.9 344.2h0M800.3 338.8h0M804.3 339.1h0M793.5 339.4h0M803.6 339.6h0M797.5 338.9h0M794.6 352.8h0M791.9 343.2h0M792.4 356.5h0M807.0 345.0h0M791.9 348.9h0M805.0 347.1h0M788.3 354.4h0M800.8 336.5h0M807.1 346.6h0M791.3 347.5h0M791.4 344.4h0M792.4 339.1h0M799.3 352.6h0M801.7 337.5h0M796.1 336.9h0M799.7 338.8h0M805.0 347.7h0M792.8 337.0h0M787.1 350.4h0M789.4 348.7h0M804.4 357.3h0M788.3 344.1h0M800.2 352.0h0M791.3 339.6h0M800.6 352.2h0M805.7 347.1h0M791.7 350.9h0M795.9 338.8h0M796.7 338.3h0M795.5 338.2h0M793.5 336.1h0M802.6 351.5h0M791.7 337.8h0M804.5 349.4h0M796.4 335.2h0M794.8 353.2h0M801.4 354.7h0M791.5 344.1h0M801.2 354.7h0M803.9 341.5h0M779.8 350.4h0M790.5 346.1h0M792.2 341.8h0M792.0 350.1h0M796.0 335.7h0M805.9 334.2h0M789.1 341.0h0M797.6 352.0h0M794.4 334.7h0M801.9 339.5h0M791.1 345.0h0M801.7 338.6h0M791.7 359.1h0M804.3 349.1h0M799.3 352.6h0M787.5 344.7h0M805.7 349.4h0M802.2 358.0h0M798.1 354.9h0M797.9 353.2h0M804.7 342.1h0M792.3 355.6h0M791.5 346.6h0M796.5 338.2h0M800.3 355.4h0M797.3 333.4h0M794.6 354.0h0M800.3 354.0h0M801.9 338.6h0M788.9 340.4h0M800.1 352.8h0M789.1 349.1h0M805.0 350.5h0M794.6 351.6h0M790.3 344.7h0M797.2 354.7h0M805.6 356.0h0M791.1 341.8h0M799.1 354.8h0M803.4 340.7h0M804.6 342.7h0M790.5 350.8h0M803.7 339.8h0M786.7 351.6h0M793.0 350.3h0M805.4 342.8h0M791.9 343.3h0M797.1 352.5h0M796.3 356.8h0M793.7 337.7h0M789.5 350.7h0M808.6 345.2h0M814.4 322.7h0M817.5 309.8h0M817.6 314.8h0M807.4 307.1h0M816.3 315.8h0M813.7 307.7h0M815.6 308.8h0M815.3 314.5h0M799.2 318.7h0M813.7 310.2h0M812.4 320.0h0M811.7 323.5h0M816.5 317.3h0M810.0 307.3h0M801.3 313.2h0M802.3 309.3h0M807.3 322.8h0M817.3 316.2h0M803.9 325.0h0M802.9 322.1h0M805.0 321.3h0M805.5 308.5h0M806.2 307.4h0M800.0 315.6h0M800.8 313.4h0M805.1 303.3h0M808.3 306.9h0M805.7 321.2h0M808.0 321.4h0M812.1 321.9h0M805.5 321.6h0M811.9 323.3h0M818.7 306.5h0M802.5 310.3h0M807.7 321.5h0M803.0 325.7h0M812.5 309.0h0M807.5 307.2h0M801.5 311.4h0M822.7 306.2h0M804.4 323.0h0M805.2 307.3h0M816.7 309.3h0M805.6 321.6h0M803.1 310.0h0M813.2 322.6h0M804.7 303.8h0M819.4 309.1h0M803.2 305.8h0M807.7 321.2h0M809.3 305.1h0M819.4 330.7h0M815.1 321.8h0M817.9 317.4h0M810.1 324.5h0M802.8 299.8h0M817.8 321.9h0M802.5 311.3h0M815.5 304.3h0M814.7 307.8h0M805.0 322.1h0M809.6 321.2h0M806.5 306.4h0M810.3 306.9h0M808.8 306.8h0M811.0 306.4h0M810.5 303.9h0M805.3 323.1h0M796.9 312.6h0M811.6 304.7h0M819.6 306.5h0M814.1 305.6h0M808.2 303.3h0M811.0 307.9h0M808.1 307.8h0M814.5 303.5h0M806.2 308.0h0M806.9 307.3h0M817.1 304.1h0M807.8 323.7h0M811.1 307.7h0M801.0 312.8h0M809.2 307.5h0M813.6 306.0h0M801.9 325.4h0M812.1 308.9h0M805.6 322.0h0M811.5 322.1h0M816.9 322.2h0M813.7 321.5h0M800.4 308.1h0M815.9 318.2h0M805.8 321.3h0M807.5 323.6h0M814.8 318.2h0M805.1 303.9h0M801.1 313.1h0M801.9 311.8h0M814.2 310.0h0M806.0 305.1h0M806.8 321.8h0M812.2 321.7h0M801.6 314.5h0M808.1 307.4h0M813.7 319.6h0M816.5 314.0h0M812.4 323.0h0M804.2 321.0h0M809.0 323.4h0M800.9 311.1h0M815.0 309.0h0M813.9 323.2h0M809.5 304.8h0M810.6 323.0h0M816.8 313.6h0M801.0 319.2h0M805.0 307.5h0M801.6 308.8h0M804.9 308.7h0M805.4 307.6h0M813.4 320.2h0M815.0 312.4h0M802.7 310.0h0M807.9 323.3h0M806.9 321.5h0M816.2 313.4h0M805.6 323.2h0M816.7 314.6h0M800.7 309.0h0M812.9 308.4h0M798.9 311.0h0M808.2 321.9h0M818.8 308.7h0M822.4 317.4h0M813.0 319.7h0M814.1 321.4h0M803.9 319.8h0M806.6 304.8h0M802.9 309.6h0M811.1 321.2h0M812.0 308.3h0M808.7 324.4h0M807.5 325.6h0M814.1 308.3h0M801.5 318.6h0M814.3 306.4h0M811.5 305.4h0M818.7 321.4h0M850.9 266.8h0M850.2 280.8h0M853.7 284.7h0M852.7 267.6h0M850.1 280.2h0M855.2 282.1h0M846.0 275.8h0M849.6 282.6h0M862.7 270.5h0M849.9 268.5h0M857.9 268.3h0M864.8 274.2h0M846.5 268.1h0M860.1 277.6h0M844.3 266.3h0M862.5 271.2h0M844.8 268.7h0M857.8 267.5h0M860.8 285.3h0M844.9 275.6h0M853.8 267.4h0M847.9 280.6h0M859.1 278.9h0M855.6 267.5h0M846.0 267.6h0M864.5 274.8h0M856.3 267.1h0M859.5 270.1h0M846.6 277.5h0M853.1 286.5h0M852.4 266.7h0M843.6 271.2h0M848.3 271.3h0M855.1 282.6h0M860.3 278.8h0M846.1 274.9h0M862.5 272.5h0M842.7 278.6h0M861.0 275.1h0M847.1 281.8h0M846.4 270.5h0M849.2 268.8h0M846.7 276.6h0M848.9 280.4h0M856.0 267.2h0M853.5 284.0h0M860.8 275.4h0M859.9 280.2h0M848.6 279.5h0M860.8 260.3h0M853.0 264.1h0M850.6 268.2h0M853.4 286.2h0M854.5 285.0h0M857.8 281.8h0M847.7 271.1h0M847.1 270.6h0M847.1 271.4h0M857.2 268.0h0M846.1 269.5h0M859.4 278.7h0M849.8 267.3h0M849.9 268.9h0M855.7 266.6h0M857.5 265.2h0M848.1 279.7h0M846.4 269.3h0M850.0 265.7h0M863.0 282.4h0M844.6 276.7h0M864.8 273.5h0M863.3 276.0h0M852.8 284.0h0M856.4 267.3h0M847.3 277.7h0M847.5 270.3h0M863.4 282.4h0M860.3 278.4h0M855.3 265.8h0M862.6 269.9h0M858.4 269.6h0M859.3 267.4h0M855.2 267.6h0M864.6 281.3h0M854.7 267.3h0M855.5 282.6h0M860.0 279.5h0M864.4 278.3h0M859.8 267.2h0M855.4 267.9h0M859.3 267.1h0M859.0 279.6h0M860.8 267.3h0M861.1 277.0h0M855.4 264.5h0M865.3 274.9h0M847.6 269.0h0M855.5 281.6h0M861.1 279.6h0M847.7 276.9h0M848.0 278.3h0M848.1 264.6h0M849.7 289.5h0M859.7 265.9h0M853.7 264.0h0M859.8 268.4h0M851.8 282.8h0M849.1 290.3h0M856.5 268.2h0M852.5 266.3h0M859.1 268.0h0M860.1 277.6h0M861.4 287.8h0M858.2 267.1h0M852.2 282.1h0M848.1 277.6h0M846.5 279.3h0M849.3 268.8h0M849.4 279.9h0M866.2 273.8h0M845.9 281.7h0M848.4 278.1h0M857.8 282.7h0M857.8 264.0h0M850.4 268.9h0M860.7 275.6h0M859.2 267.3h0M855.8 282.8h0M855.9 267.8h0M860.7 270.4h0M855.6 267.1h0M852.1 267.5h0M849.5 269.9h0M856.4 282.8h0M854.6 282.0h0M862.2 274.6h0M853.5 282.3h0M848.2 279.8h0M859.3 279.1h0M861.4 274.9h0M846.4 280.4h0M858.9 267.5h0M851.4 281.6h0M857.2 263.2h0M860.1 269.3h0M858.4 266.7h0M858.0 282.8h0M856.2 267.2h0M862.5 277.4h0M860.8 277.0h0M852.3 281.1h0M844.8 269.1h0M847.1 276.9h0M850.4 268.5h0M852.0 281.1h0M837.6 239.3h0M847.7 229.7h0M840.9 221.7h0M842.1 237.0h0M847.2 231.5h0M839.7 237.9h0M845.6 224.6h0M846.9 233.3h0M840.0 240.2h0M845.2 237.8h0M836.8 222.7h0M839.4 222.7h0M850.8 231.4h0M841.5 223.5h0M846.5 232.6h0M845.3 225.8h0M836.1 239.9h0M839.7 240.3h0M845.3 233.2h0M839.0 217.5h0M844.9 237.5h0M828.3 229.0h0M835.5 238.7h0M845.8 226.3h0M846.8 224.2h0M838.5 221.0h0M839.4 221.3h0M840.5 238.1h0M842.9 222.1h0M834.3 234.9h0M836.5 222.9h0M830.8 233.5h0M844.0 223.3h0M841.5 241.2h0M847.3 232.3h0M834.6 234.5h0M846.7 230.6h0M826.7 227.9h0M852.5 226.5h0M845.9 234.0h0M832.2 223.8h0M836.7 219.2h0M838.5 238.0h0M847.4 222.7h0M842.2 236.0h0M831.8 221.3h0M847.1 227.7h0M848.2 230.0h0M842.2 220.3h0M839.3 222.7h0M831.8 234.2h0M839.5 220.6h0M837.7 223.0h0M843.6 235.8h0M840.7 238.0h0M832.3 221.7h0M834.8 223.1h0M847.0 239.2h0M843.3 222.9h0M830.1 231.6h0M834.0 237.3h0M839.8 223.3h0M847.9 235.1h0M845.7 227.5h0M836.6 238.6h0M845.4 233.3h0M835.3 223.7h0M830.0 233.5h0M838.5 243.3h0M838.1 237.1h0M838.4 222.1h0M843.9 224.9h0M832.7 226.0h0M835.3 235.2h0M843.5 220.4h0M834.1 237.9h0M832.5 232.1h0M843.8 236.5h0M832.3 225.8h0M848.5 228.2h0M849.6 225.7h0M832.1 231.5h0M839.8 223.1h0M848.6 231.4h0M844.7 234.3h0M841.9 237.0h0M841.8 221.4h0M845.0 235.8h0M834.2 224.9h0M831.2 231.0h0M828.7 229.5h0M835.6 237.1h0M831.9 228.9h0M836.7 236.5h0M831.5 224.0h0M838.8 223.2h0M842.6 223.9h0M846.0 235.7h0M841.0 218.5h0M840.3 222.1h0M833.9 226.0h0M832.0 228.6h0M845.1 234.5h0M848.9 234.8h0M835.1 237.4h0M835.1 236.4h0M842.3 221.3h0M845.1 233.9h0M844.0 220.8h0M833.0 227.5h0M832.9 229.6h0M836.8 237.9h0M845.3 234.2h0M835.9 222.3h0M843.1 223.1h0M832.8 229.7h0M841.6 221.5h0M846.1 224.4h0M840.1 220.2h0M834.2 223.9h0M840.7 218.0h0M848.1 224.3h0M839.6 238.0h0M832.7 237.1h0M848.6 226.7h0M844.6 224.0h0M833.3 226.4h0M835.8 240.5h0M844.9 237.6h0M847.6 228.1h0M839.7 222.9h0M841.4 241.8h0M844.8 235.6h0M828.8 228.7h0M832.9 229.3h0M847.8 222.6h0M831.8 225.3h0M833.3 233.1h0M846.6 231.3h0M836.4 222.1h0M829.9 231.0h0M843.9 221.1h0M840.4 238.9h0M836.4 236.6h0M837.5 216.0h0M842.8 239.3h0M845.2 239.5h0M849.7 232.6h0M830.3 228.4h0M838.6 237.4h0M836.7 223.0h0M850.1 226.3h0M846.9 231.0h0M833.7 234.1h0M802.2 198.0h0M803.9 189.9h0M815.4 186.1h0M802.1 196.2h0M818.9 189.7h0M818.6 197.8h0M806.1 202.7h0M821.5 190.1h0M801.0 193.9h0M806.1 187.1h0M817.4 184.6h0M817.4 185.9h0M812.2 198.6h0M805.0 179.9h0M812.4 201.3h0M811.3 183.7h0M805.0 190.0h0M810.0 202.9h0M804.7 201.3h0M819.8 190.1h0M809.0 201.8h0M805.0 193.3h0M804.4 189.9h0M811.1 182.9h0M809.1 197.8h0M818.0 195.4h0M823.4 193.4h0M817.7 188.1h0M818.8 198.7h0M813.4 201.4h0M804.8 189.4h0M821.4 194.3h0M802.8 190.1h0M805.4 198.3h0M820.0 195.3h0M805.8 187.7h0M809.9 182.6h0M801.8 185.6h0M816.6 199.0h0M817.4 185.7h0M807.8 185.3h0M820.8 185.9h0M804.2 187.7h0M804.0 188.5h0M817.8 186.4h0M821.7 195.0h0M816.8 184.1h0M819.6 187.5h0M808.0 185.5h0M818.9 188.9h0M811.8 199.5h0M811.0 184.8h0M817.1 183.3h0M807.0 184.2h0M802.0 188.2h0M820.2 191.2h0M822.7 192.1h0M804.2 193.8h0M813.7 185.0h0M812.9 198.4h0M807.8 198.5h0M801.0 186.8h0M819.9 189.9h0M815.6 186.1h0M806.5 187.8h0M807.2 185.8h0M803.2 195.0h0M806.8 180.7h0M805.7 189.5h0M813.3 181.3h0M806.5 179.4h0M803.0 184.7h0M814.0 182.6h0M806.0 187.3h0M815.8 201.7h0M826.3 190.4h0M800.6 197.4h0M805.3 191.0h0M802.5 187.8h0M811.7 201.1h0M814.6 198.7h0M802.5 194.4h0M819.2 194.0h0M815.2 197.9h0M803.2 186.1h0M816.1 197.7h0M812.7 199.6h0M817.8 195.0h0M803.8 186.1h0M814.7 198.8h0M807.1 199.0h0M819.1 186.9h0M822.0 189.7h0M810.1 183.5h0M809.7 199.3h0M812.9 198.9h0M818.5 190.7h0M819.8 196.5h0M815.9 184.8h0M803.4 192.0h0M805.8 197.5h0M816.5 199.2h0M810.4 202.5h0M804.1 199.4h0M801.4 187.1h0M813.0 183.1h0M818.2 196.6h0M816.3 199.6h0M805.4 183.3h0M812.2 200.1h0M824.0 193.3h0M820.1 192.6h0M817.5 196.1h0M806.9 186.8h0M815.0 201.5h0M802.6 198.1h0M816.3 184.1h0M808.1 201.9h0M820.7 203.3h0M809.8 181.1h0M805.3 186.9h0M811.2 184.7h0M801.1 196.2h0M804.2 191.9h0M819.5 189.2h0M821.3 193.2h0M809.4 198.4h0M814.4 181.3h0M819.4 194.2h0M807.4 201.0h0M822.7 190.8h0M820.3 190.2h0M812.7 200.0h0M816.0 181.7h0M821.6 188.7h0M821.8 190.4h0M807.6 199.4h0M805.6 182.3h0M807.7 185.3h0M810.7 205.3h0M808.0 184.6h0M807.1 184.8h0M821.9 197.0h0M811.4 199.1h0M823.5 198.3h0M816.3 197.7h0M805.0 194.7h0M819.4 193.4h0M819.2 197.6h0M805.7 188.9h0M825.2 191.6h0M821.5 179.7h0M819.7 192.7h0M821.7 194.2h0M813.9 181.9h0M814.0 199.9h0M814.0 184.5h0M805.3 191.3h0M810.4 184.9h0M820.8 185.9h0M803.4 187.3h0M801.2 193.8h0M806.7 183.2h0M805.0 186.6h0M815.5 185.3h0M802.9 198.6h0M807.1 182.1h0M774.6 173.1h0M776.8 170.8h0M767.5 158.5h0M764.4 159.1h0M768.1 157.7h0M766.4 161.5h0M766.7 166.1h0M769.1 170.4h0M778.2 170.6h0M772.1 154.9h0M784.3 165.1h0M770.9 156.0h0M778.7 158.7h0M779.8 168.0h0M769.4 172.8h0M770.8 156.7h0M766.7 156.0h0M772.3 156.9h0M785.0 163.1h0M778.9 172.8h0M778.6 157.7h0M770.7 175.2h0M772.5 171.9h0M765.7 158.9h0M767.0 162.3h0M768.0 169.1h0M782.3 166.0h0M764.5 168.6h0M781.8 166.5h0M784.5 158.7h0M781.3 163.6h0M764.4 170.6h0M783.1 165.9h0M770.0 171.7h0M781.0 158.9h0M780.5 163.0h0M780.5 161.4h0M764.2 160.5h0M775.7 156.4h0M780.3 173.2h0M764.9 164.4h0M774.9 156.7h0M765.8 162.1h0M775.6 156.3h0M765.4 169.0h0M770.0 173.6h0M780.0 152.9h0M769.3 159.0h0M774.0 173.5h0M779.3 168.4h0M780.7 164.8h0M768.2 153.0h0M780.3 165.7h0M778.2 158.9h0M767.4 160.5h0M775.6 153.9h0M780.9 169.3h0M779.3 169.9h0M775.3 156.2h0M771.4 157.4h0M765.9 168.3h0M780.6 165.3h0M767.4 155.5h0M781.1 167.6h0M781.1 157.7h0M768.6 168.6h0M781.7 158.6h0M780.5 164.9h0M763.7 160.8h0M777.6 158.7h0M778.6 169.6h0M762.6 166.4h0M781.1 161.0h0M762.3 163.9h0M780.6 160.9h0M776.2 157.7h0M779.8 176.1h0M772.1 171.3h0M770.8 171.9h0M774.8 172.1h0M781.3 161.3h0M760.1 165.4h0M767.8 160.3h0M756.7 154.8h0M766.3 158.3h0M781.1 167.3h0M772.4 157.5h0M782.0 166.3h0M772.0 157.7h0M762.1 162.9h0M773.3 171.1h0M772.8 156.3h0M780.1 160.9h0M776.1 171.6h0M770.6 153.6h0M781.0 166.8h0M780.0 170.1h0M777.6 157.0h0M770.4 153.9h0M768.5 153.8h0M784.1 159.6h0M765.9 172.6h0M772.4 174.3h0M776.9 172.4h0M766.4 159.4h0M780.0 159.7h0M781.0 164.1h0M762.3 164.3h0M765.8 167.6h0M774.4 173.1h0M768.0 159.1h0M764.7 158.7h0M782.4 162.8h0M783.6 172.3h0M777.3 158.4h0M779.3 159.9h0M772.3 170.7h0M774.1 172.4h0M766.1 162.6h0M786.3 163.7h0M779.7 173.5h0M782.4 161.0h0M777.5 157.3h0M771.3 157.7h0M771.6 170.5h0M773.2 154.8h0M772.1 157.3h0M766.8 153.8h0M777.9 175.4h0M770.7 171.4h0M766.8 165.5h0M773.4 156.0h0M766.3 154.3h0M766.0 157.1h0M778.4 169.2h0M770.0 170.7h0M775.1 173.7h0M774.1 172.2h0M777.5 171.4h0M767.0 166.3h0M783.3 163.9h0M783.8 164.7h0M786.4 166.8h0M773.9 171.1h0M780.6 172.0h0M767.5 160.6h0M766.3 163.3h0M779.5 174.0h0M775.3 170.6h0M765.7 165.8h0M767.4 166.3h0M762.9 153.6h0M768.7 158.2h0M767.5 157.2h0M778.8 171.0h0M777.5 156.5h0M765.0 164.0h0M776.8 156.8h0M781.3 162.9h0M781.8 164.8h0M765.1 154.9h0M774.6 171.7h0M775.6 171.4h0M778.1 157.3h0M764.3 162.7h0M766.1 162.2h0M764.9 162.4h0M768.0 157.8h0M782.9 171.1h0M779.1 168.6h0M781.4 159.8h0M779.1 158.2h0M773.6 174.9h0M768.7 158.3h0M770.8 171.9h0M765.7 166.2h0M765.9 163.6h0M770.7 171.3h0M765.7 159.8h0M733.0 156.3h0M722.1 144.5h0M738.1 147.2h0M726.6 143.2h0M740.3 149.4h0M735.9 154.8h0M726.5 157.6h0M723.6 154.7h0M739.0 152.5h0M735.6 154.3h0M721.5 147.7h0M720.7 155.4h0M721.9 151.3h0M733.6 156.5h0M736.3 141.0h0M734.2 144.3h0M719.3 148.9h0M735.6 154.1h0M733.8 155.4h0M726.2 159.3h0M730.0 157.9h0M724.5 142.0h0M732.8 155.8h0M727.8 142.8h0M722.9 156.9h0M720.8 142.1h0M730.0 160.2h0M727.3 158.4h0M728.7 157.7h0M727.3 143.2h0M740.4 147.3h0M736.3 145.3h0M732.5 142.4h0M741.4 144.7h0M725.6 155.7h0M724.1 143.5h0M738.2 150.3h0M727.6 141.6h0M727.4 142.6h0M736.6 150.4h0M721.1 149.1h0M719.2 148.6h0M731.2 157.7h0M734.0 142.3h0M732.0 143.6h0M737.6 155.1h0M722.1 144.1h0M730.5 156.2h0M729.6 141.5h0M720.6 150.4h0M736.6 150.6h0M724.7 141.2h0M723.9 158.1h0M729.9 163.9h0M734.4 144.3h0M736.1 147.6h0M739.0 146.3h0M732.7 143.5h0M728.3 157.8h0M725.6 143.5h0M734.2 156.0h0M726.7 159.9h0M731.3 158.9h0M733.2 155.1h0M736.6 149.6h0M718.1 150.8h0M739.4 144.0h0M735.2 152.1h0M738.3 146.7h0M726.8 157.1h0M725.0 155.7h0M740.1 152.6h0M727.5 156.5h0M723.5 155.4h0M721.6 137.6h0M735.9 148.3h0M722.0 149.4h0M734.1 144.2h0M718.5 138.7h0M735.8 150.5h0M719.6 148.6h0M718.7 150.4h0M726.8 143.2h0M731.4 159.1h0M724.6 144.7h0M722.1 152.7h0M726.8 158.2h0M717.7 143.2h0M735.8 149.1h0M724.0 145.1h0M721.1 142.6h0M733.7 154.5h0M737.6 148.5h0M734.3 145.2h0M721.7 147.9h0M730.8 142.8h0M737.3 152.7h0M719.1 141.7h0M724.1 143.5h0M725.0 140.6h0M721.5 151.2h0M716.6 147.9h0M736.6 151.8h0M736.1 145.6h0M722.4 150.5h0M732.4 142.3h0M740.0 144.2h0M723.8 155.5h0M720.2 155.4h0M726.1 142.2h0M720.7 146.9h0M742.2 147.5h0M723.1 141.4h0M722.0 146.0h0M737.1 147.2h0M735.0 154.0h0M735.0 146.2h0M725.2 156.0h0M732.0 157.1h0M719.8 142.4h0M736.3 148.9h0M720.0 143.8h0M726.9 156.3h0M738.7 148.8h0M722.5 143.1h0M718.9 149.4h0M721.1 146.9h0M722.0 145.1h0M738.0 149.9h0M722.5 147.7h0M736.8 154.6h0M722.0 145.3h0M722.6 154.1h0M736.3 150.9h0M724.0 145.2h0M730.4 141.9h0M724.1 144.3h0M731.5 157.7h0M728.3 158.7h0M733.9 143.3h0M725.7 142.1h0M738.4 148.4h0M730.2 157.4h0M726.2 156.7h0M727.9 156.4h0M733.5 157.0h0M735.1 144.4h0M722.2 155.3h0M734.8 146.0h0M721.7 154.8h0M733.8 160.5h0M734.2 154.5h0M738.8 147.4h0M733.4 141.2h0M675.8 144.4h0M673.5 150.9h0M676.7 140.8h0M674.6 147.2h0M691.7 154.6h0M685.2 142.8h0M674.3 152.8h0M691.3 149.1h0M671.4 152.0h0M689.3 154.3h0M685.3 158.6h0M687.2 154.4h0M682.9 158.4h0M675.0 147.8h0M682.2 159.3h0M679.7 158.6h0M688.8 145.2h0M690.2 148.2h0M689.7 149.8h0M688.8 157.2h0M680.6 160.2h0M691.2 152.2h0M676.4 157.5h0M689.3 146.3h0M688.6 146.6h0M680.8 142.4h0M686.1 157.5h0M684.1 137.3h0M683.8 157.0h0M689.5 154.0h0M676.5 156.3h0M677.6 143.4h0M688.7 143.4h0M677.5 144.2h0M673.2 149.3h0M672.0 148.9h0M667.9 141.0h0M674.7 155.7h0M677.3 156.7h0M688.6 145.4h0M672.7 145.2h0M674.6 150.6h0M692.3 153.2h0M673.0 144.0h0M681.9 158.2h0M675.5 153.3h0M692.6 153.8h0M677.6 143.4h0M689.1 150.5h0M674.2 159.7h0M681.7 139.1h0M676.2 143.0h0M672.9 146.4h0M691.4 149.6h0M689.2 149.6h0M689.6 155.8h0M676.5 158.3h0M685.5 142.1h0M675.8 152.1h0M676.3 156.6h0M678.4 156.8h0M679.8 163.7h0M676.7 142.0h0M674.0 151.0h0M687.7 154.1h0M690.5 147.5h0M684.2 141.8h0M683.4 141.3h0M679.1 141.8h0M676.8 153.9h0M689.1 149.4h0M688.6 141.2h0M684.2 157.3h0M674.8 149.8h0M687.9 161.1h0M678.0 138.8h0M686.6 142.7h0M686.9 145.0h0M672.3 151.9h0M673.0 151.8h0M689.5 147.6h0M692.9 150.9h0M692.3 149.4h0M688.8 148.8h0M686.0 156.8h0M693.8 149.3h0M673.8 151.5h0M674.3 148.4h0M683.0 142.8h0M671.0 143.8h0M679.1 155.9h0M683.9 142.6h0M678.5 143.2h0M673.1 153.8h0M689.6 146.9h0M676.2 154.9h0M686.2 156.8h0M678.1 143.1h0M689.0 156.4h0M684.3 157.2h0M671.9 152.7h0M675.0 144.8h0M675.1 158.4h0M672.3 159.3h0M688.9 145.4h0M671.4 153.1h0M689.1 150.3h0M690.8 151.2h0M688.8 147.4h0M689.7 149.1h0M689.5 151.8h0M689.2 147.8h0M689.6 148.2h0M689.0 142.2h0M675.2 143.3h0M683.5 142.8h0M678.6 142.9h0M686.9 159.4h0M676.7 145.1h0M678.2 141.0h0M685.3 157.0h0M685.5 143.9h0M689.3 147.9h0M692.0 145.6h0M678.8 156.1h0M685.9 156.1h0M674.1 150.3h0M684.6 142.4h0M682.5 157.0h0M688.1 144.9h0M675.1 148.8h0M694.4 154.8h0M680.6 141.2h0M687.3 143.7h0M678.1 157.0h0M688.9 145.1h0M676.5 154.2h0M688.2 145.9h0M692.3 144.9h0M689.3 151.7h0M676.2 153.5h0M675.9 154.9h0M681.1 156.4h0M671.4 141.0h0M689.3 143.6h0M688.7 150.1h0M675.0 155.8h0M677.2 154.8h0M686.2 156.5h0M688.0 146.3h0M689.8 147.3h0M685.9 144.1h0M686.5 161.0h0M688.0 145.0h0M678.2 160.0h0M690.5 150.6h0M684.7 155.7h0M645.3 158.5h0M632.4 170.5h0M630.2 170.5h0M646.9 158.6h0M632.6 158.2h0M645.7 155.1h0M633.8 157.8h0M628.6 166.1h0M632.3 169.0h0M629.3 164.6h0M639.4 174.5h0M647.3 163.5h0M641.9 155.1h0M644.5 163.2h0M646.1 162.8h0M631.1 157.4h0M639.6 171.1h0M644.0 163.0h0M638.6 150.1h0M640.4 171.9h0M643.3 167.0h0M641.3 156.7h0M643.2 167.8h0M641.5 158.7h0M646.8 165.1h0M636.6 155.0h0M644.1 162.8h0M640.9 174.7h0M644.9 167.4h0M635.2 155.4h0M637.3 151.4h0M635.6 173.9h0M642.6 169.8h0M634.2 170.2h0M642.4 157.8h0M628.8 166.6h0M625.0 166.1h0M640.2 172.6h0M640.2 158.1h0M645.2 166.5h0M622.0 167.3h0M632.4 158.9h0M636.8 173.0h0M647.2 167.8h0M641.2 158.9h0M634.8 172.4h0M627.2 163.7h0M629.8 161.6h0M635.7 170.9h0M637.6 170.8h0M653.8 163.8h0M644.7 157.0h0M638.5 171.0h0M631.2 167.9h0M639.5 157.0h0M641.0 170.8h0M644.6 168.5h0M630.3 176.6h0M633.7 171.3h0M643.1 173.1h0M633.2 156.4h0M629.5 158.5h0M649.6 161.9h0M647.9 163.2h0M644.1 158.9h0M645.9 163.2h0M645.2 164.4h0M635.9 157.1h0M643.8 164.4h0M640.4 171.2h0M626.4 161.9h0M640.7 155.6h0M640.2 170.5h0M644.0 165.8h0M640.8 174.3h0M632.9 172.1h0M642.9 170.5h0M631.1 159.5h0M626.3 160.9h0M630.8 168.4h0M629.9 170.8h0M645.7 166.3h0M629.9 161.1h0M643.8 168.9h0M637.5 152.1h0M625.7 164.2h0M637.5 174.6h0M637.6 173.3h0M628.2 160.9h0M631.6 154.4h0M646.4 165.9h0M643.1 167.2h0M629.6 160.1h0M627.0 157.0h0M639.1 155.1h0M635.2 157.8h0M644.2 166.7h0M629.9 172.6h0M630.6 164.2h0M636.6 156.7h0M642.8 156.4h0M629.7 154.4h0M632.3 153.1h0M628.5 163.2h0M647.9 156.6h0M639.0 154.7h0M646.2 161.8h0M639.2 171.4h0M643.3 170.8h0M636.4 156.8h0M638.5 157.4h0M639.6 156.0h0M639.4 156.5h0M628.0 163.0h0M648.3 167.5h0M632.0 169.6h0M644.6 164.6h0M645.0 167.5h0M629.0 162.4h0M624.6 164.3h0M628.0 164.9h0M630.0 165.0h0M630.5 171.0h0M636.1 171.0h0M645.6 169.5h0M632.9 158.8h0M636.5 172.8h0M638.6 155.8h0M641.1 170.3h0M635.8 157.2h0M634.2 151.9h0M638.6 157.3h0M638.8 171.8h0M630.7 172.7h0M636.3 170.8h0M628.7 161.4h0M638.7 171.0h0M627.2 162.2h0M642.2 171.4h0M644.9 167.2h0M630.6 160.0h0M643.9 167.2h0M630.2 170.0h0M638.5 156.4h0M628.8 161.7h0M636.5 170.9h0M646.7 155.8h0M631.9 154.8h0M629.8 170.1h0M632.1 174.8h0M642.7 171.5h0M630.6 158.4h0M630.6 170.3h0M645.2 157.4h0M643.0 169.7h0M644.9 165.1h0M591.5 198.8h0M607.7 191.0h0M591.5 191.5h0M606.9 197.4h0M604.0 181.9h0M605.3 184.4h0M605.6 184.0h0M594.8 199.7h0M595.6 199.5h0M587.5 200.7h0M590.7 194.1h0M593.5 188.0h0M592.7 195.8h0M589.0 200.8h0M607.5 190.5h0M607.2 187.3h0M593.6 200.7h0M591.5 188.1h0M602.1 182.6h0M593.1 186.9h0M594.4 202.5h0M609.9 189.3h0M601.3 201.1h0M601.3 183.0h0M607.3 190.6h0M603.6 198.0h0M596.3 183.7h0M605.7 188.5h0M591.0 192.6h0M594.1 183.0h0M597.6 200.1h0M596.3 199.7h0M605.4 189.7h0M603.3 183.3h0M604.8 185.8h0M592.3 190.2h0M589.3 194.1h0M606.1 194.5h0M598.8 200.6h0M602.5 185.9h0M600.2 199.0h0M603.5 185.2h0M593.5 195.5h0M592.3 189.2h0M595.6 184.5h0M591.4 192.3h0M589.7 183.1h0M605.9 188.1h0M596.4 185.2h0M596.3 185.7h0M596.6 183.1h0M590.4 189.3h0M610.9 185.0h0M599.0 204.5h0M597.8 182.6h0M597.9 199.1h0M604.4 197.6h0M606.7 183.2h0M593.6 196.3h0M604.7 200.8h0M599.4 183.4h0M591.8 188.0h0M593.9 196.3h0M596.0 199.1h0M603.7 185.3h0M596.3 198.4h0M598.3 200.2h0M599.8 184.9h0M603.0 185.7h0M608.5 194.3h0M604.8 187.8h0M591.0 197.7h0M593.0 189.1h0M601.9 201.7h0M605.3 188.2h0M606.4 196.9h0M588.7 194.5h0M590.3 192.1h0M592.8 188.5h0M605.7 194.4h0M605.1 188.9h0M606.2 185.1h0M604.3 175.2h0M609.9 188.2h0M605.5 196.1h0M605.5 190.0h0M592.8 200.1h0M590.3 191.3h0M605.8 182.3h0M600.8 198.9h0M592.1 193.3h0M599.1 184.5h0M606.6 186.4h0M596.5 182.6h0M603.2 184.1h0M592.1 191.4h0M590.3 191.3h0M594.0 196.3h0M605.6 185.5h0M597.3 184.0h0M594.6 186.6h0M591.6 197.1h0M603.8 197.6h0M607.8 192.0h0M604.1 184.8h0M594.4 185.5h0M605.1 199.3h0M611.0 195.8h0M600.8 198.6h0M591.1 192.1h0M606.0 192.6h0M593.6 186.7h0M608.9 196.0h0M603.2 199.4h0M592.0 191.6h0M607.7 182.1h0M601.3 198.3h0M605.8 188.1h0M600.3 204.1h0M609.0 190.6h0M605.6 184.9h0M604.9 186.3h0M609.9 193.1h0M603.7 185.2h0M606.0 197.3h0M597.6 199.5h0M607.6 183.2h0M586.6 185.8h0M592.4 188.4h0M602.9 184.6h0M599.0 183.0h0M592.8 200.6h0M592.5 193.0h0M615.4 187.0h0M588.6 193.5h0M586.9 184.7h0M594.0 196.7h0M600.4 184.1h0M592.7 196.7h0M591.7 185.8h0M610.0 194.2h0M604.0 185.5h0M597.1 200.3h0M607.7 191.0h0M591.8 189.5h0M602.9 185.7h0M591.5 194.6h0M593.4 186.1h0M603.4 197.0h0M607.3 189.1h0M608.6 184.8h0M594.7 186.8h0M593.9 187.4h0M603.9 187.2h0M609.1 190.1h0M600.0 198.7h0M590.6 191.2h0M567.8 223.6h0M565.3 227.5h0M569.5 241.9h0M577.8 241.1h0M578.7 226.5h0M573.5 239.8h0M580.0 230.6h0M564.8 230.2h0M571.1 242.4h0M569.0 236.3h0M567.5 221.6h0M579.4 225.8h0M577.5 225.5h0M567.1 235.6h0M573.5 222.3h0M582.0 233.7h0M575.7 223.6h0M571.7 220.4h0M565.2 240.1h0M577.7 232.4h0M564.7 230.4h0M568.4 236.2h0M579.3 226.0h0M567.7 236.4h0M566.1 219.2h0M577.1 220.3h0M576.3 224.3h0M567.6 235.6h0M561.2 231.5h0M563.9 234.8h0M566.2 236.2h0M572.8 236.6h0M561.6 238.6h0M569.1 238.6h0M577.6 236.2h0M578.9 219.6h0M577.8 226.7h0M564.5 226.2h0M575.7 238.1h0M565.5 222.6h0M566.3 239.5h0M573.5 223.2h0M580.4 228.6h0M581.1 232.0h0M577.8 224.4h0M566.4 234.3h0M562.8 227.2h0M564.3 228.9h0M579.6 229.2h0M572.6 219.5h0M568.9 238.1h0M565.9 225.1h0M569.2 241.3h0M577.7 226.9h0M570.0 221.8h0M581.8 239.3h0M566.3 225.9h0M562.7 245.9h0M564.3 225.4h0M579.5 229.2h0M569.8 236.5h0M578.7 237.7h0M564.9 230.9h0M568.2 223.7h0M568.5 238.5h0M565.4 236.8h0M573.0 222.6h0M579.2 224.6h0M575.1 223.8h0M577.2 237.6h0M567.6 223.5h0M577.4 221.3h0M575.0 223.9h0M580.7 237.5h0M563.9 235.5h0M574.8 240.1h0M576.1 224.0h0M578.2 230.6h0M572.5 236.5h0M560.1 230.1h0M579.8 232.6h0M575.0 236.6h0M575.1 221.9h0M577.2 234.1h0M570.8 222.5h0M580.6 232.2h0M563.2 225.8h0M571.1 218.9h0M566.1 224.4h0M565.6 235.3h0M563.9 224.2h0M577.0 223.5h0M578.9 221.6h0M565.8 218.4h0M578.2 229.6h0M578.6 235.5h0M565.8 235.3h0M565.2 226.8h0M587.9 234.1h0M566.6 239.8h0M563.0 226.6h0M574.2 222.4h0M568.6 235.9h0M576.1 236.9h0M571.4 236.8h0M574.5 222.1h0M570.3 237.0h0M568.8 239.6h0M565.1 226.9h0M574.4 219.8h0M564.6 227.9h0M563.5 237.2h0M569.5 236.5h0M569.9 237.4h0M566.2 236.0h0M571.1 237.0h0M572.9 221.0h0M578.9 231.8h0M569.2 238.6h0M563.3 231.8h0M577.8 225.8h0M564.8 227.1h0M563.6 230.9h0M568.5 235.9h0M580.4 233.5h0M579.1 236.8h0M584.4 224.4h0M573.3 238.5h0M567.8 221.6h0M562.7 231.3h0M564.9 224.9h0M569.9 237.6h0M579.1 230.5h0M574.7 239.7h0M562.7 234.3h0M568.7 222.4h0M579.9 223.9h0M564.6 235.5h0M578.6 232.6h0M564.2 227.4h0M581.5 233.7h0M566.7 240.6h0M563.6 234.2h0M569.0 219.4h0M564.5 223.3h0M571.8 239.5h0M566.6 223.3h0M562.6 226.6h0M582.1 226.3h0M564.2 233.9h0M567.9 224.4h0M569.6 222.9h0M577.4 224.7h0M580.6 224.4h0M573.0 220.2h0M566.0 238.7h0M563.8 235.2h0M575.2 223.5h0M566.5 225.4h0M560.4 281.1h0M566.0 271.3h0M563.7 268.0h0M552.4 266.3h0M556.1 281.5h0M567.0 269.4h0M555.5 265.3h0M559.7 284.0h0M549.6 272.0h0M559.5 268.2h0M558.9 281.3h0M560.3 282.2h0M553.8 268.5h0M562.7 269.1h0M553.1 267.7h0M553.0 280.7h0M549.9 271.4h0M563.2 277.3h0M564.2 274.1h0M550.1 278.1h0M560.3 268.3h0M561.7 280.3h0M559.6 267.2h0M548.8 276.4h0M549.0 277.1h0M549.7 275.2h0M551.6 279.2h0M552.7 282.2h0M551.6 279.0h0M555.0 267.4h0M560.2 265.9h0M564.1 274.0h0M555.0 267.6h0M560.0 281.5h0M558.4 281.6h0M551.3 268.4h0M549.7 273.0h0M554.0 265.9h0M555.3 268.1h0M552.9 282.5h0M555.5 282.8h0M564.5 278.9h0M560.6 280.7h0M550.6 271.8h0M549.4 276.6h0M555.5 284.9h0M551.0 267.7h0M555.3 282.4h0M563.5 268.6h0M563.3 272.8h0M562.1 283.7h0M548.7 273.5h0M556.3 283.9h0M564.0 268.4h0M558.3 267.2h0M551.4 265.5h0M555.3 282.4h0M561.5 266.2h0M562.1 286.0h0M564.5 280.0h0M553.5 267.9h0M552.0 282.3h0M564.0 270.5h0M557.6 266.7h0M564.7 270.7h0M558.6 284.2h0M563.4 278.5h0M545.8 281.6h0M546.8 272.7h0M556.3 283.3h0M562.2 266.6h0M554.9 282.0h0M556.9 267.8h0M556.0 281.7h0M565.5 278.7h0M563.5 282.3h0M559.9 267.2h0M565.2 277.3h0M557.5 267.3h0M553.4 283.4h0M555.7 281.3h0M558.8 281.8h0M567.2 275.1h0M564.0 276.3h0M560.8 284.5h0M548.7 274.5h0M554.4 268.5h0M549.1 278.7h0M557.1 266.8h0M560.5 282.7h0M561.6 279.8h0M561.7 283.2h0M562.2 280.2h0M554.9 284.4h0M557.3 282.3h0M553.0 280.8h0M554.7 267.6h0M567.2 273.6h0M552.1 269.7h0M574.4 271.1h0M560.7 281.8h0M553.0 282.4h0M567.0 270.4h0M563.9 279.0h0M557.4 266.8h0M546.9 275.4h0M547.4 278.5h0M559.3 282.6h0M553.5 267.6h0M564.9 269.0h0M565.1 275.0h0M553.6 280.7h0M562.6 280.7h0M565.2 272.3h0M565.1 273.1h0M557.1 265.9h0M554.9 283.2h0M559.2 283.7h0M554.4 280.9h0M547.4 281.9h0M551.1 269.7h0M550.9 271.4h0M558.2 281.7h0M565.0 279.1h0M555.7 267.6h0M550.5 268.0h0M558.5 284.5h0M563.7 274.6h0M554.2 267.3h0M550.1 275.6h0M561.5 267.3h0M568.0 270.0h0M555.1 281.4h0M562.1 267.2h0M547.3 273.0h0M572.0 265.8h0M548.3 276.7h0M564.5 268.1h0M565.3 270.8h0M562.5 260.9h0M549.0 267.3h0M556.2 266.8h0M562.9 265.4h0M553.2 266.9h0M563.2 272.1h0M565.2 270.4h0M560.9 311.6h0M556.8 333.7h0M562.5 317.3h0M550.2 319.4h0M562.0 332.0h0M559.5 331.7h0M552.5 316.0h0M549.8 321.1h0M560.0 332.9h0M551.4 310.5h0M552.1 317.1h0M556.6 332.8h0M560.1 314.7h0M553.8 314.1h0M559.4 332.8h0M549.9 324.9h0M560.2 330.2h0M568.1 325.0h0M556.5 313.4h0M557.3 311.6h0M562.5 308.6h0M550.8 317.3h0M562.7 308.8h0M566.8 327.5h0M552.4 315.7h0M553.4 315.2h0M551.6 313.3h0M550.8 318.2h0M553.5 329.5h0M552.7 316.5h0M549.1 318.3h0M548.4 321.4h0M562.6 315.4h0M548.0 315.7h0M555.1 331.5h0M548.2 315.8h0M558.9 332.4h0M565.2 319.1h0M550.3 323.8h0M558.6 311.9h0M553.1 315.8h0M566.8 324.1h0M559.3 328.7h0M565.2 324.5h0M561.5 328.6h0M566.0 323.5h0M554.1 315.8h0M555.1 315.1h0M553.6 315.0h0M556.2 314.4h0M560.7 327.8h0M547.4 323.0h0M553.9 328.2h0M551.2 325.9h0M560.0 330.0h0M562.1 312.7h0M553.9 329.3h0M565.8 320.9h0M551.9 326.4h0M553.5 334.2h0M549.6 324.3h0M559.7 328.1h0M555.9 310.5h0M547.6 329.1h0M554.5 328.1h0M560.5 340.5h0M552.1 315.2h0M562.0 313.1h0M553.6 333.3h0M542.1 318.8h0M559.1 312.5h0M552.4 331.0h0M546.4 320.9h0M548.1 318.3h0M560.2 328.7h0M554.8 311.7h0M555.2 329.4h0M550.0 329.0h0M561.5 329.1h0M563.8 315.4h0M561.5 314.6h0M561.2 327.4h0M551.2 327.9h0M557.4 331.8h0M548.0 320.8h0M560.0 314.6h0M556.8 328.5h0M555.4 329.2h0M562.5 312.0h0M563.0 316.8h0M559.4 313.4h0M558.2 329.3h0M567.2 330.6h0M567.8 324.5h0M555.1 334.1h0M554.8 331.5h0M549.5 316.2h0M553.5 333.1h0M548.7 323.2h0M551.3 326.1h0M569.2 325.5h0M559.2 328.2h0M560.7 315.5h0M549.9 326.6h0M563.1 325.0h0M562.9 325.8h0M550.7 312.3h0M566.5 327.5h0M562.4 315.8h0M561.1 316.6h0M552.2 334.8h0M562.7 310.3h0M564.0 321.3h0M564.4 329.1h0M564.7 329.0h0M551.8 316.6h0M559.5 315.3h0M553.4 330.1h0M548.7 324.6h0M549.2 331.7h0M565.0 328.6h0M550.8 316.2h0M545.8 328.0h0M557.9 329.4h0M559.7 327.8h0M566.1 315.7h0M565.4 324.4h0M553.0 327.5h0M561.0 316.4h0M559.9 328.0h0M552.8 315.2h0M555.6 314.9h0M555.3 328.6h0M551.4 330.3h0M556.9 314.1h0M553.3 333.8h0M562.5 315.9h0M555.9 330.6h0M562.4 326.2h0M549.1 317.7h0M565.2 364.3h0M577.3 371.5h0M581.4 358.0h0M576.3 371.7h0M576.8 359.6h0M578.6 370.9h0M573.1 372.9h0M568.0 360.7h0M564.9 364.1h0M561.8 363.6h0M577.5 361.2h0M577.9 369.0h0M573.4 373.8h0M574.1 374.7h0M578.3 363.5h0M563.1 364.7h0M561.7 362.5h0M577.2 371.0h0M576.2 379.7h0M565.2 376.2h0M565.6 363.1h0M565.8 362.1h0M571.6 376.9h0M576.5 374.2h0M584.0 364.8h0M564.8 363.6h0M577.3 359.8h0M578.4 362.6h0M575.9 359.9h0M571.2 356.6h0M571.0 376.3h0M574.7 358.4h0M578.1 369.4h0M565.2 363.4h0M565.1 361.9h0M563.9 371.9h0M561.1 367.5h0M569.7 375.5h0M573.4 357.2h0M568.5 372.8h0M563.2 362.5h0M575.7 373.7h0M564.6 365.9h0M575.7 374.7h0M568.5 372.5h0M572.3 357.0h0M577.2 362.6h0M576.6 374.6h0M575.2 372.8h0M574.3 372.5h0M563.6 354.9h0M576.4 362.0h0M566.8 354.8h0M575.9 373.8h0M566.3 358.9h0M577.7 357.9h0M563.8 366.5h0M579.8 370.2h0M578.4 374.3h0M578.6 370.6h0M579.1 375.1h0M563.4 363.6h0M577.8 364.5h0M578.2 364.9h0M576.6 371.9h0M572.4 375.6h0M579.8 360.8h0M564.3 362.7h0M578.4 361.8h0M556.5 365.2h0M564.6 364.4h0M578.2 363.6h0M577.7 370.8h0M568.2 360.3h0M564.9 367.8h0M567.1 373.2h0M571.5 373.7h0M565.1 368.5h0M576.9 373.3h0M574.7 373.3h0M560.2 364.2h0M563.8 370.7h0M572.2 374.1h0M579.5 364.6h0M571.9 373.1h0M580.1 368.9h0M575.8 373.4h0M576.8 373.4h0M564.6 367.6h0M578.2 366.1h0M563.0 364.2h0M562.1 365.6h0M567.5 376.5h0M578.9 370.0h0M568.3 360.4h0M577.9 362.3h0M578.1 370.0h0M577.3 374.1h0M570.3 359.1h0M561.2 366.6h0M561.8 370.9h0M566.8 371.9h0M582.0 370.7h0M577.6 361.8h0M574.5 377.0h0M575.5 377.3h0M573.9 375.0h0M580.4 370.4h0M570.8 373.6h0M563.9 363.0h0M574.8 358.6h0M564.9 373.9h0M574.5 373.3h0M578.7 366.1h0M576.8 371.5h0M562.3 362.8h0M563.8 369.4h0M568.5 372.5h0M567.6 357.7h0M581.2 372.9h0M578.5 372.0h0M578.3 368.1h0M564.4 351.7h0M561.1 373.9h0M564.7 368.0h0M578.6 371.8h0M569.6 360.0h0M573.4 374.3h0M570.2 374.5h0M567.4 372.8h0M574.6 374.9h0M563.9 362.0h0M566.4 371.8h0M566.7 373.9h0M564.0 363.8h0M574.3 373.7h0M578.5 368.5h0M568.3 372.8h0M582.9 361.3h0M570.5 375.1h0M570.6 373.3h0M569.4 359.9h0M564.4 368.5h0M562.3 367.5h0M581.5 367.2h0M570.2 374.4h0M561.3 368.0h0M576.5 373.9h0M579.6 371.0h0M571.1 376.1h0M570.2 373.7h0M591.0 400.0h0M605.8 410.0h0M604.3 409.5h0M600.8 413.4h0M596.1 410.8h0M602.0 410.7h0M596.5 398.2h0M602.6 398.3h0M604.5 414.0h0M595.9 411.5h0M603.4 415.3h0M594.5 398.4h0M592.5 409.3h0M600.1 414.4h0M605.7 404.6h0M605.6 401.3h0M596.5 398.3h0M607.5 400.3h0M607.8 411.2h0M606.7 403.7h0M592.5 408.8h0M602.5 415.4h0M590.7 408.9h0M603.7 398.8h0M603.4 410.9h0M594.5 412.6h0M603.1 394.8h0M610.5 404.1h0M599.8 396.5h0M591.2 407.4h0M604.5 396.5h0M588.1 405.9h0M604.5 396.2h0M603.0 399.0h0M602.9 414.8h0M602.7 398.3h0M599.3 415.2h0M607.7 409.1h0M606.5 405.2h0M589.9 395.3h0M592.1 406.0h0M588.5 402.8h0M594.0 399.0h0M603.8 414.2h0M606.2 403.5h0M605.4 408.1h0M588.9 403.6h0M590.0 405.0h0M593.2 397.3h0M590.7 405.7h0M592.4 399.3h0M589.4 396.6h0M603.4 410.2h0M595.2 395.9h0M607.2 402.4h0M602.6 411.9h0M589.7 403.5h0M601.7 412.7h0M602.6 397.5h0M594.2 409.1h0M596.5 396.2h0M609.2 411.1h0M590.1 409.8h0M607.8 405.6h0M603.4 410.3h0M593.8 400.5h0M589.7 398.3h0M596.9 398.3h0M601.1 411.9h0M604.7 409.4h0M595.7 398.1h0M593.2 398.2h0M591.9 408.1h0M606.9 400.6h0M598.2 413.2h0M605.9 414.1h0M605.1 401.2h0M590.6 402.7h0M601.1 397.5h0M610.0 408.3h0M599.4 412.0h0M604.1 410.9h0M599.3 414.3h0M588.4 403.3h0M594.2 409.3h0M601.7 397.0h0M602.9 395.8h0M596.3 397.5h0M598.9 395.5h0M590.8 399.3h0M592.0 401.5h0M604.2 398.3h0M599.5 411.8h0M601.7 411.2h0M607.4 408.4h0M596.1 392.8h0M596.3 411.3h0M606.5 404.0h0M597.0 396.3h0M603.2 417.6h0M602.9 411.6h0M601.9 395.9h0M599.8 414.9h0M605.5 410.7h0M601.6 412.1h0M610.1 399.2h0M607.8 408.5h0M596.0 398.5h0M609.6 408.7h0M592.6 401.0h0M603.5 399.4h0M590.6 407.7h0M590.8 404.8h0M606.1 410.6h0M592.4 401.6h0M607.8 409.9h0M602.5 413.2h0M612.8 410.5h0M610.1 406.4h0M610.8 406.9h0M605.2 401.0h0M600.8 396.5h0M600.3 411.6h0M598.2 411.4h0M605.4 407.0h0M604.1 399.5h0M592.6 407.4h0M599.0 396.8h0M592.1 400.7h0M608.1 402.7h0M593.5 401.1h0M587.7 405.5h0M601.8 397.1h0M611.0 404.3h0M606.2 401.1h0M593.6 397.0h0M606.8 403.5h0M596.7 397.9h0M597.4 414.8h0M590.2 396.4h0M602.5 398.0h0M641.1 438.4h0M637.6 439.5h0M639.9 420.8h0M644.4 430.0h0M634.4 438.2h0M647.1 434.6h0M632.6 427.4h0M637.2 439.8h0M648.9 446.3h0M637.1 425.3h0M643.1 438.2h0M630.6 431.5h0M644.2 426.5h0M639.8 438.4h0M643.0 439.3h0M632.5 427.5h0M634.7 440.1h0M628.5 435.5h0M630.6 437.4h0M628.5 433.8h0M635.3 424.1h0M624.9 433.2h0M629.6 426.7h0M635.2 424.3h0M642.7 437.1h0M628.5 433.4h0M648.1 431.9h0M626.5 431.0h0M633.4 440.7h0M632.4 427.6h0M640.1 440.4h0M635.0 424.3h0M629.1 439.7h0M629.5 440.8h0M649.4 436.0h0M630.7 437.0h0M631.8 436.7h0M630.6 427.0h0M646.5 436.7h0M646.0 432.5h0M640.1 439.8h0M626.0 430.5h0M635.6 424.4h0M637.6 422.6h0M637.5 420.3h0M629.7 434.9h0M638.1 421.5h0M634.2 440.3h0M635.7 441.4h0M644.7 427.6h0M639.4 438.5h0M636.2 424.4h0M627.6 428.8h0M648.4 431.2h0M639.2 423.8h0M630.7 427.7h0M636.9 439.6h0M632.9 425.7h0M630.2 424.1h0M631.9 422.5h0M644.8 423.2h0M644.9 430.8h0M649.2 436.3h0M633.5 437.8h0M645.4 437.6h0M628.0 439.0h0M644.9 432.5h0M628.3 433.3h0M628.8 435.4h0M634.0 444.9h0M640.5 420.5h0M649.4 437.0h0M643.0 441.6h0M629.5 434.6h0M643.8 434.7h0M631.8 426.1h0M634.7 440.5h0M639.8 421.6h0M630.2 430.5h0M632.2 421.1h0M630.9 442.6h0M632.8 442.1h0M643.2 438.3h0M632.7 425.4h0M630.1 432.1h0M633.5 424.4h0M638.0 439.4h0M637.4 441.3h0M643.4 429.2h0M640.5 423.4h0M637.7 442.5h0M634.5 421.2h0M628.8 432.5h0M632.6 437.2h0M646.8 431.6h0M644.2 428.8h0M643.4 438.6h0M643.9 432.3h0M642.8 435.9h0M635.0 423.1h0M631.3 435.8h0M628.5 427.6h0M634.5 440.5h0M640.5 438.5h0M630.7 437.4h0M630.2 428.6h0M629.6 430.3h0M637.3 443.1h0M629.1 427.6h0M647.1 437.5h0M629.5 433.2h0M638.7 424.9h0M628.8 434.2h0M627.2 425.6h0M630.0 434.5h0M629.6 431.2h0M639.0 440.1h0M647.6 432.0h0M634.7 418.4h0M629.4 427.5h0M647.3 444.5h0M629.6 433.8h0M643.9 426.0h0M644.2 438.2h0M634.2 424.8h0M644.9 433.5h0M644.4 426.9h0M644.1 429.8h0M635.5 425.1h0M630.1 429.1h0M637.2 439.0h0M638.2 439.0h0M641.1 439.2h0M633.7 440.1h0M644.4 435.5h0M628.1 429.2h0M629.9 439.4h0M647.8 427.6h0M642.6 424.6h0M631.2 427.1h0M633.9 439.6h0M646.1 438.7h0M648.4 440.3h0M641.4 423.5h0M631.3 425.3h0M633.0 425.1h0M682.0 455.7h0M683.9 440.2h0M668.9 439.5h0M686.6 438.9h0M687.2 441.4h0M689.5 442.7h0M676.8 431.7h0M675.7 452.8h0M675.3 440.8h0M688.1 450.1h0M688.6 444.6h0M685.1 455.5h0M675.9 451.7h0M674.4 446.7h0M685.0 439.8h0M687.7 450.4h0M673.7 448.1h0M674.8 447.0h0M675.2 434.1h0M692.7 441.1h0M691.9 453.6h0M675.8 444.5h0M683.6 439.6h0M674.6 453.8h0M689.4 445.9h0M685.5 453.7h0M679.2 438.9h0M687.4 454.4h0M674.4 442.3h0M689.7 442.0h0M677.0 451.3h0M676.0 438.2h0M682.6 439.7h0M686.8 440.6h0M689.6 441.1h0M675.2 445.0h0M675.7 451.6h0M682.1 439.2h0M691.1 448.1h0M687.7 454.8h0M679.8 439.6h0M675.9 442.0h0M676.7 442.4h0M694.7 450.1h0M690.2 443.6h0M685.3 453.5h0M688.3 451.5h0M675.3 443.3h0M687.5 442.2h0M673.4 440.0h0M677.7 437.5h0M680.8 454.3h0M677.3 454.3h0M680.1 455.2h0M681.4 454.0h0M673.4 441.6h0M686.9 439.7h0M689.0 443.4h0M682.1 454.5h0M677.7 439.2h0M672.6 443.9h0M673.0 443.5h0M671.0 449.4h0M675.0 447.8h0M685.1 456.7h0M691.6 442.8h0M673.2 444.5h0M674.4 454.4h0M690.3 444.0h0M689.3 450.8h0M680.5 439.0h0M683.9 440.2h0M675.5 448.7h0M677.4 453.1h0M673.8 440.9h0M692.3 445.1h0M689.4 448.5h0M673.3 439.5h0M678.9 439.3h0M680.1 453.5h0M689.1 451.2h0M688.9 446.6h0M686.1 453.3h0M687.6 442.4h0M675.7 449.6h0M682.2 436.0h0M684.8 438.6h0M677.8 452.1h0M672.8 448.5h0M689.9 450.1h0M668.7 453.0h0M675.4 453.1h0M690.7 448.2h0M689.3 455.2h0M688.8 444.1h0M687.6 443.3h0M684.2 438.9h0M675.6 444.8h0M688.1 451.0h0M681.9 438.0h0M688.7 448.5h0M692.6 438.8h0M676.1 437.5h0M691.6 446.5h0M688.3 444.0h0M679.5 440.4h0M696.2 445.5h0M681.4 454.6h0M690.4 445.9h0M690.5 449.4h0M677.3 453.3h0M672.9 449.0h0M673.8 441.8h0M689.0 442.7h0M689.2 451.1h0M688.8 442.0h0M678.8 456.2h0M689.0 448.6h0M689.3 450.5h0M684.2 453.9h0M677.2 453.8h0M691.6 452.5h0M671.8 441.3h0M674.8 443.0h0M690.4 443.9h0M686.1 454.5h0M679.4 437.5h0M681.2 458.0h0M676.9 440.9h0M688.3 453.2h0M673.9 451.0h0M680.2 455.9h0M673.9 447.8h0M671.4 447.1h0M692.5 451.2h0M692.2 444.5h0M675.1 449.0h0M686.6 452.4h0M679.0 440.0h0M673.5 446.1h0M685.3 454.5h0M677.2 441.0h0M684.5 440.0h0M675.0 446.9h0M675.6 440.2h0M674.0 443.0h0M678.1 438.9h0M693.1 447.6h0M688.7 447.1h0M683.0 454.8h0M679.4 438.4h0M675.4 445.1h0M689.0 441.8h0M690.3 442.4h0M687.5 451.4h0M674.6 444.9h0M683.5 438.1h0M724.2 451.7h0M722.7 443.2h0M737.2 443.4h0M727.9 440.1h0M734.5 442.6h0M722.7 444.8h0M725.5 437.6h0M734.9 450.9h0M727.5 439.6h0M717.7 447.6h0M730.9 454.2h0M736.3 446.4h0M730.7 440.0h0M716.2 451.5h0M736.2 446.4h0M728.1 455.3h0M724.6 451.9h0M734.6 434.4h0M729.4 453.4h0M721.8 447.8h0M734.5 440.5h0M728.9 460.8h0M737.1 433.3h0M721.6 451.1h0M726.2 460.2h0M727.3 453.3h0M721.7 449.5h0M735.3 451.9h0M721.6 444.3h0M724.7 439.8h0M721.6 448.0h0M735.9 441.6h0M720.1 444.3h0M722.0 454.8h0M738.2 447.1h0M732.4 455.0h0M728.6 438.6h0M732.0 439.8h0M729.4 454.0h0M726.7 439.0h0M728.6 454.2h0M736.3 453.9h0M717.6 444.7h0M721.3 450.9h0M735.5 453.3h0M721.4 449.3h0M742.4 442.9h0M732.3 439.2h0M725.1 438.7h0M739.4 441.7h0M730.9 454.7h0M734.8 437.2h0M736.9 451.3h0M730.5 454.5h0M737.3 446.6h0M734.8 452.9h0M718.6 444.5h0M735.6 445.5h0M723.1 441.3h0M723.2 442.9h0M738.3 444.4h0M721.0 452.0h0M735.4 444.3h0M730.7 437.2h0M735.3 441.4h0M728.1 454.9h0M739.5 445.2h0M734.3 454.3h0M735.7 447.9h0M738.4 447.9h0M735.7 448.0h0M734.8 451.8h0M725.6 453.1h0M723.8 452.4h0M738.5 448.6h0M737.3 451.8h0M724.6 454.9h0M719.5 441.7h0M734.3 441.7h0M736.2 450.1h0M720.6 446.3h0M728.7 455.0h0M722.0 448.8h0M718.7 446.2h0M720.3 445.7h0M718.0 443.6h0M720.0 446.7h0M724.4 441.3h0M721.4 452.2h0M721.7 442.6h0M726.2 453.6h0M721.0 444.7h0M719.2 452.2h0M726.2 435.9h0M726.3 453.3h0M720.5 447.9h0M722.0 448.8h0M735.8 453.9h0M736.1 448.6h0M735.5 444.7h0M734.6 450.6h0M729.5 458.6h0M724.7 453.5h0M725.1 452.2h0M722.9 439.7h0M729.4 437.8h0M726.7 454.9h0M722.9 455.5h0M719.6 439.0h0M736.6 453.7h0M718.9 445.3h0M725.4 452.6h0M721.1 452.8h0M722.9 443.2h0M737.9 441.0h0M725.9 454.7h0M728.1 438.3h0M733.4 435.3h0M729.8 453.4h0M722.0 450.3h0M717.9 450.1h0M733.8 442.0h0M729.8 460.2h0M736.6 449.8h0M736.1 447.3h0M731.3 455.4h0M729.7 438.4h0M732.3 440.2h0M736.4 448.8h0M721.0 437.4h0M722.1 440.8h0M718.9 447.0h0M726.0 455.7h0M732.9 440.9h0M721.9 442.9h0M718.9 448.0h0M727.0 458.4h0M739.1 442.8h0M717.9 448.2h0M721.7 443.1h0M727.8 436.7h0M736.8 445.3h0M731.2 454.8h0M736.0 451.4h0M725.1 453.3h0M737.8 441.8h0M733.5 436.5h0M722.6 444.4h0M737.4 447.6h0M770.7 423.5h0M769.5 425.6h0M777.4 438.2h0M782.7 430.1h0M767.4 427.8h0M767.0 430.9h0M781.2 437.4h0M780.8 421.2h0M773.7 425.1h0M773.6 439.4h0M777.8 422.9h0M777.3 420.2h0M767.2 434.0h0M767.1 432.5h0M773.0 421.5h0M767.8 427.9h0M779.7 437.7h0M775.0 422.2h0M781.6 434.6h0M774.1 424.3h0M779.9 437.6h0M780.5 434.6h0M779.3 417.4h0M772.1 442.2h0M779.6 437.7h0M767.0 443.1h0M769.9 445.0h0M785.3 429.8h0M764.1 433.4h0M770.4 425.9h0M764.6 434.9h0M774.0 424.8h0M777.6 426.5h0M765.0 428.8h0M780.2 434.6h0M774.7 440.0h0M773.2 442.9h0M781.8 434.3h0M766.6 437.0h0M775.3 423.1h0M770.0 442.4h0M766.9 431.8h0M767.8 440.5h0M768.1 428.2h0M768.9 441.2h0M770.9 422.3h0M766.7 434.3h0M780.9 432.0h0M766.6 427.3h0M783.7 430.1h0M778.5 438.6h0M777.6 426.7h0M769.9 441.1h0M773.2 424.9h0M784.2 427.5h0M782.0 436.7h0M768.4 436.3h0M782.8 430.2h0M768.8 437.5h0M780.5 429.6h0M765.4 429.8h0M782.2 427.1h0M779.5 422.7h0M776.1 441.8h0M781.6 436.2h0M780.3 430.5h0M771.3 445.6h0M780.2 427.2h0M778.8 437.4h0M780.2 434.7h0M769.6 438.4h0M776.8 421.5h0M774.4 424.1h0M779.2 439.5h0M779.5 424.3h0M776.4 440.7h0M786.1 432.2h0M779.9 434.7h0M765.6 433.9h0M782.8 429.4h0M771.6 425.4h0M781.8 436.3h0M783.9 433.1h0M768.9 427.5h0M786.3 434.8h0M768.8 427.3h0M777.2 421.6h0M778.0 426.8h0M764.3 435.4h0M780.9 428.0h0M763.2 440.3h0M777.7 438.3h0M777.6 439.5h0M770.3 440.4h0M776.3 438.8h0M775.7 444.4h0M778.3 424.1h0M770.4 440.7h0M767.2 437.3h0M771.7 419.2h0M787.7 430.5h0M767.3 428.2h0M785.0 430.8h0M778.0 442.0h0M768.9 427.3h0M769.5 437.6h0M767.3 435.4h0M770.0 426.2h0M771.1 439.5h0M773.7 425.2h0M774.7 424.6h0M782.9 424.0h0M766.7 430.0h0M778.1 439.6h0M766.1 432.8h0M767.9 426.8h0M764.8 438.8h0M772.2 421.8h0M765.1 437.5h0M766.0 433.2h0M777.8 438.2h0M772.7 425.0h0M779.4 422.0h0M777.2 425.2h0M767.0 430.9h0M767.6 436.3h0M779.6 436.7h0M765.4 432.2h0M766.5 434.3h0M782.4 433.4h0M780.6 428.0h0M773.3 423.4h0M770.7 439.5h0M784.8 438.1h0M781.6 419.9h0M778.9 421.0h0M768.7 436.9h0M772.1 425.8h0M772.9 444.3h0M761.4 436.6h0M778.6 421.9h0M768.8 440.6h0M776.4 438.6h0M779.1 424.9h0M785.7 438.4h0M780.2 429.1h0M812.4 415.0h0M808.9 398.5h0M812.6 416.3h0M821.6 406.2h0M802.0 405.3h0M807.5 412.4h0M802.7 404.3h0M821.3 397.3h0M808.3 395.1h0M803.2 403.3h0M808.6 397.4h0M817.8 412.1h0M807.7 414.4h0M812.8 396.9h0M808.2 396.8h0M816.7 399.8h0M804.7 403.6h0M805.8 400.9h0M813.5 396.2h0M818.0 400.2h0M810.1 395.5h0M804.9 394.6h0M819.7 401.8h0M807.5 398.6h0M805.4 398.2h0M805.1 402.0h0M818.2 410.8h0M805.1 406.2h0M798.1 404.5h0M819.0 395.2h0M814.7 398.0h0M807.8 394.1h0M814.6 410.7h0M810.4 397.0h0M815.5 413.6h0M811.7 411.7h0M820.1 411.5h0M807.6 410.5h0M804.9 401.1h0M817.0 398.0h0M816.9 413.3h0M822.6 404.5h0M806.1 397.5h0M802.1 404.8h0M816.1 398.9h0M820.2 405.7h0M808.1 417.0h0M809.3 410.9h0M804.7 401.0h0M817.2 393.0h0M819.5 407.2h0M802.4 400.2h0M810.2 396.3h0M813.0 395.7h0M807.0 410.2h0M819.6 401.4h0M821.3 406.8h0M817.0 409.2h0M807.1 409.5h0M804.9 406.3h0M803.9 398.0h0M802.3 405.0h0M806.2 398.9h0M818.1 410.4h0M802.1 400.4h0M804.8 400.8h0M812.2 395.3h0M800.0 408.4h0M811.3 397.6h0M818.9 407.5h0M808.8 393.3h0M818.5 403.7h0M819.1 403.7h0M809.0 410.7h0M802.0 405.5h0M817.2 398.6h0M805.0 401.6h0M802.8 397.6h0M800.3 412.2h0M808.4 394.0h0M804.6 399.9h0M820.8 405.3h0M819.2 398.7h0M820.3 392.7h0M805.2 401.2h0M804.4 403.3h0M819.0 404.0h0M812.9 412.9h0M820.3 395.4h0M814.9 397.1h0M818.0 407.9h0M817.2 410.4h0M816.0 398.5h0M812.7 411.1h0M804.9 411.8h0M807.7 396.0h0M802.2 406.3h0M806.1 410.8h0M821.6 403.3h0M804.4 410.0h0M805.5 397.0h0M817.1 400.3h0M813.5 415.9h0M822.9 394.7h0M812.4 412.3h0M803.6 400.9h0M821.8 405.2h0M802.6 408.7h0M816.3 398.5h0M813.7 412.6h0M824.0 405.3h0M807.9 413.6h0M818.9 400.0h0M800.6 405.1h0M817.8 400.4h0M807.1 409.5h0M813.6 412.0h0M802.3 412.4h0M818.6 399.6h0M805.5 397.1h0M817.1 395.2h0M805.7 396.5h0M804.7 405.8h0M816.8 410.4h0M818.6 401.6h0M800.8 401.5h0M805.2 409.4h0M818.8 413.1h0M805.5 408.5h0M814.0 397.6h0M804.3 411.7h0M816.6 410.9h0M802.6 403.5h0M807.3 411.6h0M803.9 406.2h0M816.4 409.6h0M815.1 413.1h0M820.5 404.0h0M801.2 406.8h0M800.9 408.7h0M820.5 404.1h0M815.6 398.6h0M803.1 404.2h0M810.2 396.8h0M809.1 413.6h0M799.6 403.8h0M815.2 412.5h0M812.5 411.4h0M819.6 397.9h0M806.0 415.7h0M819.4 407.9h0M812.4 412.0h0M807.3 398.4h0M816.6 409.8h0M818.0 398.9h0M819.2 402.5h0M807.2 395.1h0M801.8 401.0h0M817.5 399.9h0M803.6 404.1h0M835.8 378.3h0M828.8 365.0h0M844.2 359.6h0M841.5 358.7h0M831.5 367.4h0M831.0 363.7h0M832.8 364.9h0M846.0 361.3h0M847.4 363.9h0M843.5 375.6h0M833.8 357.2h0M846.8 363.7h0M838.4 374.1h0M847.0 367.5h0M835.5 373.5h0M837.3 372.8h0M838.6 357.5h0M845.4 371.3h0M833.5 370.8h0M849.3 364.1h0M845.6 359.3h0M836.9 374.1h0M845.2 360.2h0M833.5 363.1h0M841.8 374.2h0M846.8 366.0h0M830.5 370.3h0M833.5 362.5h0M835.1 360.1h0M831.6 372.7h0M852.4 363.9h0M846.2 366.5h0M835.0 361.4h0M844.9 372.1h0M841.7 360.2h0M850.1 365.9h0M830.0 368.7h0M836.6 359.0h0M832.9 365.5h0M843.9 360.4h0M846.5 365.5h0M845.7 362.4h0M834.3 371.5h0M842.2 374.8h0M838.4 375.6h0M833.2 371.3h0M834.1 373.7h0M832.4 359.8h0M835.9 357.7h0M846.4 376.3h0M834.9 356.6h0M834.9 372.4h0M833.8 355.7h0M835.9 359.9h0M833.6 375.0h0M828.0 364.4h0M838.6 355.2h0M832.2 363.9h0M845.5 370.8h0M840.3 354.7h0M834.3 375.9h0M836.9 378.6h0M848.9 359.5h0M844.1 359.4h0M844.1 375.1h0M832.2 364.0h0M839.3 374.9h0M839.9 357.7h0M838.6 358.0h0M854.4 369.4h0M845.4 363.2h0M830.9 363.2h0M845.8 360.2h0M839.5 374.3h0M847.1 362.7h0M835.9 360.7h0M829.8 363.4h0M830.4 372.0h0M832.6 370.9h0M843.0 372.7h0M847.3 372.2h0M834.5 373.8h0M839.3 373.7h0M834.0 372.4h0M847.2 365.4h0M835.8 372.5h0M836.6 374.3h0M849.9 366.7h0M852.2 362.4h0M842.9 358.8h0M837.1 357.9h0M833.2 364.4h0M833.6 357.5h0M840.6 376.2h0M845.3 370.9h0M846.0 369.7h0M847.3 366.7h0M836.2 373.4h0M844.9 373.0h0M843.3 360.2h0M845.8 361.5h0M835.1 356.9h0M834.2 361.9h0M835.0 381.4h0M836.3 358.2h0M851.4 363.8h0M842.0 374.3h0M840.0 374.6h0M841.3 360.1h0M847.0 369.3h0M844.7 371.1h0M849.2 364.1h0M838.7 357.7h0M845.5 360.5h0M831.5 371.5h0M846.2 359.8h0M837.2 356.9h0M845.3 360.0h0M851.4 373.2h0M836.9 358.7h0M847.0 362.7h0M838.6 376.8h0M847.4 357.6h0M833.7 373.2h0M845.8 372.0h0M835.1 373.2h0M828.3 370.5h0M832.8 363.4h0M848.1 365.5h0M834.6 371.0h0M837.8 375.0h0M832.8 368.8h0M841.2 374.1h0M832.1 360.7h0M834.7 372.2h0M850.8 363.9h0M839.4 373.6h0M825.4 361.1h0M845.8 362.2h0M839.3 359.4h0M843.1 374.7h0M847.8 381.2h0M832.9 359.2h0M843.9 358.2h0M838.4 375.7h0M828.2 369.9h0M835.0 358.3h0M841.8 373.2h0M844.2 361.4h0M848.3 372.2h0M829.4 365.5h0M834.1 376.2h0M840.6 358.4h0M832.3 366.9h0M835.5 372.5h0M845.3 371.2h0M844.1 371.3h0M846.0 379.6h0M840.8 380.3h0M846.7 372.9h0M838.9 374.3h0M838.0 373.7h0M837.0 374.8h0M836.4 372.6h0M832.4 367.8h0M833.9 371.4h0M840.3 373.8h0M852.9 314.2h0M863.6 323.3h0M845.6 318.9h0M858.3 312.2h0M847.2 325.6h0M849.0 330.9h0M856.2 314.6h0M860.3 324.2h0M857.3 328.7h0M853.9 328.8h0M859.8 331.5h0M856.4 314.9h0M860.7 324.1h0M846.6 321.7h0M864.5 316.9h0M850.5 328.5h0M843.6 330.9h0M851.9 315.1h0M844.1 323.2h0M859.3 317.7h0M854.4 314.1h0M842.9 315.7h0M858.4 313.9h0M851.8 329.8h0M849.0 326.5h0M852.7 329.7h0M857.4 328.1h0M857.6 328.8h0M851.1 329.3h0M849.5 312.3h0M846.9 314.7h0M862.1 321.5h0M846.1 321.4h0M850.6 329.6h0M864.2 313.2h0M857.7 315.5h0M853.7 313.5h0M858.4 333.6h0M847.1 325.8h0M852.6 312.7h0M854.1 312.0h0M844.3 329.3h0M848.1 316.1h0M852.4 313.2h0M853.5 330.3h0M859.7 317.9h0M856.2 332.3h0M845.0 313.1h0M852.8 314.8h0M858.5 332.4h0M859.8 328.8h0M840.0 321.6h0M853.4 313.1h0M852.4 309.6h0M857.5 328.8h0M851.5 328.5h0M847.3 326.2h0M859.5 329.5h0M861.9 320.9h0M859.0 312.5h0M861.8 324.5h0M858.1 316.2h0M842.9 318.4h0M860.3 313.6h0M845.9 321.8h0M847.7 318.3h0M850.7 328.6h0M860.1 318.3h0M858.0 310.9h0M853.2 330.4h0M858.8 328.0h0M851.2 327.9h0M860.6 322.7h0M868.0 321.2h0M847.5 322.3h0M843.5 319.2h0M854.2 312.7h0M845.7 324.8h0M851.2 315.4h0M845.0 327.2h0M846.8 322.1h0M857.4 313.3h0M863.5 323.8h0M857.3 312.7h0M863.5 324.5h0M849.4 307.9h0M863.4 315.5h0M858.6 315.8h0M849.3 327.7h0M855.3 314.4h0M852.7 310.8h0M845.3 326.1h0M847.2 317.3h0M861.3 329.6h0M855.7 328.2h0M862.2 330.2h0M856.4 328.7h0M857.4 328.0h0M850.7 327.5h0M842.3 320.4h0M861.1 320.4h0M862.4 324.8h0M847.6 315.8h0M860.8 319.9h0M860.4 324.0h0M865.4 324.5h0M846.9 320.4h0M843.2 326.6h0M861.8 316.1h0M851.1 329.2h0M854.9 330.3h0M844.3 317.7h0M856.9 314.3h0M857.8 315.9h0M846.2 327.2h0M846.4 325.3h0M848.4 317.2h0M853.7 329.9h0M847.9 325.3h0M860.9 319.8h0M852.9 330.1h0M858.6 329.0h0M847.9 325.4h0M849.3 316.7h0M858.1 327.3h0M855.7 314.6h0M856.3 313.4h0M851.2 311.3h0M854.2 313.7h0M854.0 340.4h0M854.4 330.9h0M855.1 314.0h0M860.1 329.6h0M853.1 329.7h0M858.4 315.2h0M854.1 330.1h0M860.3 315.3h0M864.2 325.8h0M860.3 314.3h0M855.2 314.4h0M849.3 316.6h0M858.1 314.7h0M844.0 317.3h0M848.7 315.8h0M856.4 314.0h0M859.1 315.3h0M857.4 331.6h0M851.3 332.4h0M842.8 322.5h0M854.7 313.4h0M845.8 323.5h0M860.8 317.0h0M846.7 328.5h0M848.8 326.6h0M852.7 329.0h0M851.5 331.8h0M857.4 328.4h0M855.3 329.4h0M855.8 331.0h0M860.9 320.8h0M860.0 317.8h0M847.8 314.6h0M850.1 316.2h0M856.0 311.4h0M852.2 312.1h0M864.1 331.6h0M853.8 314.9h0M856.1 315.4h0M862.0 320.3h0M845.2 329.7h0M852.0 333.6h0M850.0 311.1h0M849.0 327.7h0M854.8 328.3h0M860.8 323.5h0M855.2 329.4h0" stroke="#fffd16" stroke-width="2.4" stroke-linecap="square" fill="none"/>
<path d="M548.5 475.5v-3M548.5 120.5v3M600.5 475.5v-3M600.5 120.5v3M653.5 475.5v-3M653.5 120.5v3M705.5 475.5v-3M705.5 120.5v3M757.5 475.5v-3M757.5 120.5v3M810.5 475.5v-3M810.5 120.5v3M862.5 475.5v-3M862.5 120.5v3M527.5 455.5h3M883.5 455.5h-3M527.5 402.5h3M883.5 402.5h-3M527.5 350.5h3M883.5 350.5h-3M527.5 298.5h3M883.5 298.5h-3M527.5 245.5h3M883.5 245.5h-3M527.5 193.5h3M883.5 193.5h-3M527.5 140.5h3M883.5 140.5h-3" stroke="#8a8a8a" stroke-width="1" fill="none" shape-rendering="crispEdges"/>
<rect x="527.5" y="120.5" width="356" height="355" fill="none" stroke="#b6b6b6" stroke-width="1" shape-rendering="crispEdges"/>
<text x="548.5" y="495" text-anchor="middle" class="tk">-1.5</text>
<text x="600.9" y="495" text-anchor="middle" class="tk">-1</text>
<text x="653.2" y="495" text-anchor="middle" class="tk">-0.5</text>
<text x="705.6" y="495" text-anchor="middle" class="tk">0</text>
<text x="758.0" y="495" text-anchor="middle" class="tk">0.5</text>
<text x="810.3" y="495" text-anchor="middle" class="tk">1</text>
<text x="862.7" y="495" text-anchor="middle" class="tk">1.5</text>
<text x="521.5" y="461.8" text-anchor="end" class="tk">-1.5</text>
<text x="521.5" y="409.4" text-anchor="end" class="tk">-1</text>
<text x="521.5" y="357.0" text-anchor="end" class="tk">-0.5</text>
<text x="521.5" y="303.9" text-anchor="end" class="tk">0</text>
<text x="521.5" y="251.5" text-anchor="end" class="tk">0.5</text>
<text x="521.5" y="199.1" text-anchor="end" class="tk">1</text>
<text x="521.5" y="146.7" text-anchor="end" class="tk">1.5</text>
<text x="705.5" y="113" text-anchor="middle" class="ttl">Synchronized data</text>
<text x="705.5" y="514.5" text-anchor="middle" class="lab">In-phase Amplitude</text>
<text transform="translate(489.7 298.8) rotate(-90)" text-anchor="middle" class="lab">Quadrature Amplitude</text>
<g id="ic"><defs>
<linearGradient id="gGear" x1="0" y1="0" x2="1" y2="1"><stop offset="0" stop-color="#ececec"/><stop offset="1" stop-color="#9c9c9c"/></linearGradient>
<linearGradient id="gPan" x1="0" y1="0" x2="1" y2="1"><stop offset="0" stop-color="#ffffff"/><stop offset="0.6" stop-color="#f2f2f2"/><stop offset="1" stop-color="#b4b4b4"/></linearGradient>
<linearGradient id="gPrB" x1="0" y1="0" x2="0" y2="1"><stop offset="0" stop-color="#f6f6f6"/><stop offset="0.3" stop-color="#e0e0e0"/><stop offset="0.35" stop-color="#8e8e8e"/><stop offset="0.7" stop-color="#b8b8b8"/><stop offset="0.75" stop-color="#e8e8e8"/><stop offset="1" stop-color="#d8d8d8"/></linearGradient>
<linearGradient id="gPrP" x1="0" y1="0" x2="0" y2="1"><stop offset="0" stop-color="#b9d3ee"/><stop offset="0.5" stop-color="#eef5fc"/><stop offset="1" stop-color="#c5daf0"/></linearGradient>
<linearGradient id="gBlue" x1="0" y1="0" x2="1" y2="0"><stop offset="0" stop-color="#5aa6e0"/><stop offset="1" stop-color="#2a5f9e"/></linearGradient>
<linearGradient id="gSheet" x1="0" y1="0" x2="1" y2="0"><stop offset="0" stop-color="#fbfbfb"/><stop offset="0.75" stop-color="#f4f4f4"/><stop offset="0.8" stop-color="#c8c8c8"/><stop offset="1" stop-color="#e6e6e6"/></linearGradient>
</defs>
<rect x="11.5" y="9.5" width="15" height="15" rx="1.2" fill="#f8f8f8" stroke="#b0b7c0"/>
<rect x="11.6" y="9.3" width="14.8" height="2" rx="0.8" fill="#6f9fd6"/>
<path d="M12.8 18.4L19.2 14.2L20 16.6L17.5 21.4Z" fill="url(#gBlue)"/>
<path d="M17.4 21.4L19.2 15L20.7 12.7L20.6 18L18.6 22.8Z" fill="#8a2a1c"/>
<path d="M20.7 12.7C21.9 14.3 22.9 18 24.6 21C23.5 20.1 22.6 19.7 21.5 20.5C20.4 21.5 19.7 22.5 18.6 22.8C19.5 20.2 20.2 16 20.7 12.7Z" fill="#e8621d"/>
<path d="M20.7 13L21.5 15.6L20.9 17.6L20.3 15.5Z" fill="#f9c02a"/>
<path d="M13.49 65.44L13.69 64.37L16.21 64.37L16.41 65.44L17.81 66.02L18.72 65.41L20.49 67.18L19.88 68.09L20.46 69.49L21.53 69.69L21.53 72.21L20.46 72.41L19.88 73.81L20.49 74.72L18.72 76.49L17.81 75.88L16.41 76.46L16.21 77.53L13.69 77.53L13.49 76.46L12.09 75.88L11.18 76.49L9.41 74.72L10.02 73.81L9.44 72.41L8.37 72.21L8.37 69.69L9.44 69.49L10.02 68.09L9.41 67.18L11.18 65.41L12.09 66.02Z" fill="url(#gGear)" stroke="#333" stroke-width="1.2" stroke-linejoin="round"/>
<circle cx="14.95" cy="70.95" r="2.8" fill="#fafafa" stroke="#2a2a2a" stroke-width="1.5"/>
<path d="M30 69.9h5.2l-2.6 3.1z" fill="#1a1a1a"/>
<path d="M103.9 69.9h5.2l-2.6 3.1z" fill="#1a1a1a"/>
<path d="M147 69.9h5.2l-2.6 3.1z" fill="#1a1a1a"/>
<rect x="41" y="62" width="1" height="21" fill="#949494"/><rect x="42" y="62" width="1" height="21" fill="#f8f8f8"/>
<rect x="72" y="62" width="1" height="21" fill="#949494"/><rect x="73" y="62" width="1" height="21" fill="#f8f8f8"/>
<rect x="115" y="62" width="1" height="21" fill="#949494"/><rect x="116" y="62" width="1" height="21" fill="#f8f8f8"/>
<rect x="158" y="62" width="1" height="21" fill="#949494"/><rect x="159" y="62" width="1" height="21" fill="#f8f8f8"/>
<rect x="189" y="62" width="1" height="21" fill="#949494"/><rect x="190" y="62" width="1" height="21" fill="#f8f8f8"/>
<rect x="52.5" y="64.5" width="9" height="4.5" fill="#fdfdfd" stroke="#5d6b7a"/>
<rect x="49.5" y="68.5" width="15.2" height="7.4" rx="1.4" fill="url(#gPrB)" stroke="#48525e"/>
<rect x="51" y="70.9" width="1.3" height="1.3" fill="#222"/>
<path d="M51.5 73.6h11.2l1.3 5h-13.8z" fill="url(#gPrP)" stroke="#5577a0" stroke-width="0.8"/>
<path d="M50.6 73.4h13" stroke="#3b5878" stroke-width="1"/>
<path d="M50.2 78.6h13.8" stroke="#3f6492" stroke-width="1"/>
<path d="M91.2 73.3L95 76.6" stroke="#2b2b2b" stroke-width="2.6" stroke-linecap="round"/>
<circle cx="87.35" cy="69.45" r="5.1" fill="#fcfcfc" stroke="#505050" stroke-width="1"/>
<path d="M84.9 69.45h5M87.4 67v4.9" stroke="#111" stroke-width="1.1"/>
<rect x="124.5" y="63.5" width="15.2" height="15" fill="url(#gPan)" stroke="#2e2e2e" stroke-width="1.3"/>
<g transform="rotate(0 132.1 71)"><path d="M132.1 65.8v3" stroke="#8a8a8a" stroke-width="1.7"/><path d="M129.5 66.8l2.6 -2.5l2.6 2.5" fill="none" stroke="#2c2c2c" stroke-width="1.7" stroke-linejoin="miter"/></g>
<g transform="rotate(90 132.1 71)"><path d="M132.1 65.8v3" stroke="#8a8a8a" stroke-width="1.7"/><path d="M129.5 66.8l2.6 -2.5l2.6 2.5" fill="none" stroke="#2c2c2c" stroke-width="1.7" stroke-linejoin="miter"/></g>
<g transform="rotate(180 132.1 71)"><path d="M132.1 65.8v3" stroke="#8a8a8a" stroke-width="1.7"/><path d="M129.5 66.8l2.6 -2.5l2.6 2.5" fill="none" stroke="#2c2c2c" stroke-width="1.7" stroke-linejoin="miter"/></g>
<g transform="rotate(270 132.1 71)"><path d="M132.1 65.8v3" stroke="#8a8a8a" stroke-width="1.7"/><path d="M129.5 66.8l2.6 -2.5l2.6 2.5" fill="none" stroke="#2c2c2c" stroke-width="1.7" stroke-linejoin="miter"/></g>
<rect x="168.5" y="64.4" width="11.4" height="12.9" fill="#e9e9f6" stroke="#a4a4cc" stroke-width="0.8"/>
<path d="M167.3 65.6C165.6 68.5 165.6 73.1 167.3 76M180.9 65.6C182.6 68.5 182.6 73.1 180.9 76" fill="none" stroke="#111" stroke-width="1.1" stroke-dasharray="2.4 1"/>
<path d="M166.4 63.5h2.6M179.3 63.5h2.6M166.4 78.3h2.6M179.3 78.3h2.6" fill="none" stroke="#111" stroke-width="1.3"/>
<path d="M166.6 63.4L181.6 78.3M181.6 63.4L166.6 78.3" stroke="#111" stroke-width="1.15" fill="none"/>
<circle cx="174.1" cy="70.85" r="4.5" fill="#fdfdfd" stroke="#111" stroke-width="1.1"/>
<rect x="197.5" y="64" width="15" height="14.3" fill="#fbfbfb"/>
<rect x="209.2" y="64" width="2.6" height="14" fill="#d9d9d9"/>
<path d="M197.5 64v14.3h15v-14.3" fill="none" stroke="#5c5c5c" stroke-width="1.1"/>
<path d="M201.9 66.5L200.2 76.3L208.8 71.9" fill="none" stroke="#34669f" stroke-width="1.1"/>
<path d="M203 66.6L209 71.6" fill="none" stroke="#f2b21a" stroke-width="1.8"/>
<path d="M200.9 64.9l4.4 0.6l-3.2 3.6z" fill="#f3b414" stroke="#c98a10" stroke-width="0.4"/>
</g>
<use href="#ic" x="464" y="0"/>
<g id="wc">
<path d="M344 17.5h10" stroke="#111" stroke-width="1"/>
<rect x="389.5" y="12.5" width="9" height="9" fill="none" stroke="#111" stroke-width="1"/>
<path d="M435 12.5l10 10M445 12.5l-10 10" stroke="#111" stroke-width="1.05"/>
<path d="M451.5 43.5l5 3.6" stroke="#111" stroke-width="1.3"/><path d="M458 48l-5.2 -0.3l4.6 -4.2z" fill="#111"/></g>
<use href="#wc" x="465" y="0"/>
</svg>
</body></html>
